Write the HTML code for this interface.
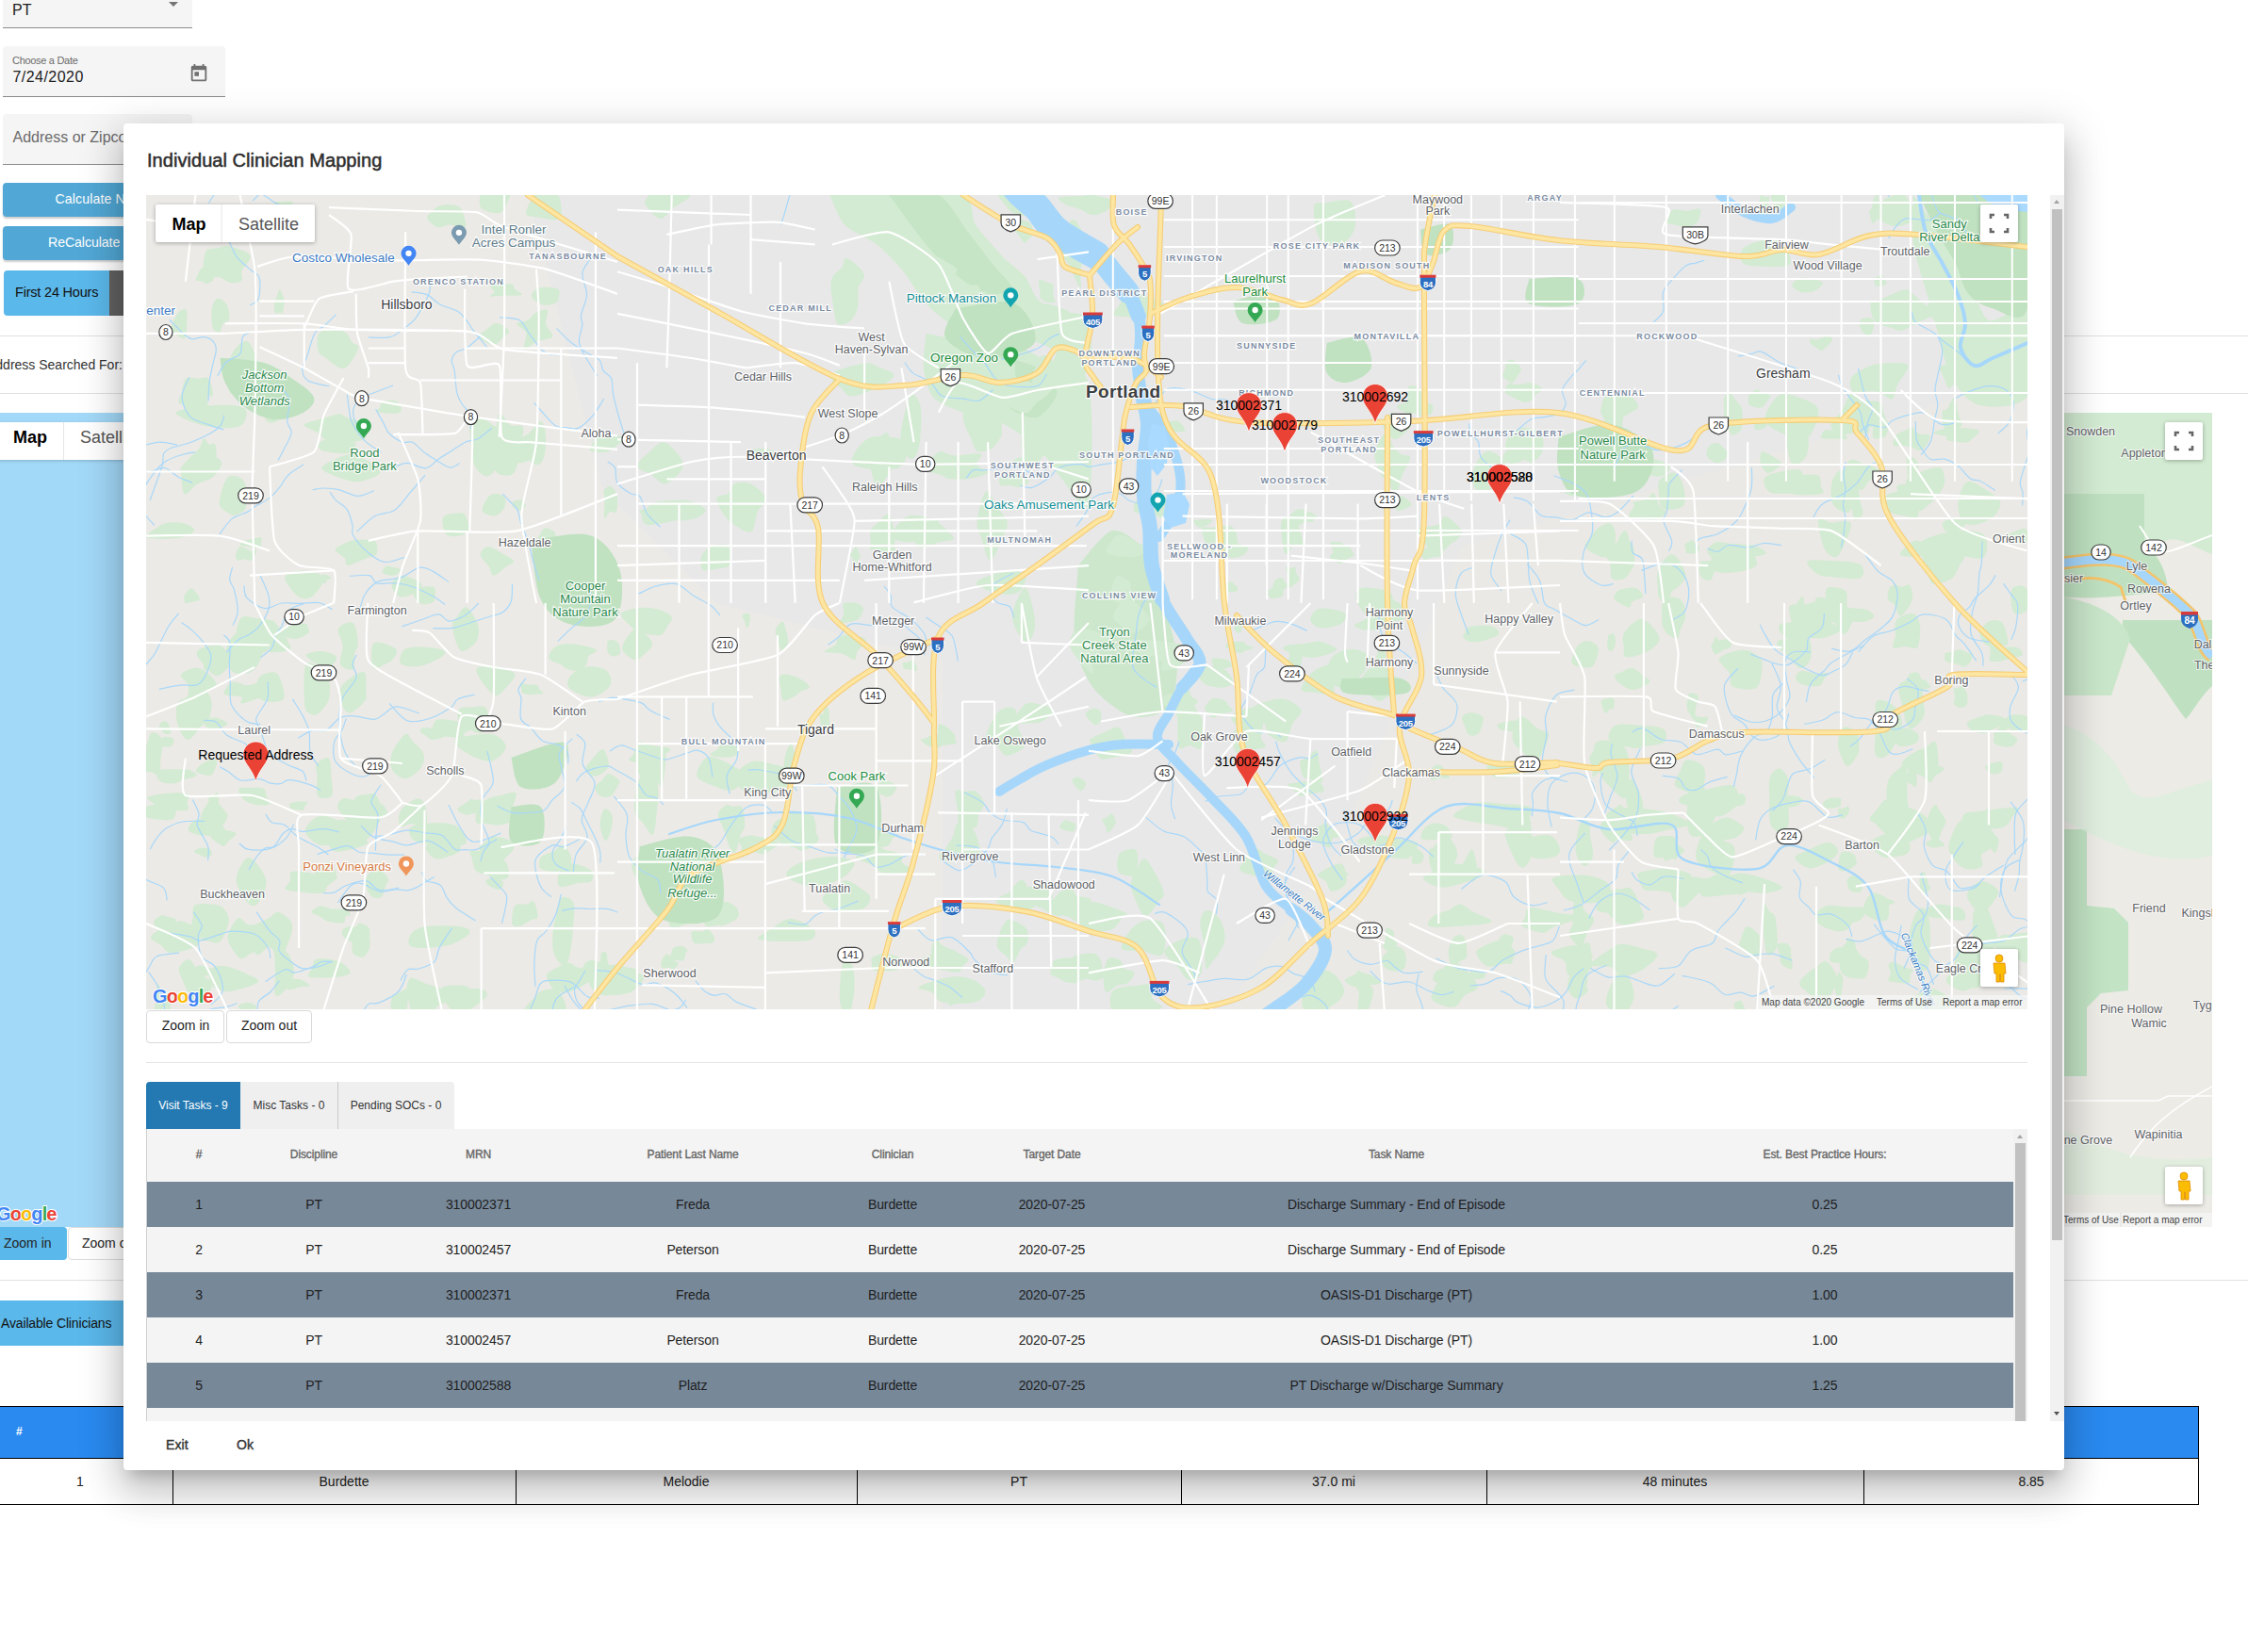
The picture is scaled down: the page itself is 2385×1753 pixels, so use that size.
<!DOCTYPE html><html><head><meta charset="utf-8"><style>
*{box-sizing:border-box}
html,body{margin:0;padding:0}
body{width:2385px;height:1753px;overflow:hidden;background:#fff;font-family:"Liberation Sans",sans-serif;position:relative;color:#212121}
.a{position:absolute}
.fld{position:absolute;background:#f5f5f5;border-radius:4px 4px 0 0;border-bottom:1px solid #8b8b8b}
.t{position:absolute;white-space:nowrap;line-height:1}
.c{position:absolute;white-space:nowrap;text-align:center;width:400px;line-height:1}
.hr{position:absolute;height:1px;background:#e0e0e0}
</style></head><body><div class="fld" style="left:3px;top:-25px;width:201px;height:55px"></div><div class="t" style="left:13px;top:2.5px;font-size:16px;color:#212121;font-weight:400;">PT</div><div class="a" style="left:179px;top:2px;width:0;height:0;border-left:5px solid transparent;border-right:5px solid transparent;border-top:5px solid #757575"></div><div class="fld" style="left:3px;top:49px;width:236px;height:54px"></div><div class="t" style="left:13px;top:59.0px;font-size:11px;color:#6b6b6b;font-weight:400;letter-spacing:-0.3px">Choose a Date</div><div class="t" style="left:13.5px;top:73.5px;font-size:16px;color:#212121;font-weight:400;letter-spacing:0.45px">7/24/2020</div><svg class="a" style="left:200px;top:67px" width="22" height="22" viewBox="0 0 24 24"><path fill="#6f6f6f" d="M19 3h-1V1h-2v2H8V1H6v2H5c-1.11 0-1.99.9-1.99 2L3 19a2 2 0 0 0 2 2h14c1.1 0 2-.9 2-2V5c0-1.1-.9-2-2-2zm0 16H5V8h14v11zM7 10h5v5H7z"/></svg><div class="fld" style="left:3px;top:121px;width:201px;height:54px"></div><div class="t" style="left:13.5px;top:137.5px;font-size:16px;color:#6b6b6b;font-weight:400;">Address or Zipcode</div><div class="a" style="left:3px;top:194px;width:260px;height:36px;background:#51a7d5;border-radius:4px;box-shadow:0 2px 2px rgba(0,0,0,.2)"></div><div class="t" style="left:58.5px;top:204.1px;font-size:14.2px;color:#fff;font-weight:400;letter-spacing:0.1px">Calculate Nearest</div><div class="a" style="left:3px;top:240px;width:260px;height:36px;background:#51a7d5;border-radius:4px;box-shadow:0 2px 2px rgba(0,0,0,.2)"></div><div class="t" style="left:51px;top:250.1px;font-size:14.2px;color:#fff;font-weight:400;letter-spacing:-0.1px">ReCalculate for</div><div class="a" style="left:4px;top:287px;width:112px;height:48px;background:#5bb8ea;border-radius:4px 0 0 4px"></div><div class="a" style="left:116px;top:287px;width:120px;height:48px;background:#616161"></div><div class="t" style="left:16px;top:302.9px;font-size:14.5px;color:#111;font-weight:400;letter-spacing:-0.2px">First 24 Hours</div><div class="hr" style="left:0;top:356px;width:2385px"></div><div class="t" style="left:-14px;top:380.3px;font-size:14px;color:#333;font-weight:400;">Address Searched For:</div><div class="hr" style="left:0;top:417px;width:2385px"></div><div class="a" style="left:0;top:438px;width:2347px;height:864px;background:#a3d9f8;overflow:hidden"><svg width="2347" height="864" style="position:absolute;left:0;top:0" font-family="Liberation Sans, sans-serif"><rect x="2185" y="0" width="162" height="864" fill="#ecebe6"/><path d="M2185,0 H2347 V150 C2320,140 2300,120 2285,150 C2270,175 2240,150 2185,160 Z" fill="#d3ebd2"/><path d="M2185,86 H2275 V140 C2290,150 2300,170 2300,191 C2270,190 2240,200 2185,195 Z" fill="#bfe1c1"/><path d="M2252,220 H2347 V290 C2335,300 2325,320 2319,325 C2300,300 2290,280 2252,235 Z" fill="#bfe1c1"/><path d="M2185,195 C2220,200 2252,215 2260,240 L2240,300 L2185,300 Z" fill="#c9e6ca"/><path d="M2185,442 H2214 V523 L2243,526 L2258,541 V613 L2229,616 L2214,631 V704 H2185 Z" fill="#c2e3c4"/><path d="M2185,330 C2220,340 2240,360 2260,400 C2280,420 2300,400 2347,390 V470 C2300,480 2260,470 2185,430 Z" fill="#dcefdb" fill-opacity=".7"/><path d="M2185,760 C2220,770 2250,800 2347,790 V830 H2185 Z" fill="#dcefdb" fill-opacity=".6"/><path d="M2185,160 C2220,155 2250,152 2265,165 C2285,180 2305,195 2325,215 C2335,230 2335,250 2347,258" fill="none" stroke="#f4c46c" stroke-width="14"/><path d="M2185,160 C2220,155 2250,152 2265,165 C2285,180 2305,195 2325,215 C2335,230 2335,250 2347,258" fill="none" stroke="#a6d7fb" stroke-width="9"/><path d="M2185,178 C2210,175 2230,172 2250,185 L2255,200" fill="none" stroke="#f4c46c" stroke-width="3"/><path d="M2270,120 C2280,135 2285,145 2290,148 C2300,150 2320,140 2347,130" fill="none" stroke="#fff" stroke-width="2"/><path d="M2190,730 H2290 L2300,725 H2347" fill="none" stroke="#fff" stroke-width="1.5"/><path d="M2260,790 C2280,760 2300,740 2347,715" fill="none" stroke="#fff" stroke-width="1.5"/><text x="2218" y="23.5" font-size="12.5" fill="#5f6368" text-anchor="middle" stroke="#fff" stroke-width="2" paint-order="stroke" stroke-opacity=".7">Snowden</text><text x="2275" y="46.5" font-size="12.5" fill="#5f6368" text-anchor="middle" stroke="#fff" stroke-width="2" paint-order="stroke" stroke-opacity=".7">Appleton</text><text x="2267" y="166.5" font-size="12.5" fill="#5f6368" text-anchor="middle" stroke="#fff" stroke-width="2" paint-order="stroke" stroke-opacity=".7">Lyle</text><text x="2280" y="190.5" font-size="12.5" fill="#5f6368" text-anchor="middle" stroke="#fff" stroke-width="2" paint-order="stroke" stroke-opacity=".7">Rowena</text><text x="2266" y="208.5" font-size="12.5" fill="#5f6368" text-anchor="middle" stroke="#fff" stroke-width="2" paint-order="stroke" stroke-opacity=".7">Ortley</text><text x="2345" y="249.5" font-size="12.5" fill="#5f6368" text-anchor="middle" stroke="#fff" stroke-width="2" paint-order="stroke" stroke-opacity=".7">Dalles</text><text x="2345" y="271.5" font-size="12.5" fill="#5f6368" text-anchor="middle" stroke="#fff" stroke-width="2" paint-order="stroke" stroke-opacity=".7">The D</text><text x="2280" y="529.5" font-size="12.5" fill="#5f6368" text-anchor="middle" stroke="#fff" stroke-width="2" paint-order="stroke" stroke-opacity=".7">Friend</text><text x="2335" y="534.5" font-size="12.5" fill="#5f6368" text-anchor="middle" stroke="#fff" stroke-width="2" paint-order="stroke" stroke-opacity=".7">Kingsle</text><text x="2261" y="636.5" font-size="12.5" fill="#5f6368" text-anchor="middle" stroke="#fff" stroke-width="2" paint-order="stroke" stroke-opacity=".7">Pine Hollow</text><text x="2280" y="651.5" font-size="12.5" fill="#5f6368" text-anchor="middle" stroke="#fff" stroke-width="2" paint-order="stroke" stroke-opacity=".7">Wamic</text><text x="2340" y="632.5" font-size="12.5" fill="#5f6368" text-anchor="middle" stroke="#fff" stroke-width="2" paint-order="stroke" stroke-opacity=".7">Tygh</text><text x="2290" y="769.5" font-size="12.5" fill="#5f6368" text-anchor="middle" stroke="#fff" stroke-width="2" paint-order="stroke" stroke-opacity=".7">Wapinitia</text><text x="2214" y="775.5" font-size="12.5" fill="#5f6368" text-anchor="middle" stroke="#fff" stroke-width="2" paint-order="stroke" stroke-opacity=".7">ine Grove</text><text x="2200" y="179.5" font-size="12.5" fill="#5f6368" text-anchor="middle" stroke="#fff" stroke-width="2" paint-order="stroke" stroke-opacity=".7">sier</text><rect x="2218.8" y="140" width="20.4" height="16" rx="8" fill="#fff" stroke="#3c3c3c" stroke-width="1.2"/><text x="2229" y="151.8" font-size="10.5" fill="#333" text-anchor="middle">14</text><rect x="2271.7" y="135" width="26.6" height="16" rx="8" fill="#fff" stroke="#3c3c3c" stroke-width="1.2"/><text x="2285" y="146.8" font-size="10.5" fill="#333" text-anchor="middle">142</text><path d="M2314,211 h18 v8 q0,7 -9,10 q-9,-3 -9,-10 z" fill="#2c6fc0"/><rect x="2314" y="211" width="18" height="3.5" fill="#d93b3b"/><text x="2323" y="224" font-size="10" font-weight="700" fill="#fff" text-anchor="middle">84</text><rect x="2297" y="10" width="40" height="40" rx="2" fill="#fff" style="filter:drop-shadow(0 1px 2px rgba(0,0,0,.3))"/><path d="M2308,25 v-4 h4 M2322,21 h4 v4 M2326,35 v4 h-4 M2312,39 h-4 v-4" fill="none" stroke="#666" stroke-width="2.6"/><rect x="2297" y="800" width="40" height="40" rx="2" fill="#fff" style="filter:drop-shadow(0 1px 2px rgba(0,0,0,.3))"/><circle cx="2317" cy="810" r="4" fill="#fbbc04" stroke="#e08a00" stroke-width=".8"/><path d="M2311,815 h12 l1,11 h-2 v9 h-3.5 v-8 h-1 v8 h-3.5 v-9 h-2 z" fill="#fbbc04" stroke="#e08a00" stroke-width=".8"/><rect x="2185" y="849" width="162" height="15" fill="#f5f5f5" fill-opacity="0.75"/><text x="2189" y="860" font-size="10" fill="#444">Terms of Use</text><text x="2252" y="860" font-size="10" fill="#444">Report a map error</text><line x1="2250" y1="849" x2="2250" y2="864" stroke="#ddd"/><text x="-4" y="857" font-size="20" font-weight="700" stroke="#fff" stroke-width="2" paint-order="stroke" letter-spacing="-0.9"><tspan fill="#4285f4">G</tspan><tspan fill="#ea4335">o</tspan><tspan fill="#fbbc05">o</tspan><tspan fill="#4285f4">g</tspan><tspan fill="#34a853">l</tspan><tspan fill="#ea4335">e</tspan></text></svg></div><div class="a" style="left:-40px;top:448px;width:200px;height:40px;background:#fff;box-shadow:0 1px 4px -1px rgba(0,0,0,.3)"></div><div class="a" style="left:67px;top:448px;width:1px;height:40px;background:#e6e6e6"></div><div class="t" style="left:14px;top:454.7px;font-size:18px;color:#000;font-weight:700;">Map</div><div class="t" style="left:85px;top:454.7px;font-size:18px;color:#565656;font-weight:400;">Satellite</div><div class="a" style="left:0;top:1302px;width:71px;height:35px;background:#5bb8ea;border-radius:0 4px 4px 0"></div><div class="t" style="left:4px;top:1312.3px;font-size:14px;color:#222;font-weight:400;">Zoom in</div><div class="a" style="left:72px;top:1302px;width:120px;height:35px;background:#fff;border:1px solid #ddd;border-radius:4px"></div><div class="t" style="left:87px;top:1312.3px;font-size:14px;color:#222;font-weight:400;">Zoom out</div><div class="hr" style="left:0;top:1358px;width:2385px"></div><div class="a" style="left:0;top:1380px;width:300px;height:48px;background:#5bb8ea"></div><div class="t" style="left:1px;top:1397.3px;font-size:14px;color:#111;font-weight:400;letter-spacing:-0.15px">Available Clinicians</div><div class="a" style="left:-1px;top:1492px;width:2334px;height:105px;border:1px solid #000"></div><div class="a" style="left:0;top:1493px;width:2332px;height:55px;background:#2a8af0;border-bottom:1px solid #000"></div><div class="t" style="left:17px;top:1513.1px;font-size:12px;color:#fff;font-weight:700;">#</div><div class="a" style="left:183px;top:1548px;width:1px;height:48px;background:#000"></div><div class="a" style="left:547px;top:1548px;width:1px;height:48px;background:#000"></div><div class="a" style="left:909px;top:1548px;width:1px;height:48px;background:#000"></div><div class="a" style="left:1253px;top:1548px;width:1px;height:48px;background:#000"></div><div class="a" style="left:1577px;top:1548px;width:1px;height:48px;background:#000"></div><div class="a" style="left:1977px;top:1548px;width:1px;height:48px;background:#000"></div><div class="c" style="left:-115.0px;top:1565.4px;font-size:14px;color:#222;font-weight:400;">1</div><div class="c" style="left:165.0px;top:1565.4px;font-size:14px;color:#222;font-weight:400;">Burdette</div><div class="c" style="left:528.0px;top:1565.4px;font-size:14px;color:#222;font-weight:400;">Melodie</div><div class="c" style="left:881.0px;top:1565.4px;font-size:14px;color:#222;font-weight:400;">PT</div><div class="c" style="left:1215.0px;top:1565.4px;font-size:14px;color:#222;font-weight:400;">37.0 mi</div><div class="c" style="left:1577.0px;top:1565.4px;font-size:14px;color:#222;font-weight:400;">48 minutes</div><div class="c" style="left:1955.0px;top:1565.4px;font-size:14px;color:#222;font-weight:400;">8.85</div><div class="a" style="left:131px;top:131px;width:2059px;height:1429px;background:#fff;border-radius:4px;box-shadow:0 11px 15px -7px rgba(0,0,0,.2),0 24px 38px 3px rgba(0,0,0,.14),0 9px 46px 8px rgba(0,0,0,.12)"></div><div class="t" style="left:156px;top:159.9px;font-size:20px;color:#2e2e2e;font-weight:400;letter-spacing:0.05px;-webkit-text-stroke:0.5px #2e2e2e">Individual Clinician Mapping</div><div class="a" style="left:155px;top:207px;width:1996px;height:864px;overflow:hidden;background:#e8e8e8"><svg width="1996" height="864" style="position:absolute;left:0;top:0" font-family="Liberation Sans, sans-serif"><g transform="translate(-155,-207)"><rect x="155" y="207" width="1996" height="864" fill="#e8e8e8"/><path d="M155,207 L560,207 L640,520 L760,640 L1000,700 L1000,1072 L155,1072 Z" fill="#ebeae6"/><path d="M1551,580 L2151,400 L2151,1072 L1300,1072 L1420,900 Z" fill="#eae9e5"/><path d="M880.4,207.0 C898.5,207.0 996.0,202.8 1016.6,207.0 C1037.3,211.2 1028.7,229.7 1035.0,238.4 C1041.3,247.2 1056.8,265.2 1063.8,272.5 C1070.8,279.9 1082.5,287.5 1087.4,293.5 C1092.3,299.4 1096.0,312.2 1100.5,317.1 C1105.0,322.0 1114.2,327.4 1121.5,330.2 C1128.7,333.0 1150.5,330.0 1155.0,338.0 C1159.5,346.1 1158.8,385.5 1155.0,390.4 C1151.2,395.3 1135.7,378.9 1126.7,374.7 C1117.7,370.5 1097.9,361.8 1087.4,359.0 C1076.9,356.2 1058.6,355.8 1048.1,353.8 C1037.6,351.7 1017.5,347.5 1008.8,343.3 C1000.0,339.1 989.6,330.0 982.6,322.3 C975.6,314.6 963.4,294.0 956.4,285.6 C949.4,277.2 938.2,265.7 930.2,259.4 C922.1,253.1 902.7,245.4 896.1,238.4 C889.5,231.5 882.5,211.2 880.4,207.0" fill="#d3ebd2"/><path d="M982.6,353.8 C989.6,355.1 1022.7,362.8 1035.0,364.2 C1047.2,365.6 1063.8,361.4 1074.3,364.2 C1084.8,367.0 1102.8,379.6 1113.6,385.2 C1124.4,390.8 1149.5,386.2 1155.0,406.2 C1160.5,426.1 1158.8,520.9 1155.0,534.6 C1151.2,548.2 1134.0,516.4 1126.7,508.4 C1119.4,500.3 1109.2,482.3 1100.5,474.3 C1091.8,466.3 1071.7,453.0 1061.2,448.1 C1050.7,443.2 1031.3,441.1 1021.9,437.6 C1012.4,434.1 996.0,428.2 990.4,421.9 C984.8,415.6 981.0,399.5 979.9,390.4 C978.9,381.4 982.2,358.6 982.6,353.8" fill="#d3ebd2"/><path d="M1144.0,600.0 C1148.8,595.1 1170.5,565.0 1180.0,563.0 C1189.5,561.0 1207.7,574.7 1215.0,585.0 C1222.3,595.3 1230.5,624.7 1235.0,640.0 C1239.5,655.3 1248.3,685.2 1249.0,700.0 C1249.7,714.8 1246.5,743.0 1240.0,751.0 C1233.5,759.0 1210.7,762.8 1200.0,760.0 C1189.3,757.2 1168.0,740.7 1160.0,730.0 C1152.0,719.3 1142.1,697.3 1140.0,680.0 C1137.9,662.7 1143.5,610.7 1144.0,600.0" fill="#cde7cd"/><path d="M2030.0,207.0 C2034.0,212.7 2052.0,237.6 2060.0,250.0 C2068.0,262.4 2083.3,288.0 2090.0,300.0 C2096.7,312.0 2101.9,336.0 2110.0,340.0 C2118.1,344.0 2145.5,319.3 2151.0,330.0 C2156.5,340.7 2157.8,406.7 2151.0,420.0 C2144.2,433.3 2110.8,432.7 2100.0,430.0 C2089.2,427.3 2076.7,413.3 2070.0,400.0 C2063.3,386.7 2055.3,348.7 2050.0,330.0 C2044.7,311.3 2032.7,276.4 2030.0,260.0 C2027.3,243.6 2030.0,214.1 2030.0,207.0" fill="#d3ebd2"/><path d="M943.3,207.0 C950.2,207.0 984.5,201.8 995.7,207.0 C1006.9,212.2 1019.4,236.5 1027.1,246.3 C1034.8,256.1 1047.0,272.3 1053.3,280.4 C1059.6,288.4 1075.0,302.4 1074.3,306.6 C1073.6,310.8 1055.8,313.6 1048.1,311.8 C1040.4,310.1 1025.4,300.5 1016.6,293.5 C1007.9,286.5 992.4,270.9 982.6,259.4 C972.8,247.9 948.5,214.0 943.3,207.0" fill="#c6e5c6"/><path d="M1061.2,377.3 C1066.4,379.1 1092.5,385.2 1100.5,390.4 C1108.5,395.7 1121.5,409.7 1121.5,416.6 C1121.5,423.6 1107.5,441.1 1100.5,442.8 C1093.5,444.6 1074.3,438.5 1069.0,429.7 C1063.8,421.0 1062.2,384.3 1061.2,377.3" fill="#c6e5c6"/><g fill="#d3ebd2"><path d="M197.6,328.5C199.2,330.6 198.3,340.1 198.1,345.1C197.9,350.1 197.9,356.3 196.6,358.3C195.3,360.4 192.7,359.2 190.3,357.5C187.8,355.9 182.4,352.7 182.1,348.6C181.8,344.4 185.8,335.8 188.4,332.5C191.0,329.1 196.0,326.4 197.6,328.5Z"/><path d="M308.9,218.4C308.3,219.6 308.3,220.9 306.2,221.2C304.1,221.6 299.1,221.1 296.4,220.6C293.7,220.1 290.5,219.4 290.0,218.3C289.4,217.3 291.2,215.2 293.0,214.5C294.7,213.9 297.5,214.6 300.3,214.4C303.2,214.3 308.6,213.3 310.0,213.9C311.5,214.6 309.6,217.2 308.9,218.4Z"/><path d="M226.6,349.6C225.1,347.3 224.9,342.3 224.7,338.4C224.4,334.6 224.2,330.0 224.9,326.6C225.7,323.1 227.4,319.2 229.1,317.8C230.8,316.3 233.1,316.7 235.1,317.9C237.1,319.1 239.8,321.2 241.2,324.7C242.6,328.3 244.0,336.1 243.3,339.1C242.6,342.2 238.7,340.8 237.0,343.1C235.3,345.3 234.8,351.3 233.1,352.4C231.4,353.5 228.0,352.0 226.6,349.6Z"/><path d="M218.3,267.2C220.7,262.4 227.2,264.2 231.3,263.2C235.3,262.2 236.9,260.0 242.6,261.3C248.3,262.6 263.0,266.7 265.4,271.0C267.7,275.4 258.2,283.0 256.7,287.5C255.2,291.9 258.4,295.5 256.5,297.6C254.6,299.7 249.2,300.7 245.2,300.2C241.3,299.6 237.4,295.7 232.7,294.3C228.1,292.9 219.6,296.2 217.2,291.7C214.8,287.2 216.0,271.9 218.3,267.2Z"/><path d="M226.5,296.6C225.7,298.7 221.1,300.9 219.2,301.3C217.3,301.6 217.0,299.3 215.1,298.7C213.2,298.0 208.5,298.8 207.8,297.3C207.1,295.7 210.3,290.9 210.9,289.2C211.6,287.6 210.8,288.3 211.6,287.4C212.3,286.5 213.9,283.9 215.6,283.7C217.3,283.6 220.2,285.8 221.6,286.6C223.1,287.3 223.5,286.6 224.3,288.3C225.1,290.0 227.4,294.4 226.5,296.6Z"/><path d="M276.1,413.3C274.4,410.9 281.0,408.7 285.0,407.3C289.0,405.9 296.0,404.2 300.1,404.8C304.2,405.4 308.8,408.4 309.8,410.8C310.7,413.3 308.0,417.8 305.7,419.6C303.3,421.5 300.4,422.9 295.5,421.8C290.6,420.8 277.9,415.7 276.1,413.3Z"/><path d="M292.7,317.2C293.7,314.4 295.4,307.7 296.7,307.3C297.9,306.9 299.4,312.6 300.3,314.7C301.1,316.8 301.8,317.0 301.7,319.9C301.6,322.8 300.4,330.4 299.7,332.3C299.0,334.2 298.6,331.4 297.3,331.4C296.1,331.4 293.2,333.3 292.1,332.1C291.0,330.9 290.6,326.5 290.7,324.0C290.8,321.5 291.7,320.0 292.7,317.2Z"/><path d="M219.6,420.9C215.0,422.5 202.7,428.3 198.5,427.8C194.3,427.4 195.3,420.8 194.5,418.2C193.7,415.5 193.1,414.8 193.7,412.0C194.2,409.1 195.1,402.9 197.8,401.2C200.6,399.5 206.4,401.8 210.3,401.8C214.1,401.9 218.3,398.6 220.9,401.4C223.5,404.2 226.2,415.4 226.0,418.6C225.8,421.9 224.2,419.4 219.6,420.9Z"/><path d="M365.3,390.7C359.6,392.4 350.4,383.1 345.7,379.9C341.0,376.7 338.2,376.1 337.3,371.5C336.3,366.8 335.5,355.5 340.0,352.2C344.5,348.8 358.6,349.6 364.2,351.4C369.8,353.2 370.9,360.1 373.6,363.2C376.3,366.2 381.6,365.0 380.2,369.6C378.8,374.2 371.1,389.0 365.3,390.7Z"/><path d="M265.5,419.7C265.5,416.2 262.1,411.1 265.3,409.5C268.4,408.0 281.0,408.7 284.6,410.3C288.1,411.8 287.2,416.0 286.8,418.8C286.3,421.6 285.5,425.0 281.9,427.0C278.4,429.0 268.1,431.9 265.4,430.6C262.6,429.4 265.5,423.2 265.5,419.7Z"/><path d="M262.9,429.2C260.8,430.3 255.1,425.0 251.8,422.5C248.5,420.0 243.4,417.7 242.9,414.2C242.4,410.7 247.0,404.1 249.1,401.5C251.1,399.0 252.9,400.4 255.1,398.8C257.4,397.2 260.8,389.2 262.4,392.0C264.0,394.9 264.4,409.6 264.5,415.8C264.6,422.0 265.0,428.1 262.9,429.2Z"/><path d="M284.2,400.9C284.0,406.3 278.0,416.7 273.5,418.2C269.0,419.8 262.5,413.4 257.1,410.4C251.7,407.5 242.6,406.6 240.9,400.6C239.2,394.5 243.3,380.4 246.9,374.0C250.5,367.6 258.0,360.3 262.6,362.2C267.2,364.1 270.9,379.0 274.5,385.5C278.0,391.9 284.3,395.4 284.2,400.9Z"/><path d="M275.0,393.3C276.4,392.2 280.5,391.6 283.2,391.0C285.9,390.5 289.4,389.0 291.2,390.0C293.0,391.0 294.7,394.8 294.0,397.1C293.4,399.3 289.4,402.7 287.2,403.2C284.9,403.8 282.5,401.2 280.5,400.2C278.5,399.3 276.0,398.6 275.1,397.4C274.2,396.3 273.6,394.4 275.0,393.3Z"/><path d="M579.2,343.9C580.1,348.6 587.6,354.3 586.1,357.3C584.6,360.4 575.3,360.0 570.3,362.2C565.3,364.3 558.0,371.6 556.0,370.1C554.0,368.6 559.6,357.6 558.3,353.1C557.0,348.7 547.8,345.7 548.2,343.4C548.5,341.2 557.1,341.5 560.5,339.5C563.9,337.6 565.1,333.4 568.5,331.7C571.9,330.0 579.0,327.2 580.8,329.2C582.6,331.3 578.4,339.3 579.2,343.9Z"/><path d="M592.7,232.6C588.4,235.0 574.8,231.3 569.0,230.3C563.3,229.3 558.9,229.7 558.1,226.4C557.4,223.2 562.2,214.6 564.6,210.8C567.0,207.1 568.3,204.6 572.5,203.8C576.6,202.9 585.9,203.5 589.7,205.5C593.4,207.5 594.5,211.4 595.0,215.9C595.5,220.4 597.0,230.2 592.7,232.6Z"/><path d="M464.9,223.4C465.3,222.2 465.4,219.4 466.8,219.2C468.2,219.0 471.5,221.6 473.4,222.4C475.3,223.2 477.4,223.1 478.2,224.1C479.0,225.1 478.8,226.9 478.2,228.2C477.6,229.4 475.4,230.8 474.3,231.6C473.2,232.5 472.8,232.9 471.6,233.2C470.4,233.4 468.2,234.1 467.1,233.0C466.0,231.9 465.2,228.3 464.8,226.7C464.5,225.1 464.6,224.7 464.9,223.4Z"/><path d="M591.4,306.3C594.9,308.1 593.3,314.1 592.8,316.7C592.3,319.3 591.3,320.7 588.5,321.9C585.6,323.0 579.9,324.6 575.8,323.5C571.8,322.3 564.6,317.7 564.0,314.7C563.4,311.8 567.4,306.9 572.0,305.5C576.5,304.1 588.0,304.4 591.4,306.3Z"/><path d="M527.5,190.0C532.6,189.7 541.8,191.4 543.8,195.0C545.9,198.6 541.8,206.6 539.5,211.8C537.2,217.0 535.2,224.8 530.2,226.1C525.2,227.3 512.5,224.3 509.7,219.5C506.9,214.6 510.4,201.9 513.3,197.0C516.3,192.1 522.4,190.4 527.5,190.0Z"/><path d="M514.8,351.0C518.0,348.6 522.2,342.9 526.4,342.9C530.5,342.8 538.4,348.0 539.7,350.5C541.0,353.0 536.7,355.3 534.0,357.9C531.2,360.5 527.5,366.1 523.1,366.0C518.7,365.8 509.0,359.6 507.6,357.1C506.2,354.6 511.7,353.3 514.8,351.0Z"/><path d="M536.1,301.5C539.6,301.5 542.1,301.0 543.8,301.8C545.4,302.6 544.3,304.7 545.9,306.6C547.5,308.4 555.3,311.8 553.4,312.9C551.4,314.1 539.6,313.4 534.0,313.7C528.5,313.9 521.5,315.1 519.9,314.5C518.3,313.9 524.1,311.7 524.3,310.2C524.5,308.6 521.2,306.6 520.9,305.1C520.6,303.7 520.1,302.1 522.6,301.5C525.1,300.9 532.6,301.5 536.1,301.5Z"/><path d="M476.9,238.5C472.1,238.5 468.6,242.4 464.8,241.4C461.0,240.4 455.4,235.1 453.9,232.7C452.3,230.2 453.0,229.2 455.5,226.7C457.9,224.2 463.2,219.0 468.4,217.7C473.7,216.5 482.9,217.0 486.9,219.3C491.0,221.6 491.7,228.1 492.7,231.8C493.8,235.4 495.9,240.1 493.2,241.3C490.6,242.4 481.6,238.4 476.9,238.5Z"/><path d="M190.3,570.7C181.9,571.9 159.3,572.4 155.3,570.6C151.3,568.8 162.7,562.6 166.4,560.0C170.1,557.3 172.6,555.3 177.6,554.7C182.6,554.0 191.9,554.4 196.6,555.9C201.4,557.3 207.1,560.7 206.1,563.1C205.0,565.6 198.8,569.4 190.3,570.7Z"/><path d="M365.7,592.3C363.6,589.7 356.5,586.3 355.9,583.9C355.4,581.6 359.3,580.0 362.4,578.3C365.4,576.5 369.3,574.0 374.3,573.2C379.3,572.3 388.2,572.6 392.4,573.1C396.6,573.7 398.2,574.1 399.4,576.6C400.5,579.1 401.4,585.4 399.3,588.1C397.3,590.9 392.1,591.2 386.9,593.2C381.8,595.1 372.2,600.0 368.6,599.9C365.1,599.7 367.9,595.0 365.7,592.3Z"/><path d="M272.2,584.0C272.6,585.3 269.5,591.2 268.2,593.0C267.0,594.8 266.3,594.6 264.6,594.7C262.9,594.7 260.2,593.3 258.1,593.3C256.0,593.3 253.5,595.5 252.2,594.7C250.9,593.9 249.7,590.8 250.2,588.4C250.6,586.0 252.7,581.2 254.7,580.2C256.7,579.3 260.6,582.1 262.4,582.8C264.1,583.5 263.8,584.5 265.4,584.7C267.0,584.9 271.7,582.6 272.2,584.0Z"/><path d="M306.7,429.7C306.7,430.9 303.7,432.4 302.8,434.1C302.0,435.7 303.2,439.2 301.8,439.5C300.3,439.9 295.9,437.5 294.2,436.2C292.4,434.9 292.4,433.2 291.0,431.5C289.6,429.8 285.2,427.2 285.7,426.2C286.3,425.2 291.6,425.5 294.4,425.7C297.2,425.8 300.7,426.4 302.7,427.0C304.8,427.7 306.7,428.5 306.7,429.7Z"/><path d="M285.0,415.2C288.8,414.5 294.6,415.1 297.8,415.8C301.1,416.5 303.8,416.0 304.4,419.2C305.0,422.4 302.0,431.8 301.4,435.0C300.8,438.3 302.5,436.5 300.8,438.7C299.1,440.8 294.5,446.8 291.4,447.9C288.3,449.1 284.5,448.8 282.3,445.7C280.1,442.6 279.4,433.5 278.2,429.2C277.0,424.9 274.1,422.2 275.3,419.9C276.4,417.6 281.2,415.8 285.0,415.2Z"/><path d="M361.9,481.1C356.3,481.0 344.9,479.7 341.1,477.8C337.3,475.9 337.6,471.8 339.1,469.8C340.6,467.9 345.4,466.2 350.2,466.0C354.9,465.9 363.3,468.5 367.7,469.2C372.2,469.8 375.7,468.3 376.8,469.9C378.0,471.5 377.1,476.8 374.6,478.7C372.1,480.5 367.4,481.3 361.9,481.1Z"/><path d="M268.8,571.8C271.5,571.2 275.7,569.4 277.1,570.2C278.4,571.0 277.0,575.2 277.0,576.9C277.0,578.6 278.3,579.6 277.1,580.4C275.9,581.2 272.0,581.8 269.6,581.8C267.2,581.7 265.4,580.6 262.9,580.0C260.4,579.3 255.0,579.0 254.7,577.9C254.3,576.8 258.5,574.6 260.9,573.5C263.2,572.5 266.1,572.4 268.8,571.8Z"/><path d="M211.9,479.5C216.9,480.6 232.1,484.8 234.5,489.2C237.0,493.5 230.8,501.6 226.5,505.7C222.2,509.8 214.0,510.8 208.9,513.9C203.7,517.0 198.5,526.1 195.7,524.3C192.9,522.5 192.7,507.4 192.1,502.8C191.4,498.3 189.7,500.3 191.8,496.9C193.9,493.5 201.2,485.5 204.5,482.6C207.9,479.7 206.9,478.4 211.9,479.5Z"/><path d="M369.4,509.7C362.5,507.7 345.6,501.9 342.2,498.7C338.8,495.5 344.1,493.2 349.2,490.4C354.2,487.6 365.2,481.9 372.5,481.9C379.8,481.9 388.5,488.1 393.0,490.4C397.6,492.6 398.5,493.4 400.0,495.5C401.5,497.6 404.9,500.7 402.1,503.2C399.4,505.7 389.1,509.6 383.6,510.7C378.1,511.7 376.3,511.7 369.4,509.7Z"/><path d="M369.7,469.7C362.6,470.1 350.9,468.3 345.7,466.7C340.6,465.1 342.5,462.6 338.6,460.0C334.7,457.4 322.4,453.5 322.6,451.1C322.7,448.6 333.2,447.1 339.4,445.1C345.7,443.2 355.5,439.8 360.0,439.3C364.5,438.9 362.4,441.0 366.5,442.5C370.5,444.1 380.5,445.2 384.1,448.8C387.7,452.4 390.7,460.6 388.3,464.1C385.9,467.6 376.8,469.2 369.7,469.7Z"/><path d="M195.0,443.9C189.2,441.1 183.3,438.5 188.8,436.2C194.2,433.9 215.8,430.5 227.6,430.0C239.4,429.6 255.0,429.7 259.5,433.3C264.1,437.0 260.8,448.7 254.8,452.0C248.8,455.2 233.5,454.3 223.5,453.0C213.5,451.7 200.8,446.7 195.0,443.9Z"/><path d="M220.7,495.0C218.8,495.4 215.7,489.4 213.4,487.4C211.0,485.5 206.8,485.5 206.7,483.3C206.5,481.2 210.6,477.3 212.3,474.3C213.9,471.4 214.8,466.0 216.4,465.6C218.0,465.2 220.0,470.9 222.0,471.9C223.9,472.8 226.7,469.0 227.9,471.1C229.2,473.2 230.1,482.1 229.6,484.5C229.0,486.9 226.1,483.7 224.6,485.4C223.2,487.2 222.6,494.7 220.7,495.0Z"/><path d="M209.7,631.1C211.1,633.2 212.6,635.2 211.4,636.5C210.1,637.8 204.8,638.5 202.3,639.1C199.9,639.6 197.8,640.7 196.7,639.9C195.5,639.1 195.2,636.0 195.3,634.1C195.5,632.3 196.5,630.5 197.8,628.8C199.1,627.2 201.3,623.9 203.3,624.3C205.3,624.6 208.4,629.1 209.7,631.1Z"/><path d="M196.0,431.3C194.0,428.8 189.2,429.1 189.4,425.8C189.7,422.6 193.6,415.0 197.4,411.9C201.3,408.7 208.9,406.9 212.4,407.1C215.9,407.4 216.9,409.5 218.3,413.3C219.6,417.2 220.2,425.0 220.5,430.1C220.8,435.2 223.3,442.0 220.1,443.9C216.9,445.7 205.3,443.2 201.3,441.1C197.3,439.0 198.0,433.9 196.0,431.3Z"/><path d="M332.5,615.0C331.1,614.6 328.7,614.3 329.4,613.8C330.1,613.2 334.2,612.6 336.5,611.9C338.8,611.2 341.2,609.6 343.2,609.5C345.2,609.3 347.2,610.2 348.5,611.0C349.9,611.7 351.4,613.3 351.3,613.9C351.1,614.6 348.5,614.1 347.5,614.9C346.4,615.8 346.6,618.6 344.9,618.9C343.3,619.2 339.7,617.3 337.6,616.7C335.5,616.1 333.9,615.5 332.5,615.0Z"/><path d="M244.0,545.2C241.2,543.2 233.7,540.8 232.9,534.9C232.1,529.1 236.6,514.9 239.2,509.9C241.9,504.9 245.3,504.5 248.8,505.0C252.2,505.5 257.9,507.4 259.9,513.0C261.9,518.7 262.4,533.2 260.7,538.8C258.9,544.4 252.3,545.5 249.6,546.6C246.8,547.7 246.8,547.1 244.0,545.2Z"/><path d="M309.5,607.2C313.9,605.7 323.3,605.1 328.8,605.8C334.2,606.5 339.9,609.5 342.2,611.5C344.6,613.6 344.7,614.4 342.7,618.1C340.8,621.8 334.8,631.1 330.4,633.6C326.1,636.1 321.3,636.2 316.6,633.1C311.9,630.0 303.6,619.2 302.5,614.9C301.3,610.6 305.1,608.7 309.5,607.2Z"/><path d="M561.6,488.5C557.1,491.2 542.1,492.1 535.2,493.8C528.4,495.6 523.4,501.3 520.3,499.2C517.1,497.1 515.4,486.8 516.3,481.4C517.3,475.9 520.5,470.2 525.9,466.7C531.4,463.2 542.9,458.3 548.9,460.2C555.0,462.0 560.2,473.0 562.3,477.7C564.4,482.4 566.1,485.8 561.6,488.5Z"/><path d="M534.7,526.8C537.1,529.1 536.7,534.9 535.3,538.2C533.9,541.6 529.8,546.1 526.3,547.1C522.8,548.1 516.6,545.8 514.2,544.4C511.8,543.0 510.9,541.7 512.0,538.5C513.1,535.2 517.1,526.9 520.9,524.9C524.6,523.0 532.3,524.6 534.7,526.8Z"/><path d="M405.9,426.2C408.7,425.2 417.3,424.3 420.6,425.7C424.0,427.2 426.1,432.6 425.9,434.8C425.8,437.0 424.0,438.5 419.7,438.9C415.4,439.3 402.9,438.2 400.2,437.1C397.4,436.0 402.4,433.8 403.3,432.0C404.3,430.2 403.0,427.3 405.9,426.2Z"/><path d="M416.1,601.8C418.6,602.4 424.4,602.8 424.9,604.2C425.5,605.6 421.6,609.4 419.2,610.3C416.9,611.3 413.2,610.4 410.9,609.9C408.7,609.4 405.7,608.5 405.5,607.0C405.3,605.5 407.8,601.8 409.6,600.9C411.4,600.0 413.5,601.3 416.1,601.8Z"/><path d="M640.7,520.7C641.6,518.4 644.8,516.0 646.6,515.8C648.4,515.6 650.2,517.5 651.6,519.4C653.0,521.4 654.7,523.6 655.0,527.6C655.4,531.6 655.0,540.8 653.7,543.3C652.3,545.9 649.0,541.9 646.9,543.0C644.9,544.1 642.1,552.0 641.2,549.8C640.3,547.6 641.6,534.4 641.5,529.6C641.4,524.7 639.9,523.0 640.7,520.7Z"/><path d="M545.1,595.4C545.7,597.6 540.9,598.5 537.3,601.1C533.8,603.6 527.0,610.7 523.9,610.7C520.8,610.8 521.2,605.2 518.9,601.5C516.5,597.8 509.7,592.2 509.6,588.7C509.5,585.2 514.1,580.5 518.1,580.3C522.1,580.1 529.1,585.2 533.6,587.7C538.1,590.2 544.5,593.1 545.1,595.4Z"/><path d="M418.3,627.7C416.5,625.3 414.6,621.6 415.9,618.8C417.2,616.0 421.2,611.1 426.2,611.1C431.3,611.0 443.4,615.8 446.2,618.5C449.1,621.2 446.4,624.7 443.1,627.2C439.9,629.7 430.9,633.4 426.8,633.5C422.7,633.6 420.1,630.2 418.3,627.7Z"/><path d="M544.8,532.1C546.3,531.5 551.2,530.7 553.0,530.6C554.9,530.6 555.0,530.9 555.7,531.9C556.5,532.8 557.3,535.4 557.5,536.3C557.7,537.3 558.1,536.9 557.1,537.8C556.1,538.7 553.0,541.7 551.5,541.9C550.1,542.2 549.6,539.9 548.3,539.2C546.9,538.5 544.3,538.6 543.5,537.8C542.8,537.0 543.8,535.4 544.0,534.5C544.2,533.5 543.3,532.8 544.8,532.1Z"/><path d="M459.2,638.9C456.9,640.2 451.4,641.8 448.2,641.0C445.1,640.3 441.7,637.2 440.3,634.5C438.8,631.8 436.4,626.7 439.6,624.7C442.8,622.7 456.0,621.3 459.6,622.7C463.3,624.2 461.7,630.8 461.6,633.4C461.5,636.1 461.4,637.6 459.2,638.9Z"/><path d="M500.3,475.6C499.5,467.8 497.2,454.1 498.8,448.7C500.4,443.3 505.9,442.8 510.0,443.2C514.0,443.5 519.6,448.2 523.0,451.0C526.5,453.7 529.8,452.5 530.5,459.6C531.3,466.7 529.8,485.8 527.5,493.4C525.2,501.0 520.5,505.0 516.6,505.3C512.7,505.6 506.8,500.2 504.1,495.3C501.4,490.3 501.2,483.3 500.3,475.6Z"/><path d="M493.4,546.4C495.6,549.5 498.9,559.3 497.4,563.0C495.9,566.8 488.4,568.5 484.3,569.0C480.2,569.6 475.3,569.6 472.9,566.3C470.5,563.1 468.3,553.0 470.1,549.4C471.9,545.8 480.0,545.1 483.8,544.6C487.7,544.1 491.1,543.4 493.4,546.4Z"/><path d="M621.7,619.6C620.8,621.1 615.6,624.0 613.4,624.7C611.3,625.5 610.3,625.3 608.9,624.1C607.5,622.9 604.6,619.3 604.9,617.5C605.2,615.7 608.5,613.6 610.8,613.3C613.1,613.0 617.0,614.8 618.8,615.8C620.6,616.9 622.6,618.1 621.7,619.6Z"/><path d="M626.4,478.2C624.0,476.2 629.2,470.3 630.3,467.4C631.4,464.6 630.8,462.2 633.3,460.9C635.8,459.6 640.6,458.9 645.3,459.6C650.0,460.4 660.1,463.3 661.5,465.5C663.0,467.7 656.8,470.5 654.0,472.8C651.3,475.1 649.5,478.6 644.9,479.5C640.3,480.4 628.9,480.2 626.4,478.2Z"/><path d="M525.5,470.7C525.7,464.0 525.4,463.0 526.2,457.7C527.0,452.4 527.7,440.1 530.3,439.1C532.9,438.0 537.9,449.0 542.0,451.3C546.1,453.7 553.3,448.9 554.9,453.2C556.5,457.5 553.2,469.3 551.8,477.1C550.4,484.9 549.1,495.3 546.5,499.8C544.0,504.4 540.1,504.9 536.5,504.6C533.0,504.4 526.9,504.0 525.1,498.3C523.2,492.7 525.3,477.5 525.5,470.7Z"/><path d="M577.2,560.7C579.0,559.6 581.2,560.6 583.2,561.4C585.2,562.2 588.2,563.7 589.1,565.5C590.0,567.4 589.0,570.4 588.4,572.4C587.8,574.3 586.5,575.9 585.5,577.1C584.6,578.4 584.4,579.2 583.0,579.7C581.5,580.3 579.3,581.1 576.7,580.4C574.2,579.7 568.4,577.9 567.7,575.8C566.9,573.7 570.8,570.5 572.4,568.0C574.0,565.5 575.4,561.8 577.2,560.7Z"/><path d="M562.3,458.7C565.9,455.1 571.7,445.8 574.5,447.1C577.3,448.3 579.0,459.3 579.2,466.3C579.4,473.4 578.0,485.1 575.5,489.2C573.1,493.4 568.1,494.7 564.4,491.3C560.6,487.9 553.4,474.0 553.1,468.6C552.7,463.2 558.7,462.3 562.3,458.7Z"/><path d="M684.6,216.8C682.5,212.8 685.6,211.6 687.8,207.9C690.1,204.1 690.6,194.5 698.0,194.2C705.3,193.9 729.1,201.7 731.9,206.0C734.7,210.4 720.0,215.9 714.7,220.2C709.5,224.5 705.4,232.6 700.3,232.0C695.3,231.4 686.7,220.8 684.6,216.8Z"/><path d="M881.8,297.8C883.3,290.7 890.7,287.3 893.4,283.3C896.2,279.4 894.4,272.9 898.3,274.1C902.2,275.3 914.6,285.3 916.7,290.5C918.8,295.7 911.8,299.7 910.7,305.5C909.6,311.4 911.4,319.8 910.1,325.6C908.8,331.3 906.3,336.7 902.8,339.8C899.3,342.9 892.2,346.4 889.1,344.1C886.1,341.9 885.7,334.1 884.5,326.4C883.2,318.7 880.3,305.0 881.8,297.8Z"/><path d="M1079.9,231.5C1081.6,230.1 1083.7,233.0 1085.8,233.8C1087.9,234.6 1090.8,235.1 1092.4,236.4C1093.9,237.7 1094.4,239.6 1095.1,241.6C1095.7,243.6 1097.0,246.5 1096.4,248.5C1095.7,250.6 1092.8,252.3 1091.2,253.8C1089.6,255.3 1088.4,258.1 1086.8,257.5C1085.1,256.9 1083.1,252.8 1081.3,250.2C1079.5,247.7 1076.1,245.3 1075.9,242.2C1075.6,239.1 1078.3,232.9 1079.9,231.5Z"/><path d="M1063.9,380.8C1069.6,383.2 1075.5,392.5 1075.9,397.5C1076.2,402.4 1072.4,408.5 1065.8,410.6C1059.2,412.6 1040.5,412.3 1036.3,409.9C1032.1,407.5 1039.5,400.6 1040.4,396.1C1041.2,391.5 1037.6,385.3 1041.6,382.7C1045.5,380.2 1058.2,378.3 1063.9,380.8Z"/><path d="M1102.2,425.2C1098.5,425.1 1094.8,418.9 1094.7,411.5C1094.6,404.2 1098.5,386.6 1101.6,381.1C1104.7,375.6 1110.2,376.8 1113.4,378.8C1116.6,380.8 1120.1,387.4 1120.7,392.9C1121.3,398.5 1119.9,406.7 1116.8,412.1C1113.7,417.5 1105.9,425.3 1102.2,425.2Z"/><path d="M1070.3,412.0C1073.5,408.8 1073.3,402.3 1078.7,401.8C1084.2,401.3 1097.0,407.3 1102.9,409.2C1108.8,411.1 1114.8,410.2 1114.2,413.4C1113.5,416.5 1103.5,423.7 1099.2,427.9C1094.8,432.1 1093.3,438.4 1087.9,438.6C1082.5,438.8 1071.3,432.0 1066.6,429.1C1061.8,426.2 1058.9,424.0 1059.6,421.2C1060.2,418.3 1067.1,415.2 1070.3,412.0Z"/><path d="M946.4,252.4C944.5,250.9 946.0,249.4 946.2,247.3C946.3,245.3 946.8,241.8 947.4,240.1C948.1,238.5 947.9,237.3 949.9,237.6C951.8,237.9 957.0,240.8 959.1,242.1C961.3,243.5 962.8,244.6 962.6,245.8C962.5,247.0 959.2,247.6 958.3,249.4C957.5,251.2 959.6,255.9 957.6,256.4C955.6,256.9 948.3,253.9 946.4,252.4Z"/><path d="M1040.2,315.6C1041.4,321.5 1044.8,332.3 1044.8,338.5C1044.8,344.7 1044.4,349.1 1040.3,352.8C1036.3,356.4 1024.8,363.1 1020.8,360.5C1016.8,357.9 1018.2,342.6 1016.5,337.2C1014.7,331.7 1009.7,332.6 1010.3,327.7C1010.9,322.9 1015.6,312.1 1020.2,307.9C1024.7,303.8 1034.2,301.6 1037.6,302.9C1040.9,304.2 1039.0,309.7 1040.2,315.6Z"/><path d="M1061.3,429.6C1054.7,429.5 1046.6,417.4 1044.7,412.4C1042.8,407.4 1044.8,404.3 1049.7,399.4C1054.6,394.5 1069.2,383.1 1073.9,383.1C1078.6,383.1 1076.0,394.5 1077.7,399.5C1079.4,404.5 1086.8,407.9 1084.1,412.9C1081.4,418.0 1067.9,429.7 1061.3,429.6Z"/><path d="M1126.4,410.2C1120.9,409.3 1117.9,398.7 1116.5,394.0C1115.1,389.4 1116.0,387.0 1117.9,382.3C1119.9,377.5 1122.7,365.8 1128.3,365.5C1133.9,365.1 1148.1,374.7 1151.6,380.3C1155.1,385.9 1153.7,394.1 1149.5,399.1C1145.3,404.1 1131.9,411.0 1126.4,410.2Z"/><path d="M1009.9,300.8C1008.5,302.7 1005.2,306.0 1003.2,305.0C1001.2,304.1 999.4,298.4 998.0,295.1C996.6,291.9 995.1,289.1 994.5,285.4C994.0,281.7 993.3,274.4 994.6,273.1C996.0,271.7 1000.9,276.3 1002.8,277.3C1004.7,278.2 1003.9,277.6 1006.0,279.0C1008.1,280.4 1014.4,283.3 1015.4,285.7C1016.3,288.2 1012.5,291.3 1011.6,293.8C1010.7,296.3 1011.3,298.9 1009.9,300.8Z"/><path d="M1119.5,320.5C1118.3,321.7 1112.4,321.4 1109.8,320.6C1107.1,319.8 1104.7,317.6 1103.7,315.7C1102.7,313.8 1103.8,312.5 1103.6,309.4C1103.3,306.4 1100.9,299.2 1102.2,297.5C1103.4,295.8 1108.5,298.5 1111.0,299.4C1113.5,300.2 1116.2,300.0 1117.3,302.4C1118.3,304.7 1117.0,310.3 1117.3,313.3C1117.7,316.3 1120.8,319.3 1119.5,320.5Z"/><path d="M881.6,396.9C885.9,392.6 909.1,386.8 917.3,385.5C925.6,384.3 926.1,387.2 931.2,389.2C936.3,391.2 947.3,394.2 948.1,397.4C949.0,400.7 943.4,404.7 936.3,408.6C929.2,412.4 913.0,419.9 905.6,420.4C898.2,420.9 896.0,415.3 892.1,411.4C888.1,407.5 877.4,401.2 881.6,396.9Z"/><path d="M1046.7,317.5C1047.7,320.1 1053.0,323.5 1051.6,325.0C1050.1,326.6 1042.1,326.9 1038.0,326.8C1033.9,326.6 1031.5,325.3 1026.8,324.1C1022.2,322.8 1011.4,320.9 1010.1,319.5C1008.8,318.2 1017.6,317.6 1019.0,316.0C1020.3,314.3 1015.6,310.7 1018.2,309.7C1020.9,308.6 1030.3,309.6 1034.9,309.6C1039.5,309.7 1044.0,308.5 1046.0,309.8C1048.0,311.1 1045.8,315.0 1046.7,317.5Z"/><path d="M1136.8,334.2C1136.0,337.6 1122.6,344.1 1117.1,345.8C1111.6,347.5 1110.2,345.5 1103.8,344.3C1097.4,343.1 1081.4,341.2 1078.6,338.6C1075.9,336.1 1082.5,331.6 1087.3,329.0C1092.1,326.4 1101.7,323.5 1107.4,322.8C1113.1,322.2 1116.7,323.3 1121.6,325.2C1126.5,327.1 1137.6,330.7 1136.8,334.2Z"/><path d="M1123.9,209.5C1127.3,207.9 1144.4,208.1 1150.2,207.7C1156.0,207.3 1153.5,206.1 1158.5,207.0C1163.6,207.8 1177.9,210.2 1180.6,212.8C1183.3,215.5 1178.5,220.1 1175.0,222.7C1171.5,225.2 1164.3,228.3 1159.4,228.2C1154.5,228.0 1150.6,223.8 1145.7,221.9C1140.8,220.1 1133.8,219.0 1130.2,216.9C1126.5,214.9 1120.6,211.0 1123.9,209.5Z"/><path d="M1109.7,234.0C1110.3,235.7 1112.2,240.1 1111.7,241.3C1111.3,242.5 1108.5,241.8 1106.9,241.5C1105.4,241.1 1103.7,240.2 1102.6,239.3C1101.5,238.4 1100.1,237.8 1100.3,236.0C1100.6,234.2 1102.7,229.3 1104.0,228.5C1105.3,227.8 1107.2,230.4 1108.2,231.3C1109.1,232.2 1109.1,232.4 1109.7,234.0Z"/><path d="M1067.0,217.9C1064.1,214.0 1055.1,205.9 1059.1,203.5C1063.0,201.1 1082.0,202.6 1090.5,203.6C1099.0,204.7 1108.4,205.8 1110.0,209.9C1111.6,214.0 1105.5,225.6 1099.9,228.3C1094.3,231.1 1081.9,228.1 1076.4,226.4C1070.9,224.7 1069.9,221.7 1067.0,217.9Z"/><path d="M1058.8,340.7C1053.7,338.5 1054.3,336.7 1056.7,333.5C1059.0,330.3 1064.2,322.2 1072.8,321.5C1081.3,320.7 1102.3,325.5 1107.9,329.1C1113.4,332.7 1109.5,340.2 1106.1,343.1C1102.7,345.9 1095.4,346.6 1087.5,346.2C1079.7,345.8 1063.9,342.8 1058.8,340.7Z"/><path d="M1131.6,240.4C1133.8,239.1 1136.7,232.3 1139.3,232.9C1141.9,233.4 1145.3,239.5 1147.2,243.8C1149.2,248.1 1151.1,251.3 1151.0,258.8C1150.9,266.3 1147.2,280.9 1146.4,288.6C1145.6,296.4 1148.4,307.1 1146.1,305.4C1143.8,303.7 1136.3,284.6 1132.6,278.4C1129.0,272.2 1125.3,274.5 1124.1,268.2C1123.0,261.9 1124.7,245.4 1125.9,240.8C1127.2,236.1 1129.4,241.7 1131.6,240.4Z"/><path d="M715.0,552.5C710.4,553.0 701.9,556.8 697.3,555.2C692.8,553.7 688.7,546.7 687.8,543.2C686.9,539.6 687.6,536.0 691.8,533.9C696.0,531.9 706.4,531.3 713.1,530.9C719.8,530.5 726.2,530.0 732.1,531.7C738.0,533.3 747.3,537.8 748.5,540.8C749.7,543.8 743.2,547.8 739.3,549.6C735.4,551.5 729.1,551.7 725.0,552.2C721.0,552.7 719.6,552.0 715.0,552.5Z"/><path d="M808.4,475.9C813.2,476.0 819.8,477.5 820.9,479.2C822.0,480.9 817.3,484.6 815.0,485.9C812.6,487.2 810.0,487.2 806.8,487.2C803.5,487.2 798.0,487.6 795.5,486.1C793.1,484.7 790.1,480.3 792.3,478.6C794.4,476.9 803.7,475.8 808.4,475.9Z"/><path d="M745.8,604.4C742.8,602.2 742.9,594.0 744.6,589.7C746.4,585.5 751.7,580.8 756.4,579.0C761.1,577.2 769.8,575.5 772.7,578.8C775.7,582.1 775.8,594.9 774.2,598.9C772.5,603.0 767.5,602.3 762.7,603.3C758.0,604.2 748.8,606.7 745.8,604.4Z"/><path d="M710.3,551.4C707.3,553.3 694.9,556.9 690.1,557.1C685.4,557.4 683.3,554.8 681.8,552.9C680.3,551.0 681.5,547.7 680.9,545.9C680.4,544.0 675.6,543.2 678.5,541.9C681.4,540.6 693.4,537.5 698.4,538.2C703.4,538.8 706.4,543.5 708.3,545.7C710.3,547.9 713.4,549.5 710.3,551.4Z"/><path d="M768.9,547.4C765.3,542.4 759.7,532.6 760.4,528.7C761.0,524.7 769.6,526.4 772.8,523.8C776.0,521.3 775.7,515.1 779.7,513.3C783.6,511.6 790.9,510.8 796.5,513.5C802.1,516.2 812.0,525.0 813.3,529.8C814.5,534.6 806.5,536.7 803.9,542.4C801.3,548.1 801.1,561.1 797.5,563.9C793.9,566.6 786.9,561.6 782.1,558.9C777.4,556.1 772.5,552.5 768.9,547.4Z"/><path d="M705.6,469.7C711.6,471.8 724.6,485.5 724.8,492.8C725.0,500.0 712.3,511.5 706.7,513.3C701.0,515.1 695.9,506.8 690.8,503.6C685.6,500.5 676.2,498.3 675.8,494.4C675.5,490.5 683.7,484.3 688.6,480.2C693.6,476.1 699.6,467.6 705.6,469.7Z"/><path d="M910.9,593.4C909.8,595.2 907.8,600.3 906.7,600.1C905.7,599.8 905.3,593.6 904.5,591.9C903.6,590.2 901.6,590.9 901.6,589.8C901.6,588.7 903.2,587.0 904.4,585.3C905.6,583.5 907.6,579.3 908.6,579.3C909.6,579.2 909.9,583.3 910.6,585.0C911.3,586.7 912.8,588.0 912.9,589.4C912.9,590.8 911.9,591.6 910.9,593.4Z"/><path d="M1061.7,456.0C1063.2,457.7 1063.5,462.6 1061.7,464.2C1059.8,465.8 1054.1,465.3 1050.6,465.5C1047.1,465.6 1042.1,466.1 1040.6,465.1C1039.1,464.0 1039.5,460.8 1041.5,459.1C1043.5,457.3 1049.3,454.9 1052.7,454.4C1056.0,453.9 1060.2,454.4 1061.7,456.0Z"/><path d="M956.7,476.3C955.0,472.0 955.0,468.2 955.6,461.7C956.2,455.1 958.3,444.3 960.2,437.1C962.2,429.8 964.7,419.1 967.4,418.0C970.1,417.0 975.0,423.4 976.5,430.7C978.1,438.0 977.2,453.7 976.6,462.0C976.0,470.3 974.9,476.3 973.1,480.5C971.3,484.7 968.7,487.7 965.9,487.0C963.2,486.3 958.5,480.5 956.7,476.3Z"/><path d="M1109.2,478.9C1108.7,480.8 1108.1,484.6 1107.1,484.6C1106.0,484.5 1104.0,480.1 1102.7,478.5C1101.5,476.8 1099.7,476.6 1099.6,474.7C1099.5,472.8 1100.5,468.5 1101.9,466.9C1103.3,465.4 1106.4,464.3 1107.8,465.4C1109.3,466.5 1110.3,471.1 1110.5,473.4C1110.8,475.6 1109.8,477.1 1109.2,478.9Z"/><path d="M928.1,565.5C930.0,562.3 931.7,563.4 934.5,562.7C937.2,562.0 942.3,559.4 944.5,561.4C946.7,563.4 946.7,570.6 947.6,574.7C948.4,578.9 951.2,584.9 949.6,586.4C948.1,588.0 941.3,584.7 938.2,584.1C935.1,583.5 933.5,583.3 930.9,582.9C928.3,582.5 923.2,584.8 922.8,581.9C922.3,579.0 926.1,568.7 928.1,565.5Z"/><path d="M1093.5,453.6C1096.7,451.6 1100.2,451.7 1102.7,453.1C1105.1,454.5 1107.5,457.4 1108.3,462.0C1109.0,466.6 1108.8,475.3 1107.2,480.6C1105.7,486.0 1102.2,491.2 1098.9,493.9C1095.7,496.6 1090.5,501.7 1087.9,496.8C1085.3,491.9 1082.6,471.9 1083.5,464.7C1084.4,457.5 1090.3,455.5 1093.5,453.6Z"/><path d="M910.8,495.5C903.1,493.2 902.7,488.5 905.1,483.2C907.5,477.9 915.8,466.3 925.2,463.8C934.6,461.3 955.4,464.8 961.5,468.0C967.7,471.1 964.0,478.0 962.2,482.8C960.4,487.7 959.5,495.0 950.9,497.1C942.3,499.2 918.4,497.8 910.8,495.5Z"/><path d="M1061.5,515.2C1060.1,513.9 1059.4,508.8 1061.5,506.7C1063.7,504.6 1071.2,503.3 1074.5,502.9C1077.8,502.5 1078.4,503.0 1081.3,504.3C1084.2,505.6 1091.7,508.5 1091.8,510.6C1091.9,512.7 1085.6,516.1 1082.0,516.8C1078.4,517.5 1073.6,515.3 1070.2,515.0C1066.8,514.8 1063.0,516.6 1061.5,515.2Z"/><path d="M1088.1,612.7C1088.7,616.6 1085.2,626.0 1080.0,628.7C1074.7,631.5 1064.0,631.0 1056.7,629.3C1049.3,627.5 1035.7,622.0 1035.8,618.5C1036.0,614.9 1050.8,610.4 1057.6,608.2C1064.4,606.1 1071.6,604.7 1076.7,605.5C1081.8,606.2 1087.6,608.9 1088.1,612.7Z"/><path d="M984.2,498.3C983.3,494.2 990.6,482.4 995.3,480.0C1000.1,477.5 1005.4,483.1 1012.9,483.4C1020.5,483.7 1036.8,480.1 1040.6,481.7C1044.5,483.3 1034.8,489.8 1036.1,493.1C1037.4,496.4 1049.8,498.8 1048.5,501.3C1047.3,503.8 1035.7,507.0 1028.6,508.1C1021.6,509.3 1010.9,508.7 1006.3,508.1C1001.7,507.5 1004.7,506.0 1001.0,504.4C997.3,502.8 985.1,502.4 984.2,498.3Z"/><path d="M931.0,554.9C934.1,552.0 939.6,544.4 942.4,545.2C945.3,546.0 946.9,554.8 948.0,559.7C949.2,564.5 949.3,570.4 949.3,574.4C949.4,578.3 949.9,580.2 948.3,583.2C946.6,586.1 941.8,591.9 939.2,591.9C936.6,591.8 935.1,585.5 932.7,583.0C930.3,580.4 926.2,579.7 924.7,576.4C923.2,573.0 922.5,566.6 923.6,563.0C924.6,559.4 927.8,557.9 931.0,554.9Z"/><path d="M922.7,482.5C922.5,477.3 921.9,475.9 924.0,472.6C926.0,469.3 932.0,464.6 935.0,462.5C938.0,460.5 940.1,457.2 942.0,460.0C944.0,462.8 946.3,472.9 946.8,479.4C947.2,486.0 947.3,493.2 944.8,499.3C942.3,505.4 934.9,515.0 931.7,515.8C928.4,516.6 926.9,509.5 925.4,503.9C923.9,498.4 923.0,487.7 922.7,482.5Z"/><path d="M948.6,564.3C949.4,562.1 948.7,560.6 951.5,557.8C954.4,554.9 959.7,548.4 965.4,547.0C971.2,545.7 980.9,548.7 985.9,549.7C990.9,550.7 994.0,550.8 995.4,553.0C996.9,555.2 996.0,559.8 994.6,562.8C993.2,565.8 992.5,568.9 987.2,570.9C981.9,573.0 969.4,575.2 962.6,575.2C955.9,575.1 949.2,572.4 946.8,570.5C944.5,568.7 947.8,566.4 948.6,564.3Z"/><path d="M1079.4,493.7C1077.3,492.7 1071.9,492.6 1072.1,491.3C1072.2,490.0 1078.4,486.7 1080.3,485.8C1082.2,484.8 1080.9,485.7 1083.4,485.7C1085.9,485.6 1093.6,484.3 1095.2,485.3C1096.9,486.3 1094.1,490.4 1093.4,491.6C1092.7,492.9 1092.6,491.8 1091.1,492.8C1089.7,493.7 1086.8,497.2 1084.8,497.4C1082.9,497.5 1081.6,494.7 1079.4,493.7Z"/><path d="M1046.2,521.7C1049.9,519.6 1055.3,534.3 1059.1,539.7C1062.8,545.0 1068.1,548.4 1068.7,553.9C1069.4,559.3 1065.9,565.5 1062.9,572.3C1059.9,579.1 1054.3,595.1 1050.7,594.9C1047.0,594.7 1043.4,578.1 1041.1,571.0C1038.7,564.0 1035.7,560.8 1036.6,552.5C1037.4,544.3 1042.4,523.9 1046.2,521.7Z"/><path d="M1036.8,495.0C1035.6,497.1 1026.0,498.0 1021.4,500.0C1016.8,501.9 1013.4,506.2 1009.5,506.8C1005.5,507.4 1001.0,505.0 997.5,503.7C993.9,502.3 989.5,500.6 988.0,498.7C986.5,496.9 985.8,494.2 988.4,492.7C991.0,491.2 999.2,490.8 1003.6,489.7C1008.0,488.6 1010.5,486.5 1014.7,486.1C1018.9,485.7 1025.1,485.9 1028.8,487.4C1032.5,488.9 1038.0,492.9 1036.8,495.0Z"/><path d="M1004.2,562.1C1007.2,565.2 1012.9,569.9 1011.8,572.1C1010.7,574.2 1002.6,573.6 997.7,575.0C992.7,576.4 986.1,579.8 982.0,580.6C978.0,581.3 975.9,581.9 973.5,579.4C971.0,576.9 967.2,569.7 967.1,565.4C967.0,561.2 969.5,556.7 972.7,554.1C975.9,551.4 982.8,549.9 986.3,549.8C989.7,549.7 990.5,551.3 993.5,553.3C996.5,555.4 1001.1,558.9 1004.2,562.1Z"/><path d="M1032.2,421.0C1035.6,417.6 1038.1,420.0 1042.3,421.5C1046.5,423.0 1054.1,424.0 1057.5,429.8C1060.9,435.7 1063.4,449.1 1062.7,456.6C1062.1,464.1 1058.0,471.3 1053.7,475.0C1049.5,478.7 1041.0,480.2 1037.1,478.8C1033.3,477.4 1033.3,472.7 1030.7,466.6C1028.1,460.5 1021.4,449.6 1021.7,442.0C1021.9,434.4 1028.7,424.4 1032.2,421.0Z"/><path d="M1222.6,317.2C1228.0,319.5 1236.3,320.7 1234.8,323.9C1233.4,327.2 1219.4,334.6 1213.9,336.7C1208.4,338.8 1207.5,337.0 1201.9,336.6C1196.3,336.3 1183.2,336.2 1180.4,334.6C1177.7,333.0 1183.4,329.6 1185.2,326.9C1187.1,324.2 1188.5,321.1 1191.4,318.2C1194.4,315.4 1197.5,310.0 1202.7,309.8C1207.9,309.6 1217.3,314.8 1222.6,317.2Z"/><path d="M1602.5,420.3C1599.2,418.6 1597.4,418.7 1597.1,416.5C1596.7,414.2 1598.5,408.1 1600.5,406.7C1602.5,405.3 1604.9,408.3 1609.2,408.3C1613.5,408.3 1621.9,405.7 1626.5,406.5C1631.0,407.4 1636.0,411.3 1636.6,413.2C1637.2,415.1 1632.0,416.2 1630.1,418.1C1628.1,420.0 1627.1,423.2 1624.9,424.6C1622.6,426.0 1620.3,427.3 1616.6,426.6C1612.9,425.9 1605.7,422.0 1602.5,420.3Z"/><path d="M1414.0,259.5C1409.2,258.6 1402.0,257.8 1398.7,251.0C1395.4,244.2 1392.9,224.7 1394.1,218.8C1395.3,212.8 1399.3,216.2 1405.8,215.4C1412.3,214.6 1427.7,209.8 1433.0,213.9C1438.4,218.0 1438.8,233.0 1437.9,240.1C1437.0,247.1 1431.5,253.1 1427.6,256.4C1423.6,259.6 1418.9,260.4 1414.0,259.5Z"/><path d="M1600.4,382.1C1602.5,380.4 1606.5,382.1 1608.7,383.8C1610.9,385.5 1613.5,389.3 1613.6,392.1C1613.6,394.8 1610.6,398.1 1609.1,400.4C1607.6,402.7 1606.7,405.9 1604.4,405.9C1602.0,405.9 1596.4,402.3 1595.0,400.2C1593.6,398.2 1595.1,396.9 1596.0,393.8C1596.9,390.8 1598.3,383.7 1600.4,382.1Z"/><path d="M1250.9,447.4C1253.3,449.1 1258.4,455.4 1257.2,457.1C1256.0,458.9 1247.5,458.3 1243.5,458.0C1239.6,457.8 1236.1,457.4 1233.7,455.9C1231.3,454.4 1227.6,450.5 1229.1,449.0C1230.6,447.5 1239.2,447.2 1242.8,446.9C1246.5,446.6 1248.5,445.6 1250.9,447.4Z"/><path d="M1370.1,546.4C1370.9,545.0 1377.0,542.7 1380.4,542.3C1383.7,541.8 1387.3,542.7 1390.4,543.8C1393.4,544.9 1397.7,547.8 1398.4,549.0C1399.2,550.1 1396.2,550.0 1395.0,550.8C1393.9,551.6 1394.1,553.3 1391.5,553.7C1388.9,554.1 1382.2,553.6 1379.5,553.1C1376.9,552.7 1376.9,551.9 1375.4,550.8C1373.8,549.7 1369.3,547.8 1370.1,546.4Z"/><path d="M1372.7,578.9C1369.4,580.3 1365.6,591.1 1363.3,587.5C1361.0,583.8 1358.7,563.6 1359.0,557.0C1359.2,550.5 1362.5,549.4 1365.0,548.0C1367.6,546.7 1372.0,547.4 1374.1,549.0C1376.1,550.5 1376.0,552.3 1377.4,557.3C1378.9,562.3 1383.5,575.3 1382.7,578.9C1381.9,582.5 1375.9,577.4 1372.7,578.9Z"/><path d="M1278.7,557.7C1277.0,558.3 1274.2,560.1 1272.4,559.8C1270.6,559.4 1269.0,557.0 1267.9,555.7C1266.8,554.3 1265.4,552.5 1266.0,551.8C1266.5,551.2 1268.9,551.9 1271.2,551.8C1273.4,551.7 1277.2,551.1 1279.7,551.1C1282.2,551.2 1285.7,551.3 1286.3,552.1C1286.8,553.0 1284.2,555.3 1282.9,556.3C1281.7,557.2 1280.5,557.1 1278.7,557.7Z"/><path d="M1203.7,543.6C1202.3,542.3 1202.8,537.9 1203.3,535.7C1203.8,533.5 1205.5,531.1 1206.8,530.4C1208.1,529.6 1210.0,529.6 1211.1,531.1C1212.2,532.6 1213.3,537.3 1213.4,539.4C1213.5,541.4 1213.1,542.8 1211.5,543.5C1209.9,544.2 1205.0,544.9 1203.7,543.6Z"/><path d="M1283.7,585.8C1280.6,582.9 1280.3,580.4 1278.9,576.2C1277.5,571.9 1274.0,563.0 1275.3,560.2C1276.7,557.5 1281.5,559.8 1287.0,559.7C1292.4,559.5 1303.7,556.4 1308.1,559.4C1312.5,562.4 1312.9,573.8 1313.1,577.7C1313.4,581.7 1312.2,580.6 1309.6,583.1C1307.1,585.7 1302.0,592.7 1297.7,593.2C1293.4,593.6 1286.8,588.6 1283.7,585.8Z"/><path d="M1318.7,577.8C1322.6,579.0 1324.2,580.4 1324.1,582.4C1323.9,584.4 1321.1,588.2 1317.6,589.7C1314.2,591.3 1307.4,592.6 1303.2,591.6C1299.1,590.5 1295.1,585.5 1292.8,583.4C1290.5,581.3 1288.2,580.4 1289.5,579.0C1290.7,577.6 1295.4,575.1 1300.3,574.9C1305.2,574.7 1314.7,576.5 1318.7,577.8Z"/><path d="M1365.9,622.7C1365.0,624.2 1360.0,625.9 1358.2,626.2C1356.4,626.6 1356.5,625.2 1355.3,624.7C1354.0,624.1 1351.3,623.9 1350.6,623.0C1349.9,622.1 1350.4,620.7 1351.1,619.3C1351.7,617.9 1353.0,615.6 1354.4,614.5C1355.8,613.5 1358.0,612.7 1359.5,613.1C1360.9,613.6 1362.3,615.7 1363.3,617.3C1364.4,618.9 1366.8,621.2 1365.9,622.7Z"/><path d="M1374.9,607.7C1375.6,609.8 1379.0,612.4 1378.7,614.5C1378.4,616.6 1375.1,618.5 1373.0,620.2C1370.9,621.8 1367.3,625.3 1366.2,624.3C1365.2,623.3 1367.2,617.8 1366.9,614.1C1366.5,610.3 1363.7,603.7 1364.3,601.8C1364.8,600.0 1368.4,603.1 1370.0,603.0C1371.7,603.0 1373.6,600.9 1374.4,601.6C1375.2,602.4 1374.2,605.5 1374.9,607.7Z"/><path d="M1193.8,614.2C1196.3,615.6 1198.9,616.0 1199.6,620.4C1200.4,624.7 1200.4,636.9 1198.3,640.3C1196.2,643.7 1190.2,642.5 1187.0,640.7C1183.8,639.0 1179.5,634.3 1179.1,629.5C1178.7,624.7 1182.1,614.4 1184.6,611.9C1187.0,609.3 1191.3,612.8 1193.8,614.2Z"/><path d="M1379.2,540.3C1382.5,540.5 1389.5,543.2 1391.0,545.0C1392.5,546.8 1390.2,549.1 1388.0,551.1C1385.9,553.1 1380.9,556.9 1377.9,557.2C1375.0,557.6 1371.9,554.8 1370.2,553.5C1368.5,552.1 1367.5,550.8 1367.7,549.2C1368.0,547.6 1369.7,545.5 1371.6,544.0C1373.5,542.5 1376.0,540.2 1379.2,540.3Z"/><path d="M1176.2,579.1C1178.3,575.6 1183.4,567.5 1188.8,567.2C1194.1,566.8 1202.9,574.3 1208.3,576.8C1213.6,579.3 1221.8,579.7 1221.0,582.1C1220.2,584.4 1210.9,589.9 1203.4,590.9C1195.9,591.9 1180.7,589.9 1176.2,588.0C1171.6,586.0 1174.1,582.5 1176.2,579.1Z"/><path d="M1361.5,629.4C1361.3,631.2 1361.0,632.4 1358.9,633.3C1356.8,634.3 1351.1,635.5 1348.9,635.2C1346.7,634.8 1346.4,632.5 1345.6,631.5C1344.8,630.4 1343.5,629.9 1344.0,628.7C1344.5,627.5 1347.2,625.1 1348.6,624.3C1350.0,623.4 1350.6,623.8 1352.5,623.6C1354.4,623.4 1358.5,621.9 1360.0,622.9C1361.5,623.8 1361.7,627.7 1361.5,629.4Z"/><path d="M1305.8,617.3C1307.7,617.2 1308.7,619.4 1309.8,620.3C1310.8,621.1 1311.5,621.4 1312.1,622.2C1312.8,623.0 1313.9,624.3 1313.6,625.3C1313.2,626.3 1311.7,627.7 1310.0,628.1C1308.3,628.5 1305.2,628.4 1303.3,627.9C1301.5,627.4 1299.6,626.0 1298.8,624.9C1298.0,623.7 1297.4,622.2 1298.6,621.0C1299.7,619.7 1304.0,617.4 1305.8,617.3Z"/><path d="M1240.2,551.3C1236.5,551.3 1233.3,550.1 1230.3,548.9C1227.4,547.7 1223.1,546.3 1222.6,544.1C1222.2,542.0 1225.7,538.5 1227.6,536.1C1229.5,533.8 1231.5,531.3 1234.0,530.1C1236.5,528.9 1238.8,528.6 1242.7,528.8C1246.5,528.9 1254.1,528.8 1257.1,531.0C1260.1,533.2 1261.3,538.8 1260.5,541.8C1259.8,544.8 1255.9,547.3 1252.5,548.9C1249.1,550.4 1243.9,551.3 1240.2,551.3Z"/><path d="M1569.6,510.9C1566.3,510.0 1565.0,509.3 1564.8,506.7C1564.5,504.2 1565.8,497.6 1568.0,495.6C1570.3,493.7 1573.4,494.9 1578.1,495.0C1582.9,495.2 1592.8,495.5 1596.5,496.5C1600.2,497.5 1600.5,498.9 1600.4,501.0C1600.3,503.2 1598.5,507.5 1595.8,509.3C1593.2,511.2 1589.0,511.8 1584.7,512.1C1580.3,512.4 1572.9,511.8 1569.6,510.9Z"/><path d="M1508.9,427.4C1509.2,432.1 1509.9,439.4 1508.3,441.2C1506.7,442.9 1502.2,439.4 1499.4,438.1C1496.5,436.8 1492.0,435.8 1491.1,433.2C1490.2,430.7 1493.3,426.6 1494.0,422.7C1494.6,418.8 1492.8,411.6 1494.9,410.0C1497.1,408.3 1504.6,410.0 1506.9,412.9C1509.3,415.8 1508.7,422.7 1508.9,427.4Z"/><path d="M1578.4,478.6C1584.3,477.6 1594.1,486.8 1598.4,492.1C1602.7,497.3 1606.4,504.9 1604.1,509.9C1601.8,515.0 1591.2,521.3 1584.7,522.6C1578.2,523.9 1568.7,522.1 1565.1,518.0C1561.6,513.9 1561.1,504.7 1563.3,498.2C1565.6,491.6 1572.6,479.7 1578.4,478.6Z"/><path d="M1411.0,591.8C1409.7,589.6 1414.4,587.6 1414.5,584.9C1414.5,582.3 1410.1,577.5 1411.4,575.9C1412.7,574.3 1419.2,574.7 1422.2,575.4C1425.1,576.1 1427.5,579.3 1429.1,580.2C1430.7,581.2 1430.8,579.4 1432.0,580.9C1433.2,582.3 1436.9,586.9 1436.4,588.9C1435.9,591.0 1431.5,591.5 1429.1,593.1C1426.7,594.6 1425.1,598.3 1422.1,598.1C1419.1,597.9 1412.2,594.0 1411.0,591.8Z"/><path d="M1478.3,473.8C1481.2,477.6 1484.6,480.7 1487.5,482.6C1490.5,484.5 1496.4,481.3 1496.3,485.3C1496.1,489.4 1489.1,499.7 1486.5,506.9C1484.0,514.2 1483.0,527.8 1480.9,528.7C1478.8,529.5 1476.6,516.6 1473.9,512.2C1471.2,507.9 1467.2,508.0 1464.6,502.7C1462.1,497.4 1457.6,487.8 1458.5,480.6C1459.5,473.3 1467.2,460.5 1470.5,459.3C1473.8,458.2 1475.5,469.9 1478.3,473.8Z"/><path d="M1491.2,539.7C1488.6,540.8 1484.5,542.8 1482.5,541.9C1480.6,541.1 1479.0,537.3 1479.6,534.8C1480.2,532.2 1484.1,527.5 1486.3,526.6C1488.5,525.8 1490.8,528.3 1492.7,529.7C1494.6,531.2 1498.1,533.7 1497.8,535.4C1497.6,537.0 1493.7,538.6 1491.2,539.7Z"/><path d="M1467.0,448.2C1467.8,444.7 1472.6,439.7 1476.1,438.6C1479.5,437.5 1484.3,439.4 1487.8,441.6C1491.2,443.7 1495.7,448.7 1496.6,451.3C1497.4,454.0 1495.2,454.9 1492.6,457.3C1490.0,459.8 1484.5,465.6 1480.9,465.9C1477.3,466.3 1473.3,462.4 1470.9,459.4C1468.6,456.5 1466.1,451.7 1467.0,448.2Z"/><path d="M1609.1,474.7C1612.4,475.4 1618.1,479.5 1619.2,481.8C1620.3,484.2 1617.9,487.1 1615.5,488.8C1613.0,490.4 1607.5,491.8 1604.4,491.9C1601.4,492.0 1598.6,490.6 1596.9,489.5C1595.2,488.3 1594.0,487.0 1594.4,484.9C1594.8,482.9 1596.9,478.9 1599.4,477.2C1601.8,475.5 1605.8,473.9 1609.1,474.7Z"/><path d="M1533.7,548.1C1537.8,549.2 1548.5,558.5 1550.5,562.6C1552.5,566.7 1547.9,570.1 1545.9,572.6C1543.9,575.1 1542.2,574.7 1538.6,577.5C1535.0,580.4 1529.2,590.1 1524.4,589.6C1519.6,589.0 1513.4,578.8 1509.8,574.3C1506.1,569.7 1500.0,565.3 1502.6,562.3C1505.3,559.4 1520.4,558.8 1525.6,556.5C1530.8,554.1 1529.5,547.1 1533.7,548.1Z"/><path d="M1513.2,581.7C1515.4,581.2 1518.5,581.5 1521.3,582.3C1524.0,583.1 1527.9,585.1 1529.6,586.4C1531.2,587.7 1532.8,589.3 1531.1,590.1C1529.5,590.9 1522.9,590.8 1519.6,591.4C1516.3,592.0 1513.4,594.2 1511.4,593.6C1509.4,592.9 1508.3,589.1 1507.7,587.7C1507.2,586.2 1507.3,586.1 1508.2,585.1C1509.1,584.1 1511.0,582.1 1513.2,581.7Z"/><path d="M1517.8,440.0C1515.4,441.3 1509.7,438.1 1505.4,437.9C1501.1,437.6 1495.8,439.4 1491.9,438.4C1488.0,437.3 1482.1,433.4 1481.9,431.6C1481.7,429.7 1486.1,428.7 1490.5,427.3C1494.9,426.0 1504.5,423.2 1508.5,423.3C1512.4,423.3 1512.2,426.5 1514.1,427.6C1516.0,428.8 1519.2,428.1 1519.8,430.1C1520.4,432.2 1520.2,438.7 1517.8,440.0Z"/><path d="M1636.5,478.6C1635.1,483.8 1629.5,488.9 1626.2,490.3C1623.0,491.8 1621.3,489.1 1616.8,487.4C1612.4,485.7 1602.7,483.4 1599.6,480.2C1596.5,476.9 1596.9,471.4 1598.2,467.8C1599.5,464.2 1604.3,460.9 1607.3,458.6C1610.3,456.3 1611.4,453.7 1616.0,453.8C1620.6,453.9 1631.4,455.1 1634.8,459.2C1638.2,463.4 1637.9,473.4 1636.5,478.6Z"/><path d="M1792.5,242.1C1789.5,242.0 1782.3,240.0 1778.0,238.8C1773.6,237.7 1767.1,237.9 1766.5,235.3C1765.8,232.7 1771.1,225.1 1774.0,223.1C1777.0,221.1 1781.5,223.0 1784.3,223.1C1787.0,223.2 1787.2,224.0 1790.4,223.8C1793.7,223.6 1801.7,220.1 1803.6,222.0C1805.5,223.8 1803.1,231.9 1801.8,234.8C1800.4,237.7 1797.1,238.2 1795.6,239.4C1794.0,240.7 1795.4,242.2 1792.5,242.1Z"/><path d="M1856.0,429.8C1854.5,428.5 1854.8,426.1 1854.8,424.1C1854.9,422.1 1854.6,419.6 1856.4,417.8C1858.1,416.0 1863.3,413.5 1865.2,413.3C1867.1,413.1 1865.7,415.4 1867.9,416.4C1870.1,417.5 1877.0,418.4 1878.4,419.7C1879.8,420.9 1877.4,421.9 1876.1,423.9C1874.7,425.9 1872.1,430.3 1870.1,431.7C1868.0,433.1 1866.1,432.7 1863.8,432.4C1861.4,432.1 1857.5,431.2 1856.0,429.8Z"/><path d="M1887.6,194.3C1889.4,195.7 1889.2,196.2 1890.5,199.5C1891.8,202.9 1894.8,210.3 1895.5,214.6C1896.2,219.0 1896.3,222.4 1894.7,225.7C1893.0,229.0 1887.4,235.1 1885.5,234.5C1883.6,234.0 1884.3,226.2 1883.3,222.2C1882.3,218.2 1880.3,214.2 1879.5,210.8C1878.7,207.4 1878.3,204.9 1878.2,201.6C1878.2,198.3 1877.7,192.3 1879.3,191.1C1880.8,189.9 1885.7,192.9 1887.6,194.3Z"/><path d="M1873.1,209.2C1874.5,209.4 1876.0,206.6 1876.7,208.6C1877.3,210.7 1877.4,218.6 1877.2,221.7C1877.1,224.8 1877.2,226.0 1875.8,227.4C1874.4,228.8 1870.5,230.7 1868.9,230.0C1867.2,229.3 1866.4,226.0 1866.0,223.3C1865.7,220.6 1866.4,216.4 1866.7,213.8C1867.1,211.1 1867.2,207.9 1868.2,207.2C1869.3,206.4 1871.7,209.0 1873.1,209.2Z"/><path d="M1899.0,280.6C1895.5,284.4 1879.3,282.9 1871.0,282.7C1862.8,282.5 1853.0,282.7 1849.5,279.5C1845.9,276.2 1845.3,267.4 1849.9,263.1C1854.4,258.9 1869.7,254.4 1876.8,253.8C1883.9,253.3 1888.7,255.5 1892.4,260.0C1896.1,264.4 1902.6,276.8 1899.0,280.6Z"/><path d="M2143.2,284.7C2144.5,288.8 2143.8,297.1 2142.0,300.2C2140.3,303.3 2136.4,303.3 2132.9,303.4C2129.4,303.4 2123.1,302.6 2121.0,300.6C2118.9,298.6 2119.8,294.0 2120.0,291.4C2120.2,288.8 2121.0,286.4 2122.2,285.1C2123.4,283.7 2125.2,285.0 2127.3,283.3C2129.3,281.7 2132.0,274.9 2134.7,275.1C2137.3,275.4 2142.0,280.5 2143.2,284.7Z"/><path d="M2098.6,251.5C2103.5,251.5 2109.3,254.2 2113.6,255.4C2117.8,256.6 2121.6,257.5 2124.1,258.8C2126.5,260.2 2129.6,262.2 2128.4,263.6C2127.2,265.0 2120.9,266.5 2116.7,267.3C2112.5,268.1 2108.7,268.8 2103.3,268.4C2097.9,267.9 2087.4,266.7 2084.2,264.6C2081.1,262.5 2082.1,257.9 2084.5,255.7C2086.9,253.5 2093.8,251.6 2098.6,251.5Z"/><path d="M2078.2,315.8C2076.7,317.2 2074.3,319.3 2071.0,319.3C2067.6,319.4 2059.5,317.5 2058.1,316.3C2056.8,315.1 2061.3,313.1 2062.7,312.1C2064.2,311.0 2063.8,310.3 2066.8,310.1C2069.7,309.8 2078.5,309.7 2080.4,310.7C2082.4,311.7 2079.8,314.4 2078.2,315.8Z"/><path d="M2060.8,332.0C2060.7,334.9 2056.2,338.6 2054.3,339.5C2052.4,340.4 2050.7,338.6 2049.3,337.3C2047.9,335.9 2046.3,334.2 2045.7,331.5C2045.2,328.7 2044.3,322.3 2045.9,320.8C2047.5,319.3 2053.0,320.5 2055.5,322.4C2058.0,324.3 2061.0,329.2 2060.8,332.0Z"/><path d="M2007.2,423.4C2003.7,424.6 1998.9,417.2 1992.1,415.8C1985.3,414.3 1971.0,417.2 1966.3,414.6C1961.7,412.1 1961.9,404.8 1964.2,400.6C1966.5,396.5 1975.0,392.2 1980.2,389.7C1985.4,387.3 1987.9,386.3 1995.2,385.9C2002.5,385.5 2021.0,383.5 2024.0,387.3C2027.0,391.1 2015.9,402.5 2013.1,408.5C2010.3,414.5 2010.7,422.2 2007.2,423.4Z"/><path d="M2150.4,246.1C2151.9,248.6 2155.3,251.1 2154.3,252.9C2153.3,254.7 2147.8,255.6 2144.5,256.8C2141.3,258.0 2136.7,260.5 2134.5,260.1C2132.3,259.7 2132.8,256.3 2131.5,254.2C2130.1,252.1 2125.9,249.3 2126.5,247.3C2127.1,245.3 2131.9,243.9 2135.0,242.3C2138.1,240.8 2142.7,237.2 2145.3,237.8C2147.9,238.4 2148.9,243.5 2150.4,246.1Z"/><path d="M1990.8,231.9C1986.4,229.4 1982.6,226.9 1982.8,224.6C1983.0,222.3 1988.8,220.5 1992.1,218.1C1995.3,215.6 1997.7,211.7 2002.3,209.7C2006.9,207.8 2015.1,205.3 2019.4,206.6C2023.7,207.8 2024.6,214.4 2028.0,217.2C2031.4,219.9 2040.0,219.9 2039.7,223.1C2039.5,226.3 2031.5,233.5 2026.4,236.3C2021.3,239.1 2015.1,240.6 2009.2,239.9C2003.3,239.2 1995.2,234.5 1990.8,231.9Z"/><path d="M1985.2,337.5C1987.5,338.1 1988.1,340.7 1988.3,343.1C1988.5,345.4 1987.6,349.3 1986.5,351.5C1985.4,353.8 1983.8,356.9 1981.8,356.5C1979.7,356.1 1975.4,352.0 1974.2,349.1C1972.9,346.2 1972.5,341.0 1974.3,339.1C1976.1,337.1 1982.8,336.8 1985.2,337.5Z"/><path d="M1993.3,226.1C1992.9,227.9 1992.5,229.1 1991.5,230.9C1990.6,232.7 1988.8,237.1 1987.5,236.9C1986.3,236.8 1984.5,232.6 1984.2,230.2C1983.9,227.8 1985.2,225.5 1985.7,222.5C1986.2,219.5 1986.8,214.3 1987.3,212.2C1987.8,210.2 1987.7,211.5 1988.5,210.1C1989.3,208.7 1991.1,202.1 1992.1,203.8C1993.0,205.5 1994.1,216.7 1994.3,220.4C1994.5,224.2 1993.8,224.4 1993.3,226.1Z"/><path d="M2057.8,389.8C2058.9,388.2 2064.8,386.2 2066.8,385.8C2068.8,385.3 2068.2,386.4 2069.7,386.9C2071.3,387.5 2075.0,385.9 2076.1,388.8C2077.2,391.8 2077.1,401.4 2076.5,404.7C2076.0,407.9 2074.5,406.9 2072.9,408.0C2071.4,409.2 2069.0,412.8 2067.2,411.7C2065.5,410.6 2063.8,404.3 2062.6,401.6C2061.4,398.9 2060.7,397.4 2059.9,395.5C2059.1,393.5 2056.6,391.4 2057.8,389.8Z"/><path d="M1931.9,303.6C1930.3,305.4 1926.3,308.8 1922.6,309.7C1918.9,310.7 1913.1,310.6 1909.6,309.4C1906.0,308.1 1900.9,304.7 1901.3,302.3C1901.7,299.8 1906.8,295.3 1912.0,294.7C1917.1,294.1 1929.0,297.2 1932.3,298.6C1935.6,300.1 1933.5,301.7 1931.9,303.6Z"/><path d="M2094.8,217.8C2094.3,216.1 2095.3,212.3 2095.7,210.0C2096.1,207.6 2096.6,205.2 2097.4,203.6C2098.2,202.1 2099.2,199.5 2100.5,200.6C2101.7,201.7 2104.4,207.5 2104.8,210.3C2105.2,213.2 2103.6,216.0 2102.8,217.6C2102.1,219.2 2100.9,219.3 2100.2,219.8C2099.5,220.2 2099.5,220.4 2098.6,220.1C2097.7,219.8 2095.3,219.5 2094.8,217.8Z"/><path d="M2082.4,367.1C2079.1,367.1 2073.4,367.7 2070.7,366.9C2067.9,366.2 2068.0,364.3 2065.7,362.5C2063.3,360.7 2056.5,358.4 2056.3,356.1C2056.1,353.8 2061.7,350.4 2064.4,348.9C2067.0,347.3 2068.6,346.0 2072.3,346.8C2075.9,347.6 2083.9,351.5 2086.2,353.7C2088.6,355.8 2085.7,357.4 2086.4,359.6C2087.1,361.9 2091.0,365.8 2090.3,367.1C2089.7,368.4 2085.7,367.2 2082.4,367.1Z"/><path d="M1987.2,295.5C1987.6,294.8 1989.1,294.6 1990.8,294.0C1992.6,293.4 1996.4,291.7 1997.6,292.0C1998.8,292.3 1997.3,294.4 1998.0,295.8C1998.8,297.1 2001.9,298.9 2001.9,300.1C2001.9,301.3 2000.1,302.5 1998.2,303.0C1996.4,303.6 1992.2,304.4 1990.6,303.7C1988.9,303.0 1989.1,300.1 1988.6,298.8C1988.0,297.4 1986.9,296.3 1987.2,295.5Z"/><path d="M1990.5,392.5C1993.1,393.9 1999.5,396.9 1999.3,399.4C1999.1,402.0 1992.2,405.5 1989.5,407.9C1986.9,410.2 1986.7,413.8 1983.5,413.6C1980.3,413.4 1971.8,409.4 1970.5,406.7C1969.3,403.9 1973.8,399.6 1976.0,397.0C1978.2,394.4 1981.3,391.7 1983.7,390.9C1986.1,390.2 1987.9,391.0 1990.5,392.5Z"/><path d="M1940.3,365.9C1939.3,367.4 1939.1,367.1 1937.7,368.2C1936.4,369.2 1934.4,372.1 1932.2,372.0C1930.1,371.9 1926.5,368.7 1924.7,367.6C1922.9,366.4 1922.0,366.4 1921.3,365.1C1920.6,363.7 1919.5,360.3 1920.5,359.5C1921.6,358.7 1924.8,360.8 1927.6,360.4C1930.3,359.9 1934.2,357.1 1936.9,356.9C1939.7,356.7 1943.6,357.7 1944.2,359.2C1944.8,360.7 1941.4,364.4 1940.3,365.9Z"/><path d="M2020.9,307.3C2027.0,306.5 2026.4,309.3 2031.2,313.5C2036.0,317.7 2049.3,327.8 2049.7,332.6C2050.2,337.4 2039.4,339.4 2034.0,342.4C2028.6,345.4 2021.5,349.6 2017.4,350.6C2013.2,351.7 2013.8,350.3 2009.2,348.7C2004.5,347.1 1993.5,345.6 1989.4,341.0C1985.3,336.4 1983.8,325.1 1984.6,321.2C1985.5,317.4 1988.4,320.3 1994.5,318.0C2000.5,315.7 2014.8,308.0 2020.9,307.3Z"/><path d="M1848.0,577.5C1854.7,580.0 1864.9,593.2 1864.3,598.1C1863.8,603.0 1852.2,605.5 1844.7,606.8C1837.2,608.2 1824.3,608.5 1819.5,606.2C1814.6,604.0 1814.6,597.2 1815.4,593.4C1816.2,589.5 1818.7,585.8 1824.1,583.2C1829.5,580.5 1841.3,575.1 1848.0,577.5Z"/><path d="M1684.9,509.6C1687.4,509.8 1686.3,512.1 1687.0,513.5C1687.7,514.9 1687.4,516.3 1689.2,517.9C1691.0,519.6 1699.3,522.0 1697.7,523.3C1696.1,524.6 1684.5,525.1 1679.6,525.6C1674.6,526.2 1671.5,527.6 1668.1,526.8C1664.7,526.1 1659.3,522.7 1659.1,521.1C1659.0,519.5 1665.2,518.6 1667.4,517.2C1669.6,515.7 1669.4,513.7 1672.4,512.5C1675.3,511.2 1682.5,509.5 1684.9,509.6Z"/><path d="M1755.7,552.4C1751.3,553.7 1745.2,552.6 1740.7,551.8C1736.1,551.0 1729.4,549.9 1728.3,547.4C1727.2,545.0 1733.2,539.5 1734.0,537.0C1734.8,534.6 1731.0,534.2 1733.1,532.9C1735.2,531.7 1743.1,531.3 1746.7,529.7C1750.3,528.1 1752.2,521.9 1754.6,523.2C1757.0,524.5 1758.8,534.1 1760.9,537.5C1763.0,540.9 1768.1,541.2 1767.2,543.7C1766.4,546.2 1760.2,551.0 1755.7,552.4Z"/><path d="M1828.8,599.0C1822.9,597.9 1813.0,589.9 1811.6,586.0C1810.3,582.1 1816.0,576.8 1820.8,575.4C1825.7,574.1 1834.1,577.5 1840.5,578.0C1847.0,578.5 1854.3,576.9 1859.8,578.5C1865.2,580.1 1875.5,585.1 1873.4,587.5C1871.2,589.9 1854.5,591.1 1847.1,593.0C1839.7,595.0 1834.7,600.2 1828.8,599.0Z"/><path d="M1800.4,577.4C1801.6,578.7 1802.9,579.4 1802.9,580.9C1803.0,582.5 1803.0,585.6 1800.8,586.6C1798.6,587.6 1791.9,587.7 1789.8,587.0C1787.8,586.2 1788.9,583.5 1788.5,582.1C1788.1,580.6 1786.7,579.4 1787.3,578.2C1788.0,576.9 1791.1,575.3 1792.4,574.4C1793.7,573.5 1794.0,572.4 1795.3,572.9C1796.6,573.4 1799.1,576.0 1800.4,577.4Z"/><path d="M1819.4,597.5C1820.6,600.2 1818.2,608.5 1817.1,611.6C1816.0,614.7 1815.0,616.3 1812.8,616.1C1810.5,616.0 1805.2,613.7 1803.6,610.6C1802.0,607.5 1802.1,600.0 1803.2,597.5C1804.2,595.0 1807.2,595.4 1810.0,595.4C1812.7,595.4 1818.2,594.8 1819.4,597.5Z"/><path d="M1862.9,456.1C1861.5,455.6 1860.6,453.2 1860.7,451.9C1860.8,450.7 1862.7,449.9 1863.7,448.8C1864.6,447.7 1864.6,445.6 1866.1,445.3C1867.6,445.1 1871.1,446.5 1872.5,447.5C1874.0,448.5 1874.6,450.4 1874.8,451.3C1875.0,452.3 1874.7,452.4 1873.8,453.1C1872.8,453.8 1870.9,454.9 1869.1,455.4C1867.3,455.9 1864.3,456.7 1862.9,456.1Z"/><path d="M1784.6,618.5C1781.8,621.9 1775.8,627.3 1771.5,627.8C1767.2,628.2 1760.8,625.6 1759.0,621.2C1757.2,616.8 1757.9,607.0 1760.6,601.5C1763.2,596.1 1770.4,587.4 1775.0,588.4C1779.6,589.3 1786.5,602.3 1788.1,607.4C1789.7,612.4 1787.4,615.1 1784.6,618.5Z"/><path d="M1695.3,481.0C1694.6,479.8 1690.1,479.5 1690.6,478.5C1691.1,477.5 1694.8,475.4 1698.1,474.9C1701.3,474.4 1707.5,475.3 1710.1,475.5C1712.6,475.7 1713.3,475.4 1713.5,476.3C1713.7,477.3 1711.4,479.8 1711.4,481.1C1711.4,482.4 1714.7,483.8 1713.5,484.2C1712.2,484.6 1707.0,483.4 1703.9,483.6C1700.9,483.9 1696.5,486.1 1695.0,485.6C1693.6,485.2 1696.1,482.2 1695.3,481.0Z"/><path d="M1829.0,423.4C1829.9,419.6 1832.7,416.7 1834.9,417.1C1837.2,417.6 1840.3,423.2 1842.5,426.0C1844.7,428.9 1847.2,429.7 1848.1,434.4C1849.0,439.1 1849.1,449.9 1847.9,454.2C1846.8,458.5 1843.2,459.3 1841.4,460.4C1839.6,461.5 1839.4,463.0 1837.1,461.0C1834.9,459.0 1829.4,451.9 1828.0,448.5C1826.7,445.0 1829.0,444.2 1829.2,440.1C1829.3,435.9 1828.0,427.2 1829.0,423.4Z"/><path d="M1883.9,486.2C1887.3,488.5 1890.7,490.2 1889.8,492.7C1888.8,495.3 1881.0,500.2 1878.2,501.4C1875.3,502.6 1874.4,501.5 1872.7,499.9C1871.0,498.2 1868.4,494.9 1867.9,491.4C1867.4,488.0 1866.8,480.1 1869.5,479.3C1872.2,478.4 1880.5,484.0 1883.9,486.2Z"/><path d="M1913.9,509.3C1913.8,513.0 1913.6,518.9 1908.0,521.2C1902.3,523.5 1886.1,524.6 1880.0,523.2C1873.9,521.7 1872.2,515.4 1871.4,512.3C1870.6,509.2 1871.7,506.8 1875.2,504.7C1878.7,502.7 1886.7,501.0 1892.3,500.0C1897.9,499.0 1905.3,497.1 1908.8,498.6C1912.4,500.2 1914.1,505.5 1913.9,509.3Z"/><path d="M1738.0,494.0C1739.0,491.5 1746.4,487.4 1751.7,487.2C1757.0,487.0 1766.8,490.5 1769.8,492.7C1772.8,495.0 1771.3,498.3 1769.7,500.5C1768.1,502.7 1764.2,505.4 1760.2,505.7C1756.2,506.0 1749.5,504.3 1745.8,502.4C1742.0,500.4 1737.0,496.6 1738.0,494.0Z"/><path d="M1911.6,434.0C1914.0,438.0 1917.1,447.7 1918.0,455.8C1918.9,463.9 1919.7,476.3 1917.0,482.5C1914.3,488.6 1905.7,495.7 1901.9,492.8C1898.2,489.8 1896.0,472.9 1894.4,464.7C1892.8,456.5 1892.9,449.8 1892.2,443.5C1891.4,437.2 1888.0,429.1 1889.9,427.2C1891.8,425.2 1899.9,430.5 1903.5,431.6C1907.1,432.8 1909.2,429.9 1911.6,434.0Z"/><path d="M1712.9,635.7C1710.9,632.8 1714.5,629.2 1716.1,627.4C1717.8,625.6 1719.5,625.4 1722.7,624.9C1726.0,624.3 1732.3,622.6 1735.7,624.0C1739.1,625.3 1743.8,630.7 1743.2,633.1C1742.5,635.5 1734.3,636.5 1731.8,638.4C1729.2,640.3 1731.1,644.8 1727.9,644.4C1724.8,643.9 1714.8,638.5 1712.9,635.7Z"/><path d="M1694.9,561.1C1698.0,558.4 1702.5,555.8 1705.3,555.4C1708.1,555.1 1710.2,556.1 1711.7,558.9C1713.1,561.7 1714.9,567.6 1714.2,572.1C1713.4,576.6 1709.5,582.6 1707.1,585.7C1704.7,588.9 1703.9,591.7 1699.7,590.9C1695.5,590.1 1684.1,584.3 1682.0,581.0C1679.8,577.7 1684.6,574.5 1686.7,571.2C1688.9,567.9 1691.7,563.7 1694.9,561.1Z"/><path d="M1873.3,440.0C1875.0,434.5 1881.9,422.3 1887.9,419.3C1893.8,416.3 1902.0,419.5 1908.8,422.1C1915.7,424.7 1927.3,428.0 1929.1,434.7C1931.0,441.4 1924.1,457.4 1919.7,462.4C1915.4,467.3 1909.9,466.0 1902.9,464.4C1895.9,462.7 1882.6,456.5 1877.6,452.5C1872.7,448.4 1871.5,445.5 1873.3,440.0Z"/><path d="M1759.6,511.8C1760.5,509.0 1762.4,507.2 1765.3,505.5C1768.1,503.8 1773.4,500.3 1776.8,501.7C1780.1,503.1 1783.7,508.3 1785.4,513.8C1787.1,519.4 1788.7,530.5 1787.0,535.0C1785.2,539.4 1778.8,539.9 1774.8,540.4C1770.7,541.0 1765.1,541.5 1762.7,538.4C1760.2,535.4 1760.5,526.5 1759.9,522.0C1759.4,517.6 1758.7,514.5 1759.6,511.8Z"/><path d="M1710.4,468.1C1713.0,466.3 1721.3,469.2 1729.5,469.9C1737.7,470.6 1756.9,470.3 1759.7,472.4C1762.5,474.5 1750.8,480.1 1746.3,482.7C1741.9,485.3 1738.4,488.3 1733.0,488.0C1727.6,487.7 1717.6,484.1 1713.8,480.8C1710.0,477.5 1707.8,469.9 1710.4,468.1Z"/><path d="M1730.3,582.8C1730.3,586.5 1727.3,584.9 1725.4,585.7C1723.6,586.6 1720.9,588.6 1719.1,587.9C1717.4,587.2 1715.1,584.1 1714.8,581.5C1714.4,579.0 1716.2,575.0 1717.0,572.5C1717.8,570.1 1718.2,568.1 1719.7,566.7C1721.1,565.2 1723.8,561.3 1725.6,564.0C1727.4,566.7 1730.4,579.2 1730.3,582.8Z"/><path d="M1710.3,613.5C1707.8,610.6 1709.7,600.4 1708.1,595.9C1706.4,591.5 1699.3,590.1 1700.4,586.7C1701.5,583.4 1709.8,577.6 1714.8,575.8C1719.9,574.1 1727.6,573.2 1730.8,576.1C1734.0,579.0 1733.9,589.2 1734.2,593.4C1734.6,597.5 1734.7,597.9 1732.9,601.3C1731.0,604.7 1727.0,611.7 1723.2,613.8C1719.5,615.8 1712.9,616.5 1710.3,613.5Z"/><path d="M1698.2,436.2C1698.4,432.1 1700.6,422.9 1703.2,420.5C1705.9,418.1 1710.5,420.9 1714.0,421.8C1717.5,422.8 1722.9,422.4 1724.2,426.4C1725.5,430.4 1722.6,440.6 1721.9,446.1C1721.3,451.5 1721.0,454.8 1720.1,459.0C1719.1,463.2 1719.1,470.3 1716.2,471.3C1713.4,472.3 1705.5,469.6 1703.1,465.2C1700.7,460.8 1702.6,449.8 1701.7,445.0C1700.9,440.1 1697.9,440.3 1698.2,436.2Z"/><path d="M1833.8,483.1C1833.0,485.9 1826.8,490.8 1823.3,491.3C1819.8,491.9 1815.1,488.3 1812.9,486.4C1810.8,484.5 1810.0,482.2 1810.4,479.8C1810.7,477.3 1813.0,473.3 1814.8,471.7C1816.6,470.1 1819.1,469.6 1821.3,470.1C1823.5,470.6 1825.9,472.4 1827.9,474.5C1830.0,476.7 1834.6,480.3 1833.8,483.1Z"/><path d="M1728.2,438.8C1724.3,441.2 1718.6,445.2 1714.9,444.8C1711.2,444.4 1708.7,438.2 1706.2,436.2C1703.7,434.2 1700.2,435.4 1700.0,432.9C1699.8,430.4 1702.4,423.8 1705.3,421.3C1708.1,418.7 1713.3,418.2 1717.0,417.7C1720.7,417.1 1723.8,415.7 1727.4,417.9C1730.9,420.1 1738.1,427.3 1738.3,430.8C1738.4,434.3 1732.1,436.5 1728.2,438.8Z"/><path d="M1759.6,610.6C1760.7,608.1 1763.1,612.0 1765.9,612.0C1768.6,612.1 1774.6,609.5 1776.1,610.8C1777.7,612.1 1775.7,615.7 1775.0,619.6C1774.2,623.4 1772.8,630.1 1771.8,634.1C1770.9,638.0 1771.2,643.4 1769.3,643.4C1767.4,643.4 1762.1,636.6 1760.3,633.9C1758.6,631.3 1759.1,631.2 1759.0,627.3C1758.8,623.4 1758.4,613.2 1759.6,610.6Z"/><path d="M1905.4,430.4C1907.4,431.9 1908.7,433.6 1907.9,435.0C1907.0,436.4 1902.5,438.2 1900.4,439.0C1898.2,439.7 1897.6,439.9 1895.1,439.6C1892.6,439.2 1887.5,438.0 1885.6,436.9C1883.6,435.8 1882.6,434.2 1883.4,432.9C1884.2,431.6 1888.1,430.0 1890.3,428.8C1892.4,427.7 1893.5,425.8 1896.1,426.0C1898.6,426.3 1903.5,428.9 1905.4,430.4Z"/><path d="M2034.1,590.4C2028.4,590.9 2018.4,590.8 2016.2,589.3C2014.0,587.9 2018.3,584.3 2021.0,581.6C2023.7,578.9 2028.9,573.7 2032.5,573.2C2036.0,572.7 2039.1,576.5 2042.1,578.7C2045.1,580.9 2051.8,584.5 2050.5,586.4C2049.1,588.4 2039.8,589.9 2034.1,590.4Z"/><path d="M2033.8,522.1C2035.3,521.0 2037.8,524.8 2040.7,525.1C2043.6,525.4 2049.4,523.1 2051.2,524.1C2052.9,525.1 2052.1,529.3 2051.2,531.2C2050.3,533.2 2048.0,534.1 2045.5,536.0C2043.1,537.8 2039.1,542.9 2036.8,542.2C2034.4,541.5 2031.8,535.1 2031.3,531.8C2030.8,528.4 2032.2,523.2 2033.8,522.1Z"/><path d="M1944.0,510.2C1945.6,504.2 1950.7,499.2 1954.1,498.3C1957.4,497.5 1960.9,501.4 1963.9,505.0C1966.9,508.7 1972.0,515.1 1972.2,520.1C1972.4,525.2 1967.3,531.1 1965.2,535.1C1963.2,539.1 1963.4,544.2 1959.9,544.1C1956.4,544.0 1946.9,540.0 1944.3,534.4C1941.6,528.7 1942.3,516.2 1944.0,510.2Z"/><path d="M1968.1,552.1C1966.2,551.2 1965.8,543.5 1964.6,540.4C1963.3,537.2 1960.9,536.3 1960.6,533.3C1960.3,530.3 1960.8,524.1 1962.6,522.2C1964.4,520.3 1969.4,520.5 1971.2,522.1C1973.0,523.7 1972.7,527.9 1973.5,531.9C1974.4,535.8 1977.1,542.4 1976.2,545.8C1975.3,549.2 1970.1,553.0 1968.1,552.1Z"/><path d="M2021.9,512.7C2020.9,509.4 2025.7,506.1 2028.2,504.1C2030.8,502.2 2032.2,502.2 2037.2,500.9C2042.2,499.6 2053.8,495.1 2058.1,496.3C2062.5,497.6 2062.6,504.8 2063.2,508.3C2063.7,511.8 2063.1,514.2 2061.5,517.2C2059.9,520.1 2058.2,525.0 2053.7,526.1C2049.2,527.2 2039.9,526.1 2034.6,523.8C2029.4,521.6 2023.0,516.0 2021.9,512.7Z"/><path d="M2003.0,635.7C2002.1,633.0 2003.2,627.5 2004.3,625.0C2005.5,622.5 2007.7,620.8 2009.9,620.5C2012.1,620.1 2014.7,622.7 2017.4,622.7C2020.1,622.8 2023.9,618.7 2025.9,620.7C2027.8,622.8 2029.8,630.3 2029.1,635.0C2028.5,639.6 2024.1,645.6 2021.8,648.6C2019.5,651.6 2017.2,654.5 2015.1,653.2C2013.1,652.0 2011.6,644.0 2009.5,641.1C2007.5,638.2 2003.9,638.4 2003.0,635.7Z"/><path d="M2047.4,525.0C2047.6,528.9 2039.3,533.9 2037.0,537.9C2034.7,541.8 2037.0,547.4 2033.7,548.9C2030.5,550.4 2022.2,547.6 2017.6,546.8C2013.0,546.0 2009.6,546.1 2006.0,544.0C2002.3,542.0 1996.1,538.0 1995.7,534.7C1995.4,531.4 1999.2,526.6 2003.8,524.1C2008.4,521.6 2017.9,521.4 2023.2,519.7C2028.5,518.1 2031.7,513.1 2035.7,514.0C2039.8,514.9 2047.2,521.0 2047.4,525.0Z"/><path d="M2040.2,593.7C2038.7,588.0 2034.5,581.0 2037.1,577.8C2039.8,574.6 2051.3,574.6 2056.3,574.6C2061.3,574.6 2062.4,575.5 2067.0,577.8C2071.6,580.0 2082.0,584.4 2083.9,588.3C2085.7,592.3 2080.4,597.1 2078.2,601.4C2075.9,605.8 2074.6,611.3 2070.1,614.3C2065.7,617.4 2055.4,619.9 2051.4,619.6C2047.5,619.3 2048.3,616.6 2046.5,612.3C2044.6,608.0 2041.8,599.5 2040.2,593.7Z"/><path d="M1954.8,582.1C1952.0,588.1 1950.1,591.2 1946.9,591.2C1943.7,591.2 1938.5,588.7 1935.6,582.0C1932.6,575.3 1928.1,555.8 1929.3,551.3C1930.4,546.7 1936.5,554.0 1942.2,554.6C1947.9,555.2 1961.5,550.3 1963.6,554.9C1965.7,559.5 1957.6,576.0 1954.8,582.1Z"/><path d="M1940.8,594.9C1950.1,595.3 1967.5,595.5 1973.0,598.6C1978.6,601.7 1978.3,611.0 1973.9,613.3C1969.5,615.6 1954.1,613.0 1946.6,612.4C1939.1,611.7 1933.6,612.2 1928.8,609.5C1923.9,606.7 1915.4,598.1 1917.4,595.7C1919.4,593.2 1931.5,594.4 1940.8,594.9Z"/><path d="M1936.5,456.2C1939.2,455.5 1945.7,457.0 1948.5,457.6C1951.4,458.2 1951.8,458.4 1953.7,459.7C1955.7,461.1 1961.0,464.6 1960.3,465.6C1959.5,466.6 1951.7,465.6 1949.1,465.7C1946.4,465.7 1946.9,465.9 1944.2,465.8C1941.6,465.8 1934.9,466.0 1933.0,465.3C1931.1,464.6 1932.1,463.2 1932.7,461.7C1933.3,460.2 1933.9,456.9 1936.5,456.2Z"/><path d="M1891.4,520.5C1887.8,517.7 1881.1,510.8 1886.9,508.0C1892.8,505.2 1919.1,502.5 1926.5,503.8C1934.0,505.0 1930.6,512.3 1931.7,515.6C1932.8,519.0 1937.0,522.3 1933.1,523.8C1929.2,525.4 1915.3,525.6 1908.3,525.0C1901.4,524.5 1895.0,523.4 1891.4,520.5Z"/><path d="M2110.7,522.3C2116.7,526.1 2122.4,529.6 2122.5,534.4C2122.5,539.3 2116.9,547.7 2110.9,551.3C2104.9,555.0 2092.1,558.7 2086.5,556.3C2080.9,553.9 2077.3,544.3 2077.4,536.8C2077.5,529.3 2081.3,513.9 2086.9,511.5C2092.4,509.1 2104.8,518.5 2110.7,522.3Z"/><path d="M2085.7,554.4C2085.6,556.6 2082.9,560.2 2079.7,561.9C2076.5,563.7 2069.6,565.8 2066.5,564.8C2063.3,563.8 2060.5,558.5 2060.7,556.2C2061.0,553.8 2064.7,552.2 2067.9,550.9C2071.2,549.7 2077.4,548.3 2080.3,548.8C2083.3,549.4 2085.8,552.2 2085.7,554.4Z"/><path d="M2090.8,542.8C2091.9,541.7 2093.4,541.2 2094.6,541.0C2095.8,540.7 2096.4,540.5 2097.9,541.4C2099.4,542.3 2103.2,544.8 2103.7,546.4C2104.2,548.0 2102.2,549.4 2101.0,551.0C2099.8,552.6 2098.0,555.5 2096.5,556.1C2095.1,556.7 2093.7,556.1 2092.3,554.7C2091.0,553.3 2088.6,549.7 2088.4,547.7C2088.1,545.7 2089.8,544.0 2090.8,542.8Z"/><path d="M1978.0,492.3C1982.3,493.6 1985.6,494.0 1989.2,495.9C1992.8,497.7 2000.6,501.3 1999.7,503.6C1998.8,505.9 1987.8,507.1 1983.9,509.7C1979.9,512.3 1979.1,518.1 1976.2,519.2C1973.2,520.3 1970.5,518.4 1966.0,516.2C1961.6,514.1 1950.7,509.6 1949.3,506.4C1947.8,503.3 1955.0,500.4 1957.4,497.3C1959.8,494.2 1960.1,488.6 1963.5,487.7C1967.0,486.9 1973.7,490.9 1978.0,492.3Z"/><path d="M2038.9,522.3C2037.2,523.7 2035.5,526.1 2031.5,526.1C2027.6,526.1 2018.2,524.2 2015.2,522.3C2012.2,520.4 2011.2,516.2 2013.7,514.8C2016.2,513.4 2025.4,513.5 2030.1,513.9C2034.8,514.3 2040.4,515.9 2041.8,517.3C2043.3,518.7 2040.6,520.8 2038.9,522.3Z"/><path d="M2035.6,492.1C2036.5,494.1 2035.1,494.3 2035.1,497.1C2035.0,499.9 2036.9,506.8 2035.3,508.8C2033.8,510.9 2027.6,511.1 2025.7,509.5C2023.7,507.9 2024.0,503.4 2023.5,499.2C2023.1,495.1 2022.1,487.0 2023.1,484.6C2024.1,482.3 2027.5,483.9 2029.6,485.2C2031.7,486.4 2034.7,490.1 2035.6,492.1Z"/><path d="M1982.2,453.6C1978.3,453.2 1977.6,445.4 1975.3,442.9C1972.9,440.4 1968.5,440.4 1968.1,438.7C1967.7,437.0 1971.7,434.7 1972.8,432.6C1973.8,430.4 1972.3,427.0 1974.5,425.8C1976.7,424.6 1982.6,425.3 1986.0,425.5C1989.4,425.7 1992.8,425.0 1994.9,427.2C1997.1,429.5 1998.0,435.7 1998.7,438.7C1999.4,441.8 2001.8,443.0 1999.0,445.4C1996.3,447.9 1986.2,454.1 1982.2,453.6Z"/><path d="M2133.6,636.4C2133.4,632.1 2133.2,626.4 2135.3,624.0C2137.4,621.5 2142.9,620.4 2146.2,621.7C2149.6,623.0 2153.3,628.8 2155.1,632.0C2156.9,635.2 2158.7,638.0 2157.1,641.2C2155.4,644.3 2148.6,649.5 2145.1,650.9C2141.6,652.3 2138.2,652.0 2136.3,649.5C2134.3,647.1 2133.7,640.7 2133.6,636.4Z"/><path d="M2136.0,575.4C2133.2,573.8 2128.8,569.7 2129.3,567.8C2129.8,565.8 2136.1,564.6 2139.0,563.4C2142.0,562.2 2144.8,560.6 2146.9,560.7C2149.1,560.9 2150.6,562.5 2151.9,564.3C2153.2,566.2 2155.7,569.8 2154.8,571.8C2153.8,573.9 2149.3,576.3 2146.2,576.8C2143.1,577.4 2138.8,576.9 2136.0,575.4Z"/><path d="M2077.6,589.0C2066.0,587.2 2039.6,583.9 2034.8,580.7C2030.1,577.4 2041.2,572.5 2049.1,569.5C2057.0,566.5 2072.6,562.8 2082.1,562.7C2091.6,562.5 2102.3,564.0 2106.0,568.8C2109.7,573.5 2109.1,588.0 2104.4,591.4C2099.7,594.7 2089.2,590.8 2077.6,589.0Z"/><path d="M1956.2,442.9C1958.3,441.6 1959.6,438.5 1961.6,438.5C1963.6,438.6 1967.4,440.6 1968.2,443.2C1968.9,445.8 1967.0,451.3 1966.2,454.2C1965.4,457.1 1965.2,460.2 1963.7,460.4C1962.2,460.7 1959.4,456.6 1957.2,455.7C1955.0,454.9 1951.9,456.9 1950.6,455.3C1949.3,453.8 1948.3,448.4 1949.2,446.3C1950.2,444.3 1954.2,444.2 1956.2,442.9Z"/><path d="M1997.3,464.0C1995.2,464.4 1989.6,466.7 1987.9,465.0C1986.2,463.4 1986.9,458.5 1987.3,454.1C1987.7,449.7 1988.6,442.0 1990.1,438.7C1991.6,435.5 1994.7,434.1 1996.3,434.7C1997.9,435.3 1998.5,439.6 1999.7,442.5C2000.9,445.3 2003.5,448.3 2003.7,451.7C2003.9,455.1 2001.8,460.6 2000.7,462.7C1999.6,464.7 1999.4,463.6 1997.3,464.0Z"/><path d="M1953.9,436.4C1957.4,430.7 1960.6,420.0 1963.3,416.8C1965.9,413.6 1967.6,413.9 1969.8,417.1C1971.9,420.2 1974.6,430.3 1976.3,435.7C1978.0,441.0 1978.7,445.2 1979.8,449.1C1980.9,453.1 1985.6,457.7 1982.7,459.4C1979.8,461.2 1967.4,459.2 1962.5,459.7C1957.6,460.3 1956.6,464.3 1953.3,462.8C1949.9,461.4 1942.1,455.4 1942.2,451.0C1942.4,446.6 1950.4,442.1 1953.9,436.4Z"/><path d="M2066.1,467.3C2062.7,466.3 2067.7,464.8 2065.1,463.4C2062.6,462.0 2050.3,460.5 2050.9,459.0C2051.6,457.5 2064.5,455.1 2069.1,454.3C2073.8,453.5 2075.6,454.2 2079.0,454.2C2082.4,454.3 2086.2,454.2 2089.7,454.8C2093.1,455.3 2099.6,455.6 2099.9,457.5C2100.2,459.4 2094.0,464.3 2091.6,466.3C2089.2,468.3 2089.7,469.3 2085.5,469.5C2081.2,469.7 2069.5,468.3 2066.1,467.3Z"/><path d="M2078.8,442.4C2079.5,444.8 2082.8,449.4 2081.2,451.8C2079.6,454.3 2072.1,455.7 2069.4,456.9C2066.7,458.2 2066.5,460.6 2065.2,459.4C2063.8,458.1 2061.9,453.4 2061.2,449.5C2060.5,445.6 2060.3,438.4 2061.0,435.9C2061.7,433.3 2063.6,436.6 2065.7,434.1C2067.7,431.7 2071.6,420.6 2073.5,421.2C2075.5,421.8 2076.3,434.1 2077.2,437.6C2078.1,441.2 2078.1,440.0 2078.8,442.4Z"/><path d="M2011.2,462.3C2013.7,459.4 2021.4,457.1 2024.1,455.3C2026.7,453.6 2025.3,450.9 2027.2,451.7C2029.0,452.5 2031.9,458.2 2035.4,460.1C2038.8,461.9 2047.0,459.9 2047.6,462.8C2048.3,465.7 2042.7,475.6 2039.2,477.5C2035.8,479.5 2030.3,475.1 2027.0,474.4C2023.6,473.6 2022.1,473.6 2019.0,473.3C2016.0,473.0 2010.2,474.6 2008.8,472.8C2007.5,471.0 2008.7,465.2 2011.2,462.3Z"/><path d="M348.1,744.2C345.9,749.4 338.3,758.0 334.2,758.8C330.2,759.7 325.3,753.0 323.8,749.2C322.2,745.5 324.2,740.4 325.0,736.3C325.8,732.3 325.0,726.3 328.7,724.9C332.4,723.6 344.1,724.8 347.3,728.0C350.6,731.2 350.3,739.1 348.1,744.2Z"/><path d="M277.5,686.7C276.6,688.1 274.8,690.6 272.1,690.8C269.3,690.9 263.5,688.9 261.1,687.7C258.8,686.6 257.0,685.0 258.0,683.8C259.0,682.7 263.8,681.1 267.0,681.0C270.2,680.8 275.4,681.8 277.1,682.8C278.9,683.7 278.3,685.4 277.5,686.7Z"/><path d="M192.0,715.9C193.5,713.0 203.5,708.7 208.4,708.6C213.3,708.6 218.1,712.9 221.6,715.6C225.1,718.4 228.4,722.7 229.4,725.1C230.4,727.5 230.4,728.9 227.9,730.2C225.4,731.5 218.9,731.4 214.5,732.9C210.0,734.4 203.7,740.4 201.2,739.3C198.7,738.1 201.0,729.9 199.5,726.0C198.0,722.1 190.6,718.8 192.0,715.9Z"/><path d="M187.9,766.2C186.2,759.7 186.5,750.6 188.4,746.1C190.2,741.6 195.9,743.7 198.8,739.0C201.7,734.4 201.7,718.1 205.8,718.2C209.9,718.4 220.4,733.1 223.2,740.0C226.0,747.0 224.1,754.9 222.6,759.9C221.1,764.9 218.1,765.9 214.1,770.0C210.1,774.2 203.1,785.6 198.7,784.9C194.4,784.3 189.6,772.7 187.9,766.2Z"/><path d="M306.3,663.7C310.5,662.7 320.2,661.4 323.7,661.9C327.1,662.3 326.5,664.7 327.0,666.4C327.6,668.0 329.0,669.9 326.9,671.8C324.7,673.7 318.5,677.6 314.1,678.0C309.6,678.4 302.8,675.9 300.1,674.3C297.5,672.6 297.3,669.6 298.4,667.9C299.4,666.1 302.1,664.8 306.3,663.7Z"/><path d="M166.8,825.5C165.9,824.2 166.8,824.2 167.4,822.8C168.1,821.4 166.0,818.1 170.7,817.0C175.4,816.0 190.1,816.4 195.4,816.5C200.7,816.6 200.3,816.6 202.5,817.7C204.7,818.8 209.9,821.4 208.7,823.0C207.5,824.6 198.9,826.0 195.1,827.3C191.3,828.7 189.4,830.6 185.8,831.2C182.1,831.7 176.3,831.4 173.2,830.5C170.0,829.5 167.8,826.8 166.8,825.5Z"/><path d="M358.7,669.1C359.1,665.2 363.1,662.8 365.9,661.7C368.8,660.6 373.5,658.9 375.8,662.4C378.1,665.9 379.9,677.8 379.9,683.0C380.0,688.2 377.0,689.2 376.1,693.7C375.2,698.2 377.2,708.4 374.7,710.2C372.2,712.1 362.9,709.2 361.1,705.0C359.2,700.8 364.1,691.3 363.7,685.3C363.3,679.3 358.3,673.0 358.7,669.1Z"/><path d="M216.3,703.7C217.6,702.7 221.9,700.8 224.3,700.7C226.6,700.6 228.7,702.3 230.5,703.2C232.3,704.1 234.0,705.0 235.2,706.0C236.5,707.1 238.3,708.5 238.1,709.3C237.8,710.1 235.8,710.8 233.7,711.0C231.6,711.1 228.3,710.3 225.5,710.3C222.8,710.4 218.8,711.9 217.2,711.3C215.7,710.7 216.3,708.1 216.1,706.8C216.0,705.5 214.9,704.7 216.3,703.7Z"/><path d="M150.0,817.3C148.8,813.6 152.9,802.6 154.0,797.5C155.2,792.4 155.5,790.3 156.8,786.9C158.1,783.5 159.2,777.4 161.7,777.1C164.3,776.8 170.8,780.3 172.2,785.2C173.6,790.1 170.8,800.1 170.3,806.5C169.9,812.8 171.0,821.2 169.5,823.3C168.0,825.5 164.4,820.6 161.2,819.6C157.9,818.6 151.2,821.0 150.0,817.3Z"/><path d="M220.0,772.2C217.7,771.5 217.8,769.9 217.2,768.6C216.5,767.3 214.3,765.6 216.0,764.4C217.8,763.2 224.6,761.8 227.6,761.6C230.6,761.4 231.5,762.1 233.8,763.1C236.0,764.2 241.4,766.4 240.9,768.0C240.5,769.7 234.5,772.4 231.0,773.0C227.5,773.7 222.3,773.0 220.0,772.2Z"/><path d="M338.5,755.0C334.4,759.6 328.6,758.5 325.9,755.6C323.3,752.7 322.9,745.9 322.7,737.6C322.4,729.2 321.9,710.5 324.4,705.5C327.0,700.6 333.8,704.2 338.0,707.9C342.3,711.7 350.0,720.2 350.1,728.1C350.1,735.9 342.5,750.5 338.5,755.0Z"/><path d="M165.4,853.6C163.0,851.6 153.7,847.9 156.6,845.8C159.4,843.8 175.2,841.8 182.5,841.4C189.8,840.9 197.6,841.5 200.3,843.1C203.0,844.7 198.9,848.4 198.5,851.2C198.1,854.0 202.4,859.0 197.9,860.1C193.4,861.2 176.8,858.9 171.4,857.8C165.9,856.7 167.9,855.6 165.4,853.6Z"/><path d="M226.7,819.5C225.2,822.3 224.3,823.0 221.2,823.0C218.2,823.0 210.5,820.8 208.6,819.3C206.8,817.8 208.3,816.1 210.0,814.2C211.7,812.3 215.5,809.2 218.8,807.9C222.1,806.7 228.6,804.8 229.9,806.7C231.2,808.6 228.1,816.8 226.7,819.5Z"/><path d="M337.3,844.8C334.8,841.4 336.8,829.0 336.6,823.3C336.3,817.7 333.8,814.1 335.9,811.0C337.9,807.9 346.3,802.3 348.9,804.7C351.5,807.1 351.0,818.7 351.5,825.2C352.0,831.8 354.4,840.9 352.1,844.2C349.7,847.4 339.9,848.3 337.3,844.8Z"/><path d="M256.1,746.3C252.9,746.2 259.2,741.2 256.1,739.6C253.0,738.0 239.1,739.3 237.6,736.6C236.1,734.0 242.8,725.2 246.9,723.6C251.0,722.0 256.8,727.2 262.3,727.2C267.9,727.2 277.9,722.6 280.4,723.4C282.9,724.2 276.5,729.7 277.4,731.8C278.2,734.0 285.7,735.1 285.4,736.5C285.2,737.9 280.6,738.7 275.8,740.4C270.9,742.0 259.4,746.4 256.1,746.3Z"/><path d="M386.9,743.9C383.9,747.5 374.5,757.1 370.0,756.5C365.4,756.0 361.0,744.8 359.5,740.5C358.0,736.2 359.6,733.8 361.0,730.7C362.5,727.6 364.0,724.8 368.2,721.9C372.5,719.0 383.2,711.1 386.6,713.4C389.9,715.6 388.2,730.0 388.3,735.1C388.4,740.2 390.0,740.4 386.9,743.9Z"/><path d="M323.3,855.4C322.6,856.8 323.4,858.9 322.0,859.5C320.6,860.2 317.0,859.4 314.8,859.2C312.5,858.9 309.8,858.9 308.6,857.9C307.3,856.9 306.7,854.1 307.0,853.0C307.4,851.9 308.7,851.8 310.6,851.4C312.6,851.0 316.3,850.4 319.0,850.4C321.6,850.4 325.6,850.4 326.3,851.2C327.1,852.1 324.0,854.1 323.3,855.4Z"/><path d="M324.8,694.8C326.2,692.8 336.3,690.8 341.6,691.0C346.9,691.3 354.6,694.0 356.6,696.3C358.7,698.5 355.5,702.5 353.8,704.5C352.0,706.5 349.3,708.8 345.9,708.5C342.4,708.2 336.6,704.9 333.1,702.6C329.5,700.3 323.4,696.7 324.8,694.8Z"/><path d="M179.7,770.8C180.4,772.2 181.2,773.3 181.2,774.7C181.2,776.1 181.1,778.6 179.8,779.1C178.5,779.6 174.6,778.5 173.2,777.7C171.8,776.9 171.9,775.2 171.2,774.3C170.5,773.5 168.7,774.1 168.8,772.7C168.8,771.3 170.2,767.0 171.6,765.9C173.0,764.8 175.9,765.4 177.2,766.2C178.6,767.0 179.0,769.4 179.7,770.8Z"/><path d="M226.7,854.9C225.6,854.7 225.1,854.4 224.2,853.4C223.4,852.4 222.3,850.5 221.7,848.8C221.1,847.1 220.3,844.0 220.9,843.2C221.5,842.4 223.7,844.6 225.3,844.2C226.8,843.9 229.2,840.6 230.3,841.0C231.4,841.4 231.8,844.9 232.1,846.4C232.4,848.0 232.3,849.1 232.0,850.5C231.8,851.9 231.7,854.0 230.8,854.8C229.9,855.5 227.8,855.2 226.7,854.9Z"/><path d="M243.7,705.6C241.6,709.3 234.8,717.0 230.3,717.1C225.8,717.1 220.4,710.2 216.9,705.8C213.4,701.5 206.7,694.6 209.1,691.0C211.5,687.4 225.5,683.6 231.2,684.2C236.8,684.8 240.8,691.2 242.9,694.8C245.0,698.4 245.8,701.9 243.7,705.6Z"/><path d="M286.1,853.2C284.3,854.6 276.7,854.7 272.1,853.9C267.5,853.1 261.7,851.2 258.6,848.4C255.5,845.6 252.0,839.2 253.5,837.1C255.0,835.0 263.2,836.1 267.6,836.0C271.9,836.0 277.1,835.2 279.7,836.8C282.2,838.3 281.9,842.5 282.9,845.3C284.0,848.0 287.9,851.7 286.1,853.2Z"/><path d="M299.9,728.4C301.1,733.1 302.9,739.6 300.3,742.3C297.7,745.0 288.7,745.0 284.4,744.6C280.1,744.2 276.8,742.6 274.7,739.9C272.7,737.2 271.7,732.4 272.0,728.6C272.3,724.8 273.3,719.7 276.8,717.2C280.2,714.8 288.9,712.1 292.8,713.9C296.6,715.8 298.6,723.7 299.9,728.4Z"/><path d="M174.7,781.9C177.3,781.5 182.1,782.4 183.6,783.5C185.1,784.6 184.7,787.1 183.9,788.6C183.2,790.1 182.2,792.3 179.0,792.7C175.7,793.0 166.3,791.6 164.5,790.5C162.7,789.4 166.5,787.7 168.2,786.3C169.9,784.9 172.1,782.4 174.7,781.9Z"/><path d="M302.3,678.9C304.1,680.1 309.0,685.4 308.9,687.5C308.8,689.5 303.4,690.4 301.8,691.1C300.1,691.8 301.6,691.5 299.1,691.6C296.5,691.8 288.4,692.7 286.5,692.0C284.6,691.3 287.3,689.3 287.6,687.3C288.0,685.4 287.1,681.5 288.7,680.4C290.4,679.2 295.3,680.6 297.5,680.4C299.8,680.2 300.4,677.7 302.3,678.9Z"/><path d="M240.5,694.3C239.8,688.7 240.6,684.2 243.4,680.1C246.2,675.9 251.1,669.5 257.3,669.4C263.5,669.3 278.6,672.9 280.7,679.7C282.7,686.5 275.3,704.8 269.8,710.4C264.3,716.0 252.6,716.1 247.7,713.4C242.8,710.7 241.2,699.8 240.5,694.3Z"/><path d="M290.7,684.4C286.1,686.4 283.8,692.4 277.9,692.7C271.9,693.1 259.6,690.0 255.1,686.5C250.6,683.0 250.6,677.1 250.8,671.9C251.1,666.6 253.1,657.6 256.6,655.0C260.1,652.4 266.3,655.5 271.8,656.1C277.3,656.7 285.9,657.6 289.5,658.6C293.0,659.6 290.5,658.6 293.2,662.3C295.8,665.9 305.9,676.8 305.5,680.5C305.1,684.2 295.3,682.3 290.7,684.4Z"/><path d="M546.1,715.2C547.8,718.7 540.8,725.0 537.5,728.8C534.2,732.6 530.3,738.6 526.1,738.0C522.0,737.3 515.9,729.8 512.5,724.9C509.1,720.1 503.3,712.1 505.8,709.2C508.3,706.3 520.6,706.6 527.3,707.6C534.0,708.6 544.4,711.6 546.1,715.2Z"/><path d="M603.9,719.1C606.3,715.3 613.3,709.2 619.8,707.9C626.3,706.5 638.3,707.8 642.8,711.1C647.4,714.4 650.0,722.9 647.4,727.6C644.8,732.4 634.4,738.9 627.4,739.5C620.3,740.1 608.9,734.5 605.0,731.1C601.1,727.7 601.4,723.0 603.9,719.1Z"/><path d="M425.0,704.0C422.5,701.1 425.2,692.0 429.6,689.1C434.0,686.2 444.3,686.5 451.3,686.8C458.3,687.1 469.1,688.8 471.7,690.8C474.2,692.7 471.1,695.7 466.5,698.4C462.0,701.1 451.3,705.9 444.4,706.9C437.5,707.8 427.4,707.0 425.0,704.0Z"/><path d="M651.3,696.5C649.5,696.7 648.1,695.6 646.9,694.7C645.8,693.8 644.9,692.2 644.4,690.9C644.0,689.7 644.2,688.9 644.3,687.1C644.4,685.2 643.9,681.0 645.1,679.7C646.4,678.4 650.0,679.0 651.7,679.4C653.4,679.7 654.3,680.7 655.2,681.7C656.2,682.8 656.9,683.7 657.3,685.7C657.8,687.6 658.9,691.8 657.9,693.6C656.9,695.5 653.1,696.3 651.3,696.5Z"/><path d="M515.3,858.7C514.2,860.8 507.6,861.4 505.3,862.2C503.1,862.9 503.6,862.7 501.7,863.1C499.9,863.5 496.8,865.2 494.0,864.5C491.3,863.8 485.2,860.9 485.2,858.8C485.2,856.8 491.4,854.0 493.9,852.2C496.3,850.4 498.1,848.6 499.7,848.0C501.3,847.5 501.7,848.5 503.7,848.8C505.7,849.0 509.9,847.8 511.8,849.5C513.8,851.1 516.3,856.6 515.3,858.7Z"/><path d="M484.2,655.5C486.6,652.5 490.8,643.3 494.5,644.2C498.2,645.1 504.2,656.1 506.3,660.9C508.5,665.8 508.0,669.7 507.5,673.4C507.0,677.1 506.2,680.1 503.4,683.1C500.6,686.0 493.7,691.6 490.4,691.1C487.1,690.6 485.2,684.8 483.4,680.0C481.7,675.3 479.8,666.7 479.9,662.6C480.0,658.5 481.8,658.6 484.2,655.5Z"/><path d="M500.3,775.2C495.9,773.1 488.5,768.5 486.4,764.7C484.3,760.8 485.1,754.5 487.6,752.1C490.0,749.7 496.5,750.6 501.1,750.4C505.7,750.1 512.4,748.4 515.2,750.7C517.9,753.0 518.2,759.8 517.7,764.2C517.3,768.6 515.3,775.3 512.4,777.1C509.4,778.9 504.6,777.3 500.3,775.2Z"/><path d="M447.5,772.8C449.0,772.0 453.3,772.5 455.6,772.5C457.9,772.5 459.2,772.7 461.2,772.9C463.3,773.0 466.6,772.5 467.8,773.5C469.1,774.4 468.3,776.9 468.7,778.3C469.1,779.7 472.2,780.9 470.3,782.0C468.5,783.1 460.9,785.3 457.8,785.1C454.7,784.8 453.7,781.8 451.8,780.5C449.8,779.3 446.9,778.7 446.2,777.4C445.5,776.1 445.9,773.6 447.5,772.8Z"/><path d="M395.9,683.5C397.8,681.2 401.6,681.2 405.7,682.2C409.8,683.2 418.6,686.5 420.6,689.3C422.5,692.0 419.2,696.3 417.2,698.9C415.3,701.5 412.1,703.0 408.6,704.8C405.1,706.5 398.5,710.7 396.1,709.2C393.7,707.8 394.1,700.3 394.1,696.0C394.1,691.7 394.0,685.8 395.9,683.5Z"/><path d="M449.6,800.4C450.9,805.1 449.2,811.2 446.0,815.4C442.8,819.7 435.4,825.8 430.4,826.1C425.5,826.3 418.6,821.5 416.2,817.0C413.7,812.5 413.6,805.4 415.9,799.1C418.2,792.8 426.3,781.2 430.0,779.1C433.7,777.1 434.9,783.3 438.1,786.8C441.4,790.4 448.3,795.6 449.6,800.4Z"/><path d="M621.9,697.3C618.8,700.2 616.9,705.3 614.0,706.8C611.1,708.3 608.4,706.9 604.3,706.3C600.2,705.7 593.1,704.5 589.4,703.0C585.7,701.4 582.0,699.7 582.1,696.9C582.1,694.1 585.6,688.5 589.6,686.2C593.6,684.0 598.7,682.7 605.8,683.3C613.0,683.8 629.8,687.1 632.5,689.4C635.1,691.7 624.9,694.4 621.9,697.3Z"/><path d="M621.1,816.3C621.3,813.2 626.2,808.0 629.1,804.5C632.0,801.0 636.1,795.9 638.5,795.2C640.8,794.4 641.8,797.1 643.0,800.1C644.2,803.0 646.7,809.4 645.6,813.0C644.6,816.7 639.4,820.3 636.5,822.0C633.7,823.7 630.9,824.3 628.4,823.3C625.8,822.4 621.0,819.5 621.1,816.3Z"/><path d="M567.5,736.7C564.9,736.9 562.9,737.4 560.6,737.1C558.3,736.7 554.9,735.8 553.7,734.7C552.5,733.6 553.7,732.1 553.4,730.5C553.1,728.8 550.9,725.5 551.9,724.8C552.9,724.1 556.4,726.0 559.4,726.4C562.5,726.7 567.9,726.0 570.1,726.9C572.2,727.9 571.3,730.4 572.4,731.8C573.4,733.3 577.3,735.0 576.5,735.8C575.7,736.6 570.2,736.5 567.5,736.7Z"/><path d="M647.8,844.7C644.8,846.5 640.0,846.3 637.3,844.7C634.5,843.2 631.0,838.4 631.4,835.4C631.7,832.5 636.8,829.6 639.3,827.2C641.8,824.9 643.3,821.1 646.2,821.3C649.2,821.4 655.4,826.0 657.0,828.1C658.6,830.1 657.2,830.8 655.7,833.5C654.2,836.3 650.9,842.8 647.8,844.7Z"/><path d="M458.1,778.1C457.3,776.6 457.8,774.5 458.9,772.1C460.1,769.7 460.0,764.7 464.8,763.6C469.6,762.6 480.8,764.7 487.7,765.9C494.7,767.1 505.7,769.0 506.5,771.0C507.4,773.0 495.0,775.5 492.8,777.9C490.6,780.3 495.7,784.7 493.4,785.4C491.0,786.1 483.6,782.6 478.6,781.9C473.6,781.3 466.7,782.0 463.2,781.4C459.8,780.7 458.8,779.7 458.1,778.1Z"/><path d="M595.5,705.4C593.2,702.5 593.1,697.4 595.6,694.6C598.2,691.8 606.3,689.4 610.8,688.4C615.4,687.4 621.2,685.7 623.0,688.6C624.8,691.5 624.0,701.8 621.7,705.6C619.4,709.5 613.8,711.8 609.4,711.8C605.1,711.7 597.8,708.2 595.5,705.4Z"/><path d="M482.3,786.9C482.9,783.3 496.6,781.0 503.7,779.8C510.8,778.6 519.6,777.7 525.1,779.9C530.6,782.1 537.1,788.2 536.7,792.8C536.2,797.3 528.3,805.9 522.2,807.4C516.0,808.9 506.5,805.1 499.8,801.7C493.2,798.3 481.6,790.6 482.3,786.9Z"/><path d="M192.7,977.3C198.9,978.3 208.9,985.2 211.9,989.3C214.8,993.5 213.0,999.0 210.4,1002.2C207.8,1005.4 201.5,1007.1 196.4,1008.5C191.2,1009.9 184.0,1011.7 179.5,1010.7C175.1,1009.6 173.0,1005.0 169.8,1002.3C166.5,999.5 159.2,997.5 160.0,994.4C160.7,991.3 168.9,986.4 174.4,983.5C179.8,980.7 186.4,976.3 192.7,977.3Z"/><path d="M318.4,1047.3C314.9,1048.0 311.6,1050.2 308.0,1050.1C304.4,1049.9 299.2,1048.1 296.7,1046.2C294.3,1044.4 291.5,1040.1 293.2,1038.9C294.9,1037.6 302.9,1038.7 306.8,1038.7C310.6,1038.7 313.8,1038.7 316.2,1038.9C318.6,1039.2 319.1,1039.0 321.2,1040.3C323.3,1041.5 329.3,1045.1 328.8,1046.3C328.3,1047.5 321.8,1046.7 318.4,1047.3Z"/><path d="M221.8,1037.0C221.8,1034.3 224.7,1032.7 226.2,1031.6C227.7,1030.4 229.8,1028.8 230.9,1030.2C232.1,1031.6 233.3,1037.2 233.4,1039.9C233.4,1042.7 232.3,1045.2 231.1,1046.5C229.9,1047.8 227.8,1049.2 226.3,1047.7C224.7,1046.1 221.8,1039.7 221.8,1037.0Z"/><path d="M366.6,964.9C370.0,965.8 371.8,968.9 371.8,970.2C371.8,971.5 367.8,971.1 366.5,972.6C365.2,974.1 367.4,978.4 364.2,979.2C361.0,980.1 351.3,978.6 347.4,977.5C343.4,976.5 343.4,974.7 340.5,973.0C337.7,971.3 330.5,969.4 330.4,967.4C330.3,965.5 336.6,961.9 340.0,961.4C343.5,960.9 346.8,963.8 351.2,964.4C355.6,965.0 363.1,963.9 366.6,964.9Z"/><path d="M309.2,925.3C312.4,923.7 320.7,924.6 326.8,925.7C332.9,926.9 342.4,930.1 345.8,932.0C349.3,933.8 347.9,934.3 347.4,936.9C346.9,939.4 347.0,945.6 342.7,947.2C338.4,948.9 328.4,947.5 321.8,946.9C315.2,946.3 305.3,945.6 302.9,943.6C300.6,941.6 306.5,938.1 307.6,935.0C308.6,931.9 306.0,926.8 309.2,925.3Z"/><path d="M364.8,985.3C366.7,984.0 371.4,982.4 374.0,982.7C376.6,983.0 380.1,985.2 380.5,987.1C381.0,989.1 377.7,992.4 376.7,994.5C375.6,996.5 376.0,999.3 374.2,999.5C372.4,999.7 367.9,997.0 366.0,995.5C364.1,994.0 363.0,992.1 362.8,990.4C362.6,988.7 362.9,986.6 364.8,985.3Z"/><path d="M214.1,899.5C216.8,899.3 220.8,899.8 222.6,901.0C224.4,902.2 225.3,905.2 224.7,906.7C224.2,908.1 221.6,909.7 219.3,909.7C217.0,909.7 213.1,907.6 211.1,906.7C209.0,905.9 207.8,905.5 207.0,904.8C206.3,904.0 205.3,903.2 206.5,902.3C207.7,901.4 211.4,899.8 214.1,899.5Z"/><path d="M404.6,852.7C408.2,854.6 412.5,862.1 411.0,865.1C409.6,868.2 400.0,868.2 396.0,870.8C391.9,873.4 390.7,879.2 386.7,880.8C382.7,882.4 375.1,882.0 372.0,880.3C368.8,878.6 370.2,874.6 367.8,870.6C365.5,866.6 358.3,860.1 358.1,856.2C357.8,852.2 360.9,847.5 366.1,847.1C371.4,846.7 382.9,852.9 389.3,853.9C395.7,854.8 400.9,850.8 404.6,852.7Z"/><path d="M174.4,985.4C171.5,985.6 167.7,986.6 165.8,985.4C164.0,984.2 163.3,980.1 163.3,978.4C163.3,976.6 164.4,976.1 166.0,974.8C167.5,973.6 170.2,970.8 172.6,971.0C175.0,971.2 178.7,974.8 180.5,976.0C182.4,977.2 183.1,976.9 183.6,978.2C184.0,979.6 184.8,982.7 183.3,983.9C181.8,985.0 177.3,985.1 174.4,985.4Z"/><path d="M392.3,995.3C392.5,998.9 393.3,1002.7 392.1,1006.1C390.9,1009.5 388.1,1014.7 385.1,1015.6C382.1,1016.4 376.0,1014.3 374.3,1011.1C372.5,1007.9 373.7,1001.3 374.6,996.2C375.5,991.1 377.1,982.3 379.8,980.3C382.5,978.3 388.8,981.8 390.9,984.3C393.0,986.8 392.1,991.6 392.3,995.3Z"/><path d="M238.9,860.7C240.1,862.7 242.5,863.2 241.2,866.9C239.9,870.6 233.7,881.1 231.1,883.0C228.6,884.8 228.5,879.7 225.8,878.2C223.2,876.7 217.5,876.2 215.3,874.1C213.2,872.0 212.3,869.1 213.0,865.7C213.7,862.3 217.3,857.2 219.4,853.7C221.6,850.2 223.5,844.5 226.0,844.7C228.4,844.9 231.8,852.2 234.0,854.9C236.1,857.6 237.7,858.7 238.9,860.7Z"/><path d="M334.0,882.3C337.2,878.7 357.3,869.4 364.4,869.7C371.5,870.0 372.2,880.1 376.5,884.4C380.8,888.6 393.2,891.8 390.0,895.0C386.7,898.2 364.5,904.2 357.1,903.6C349.6,903.0 349.2,895.0 345.3,891.4C341.5,887.8 330.8,885.9 334.0,882.3Z"/><path d="M240.4,986.3C238.5,991.0 235.7,1000.0 230.4,1000.7C225.0,1001.5 213.1,993.6 208.6,991.0C204.0,988.5 203.5,988.5 202.9,985.7C202.2,982.9 203.8,978.6 204.5,974.4C205.3,970.2 202.7,962.6 207.3,960.3C211.9,958.1 226.2,958.8 232.1,960.8C237.9,962.8 240.9,968.2 242.3,972.5C243.7,976.7 242.4,981.6 240.4,986.3Z"/><path d="M221.2,866.8C225.5,866.8 227.6,868.9 230.7,871.8C233.8,874.8 242.5,882.0 240.0,884.5C237.5,887.0 222.3,887.1 215.6,886.6C209.0,886.1 201.9,883.9 200.1,881.4C198.3,879.0 201.4,874.5 204.9,872.1C208.4,869.7 216.9,866.9 221.2,866.8Z"/><path d="M305.5,1011.7C308.8,1015.9 312.6,1025.7 312.0,1032.4C311.3,1039.0 304.8,1047.7 301.5,1051.5C298.2,1055.4 293.5,1058.9 292.0,1055.4C290.4,1052.0 292.1,1038.9 292.1,1030.9C292.1,1022.8 289.9,1010.4 292.1,1007.2C294.4,1004.0 302.2,1007.6 305.5,1011.7Z"/><path d="M211.5,1024.5C214.6,1024.3 220.8,1026.6 223.8,1027.5C226.8,1028.4 228.6,1028.9 229.4,1029.9C230.2,1031.0 231.4,1032.7 228.6,1033.7C225.8,1034.7 215.7,1035.8 212.6,1035.7C209.6,1035.5 211.3,1033.8 210.1,1032.7C208.8,1031.6 205.0,1030.4 205.3,1029.0C205.5,1027.7 208.4,1024.8 211.5,1024.5Z"/><path d="M264.6,1064.1C267.1,1064.6 271.1,1066.2 271.8,1067.8C272.4,1069.4 269.8,1072.1 268.7,1073.8C267.5,1075.6 266.3,1077.9 264.9,1078.3C263.5,1078.7 262.2,1077.7 260.3,1076.1C258.3,1074.6 253.7,1070.8 253.1,1069.0C252.5,1067.1 254.7,1065.9 256.6,1065.1C258.5,1064.3 262.1,1063.7 264.6,1064.1Z"/><path d="M388.0,931.3C390.2,928.6 395.9,921.0 399.8,921.1C403.8,921.3 410.2,929.2 411.8,932.2C413.5,935.2 410.8,935.9 409.6,939.1C408.4,942.3 407.4,949.4 404.8,951.4C402.2,953.5 397.1,953.6 394.2,951.2C391.2,948.8 388.0,940.4 387.0,937.1C385.9,933.8 385.9,933.9 388.0,931.3Z"/><path d="M264.9,1012.4C259.8,1015.1 258.2,1019.4 254.3,1016.6C250.5,1013.8 241.9,1002.5 241.6,995.5C241.3,988.5 249.0,976.9 252.5,974.5C256.0,972.1 258.5,980.0 262.8,981.3C267.2,982.5 274.8,978.9 278.4,982.0C282.1,985.2 287.1,995.2 284.9,1000.2C282.6,1005.3 270.0,1009.7 264.9,1012.4Z"/><path d="M200.2,1054.5C198.5,1050.7 197.0,1048.3 195.3,1043.8C193.5,1039.4 189.1,1032.1 189.9,1027.8C190.7,1023.5 197.1,1018.1 200.2,1018.1C203.2,1018.1 206.2,1025.3 208.2,1027.7C210.2,1030.2 209.8,1030.4 212.3,1032.8C214.9,1035.3 221.9,1039.2 223.5,1042.4C225.2,1045.6 225.2,1047.9 222.2,1051.9C219.1,1056.0 209.0,1066.2 205.4,1066.6C201.7,1067.0 201.8,1058.3 200.2,1054.5Z"/><path d="M260.7,1033.0C266.4,1035.8 276.7,1039.0 273.5,1042.2C270.3,1045.4 249.2,1052.0 241.5,1052.3C233.8,1052.5 230.0,1047.8 227.3,1043.7C224.6,1039.6 223.4,1030.6 225.4,1027.5C227.3,1024.4 233.2,1024.3 239.0,1025.2C244.9,1026.1 254.9,1030.2 260.7,1033.0Z"/><path d="M173.7,1054.1C176.0,1056.6 179.2,1055.2 180.2,1058.9C181.3,1062.5 180.9,1073.3 180.1,1076.1C179.2,1078.9 176.4,1073.2 175.3,1075.8C174.2,1078.4 174.8,1091.2 173.2,1091.8C171.7,1092.4 167.8,1082.4 166.1,1079.4C164.4,1076.3 163.1,1076.5 163.1,1073.4C163.1,1070.3 165.5,1065.6 166.1,1060.7C166.7,1055.9 165.6,1045.4 166.9,1044.3C168.1,1043.2 171.5,1051.7 173.7,1054.1Z"/><path d="M371.6,1030.8C372.6,1033.4 369.2,1034.4 365.2,1035.5C361.2,1036.6 353.9,1037.2 347.7,1037.4C341.5,1037.5 330.6,1038.1 327.8,1036.5C325.0,1034.9 329.5,1031.0 330.9,1027.8C332.3,1024.7 331.5,1019.0 336.2,1017.7C340.9,1016.4 353.3,1017.9 359.2,1020.1C365.1,1022.3 370.6,1028.2 371.6,1030.8Z"/><path d="M347.5,939.9C345.3,941.4 346.1,941.8 344.2,940.8C342.3,939.9 337.6,937.1 336.0,934.2C334.3,931.2 333.6,925.0 334.1,923.0C334.6,920.9 336.3,923.3 338.7,922.0C341.1,920.6 345.4,914.7 348.2,914.8C351.0,915.0 354.1,920.7 355.6,923.0C357.0,925.3 356.6,927.1 356.9,928.7C357.2,930.2 358.8,930.4 357.3,932.3C355.7,934.2 349.7,938.5 347.5,939.9Z"/><path d="M271.9,1012.7C268.2,1009.7 263.0,992.4 263.5,986.8C264.0,981.3 271.0,981.5 274.7,979.4C278.4,977.3 282.2,976.0 285.7,974.1C289.2,972.2 291.6,967.0 295.6,968.0C299.6,969.0 308.1,974.7 309.7,980.2C311.4,985.7 307.7,995.0 305.5,1001.0C303.3,1007.0 300.1,1015.7 296.8,1016.3C293.4,1017.0 289.8,1005.6 285.7,1005.0C281.5,1004.4 275.6,1015.8 271.9,1012.7Z"/><path d="M390.7,883.9C391.0,887.0 376.6,890.5 368.2,892.6C359.8,894.8 347.7,898.5 340.2,896.7C332.8,894.8 323.9,886.6 323.7,881.5C323.6,876.4 332.3,867.2 339.4,865.9C346.5,864.5 357.8,870.7 366.4,873.7C374.9,876.7 390.4,880.7 390.7,883.9Z"/><path d="M233.8,880.4C236.7,880.7 242.7,881.3 245.5,882.0C248.3,882.8 251.2,883.3 250.5,885.1C249.9,887.0 243.9,891.1 241.8,893.2C239.6,895.3 239.2,897.5 237.6,897.8C235.9,898.1 234.1,896.6 231.8,895.0C229.4,893.3 224.4,890.3 223.7,887.9C223.1,885.5 226.1,881.7 227.8,880.4C229.4,879.2 230.8,880.2 233.8,880.4Z"/><path d="M186.5,862.0C186.0,863.9 186.2,868.7 181.7,869.8C177.2,870.9 164.7,869.6 159.6,868.6C154.5,867.6 151.9,865.9 151.2,863.8C150.5,861.7 152.4,858.0 155.4,856.1C158.4,854.2 165.6,852.8 169.2,852.4C172.8,852.0 174.4,852.7 177.1,853.7C179.7,854.7 183.5,857.0 185.0,858.4C186.6,859.8 187.1,860.1 186.5,862.0Z"/><path d="M215.3,993.0C216.2,991.8 218.2,991.0 220.1,990.5C222.0,990.0 224.4,989.9 226.7,990.2C229.0,990.4 232.8,990.4 234.0,991.8C235.2,993.3 235.1,997.8 234.0,998.9C232.9,1000.0 230.3,998.8 227.1,998.7C223.9,998.5 216.9,999.0 214.9,998.1C213.0,997.1 214.4,994.3 215.3,993.0Z"/><path d="M182.3,983.2C180.6,984.5 178.1,984.5 176.4,984.0C174.7,983.5 172.8,982.1 172.1,980.2C171.3,978.2 170.5,973.5 171.8,972.3C173.0,971.2 177.1,972.8 179.6,973.3C182.0,973.9 186.0,974.0 186.4,975.7C186.9,977.3 184.0,981.8 182.3,983.2Z"/><path d="M388.0,843.0C391.7,842.6 396.3,840.5 399.1,843.9C401.9,847.3 405.3,857.1 404.9,863.6C404.4,870.0 400.1,877.6 396.6,882.5C393.0,887.4 388.4,893.4 383.5,893.1C378.6,892.8 368.9,886.0 367.3,880.7C365.6,875.4 372.1,867.2 373.8,861.5C375.4,855.9 374.8,849.7 377.2,846.6C379.5,843.5 384.4,843.5 388.0,843.0Z"/><path d="M260.8,911.3C264.2,908.2 267.9,911.4 271.6,915.5C275.2,919.7 282.4,928.8 282.5,936.1C282.7,943.4 276.1,955.9 272.7,959.3C269.3,962.8 265.7,961.2 262.0,956.9C258.4,952.7 250.9,941.5 250.7,933.9C250.4,926.2 257.3,914.3 260.8,911.3Z"/><path d="M613.1,937.1C607.7,938.2 598.0,942.2 594.5,941.1C591.0,940.0 591.6,934.0 592.0,930.4C592.4,926.9 594.5,922.1 596.9,919.7C599.3,917.3 601.4,915.3 606.4,915.9C611.3,916.4 623.2,920.1 626.7,923.2C630.2,926.4 629.7,932.7 627.4,935.0C625.1,937.3 618.6,936.1 613.1,937.1Z"/><path d="M493.7,895.5C489.4,898.6 469.2,896.9 460.1,896.3C451.0,895.6 443.0,894.6 438.9,891.5C434.9,888.4 431.8,880.5 435.9,877.4C440.0,874.4 455.3,873.2 463.5,873.2C471.7,873.2 480.3,873.6 485.4,877.3C490.4,881.0 497.9,892.3 493.7,895.5Z"/><path d="M516.8,928.6C512.7,927.0 507.1,926.4 504.5,923.4C501.9,920.4 501.8,914.1 500.9,910.7C500.1,907.3 496.1,904.2 499.4,903.2C502.8,902.1 516.5,904.1 521.2,904.4C525.8,904.8 524.6,903.3 527.3,905.3C530.1,907.4 535.7,912.5 537.7,916.7C539.7,920.8 540.8,927.5 539.3,930.3C537.9,933.1 532.9,933.7 529.2,933.4C525.4,933.2 520.9,930.3 516.8,928.6Z"/><path d="M556.0,881.1C554.6,882.6 553.2,884.3 551.6,884.0C549.9,883.8 547.3,881.4 546.3,879.6C545.3,877.8 545.6,875.0 545.5,873.3C545.4,871.6 545.1,871.7 545.7,869.2C546.3,866.8 547.9,859.1 549.1,858.3C550.4,857.5 551.9,862.8 553.3,864.5C554.7,866.2 556.5,866.6 557.7,868.3C558.9,870.1 560.6,872.8 560.3,874.9C560.1,877.0 557.5,879.6 556.0,881.1Z"/><path d="M590.8,924.7C586.2,924.9 576.5,924.3 573.7,921.8C570.8,919.3 571.6,912.8 574.0,909.7C576.3,906.6 583.9,905.3 587.8,903.2C591.8,901.0 594.6,895.7 597.7,897.0C600.8,898.3 605.8,907.0 606.4,910.9C607.0,914.9 603.8,918.4 601.2,920.7C598.6,923.0 595.4,924.6 590.8,924.7Z"/><path d="M490.8,1072.4C487.1,1072.2 480.9,1073.5 477.3,1070.0C473.6,1066.5 468.6,1054.9 469.0,1051.4C469.5,1047.8 475.7,1048.9 480.1,1048.5C484.4,1048.1 489.7,1048.6 495.0,1048.9C500.4,1049.2 508.7,1048.6 512.2,1050.0C515.7,1051.5 518.0,1054.1 515.9,1057.5C513.8,1060.9 503.6,1068.2 499.4,1070.6C495.2,1073.1 494.5,1072.5 490.8,1072.4Z"/><path d="M566.2,956.3C568.1,958.5 570.9,969.7 570.5,973.0C570.0,976.3 566.3,974.6 563.5,976.1C560.7,977.6 556.8,981.0 553.6,981.9C550.4,982.9 545.9,983.8 544.2,981.8C542.5,979.8 543.2,973.8 543.7,970.2C544.2,966.6 544.7,962.1 547.3,960.3C549.9,958.5 556.2,960.2 559.3,959.5C562.5,958.8 564.4,954.1 566.2,956.3Z"/><path d="M676.4,1029.1C679.4,1032.4 672.3,1042.0 667.5,1044.7C662.7,1047.4 653.3,1045.4 647.6,1045.3C641.8,1045.1 638.0,1046.5 633.1,1043.8C628.3,1041.2 619.7,1033.5 618.6,1029.4C617.5,1025.3 621.4,1019.8 626.5,1019.0C631.5,1018.3 640.9,1023.2 649.2,1024.9C657.5,1026.6 673.3,1025.8 676.4,1029.1Z"/><path d="M432.8,1058.7C432.4,1062.4 432.8,1068.7 431.2,1071.2C429.6,1073.6 425.7,1073.7 423.0,1073.6C420.3,1073.5 416.2,1073.0 415.0,1070.6C413.8,1068.2 415.1,1061.8 415.8,1059.3C416.4,1056.8 417.4,1056.5 418.7,1055.5C420.0,1054.5 421.1,1054.4 423.6,1053.3C426.1,1052.3 432.0,1048.3 433.6,1049.2C435.1,1050.1 433.2,1055.1 432.8,1058.7Z"/><path d="M590.9,1051.0C595.2,1053.8 599.8,1062.5 600.6,1068.5C601.4,1074.6 598.9,1084.3 595.7,1087.1C592.5,1090.0 588.0,1087.8 581.4,1085.8C574.7,1083.7 558.1,1079.6 555.8,1075.0C553.4,1070.5 564.1,1062.4 567.3,1058.5C570.5,1054.6 571.0,1052.8 574.9,1051.5C578.9,1050.3 586.6,1048.2 590.9,1051.0Z"/><path d="M462.0,1079.4C458.0,1080.6 443.6,1078.2 439.0,1075.8C434.4,1073.4 435.7,1068.8 434.5,1065.1C433.2,1061.3 431.3,1057.9 431.4,1053.4C431.6,1048.9 432.0,1039.6 435.4,1038.0C438.8,1036.4 447.1,1042.2 452.1,1043.9C457.0,1045.5 460.4,1045.5 465.0,1048.0C469.6,1050.5 479.7,1055.4 479.4,1058.9C479.2,1062.3 466.2,1065.1 463.3,1068.5C460.4,1071.9 466.1,1078.2 462.0,1079.4Z"/><path d="M617.2,1046.6C612.5,1049.2 604.5,1053.2 599.4,1053.7C594.4,1054.1 590.2,1052.0 587.0,1049.2C583.9,1046.5 581.0,1040.1 580.3,1037.2C579.7,1034.2 579.4,1033.9 583.2,1031.3C586.9,1028.8 597.9,1022.9 602.8,1022.1C607.7,1021.3 607.3,1025.2 612.8,1026.4C618.2,1027.7 633.1,1027.4 635.7,1029.4C638.2,1031.3 631.1,1035.4 628.0,1038.3C624.9,1041.2 622.0,1044.1 617.2,1046.6Z"/><path d="M487.1,903.8C484.2,906.4 473.5,909.9 468.8,910.9C464.1,911.9 461.7,911.5 458.9,909.7C456.0,908.0 452.1,902.7 451.5,900.3C450.9,897.9 452.3,896.7 455.2,895.4C458.2,894.2 464.2,892.9 469.3,892.8C474.5,892.7 483.1,893.0 486.1,894.8C489.1,896.6 489.9,901.1 487.1,903.8Z"/><path d="M542.2,892.4C545.5,894.5 545.9,897.1 545.2,899.8C544.5,902.6 540.9,906.3 537.9,908.9C534.9,911.4 530.4,915.2 527.4,915.0C524.3,914.8 523.0,910.1 519.7,907.6C516.4,905.2 507.9,903.1 507.8,900.3C507.6,897.4 515.8,892.8 518.7,890.7C521.6,888.5 521.2,887.1 525.1,887.4C529.0,887.7 538.9,890.4 542.2,892.4Z"/><path d="M435.6,991.9C437.9,988.3 442.6,984.7 451.5,983.3C460.4,981.9 481.5,982.2 489.2,983.4C496.9,984.6 500.1,987.4 497.7,990.7C495.3,994.0 484.8,1000.8 474.8,1003.2C464.8,1005.6 444.3,1006.9 437.8,1005.0C431.3,1003.1 433.3,995.6 435.6,991.9Z"/><path d="M644.3,1019.1C644.7,1021.3 646.1,1021.7 645.6,1023.9C645.2,1026.2 642.6,1030.7 641.6,1032.7C640.6,1034.8 640.7,1035.8 639.8,1036.0C638.9,1036.3 637.1,1035.9 636.3,1034.2C635.6,1032.6 635.3,1028.6 635.5,1026.0C635.6,1023.4 636.6,1021.1 637.1,1018.6C637.6,1016.0 637.2,1012.0 638.3,1010.8C639.4,1009.5 642.5,1009.9 643.5,1011.3C644.5,1012.7 644.0,1017.0 644.3,1019.1Z"/><path d="M637.2,879.8C636.3,875.8 636.6,871.7 637.4,868.1C638.2,864.6 639.8,858.8 641.8,858.3C643.8,857.8 648.2,861.4 649.3,865.0C650.5,868.5 649.7,875.0 648.6,879.5C647.4,884.1 644.5,892.3 642.6,892.3C640.7,892.3 638.1,883.8 637.2,879.8Z"/><path d="M586.5,990.7C586.8,984.1 588.4,978.7 589.8,972.4C591.3,966.1 592.2,955.4 595.2,953.0C598.3,950.5 606.0,952.9 608.2,957.6C610.4,962.4 608.8,972.5 608.3,981.5C607.7,990.4 606.2,1004.1 604.7,1011.5C603.1,1018.8 602.0,1025.4 599.1,1025.5C596.3,1025.6 589.8,1017.8 587.7,1012.0C585.6,1006.2 586.1,997.3 586.5,990.7Z"/><path d="M451.4,877.1C448.8,879.7 440.7,873.9 436.4,873.9C432.1,873.9 427.6,878.8 425.4,877.3C423.2,875.8 422.5,868.6 423.3,864.9C424.0,861.1 426.1,857.9 429.7,855.0C433.3,852.1 441.0,846.8 444.7,847.4C448.4,847.9 450.8,853.3 451.9,858.3C453.0,863.2 454.0,874.5 451.4,877.1Z"/><path d="M515.3,934.9C515.5,933.3 519.4,931.7 521.9,931.4C524.4,931.1 528.0,931.9 530.0,932.9C532.1,933.8 534.1,935.3 534.1,937.1C534.1,939.0 532.4,943.2 530.2,943.8C528.0,944.4 523.3,942.4 520.9,940.9C518.4,939.5 515.1,936.4 515.3,934.9Z"/><path d="M530.7,875.4C525.6,876.2 521.3,874.4 517.1,873.9C512.9,873.4 506.8,875.8 505.3,872.6C503.7,869.3 504.6,858.8 507.9,854.2C511.1,849.6 521.2,846.7 524.7,845.1C528.2,843.5 525.1,845.2 528.9,844.6C532.6,844.0 544.6,838.9 547.1,841.3C549.6,843.8 543.6,854.5 543.7,859.1C543.7,863.8 549.6,866.6 547.5,869.3C545.3,872.0 535.7,874.6 530.7,875.4Z"/><path d="M467.3,1050.2C468.2,1048.6 469.0,1047.2 472.1,1046.5C475.2,1045.7 482.0,1045.7 485.8,1045.7C489.6,1045.7 493.0,1045.7 494.9,1046.5C496.7,1047.2 497.8,1048.9 497.1,1050.3C496.3,1051.8 492.3,1054.0 490.6,1055.3C488.9,1056.7 489.3,1058.0 487.0,1058.3C484.7,1058.7 480.2,1057.8 476.8,1057.4C473.4,1057.0 468.3,1057.1 466.7,1055.9C465.1,1054.7 466.4,1051.8 467.3,1050.2Z"/><path d="M871.2,773.5C870.4,772.7 870.9,770.0 870.6,767.4C870.4,764.8 869.1,759.5 869.5,757.9C869.9,756.3 872.2,758.8 873.1,757.7C874.0,756.6 874.1,752.1 875.1,751.2C876.1,750.4 878.2,750.3 879.1,752.3C879.9,754.4 879.9,760.6 880.1,763.4C880.2,766.2 880.8,767.8 880.0,769.3C879.2,770.7 876.7,771.5 875.3,772.2C873.8,772.9 871.9,774.3 871.2,773.5Z"/><path d="M816.5,809.9C823.1,811.6 835.9,813.8 836.8,818.5C837.8,823.3 827.8,834.4 822.3,838.3C816.7,842.1 809.7,841.9 803.7,841.7C797.7,841.5 789.8,840.7 786.2,837.3C782.6,833.8 780.2,825.6 782.0,820.8C783.9,816.0 791.5,810.2 797.3,808.4C803.0,806.6 809.9,808.2 816.5,809.9Z"/><path d="M675.1,806.2C676.4,803.2 681.2,803.3 685.5,803.4C689.8,803.4 698.1,803.3 700.8,806.5C703.6,809.7 704.4,818.7 701.8,822.5C699.2,826.4 689.3,829.9 685.3,829.7C681.4,829.6 679.8,825.6 678.1,821.6C676.4,817.7 673.9,809.2 675.1,806.2Z"/><path d="M895.9,673.8C899.9,673.0 907.8,674.2 911.6,675.3C915.4,676.4 919.1,677.9 918.8,680.5C918.5,683.2 911.7,687.9 909.7,691.2C907.6,694.4 909.3,699.7 906.5,700.1C903.8,700.6 898.7,695.1 893.4,693.7C888.1,692.3 875.9,693.4 874.8,691.8C873.6,690.2 884.3,686.0 886.5,683.9C888.7,681.9 886.3,681.4 887.9,679.7C889.5,678.0 892.0,674.5 895.9,673.8Z"/><path d="M830.7,742.8C828.5,740.9 828.6,733.0 828.0,728.8C827.4,724.6 825.8,719.8 827.2,717.7C828.6,715.5 832.4,715.3 836.4,715.9C840.4,716.6 847.5,719.4 851.2,721.6C854.9,723.9 858.9,727.5 858.8,729.5C858.6,731.4 853.0,731.7 850.0,733.4C847.1,735.2 844.0,738.4 840.8,740.0C837.5,741.6 832.8,744.7 830.7,742.8Z"/><path d="M782.4,792.3C783.3,793.3 784.1,795.2 783.6,796.8C783.2,798.4 781.8,800.9 779.7,802.0C777.6,803.2 774.3,803.5 771.1,803.6C767.9,803.8 763.3,803.7 760.3,803.1C757.3,802.6 753.0,801.6 753.2,800.2C753.4,798.9 759.0,797.1 761.4,794.9C763.8,792.7 764.7,787.7 767.5,787.1C770.2,786.4 775.5,790.1 778.0,790.9C780.5,791.8 781.4,791.3 782.4,792.3Z"/><path d="M822.8,668.7C823.3,665.0 827.5,660.4 829.2,659.7C830.9,659.0 831.6,660.9 832.7,664.5C833.8,668.1 836.6,677.1 836.1,681.4C835.5,685.8 831.3,690.6 829.6,690.7C827.9,690.8 826.8,685.5 825.7,681.9C824.5,678.2 822.2,672.3 822.8,668.7Z"/><path d="M795.2,652.9C795.7,653.8 795.8,654.3 795.7,656.1C795.6,657.8 795.2,661.8 794.6,663.5C794.0,665.2 792.7,667.0 791.9,666.3C791.2,665.6 791.0,661.7 790.3,659.6C789.5,657.4 787.2,654.8 787.5,653.4C787.9,651.9 791.2,650.7 792.5,650.6C793.7,650.5 794.6,652.0 795.2,652.9Z"/><path d="M668.1,807.0C665.4,805.4 670.7,802.9 672.3,799.7C674.0,796.4 674.6,788.9 678.1,787.5C681.5,786.1 687.5,790.0 693.1,791.2C698.6,792.3 709.8,792.5 711.2,794.4C712.7,796.2 705.5,799.7 701.7,802.2C697.9,804.8 694.1,808.8 688.5,809.6C682.9,810.4 670.8,808.7 668.1,807.0Z"/><path d="M705.4,794.3C706.8,797.2 706.0,808.5 705.5,815.2C705.0,821.9 703.9,831.8 702.5,834.4C701.1,837.1 699.6,831.6 697.2,831.0C694.8,830.3 690.6,832.8 688.4,830.5C686.1,828.3 683.1,822.4 683.6,817.3C684.1,812.3 689.2,803.6 691.5,800.3C693.7,797.1 694.6,798.7 696.9,797.7C699.2,796.7 703.9,791.4 705.4,794.3Z"/><path d="M677.0,666.8C681.3,668.0 690.7,677.9 692.0,682.3C693.3,686.7 687.8,690.1 684.7,693.1C681.6,696.1 677.4,700.9 673.4,700.2C669.3,699.5 661.5,693.2 660.4,689.0C659.2,684.8 663.6,678.8 666.4,675.1C669.1,671.4 672.7,665.6 677.0,666.8Z"/><path d="M692.6,885.5C690.2,887.6 685.7,877.6 682.5,873.4C679.3,869.2 674.2,867.7 673.2,860.4C672.3,853.1 674.7,835.9 676.9,829.6C679.1,823.4 682.9,822.4 686.4,823.0C689.9,823.6 696.1,826.8 697.8,833.1C699.6,839.4 697.7,852.1 696.9,860.8C696.0,869.6 695.0,883.4 692.6,885.5Z"/><path d="M837.6,822.2C839.6,824.6 838.1,830.1 835.9,833.1C833.6,836.2 828.6,840.0 823.9,840.7C819.3,841.5 810.7,840.0 808.1,837.4C805.5,834.8 805.9,828.2 808.5,825.1C811.0,822.1 818.6,819.5 823.5,819.0C828.3,818.5 835.5,819.9 837.6,822.2Z"/><path d="M831.6,825.2C830.3,821.0 831.4,809.7 832.7,803.7C833.9,797.6 837.4,789.7 839.1,789.0C840.8,788.3 842.0,794.5 843.0,799.7C843.9,804.9 845.2,815.4 844.8,820.3C844.3,825.1 842.6,827.9 840.4,828.7C838.2,829.5 832.9,829.3 831.6,825.2Z"/><path d="M913.1,653.7C911.8,656.0 911.1,657.3 907.6,658.5C904.1,659.6 894.1,661.9 892.0,660.6C890.0,659.3 895.0,654.2 895.4,650.9C895.9,647.6 892.7,642.7 894.7,640.8C896.7,639.0 903.9,639.1 907.4,639.7C910.9,640.4 914.9,642.4 915.8,644.8C916.8,647.1 914.5,651.4 913.1,653.7Z"/><path d="M697.8,646.5C703.7,648.1 710.7,651.4 712.5,654.4C714.2,657.4 710.1,661.2 708.0,664.5C706.0,667.8 705.0,672.9 700.3,674.0C695.5,675.1 684.5,672.7 679.4,671.1C674.3,669.6 673.1,668.2 669.7,664.9C666.3,661.6 657.7,654.6 658.9,651.3C660.1,648.1 670.3,646.0 676.8,645.2C683.3,644.4 691.8,645.0 697.8,646.5Z"/><path d="M777.7,838.3C772.5,840.0 766.3,837.5 759.9,835.0C753.6,832.5 740.7,828.6 739.4,823.3C738.0,818.1 745.1,805.0 751.7,803.3C758.3,801.7 772.3,809.9 778.9,813.4C785.4,817.0 791.0,820.4 790.8,824.6C790.6,828.7 782.8,836.6 777.7,838.3Z"/><path d="M1104.9,765.7C1099.9,768.1 1092.7,767.5 1087.5,767.6C1082.3,767.6 1074.7,768.5 1073.8,766.1C1072.9,763.8 1079.2,756.7 1082.3,753.3C1085.5,749.9 1086.7,745.7 1092.6,745.7C1098.5,745.7 1115.6,749.7 1117.7,753.0C1119.7,756.4 1110.0,763.3 1104.9,765.7Z"/><path d="M971.9,712.0C970.6,712.6 966.3,710.6 964.4,710.3C962.6,710.0 961.7,710.5 960.6,710.1C959.6,709.8 958.6,709.4 958.2,708.3C957.8,707.1 957.5,704.1 958.2,703.2C958.9,702.4 960.5,703.3 962.3,702.9C964.0,702.5 967.2,700.2 968.9,700.9C970.6,701.5 972.0,705.0 972.5,706.8C973.0,708.7 973.3,711.4 971.9,712.0Z"/><path d="M1175.8,679.5C1176.2,684.6 1162.9,692.6 1160.1,698.5C1157.3,704.4 1162.3,715.6 1159.0,714.9C1155.6,714.3 1143.8,699.8 1139.9,694.7C1136.0,689.5 1135.7,687.4 1135.4,683.8C1135.1,680.1 1136.4,675.0 1137.9,672.6C1139.4,670.2 1141.3,670.1 1144.5,669.3C1147.7,668.6 1152.0,666.5 1157.2,668.2C1162.4,669.9 1175.3,674.5 1175.8,679.5Z"/><path d="M1018.7,877.8C1015.5,874.3 1016.5,863.4 1015.7,857.1C1014.9,850.7 1012.4,842.4 1013.8,839.5C1015.3,836.7 1020.8,839.8 1024.4,839.9C1028.0,839.9 1032.2,837.7 1035.5,839.9C1038.8,842.0 1043.7,848.5 1044.2,852.6C1044.7,856.6 1039.9,860.2 1038.4,864.4C1036.9,868.6 1038.4,875.7 1035.1,877.9C1031.9,880.1 1021.9,881.3 1018.7,877.8Z"/><path d="M995.9,793.2C993.6,793.6 990.7,793.9 987.6,792.6C984.5,791.3 977.7,787.1 977.1,785.5C976.4,783.9 981.6,783.7 983.7,782.7C985.8,781.7 987.2,779.8 989.7,779.3C992.1,778.8 994.7,779.3 998.1,779.7C1001.6,780.1 1007.7,780.0 1010.3,781.6C1013.0,783.1 1015.6,787.6 1014.1,789.1C1012.6,790.6 1004.5,789.8 1001.5,790.5C998.4,791.2 998.2,792.9 995.9,793.2Z"/><path d="M1045.8,783.3C1046.0,777.2 1053.9,760.7 1059.0,755.5C1064.1,750.3 1072.8,749.2 1076.3,752.1C1079.9,755.0 1078.6,766.4 1080.4,773.0C1082.2,779.5 1089.1,786.8 1087.1,791.6C1085.2,796.4 1073.3,801.8 1068.5,801.9C1063.6,802.0 1062.0,795.4 1058.2,792.3C1054.5,789.2 1045.7,789.4 1045.8,783.3Z"/><path d="M1140.9,834.4C1139.3,832.4 1137.3,829.1 1137.7,827.5C1138.0,825.9 1140.9,824.3 1143.0,824.5C1145.1,824.7 1148.7,827.3 1150.2,828.6C1151.6,830.0 1152.4,830.6 1151.9,832.4C1151.4,834.1 1149.0,838.8 1147.2,839.2C1145.3,839.5 1142.5,836.3 1140.9,834.4Z"/><path d="M1088.6,624.3C1091.0,626.1 1093.9,636.5 1095.5,643.5C1097.0,650.6 1098.9,660.3 1098.0,666.6C1097.0,672.8 1093.1,680.8 1089.8,681.1C1086.4,681.3 1080.5,672.7 1077.9,667.9C1075.3,663.0 1073.8,658.0 1074.3,652.1C1074.8,646.2 1078.6,637.2 1081.0,632.6C1083.4,627.9 1086.1,622.5 1088.6,624.3Z"/><path d="M1000.6,789.9C999.3,788.1 996.5,783.1 995.7,779.5C994.9,775.9 994.7,769.9 996.0,768.4C997.3,767.0 1000.9,769.2 1003.4,770.7C1005.8,772.1 1008.8,775.0 1010.5,777.0C1012.1,779.1 1014.4,780.8 1013.3,783.1C1012.2,785.3 1005.9,789.4 1003.7,790.5C1001.6,791.7 1002.0,791.8 1000.6,789.9Z"/><path d="M935.9,829.0C938.0,827.9 938.8,827.8 941.3,828.6C943.9,829.5 950.3,831.9 951.2,834.3C952.2,836.7 948.8,841.1 947.1,842.9C945.4,844.8 942.8,845.2 940.9,845.3C939.0,845.4 937.9,844.2 935.8,843.4C933.8,842.5 929.9,841.7 928.7,840.3C927.5,838.9 927.5,837.0 928.7,835.1C929.9,833.3 933.8,830.1 935.9,829.0Z"/><path d="M679.5,934.7C677.6,934.1 674.1,929.8 672.5,926.8C671.0,923.8 669.5,919.9 670.3,916.6C671.0,913.3 674.6,908.7 677.0,907.1C679.5,905.5 682.6,905.4 684.9,907.0C687.3,908.7 690.5,913.9 691.0,917.0C691.5,920.2 689.3,923.6 688.0,925.8C686.7,928.0 684.8,929.0 683.4,930.5C682.0,931.9 681.3,935.3 679.5,934.7Z"/><path d="M723.4,1003.9C725.9,1004.3 729.0,1007.2 729.7,1008.4C730.3,1009.7 727.6,1010.2 727.2,1011.4C726.7,1012.5 727.4,1014.0 726.8,1015.4C726.3,1016.7 726.2,1019.0 723.8,1019.4C721.3,1019.7 714.0,1018.5 712.0,1017.3C710.1,1016.2 711.6,1014.5 712.0,1012.6C712.4,1010.7 712.4,1007.5 714.3,1006.0C716.2,1004.6 720.8,1003.5 723.4,1003.9Z"/><path d="M776.9,856.1C779.7,856.6 785.2,853.6 787.3,857.0C789.5,860.5 790.3,872.1 790.0,876.9C789.7,881.6 787.1,881.3 785.6,885.7C784.1,890.1 782.5,900.6 780.8,903.3C779.0,905.9 777.2,905.2 775.1,901.6C773.0,898.0 770.6,887.9 768.4,881.6C766.2,875.3 761.5,868.3 761.9,863.8C762.3,859.2 768.2,855.7 770.7,854.4C773.2,853.1 774.2,855.7 776.9,856.1Z"/><path d="M755.2,969.5C753.8,973.3 744.6,972.9 737.7,975.4C730.9,978.0 719.0,985.2 714.0,984.6C709.0,984.0 709.4,975.5 707.6,971.7C705.8,967.9 701.5,964.7 703.3,961.9C705.1,959.0 711.4,956.1 718.5,954.5C725.6,952.9 739.8,950.0 745.9,952.5C752.0,955.0 756.6,965.6 755.2,969.5Z"/><path d="M899.3,1083.1C897.1,1084.1 893.2,1072.0 891.8,1066.2C890.5,1060.4 890.6,1055.6 891.0,1048.2C891.5,1040.8 892.3,1025.8 894.5,1021.8C896.7,1017.8 902.2,1020.9 904.2,1024.4C906.2,1027.8 906.4,1036.4 906.6,1042.4C906.7,1048.4 906.3,1053.5 905.1,1060.2C903.9,1067.0 901.5,1082.1 899.3,1083.1Z"/><path d="M701.2,1022.7C701.1,1021.0 701.9,1019.0 702.9,1017.3C704.0,1015.6 705.9,1012.7 707.5,1012.5C709.0,1012.3 710.9,1014.8 712.4,1016.0C713.8,1017.2 714.9,1018.7 716.1,1019.7C717.3,1020.7 719.9,1020.8 719.7,1022.2C719.5,1023.6 716.9,1027.3 715.1,1028.1C713.4,1028.8 711.2,1026.9 709.2,1026.8C707.2,1026.7 704.4,1028.0 703.1,1027.3C701.8,1026.6 701.2,1024.3 701.2,1022.7Z"/><path d="M849.6,864.8C855.4,865.1 857.1,870.8 858.8,873.0C860.6,875.1 858.4,874.8 860.0,877.8C861.7,880.9 869.7,886.9 868.5,891.0C867.4,895.2 857.1,901.3 853.0,902.7C848.9,904.2 848.0,901.1 843.9,899.7C839.7,898.4 832.1,896.8 827.9,894.4C823.7,892.0 819.3,889.4 818.6,885.5C818.0,881.6 819.0,874.3 824.2,870.8C829.3,867.4 843.8,864.4 849.6,864.8Z"/><path d="M747.5,952.0C749.5,950.7 756.1,958.2 759.9,959.0C763.7,959.8 766.8,955.9 770.4,956.8C774.1,957.6 779.9,961.1 781.9,964.0C783.9,966.9 784.6,971.2 782.5,974.1C780.3,977.1 772.4,980.2 768.8,981.6C765.3,982.9 764.7,981.9 761.3,982.1C757.8,982.2 750.5,984.8 748.3,982.3C746.1,979.7 748.3,971.7 748.2,966.6C748.0,961.6 745.6,953.2 747.5,952.0Z"/><path d="M749.8,985.2C751.5,985.6 754.3,988.6 755.7,990.7C757.1,992.7 758.4,995.9 758.1,997.5C757.9,999.2 756.1,1000.1 754.4,1000.7C752.6,1001.3 750.7,1001.0 747.7,1001.0C744.7,1001.0 738.7,1002.6 736.4,1000.6C734.1,998.5 732.5,990.9 734.0,988.9C735.5,986.9 742.7,989.0 745.4,988.4C748.0,987.7 748.0,984.8 749.8,985.2Z"/><path d="M872.6,952.9C873.4,949.2 881.3,944.4 885.6,941.4C889.9,938.3 892.8,933.4 898.4,934.4C904.0,935.3 915.0,943.4 919.1,946.8C923.1,950.1 923.5,951.6 923.0,954.5C922.5,957.3 921.1,961.9 916.2,963.9C911.2,966.0 899.2,966.9 893.3,966.9C887.4,966.8 884.1,965.9 880.7,963.6C877.2,961.2 871.8,956.6 872.6,952.9Z"/><path d="M838.9,861.6C841.3,859.5 844.6,860.6 848.6,861.4C852.5,862.1 859.7,862.8 862.6,866.1C865.5,869.5 865.6,877.4 865.9,881.6C866.1,885.8 866.5,888.0 864.1,891.5C861.7,895.0 855.1,901.3 851.6,902.4C848.0,903.4 845.4,900.3 842.8,897.8C840.1,895.3 837.1,891.6 835.7,887.6C834.2,883.7 833.5,878.3 834.0,873.9C834.6,869.6 836.5,863.7 838.9,861.6Z"/><path d="M806.7,888.4C810.1,888.8 813.0,888.0 816.2,889.2C819.4,890.4 826.5,892.8 825.7,895.6C824.8,898.3 815.2,904.4 811.1,905.9C807.0,907.3 805.5,904.2 801.1,904.4C796.7,904.6 787.0,907.9 784.7,907.1C782.3,906.4 787.2,902.5 787.1,899.8C786.9,897.0 782.4,892.9 783.8,890.7C785.2,888.5 791.8,886.9 795.6,886.5C799.4,886.2 803.3,887.9 806.7,888.4Z"/><path d="M834.6,929.5C832.4,925.4 839.3,919.7 847.0,916.3C854.7,912.9 871.1,909.2 881.0,909.0C890.9,908.9 904.8,911.1 906.5,915.2C908.2,919.2 898.9,928.9 891.2,933.1C883.5,937.4 870.0,941.3 860.6,940.7C851.1,940.1 836.9,933.5 834.6,929.5Z"/><path d="M861.5,996.5C857.4,998.7 847.8,999.0 838.3,999.0C828.9,999.1 808.5,998.9 804.9,996.8C801.4,994.7 811.5,990.1 817.1,986.5C822.7,982.9 830.9,975.3 838.5,975.1C846.1,975.0 858.9,982.3 862.8,985.8C866.6,989.4 865.5,994.3 861.5,996.5Z"/><path d="M683.8,1036.0C683.8,1039.6 676.1,1049.5 669.0,1052.8C661.8,1056.1 647.5,1056.5 640.7,1056.0C633.9,1055.4 631.0,1053.7 628.2,1049.3C625.4,1044.9 619.2,1033.6 623.9,1029.3C628.6,1025.1 649.0,1023.4 656.5,1023.7C663.9,1024.0 664.3,1029.1 668.9,1031.1C673.4,1033.2 683.7,1032.4 683.8,1036.0Z"/><path d="M1113.0,952.1C1110.2,955.9 1104.9,958.0 1100.1,960.5C1095.2,962.9 1091.0,967.5 1083.7,966.8C1076.4,966.1 1057.1,960.1 1056.5,956.2C1056.0,952.4 1070.4,946.9 1080.4,943.9C1090.5,940.8 1111.5,936.6 1116.9,938.0C1122.3,939.3 1115.8,948.4 1113.0,952.1Z"/><path d="M1141.2,1014.0C1145.7,1012.7 1152.5,1014.3 1155.7,1015.6C1158.8,1017.0 1156.7,1019.0 1160.0,1021.9C1163.4,1024.7 1175.3,1029.7 1176.0,1032.8C1176.6,1035.9 1167.9,1039.5 1164.0,1040.5C1160.1,1041.5 1156.8,1038.3 1152.4,1038.8C1148.0,1039.3 1141.0,1044.1 1137.7,1043.5C1134.4,1042.9 1134.0,1038.5 1132.5,1035.2C1130.9,1031.9 1127.0,1027.2 1128.5,1023.6C1129.9,1020.1 1136.6,1015.3 1141.2,1014.0Z"/><path d="M980.1,1026.9C976.1,1025.5 974.0,1022.7 975.2,1020.4C976.4,1018.1 982.2,1015.3 987.1,1013.0C992.1,1010.7 999.5,1006.7 1004.8,1006.6C1010.2,1006.6 1015.6,1010.6 1019.3,1012.6C1023.1,1014.5 1026.8,1016.6 1027.4,1018.4C1028.0,1020.3 1024.8,1021.5 1022.9,1023.7C1021.1,1025.9 1020.4,1030.7 1016.5,1031.6C1012.5,1032.4 1005.5,1029.7 999.5,1028.9C993.4,1028.1 984.2,1028.3 980.1,1026.9Z"/><path d="M908.0,909.6C908.8,906.4 924.6,899.6 929.8,898.3C934.9,897.0 934.2,900.3 938.7,901.7C943.1,903.1 953.4,904.2 956.4,906.5C959.5,908.7 955.1,912.1 957.0,915.1C958.9,918.1 971.0,922.6 967.9,924.5C964.7,926.4 945.3,927.9 938.2,926.8C931.1,925.7 930.2,920.7 925.2,917.8C920.1,915.0 907.3,912.9 908.0,909.6Z"/><path d="M992.9,997.1C994.8,996.5 996.7,1000.5 999.4,1002.6C1002.1,1004.6 1007.8,1006.8 1009.2,1009.5C1010.5,1012.2 1008.9,1015.4 1007.4,1018.8C1006.0,1022.1 1002.9,1028.8 1000.6,1029.7C998.2,1030.5 995.4,1025.7 993.6,1024.0C991.7,1022.2 990.5,1022.2 989.7,1019.2C988.8,1016.2 987.7,1009.7 988.3,1006.1C988.8,1002.4 991.1,997.6 992.9,997.1Z"/><path d="M939.5,1011.7C944.7,1012.0 954.0,1015.5 957.3,1017.6C960.5,1019.6 960.5,1021.9 959.0,1024.0C957.5,1026.0 953.6,1028.9 948.3,1029.8C942.9,1030.8 931.0,1031.0 927.1,1029.7C923.2,1028.4 925.1,1024.3 924.9,1022.0C924.6,1019.7 923.1,1017.6 925.6,1015.9C928.0,1014.2 934.2,1011.4 939.5,1011.7Z"/><path d="M988.1,1052.6C983.9,1049.9 971.7,1050.0 974.7,1047.4C977.8,1044.8 997.2,1038.4 1006.4,1037.0C1015.6,1035.5 1023.4,1036.3 1029.9,1038.7C1036.3,1041.0 1044.6,1046.9 1045.3,1051.1C1046.0,1055.2 1041.7,1061.4 1034.1,1063.5C1026.5,1065.5 1007.4,1065.2 999.7,1063.4C992.0,1061.5 992.3,1055.2 988.1,1052.6Z"/><path d="M924.4,877.6C928.4,876.8 935.6,880.1 940.3,881.5C945.0,882.8 951.5,884.4 952.6,885.7C953.8,887.0 949.0,887.5 947.2,889.4C945.5,891.3 945.1,895.7 942.2,897.2C939.3,898.8 934.4,899.6 929.7,898.6C925.1,897.6 916.7,893.5 914.5,891.5C912.2,889.4 914.6,888.5 916.3,886.2C917.9,883.9 920.4,878.3 924.4,877.6Z"/><path d="M1092.1,947.6C1093.1,951.4 1093.1,953.9 1091.1,956.3C1089.2,958.7 1084.1,961.3 1080.4,961.9C1076.8,962.4 1070.4,962.8 1069.2,959.8C1068.0,956.8 1070.5,948.2 1073.1,943.9C1075.8,939.6 1081.9,933.2 1085.0,933.9C1088.2,934.5 1091.0,943.9 1092.1,947.6Z"/><path d="M1018.6,908.9C1012.6,907.9 1004.2,907.9 1002.9,904.4C1001.6,900.8 1008.7,892.7 1010.9,887.6C1013.1,882.4 1012.9,875.0 1016.1,873.4C1019.4,871.7 1026.6,874.2 1030.3,877.6C1034.0,881.0 1036.7,888.3 1038.2,893.8C1039.6,899.2 1042.3,907.8 1039.1,910.3C1035.8,912.9 1024.7,909.9 1018.6,908.9Z"/><path d="M1124.5,878.4C1123.2,877.4 1123.8,877.4 1124.7,876.0C1125.7,874.7 1128.1,870.9 1130.1,870.3C1132.1,869.7 1134.8,871.5 1136.7,872.3C1138.6,873.1 1141.0,873.5 1141.4,875.1C1141.9,876.8 1141.1,881.0 1139.5,882.1C1138.0,883.2 1134.6,882.3 1132.1,881.7C1129.6,881.1 1125.7,879.3 1124.5,878.4Z"/><path d="M1152.3,966.0C1148.8,968.2 1141.5,966.3 1136.4,967.3C1131.4,968.3 1127.2,973.0 1121.8,972.1C1116.4,971.1 1104.8,964.5 1104.1,961.4C1103.4,958.4 1114.1,956.6 1117.6,954.0C1121.1,951.4 1121.8,947.8 1125.1,946.0C1128.4,944.2 1134.7,942.5 1137.6,943.2C1140.4,944.0 1139.0,948.7 1142.3,950.6C1145.5,952.4 1155.6,951.8 1157.3,954.3C1159.0,956.9 1155.8,963.9 1152.3,966.0Z"/><path d="M1122.1,1037.6C1118.7,1036.1 1115.5,1036.1 1114.7,1033.1C1114.0,1030.1 1114.3,1022.5 1117.6,1019.8C1121.0,1017.1 1130.9,1015.7 1134.7,1017.1C1138.5,1018.5 1140.4,1023.8 1140.5,1028.1C1140.6,1032.3 1138.2,1040.9 1135.1,1042.5C1132.0,1044.1 1125.5,1039.2 1122.1,1037.6Z"/><path d="M1009.3,1067.4C1007.8,1067.5 1005.6,1064.5 1005.2,1062.5C1004.9,1060.5 1006.2,1056.9 1007.3,1055.2C1008.3,1053.6 1009.7,1052.3 1011.5,1052.8C1013.3,1053.2 1017.7,1056.5 1018.1,1058.0C1018.5,1059.5 1015.4,1060.4 1014.0,1061.9C1012.5,1063.5 1010.7,1067.3 1009.3,1067.4Z"/><path d="M1109.5,937.4C1111.2,937.7 1112.3,937.8 1113.4,939.4C1114.6,941.0 1115.9,944.6 1116.4,946.7C1116.9,948.9 1117.3,949.5 1116.6,952.5C1115.8,955.5 1113.5,962.9 1112.1,964.7C1110.7,966.5 1110.0,963.9 1108.0,963.4C1106.1,962.9 1101.0,964.1 1100.1,961.8C1099.3,959.5 1102.3,953.4 1102.8,949.4C1103.3,945.4 1101.8,939.8 1102.9,937.8C1104.0,935.8 1107.7,937.1 1109.5,937.4Z"/><path d="M1060.7,989.4C1062.3,985.0 1065.1,979.8 1067.3,977.6C1069.5,975.4 1070.1,975.0 1073.7,976.2C1077.3,977.5 1086.1,981.2 1088.8,985.2C1091.6,989.1 1091.1,996.0 1090.1,999.8C1089.1,1003.5 1085.1,1004.1 1082.6,1007.6C1080.1,1011.2 1077.7,1020.1 1075.1,1021.1C1072.5,1022.1 1069.7,1016.4 1066.8,1013.7C1064.0,1010.9 1059.0,1008.4 1058.0,1004.4C1057.0,1000.3 1059.2,993.9 1060.7,989.4Z"/><path d="M1162.6,1012.5C1166.8,1014.5 1169.6,1022.2 1169.2,1025.2C1168.8,1028.2 1164.0,1029.1 1160.3,1030.5C1156.5,1031.9 1150.4,1035.2 1146.6,1033.6C1142.8,1032.0 1137.8,1024.3 1137.4,1020.9C1137.0,1017.5 1140.0,1014.7 1144.2,1013.3C1148.4,1011.9 1158.4,1010.5 1162.6,1012.5Z"/><path d="M1003.8,913.2C1002.0,912.9 1000.1,914.0 998.9,913.2C997.7,912.4 996.4,910.0 996.4,908.6C996.4,907.2 997.0,905.1 998.9,904.6C1000.9,904.1 1005.9,904.9 1008.2,905.5C1010.5,906.1 1012.4,907.3 1012.7,908.3C1013.0,909.3 1010.7,910.3 1010.2,911.4C1009.7,912.6 1010.7,915.1 1009.6,915.4C1008.5,915.7 1005.6,913.6 1003.8,913.2Z"/><path d="M1294.7,757.9C1291.3,759.1 1289.9,761.8 1287.6,761.6C1285.4,761.4 1282.7,758.6 1281.2,756.8C1279.6,755.0 1277.9,752.7 1278.1,750.7C1278.3,748.7 1280.8,746.5 1282.3,744.9C1283.9,743.2 1284.3,741.1 1287.2,740.9C1290.0,740.6 1296.8,742.0 1299.5,743.4C1302.3,744.7 1302.3,747.1 1303.6,749.0C1305.0,750.9 1309.2,753.1 1307.7,754.6C1306.2,756.1 1298.0,756.8 1294.7,757.9Z"/><path d="M1386.4,804.5C1389.3,802.4 1394.3,795.1 1396.6,796.2C1398.8,797.3 1398.7,805.5 1399.7,811.1C1400.8,816.6 1404.5,826.9 1402.8,829.5C1401.1,832.2 1392.9,828.0 1389.5,827.0C1386.1,826.0 1384.1,826.6 1382.4,823.5C1380.7,820.4 1378.7,811.6 1379.3,808.5C1380.0,805.3 1383.6,806.5 1386.4,804.5Z"/><path d="M1380.6,702.8C1380.1,707.4 1380.2,710.3 1379.7,713.1C1379.2,715.9 1379.0,718.7 1377.4,719.8C1375.8,720.8 1372.2,720.7 1370.1,719.3C1368.0,717.8 1365.3,714.5 1364.9,711.0C1364.5,707.5 1367.1,701.6 1367.7,698.2C1368.2,694.8 1366.9,692.6 1368.3,690.5C1369.6,688.5 1373.4,686.7 1375.9,685.8C1378.3,684.9 1382.2,682.3 1383.0,685.1C1383.8,688.0 1381.2,698.1 1380.6,702.8Z"/><path d="M1158.9,752.0C1161.3,751.5 1165.1,751.8 1166.7,753.7C1168.2,755.5 1168.9,760.5 1168.3,763.1C1167.6,765.7 1165.1,769.3 1162.9,769.3C1160.7,769.3 1156.8,765.2 1155.0,763.2C1153.2,761.1 1151.2,758.9 1151.8,757.1C1152.5,755.2 1156.4,752.6 1158.9,752.0Z"/><path d="M1415.0,686.3C1417.7,688.0 1419.5,689.1 1416.7,690.9C1414.0,692.7 1403.7,696.0 1398.7,697.1C1393.7,698.2 1390.7,697.9 1386.9,697.5C1383.1,697.1 1379.8,696.0 1375.8,694.8C1371.8,693.5 1364.9,691.6 1363.0,690.1C1361.1,688.5 1360.2,686.5 1364.3,685.2C1368.4,684.0 1381.5,683.2 1387.6,682.5C1393.6,681.7 1396.2,680.1 1400.8,680.7C1405.4,681.4 1412.4,684.7 1415.0,686.3Z"/><path d="M1204.7,639.7C1209.5,642.6 1218.1,651.2 1219.5,655.6C1220.8,660.0 1216.1,663.3 1212.9,666.0C1209.6,668.7 1204.2,672.5 1199.8,671.7C1195.4,671.0 1189.7,664.7 1186.6,661.6C1183.6,658.5 1180.7,657.1 1181.4,653.2C1182.2,649.3 1187.2,640.3 1191.1,638.1C1195.0,635.9 1200.0,636.8 1204.7,639.7Z"/><path d="M1230.7,692.3C1226.6,694.6 1219.4,697.2 1215.5,697.1C1211.5,697.0 1210.6,692.9 1207.1,691.8C1203.6,690.7 1196.9,692.0 1194.4,690.4C1192.0,688.9 1191.5,684.6 1192.3,682.6C1193.2,680.6 1196.0,679.2 1199.4,678.6C1202.9,678.1 1208.1,679.0 1213.0,679.3C1217.8,679.5 1223.9,679.4 1228.4,680.0C1233.0,680.7 1240.1,681.0 1240.5,683.0C1240.8,685.1 1234.9,689.9 1230.7,692.3Z"/><path d="M1271.0,744.5C1270.8,746.6 1264.4,750.7 1261.0,751.7C1257.6,752.6 1255.1,750.8 1250.4,750.3C1245.7,749.8 1235.0,750.7 1232.9,748.6C1230.7,746.4 1233.6,739.1 1237.5,737.2C1241.4,735.3 1252.2,737.0 1256.3,737.3C1260.4,737.5 1259.7,737.6 1262.2,738.8C1264.6,740.0 1271.2,742.4 1271.0,744.5Z"/><path d="M1294.8,729.7C1289.8,729.8 1282.4,728.6 1278.3,725.6C1274.1,722.6 1268.3,715.1 1269.8,712.0C1271.3,708.8 1281.9,706.5 1287.1,706.5C1292.3,706.5 1297.7,708.9 1301.2,712.0C1304.7,715.1 1309.3,722.1 1308.2,725.1C1307.1,728.0 1299.8,729.7 1294.8,729.7Z"/><path d="M1254.0,704.8C1251.1,707.0 1247.2,709.7 1243.6,710.6C1240.0,711.4 1233.4,712.8 1232.1,710.1C1230.9,707.4 1235.2,699.0 1236.1,694.4C1237.0,689.7 1234.7,683.8 1237.8,682.2C1241.0,680.7 1251.1,682.7 1254.9,685.2C1258.7,687.7 1261.0,693.9 1260.8,697.2C1260.7,700.4 1256.8,702.6 1254.0,704.8Z"/><path d="M1323.2,684.8C1325.2,685.9 1330.8,686.7 1330.5,687.6C1330.2,688.6 1323.9,689.6 1321.4,690.5C1319.0,691.4 1318.1,693.2 1315.6,693.0C1313.1,692.9 1308.8,690.5 1306.3,689.4C1303.8,688.3 1301.0,687.7 1300.5,686.4C1300.1,685.0 1300.6,682.2 1303.6,681.3C1306.6,680.5 1315.5,680.6 1318.7,681.2C1322.0,681.7 1321.3,683.8 1323.2,684.8Z"/><path d="M1306.8,706.7C1305.5,708.0 1299.9,709.6 1297.0,709.9C1294.0,710.2 1291.1,710.4 1289.3,708.5C1287.4,706.7 1284.4,700.3 1286.1,698.8C1287.7,697.3 1296.2,699.1 1299.2,699.6C1302.3,700.1 1303.1,700.7 1304.3,701.9C1305.6,703.0 1308.0,705.3 1306.8,706.7Z"/><path d="M1401.4,708.1C1405.8,706.3 1412.8,703.2 1415.1,705.5C1417.5,707.8 1415.8,716.5 1415.6,721.7C1415.4,726.9 1416.6,734.2 1413.7,736.5C1410.9,738.8 1403.9,736.1 1398.4,735.3C1392.9,734.6 1382.3,735.2 1380.8,732.1C1379.3,728.9 1385.8,720.2 1389.3,716.2C1392.7,712.2 1397.1,709.9 1401.4,708.1Z"/><path d="M1250.7,792.8C1248.5,788.1 1249.9,770.7 1249.2,762.8C1248.5,755.0 1245.2,752.3 1246.4,745.6C1247.7,739.0 1253.6,722.4 1257.0,722.8C1260.3,723.3 1263.7,741.2 1266.8,748.4C1270.0,755.5 1274.6,758.2 1275.9,765.7C1277.1,773.3 1276.6,789.3 1274.3,793.5C1272.0,797.7 1266.1,791.2 1262.2,791.1C1258.3,791.0 1252.9,797.5 1250.7,792.8Z"/><path d="M1323.1,751.3C1328.4,750.1 1334.8,750.5 1337.7,753.4C1340.5,756.4 1341.1,764.3 1340.1,769.2C1339.2,774.0 1335.6,779.9 1331.9,782.5C1328.1,785.2 1320.3,786.5 1317.6,785.2C1314.8,783.9 1317.1,778.9 1315.2,774.8C1313.4,770.7 1305.0,764.6 1306.3,760.6C1307.6,756.7 1317.9,752.5 1323.1,751.3Z"/><path d="M1314.6,653.1C1315.4,653.0 1315.7,652.3 1316.5,653.3C1317.3,654.2 1319.1,656.6 1319.3,658.8C1319.5,661.1 1318.0,664.4 1317.5,666.5C1317.0,668.7 1317.2,671.1 1316.2,671.7C1315.1,672.3 1312.3,671.2 1311.2,670.0C1310.1,668.8 1309.3,667.2 1309.4,664.4C1309.5,661.7 1310.8,655.4 1311.6,653.5C1312.5,651.6 1313.8,653.1 1314.6,653.1Z"/><path d="M1242.8,701.9C1237.3,701.7 1228.6,702.2 1226.2,699.3C1223.8,696.5 1224.2,687.3 1228.3,684.7C1232.4,682.1 1245.1,682.8 1250.9,683.6C1256.7,684.4 1261.7,686.5 1263.1,689.4C1264.5,692.2 1262.8,698.6 1259.4,700.7C1256.0,702.8 1248.4,702.2 1242.8,701.9Z"/><path d="M1344.9,778.9C1341.3,775.7 1344.6,772.8 1341.9,768.4C1339.1,763.9 1327.7,756.4 1328.5,752.2C1329.4,748.1 1340.7,745.1 1346.8,743.5C1352.9,741.8 1359.5,740.7 1365.1,742.4C1370.8,744.2 1379.6,749.7 1380.7,754.0C1381.7,758.2 1374.4,762.2 1371.5,767.7C1368.7,773.3 1367.9,785.3 1363.5,787.1C1359.0,789.0 1348.5,782.0 1344.9,778.9Z"/><path d="M1365.9,833.2C1365.9,831.2 1373.3,830.9 1377.3,830.2C1381.2,829.5 1385.8,828.9 1389.7,829.0C1393.5,829.1 1398.1,829.1 1400.6,830.8C1403.1,832.5 1405.5,837.4 1404.7,839.2C1403.8,841.0 1399.6,840.7 1395.4,841.6C1391.1,842.5 1382.2,844.7 1379.2,844.7C1376.2,844.7 1379.4,843.6 1377.2,841.7C1375.0,839.8 1365.9,835.1 1365.9,833.2Z"/><path d="M1157.3,788.4C1155.6,785.0 1154.1,786.1 1156.9,784.1C1159.8,782.0 1169.3,778.2 1174.3,776.1C1179.2,774.1 1183.4,770.4 1186.8,772.0C1190.2,773.5 1192.2,781.1 1194.5,785.5C1196.8,790.0 1203.5,795.4 1200.7,798.6C1197.9,801.7 1183.3,803.6 1177.6,804.6C1172.0,805.5 1170.2,807.0 1166.8,804.3C1163.4,801.6 1158.9,791.7 1157.3,788.4Z"/><path d="M1342.6,792.5C1341.7,794.5 1335.8,793.9 1332.4,795.2C1329.0,796.6 1325.6,799.8 1322.2,800.5C1318.8,801.2 1314.6,802.4 1312.1,799.2C1309.5,796.1 1306.4,786.7 1306.9,781.8C1307.4,776.9 1313.0,771.9 1315.0,769.8C1317.1,767.7 1315.3,769.0 1319.2,769.1C1323.1,769.3 1335.3,768.2 1338.4,770.6C1341.5,772.9 1337.1,779.6 1337.9,783.3C1338.6,787.0 1343.5,790.5 1342.6,792.5Z"/><path d="M1421.7,662.6C1417.2,664.9 1407.0,667.2 1401.8,666.4C1396.5,665.7 1391.0,661.5 1390.3,658.2C1389.7,654.8 1393.7,648.3 1397.8,646.4C1401.9,644.5 1409.8,645.7 1414.9,646.7C1420.0,647.7 1427.4,649.7 1428.5,652.4C1429.7,655.0 1426.1,660.3 1421.7,662.6Z"/><path d="M1470.3,699.7C1469.9,701.3 1468.8,700.8 1467.7,701.6C1466.5,702.3 1464.7,703.9 1463.3,703.9C1461.9,704.0 1459.5,703.7 1459.2,701.9C1458.9,700.1 1460.8,695.2 1461.5,693.1C1462.1,690.9 1461.8,689.1 1463.2,689.0C1464.6,688.8 1468.7,690.4 1469.8,692.2C1471.0,694.0 1470.6,698.2 1470.3,699.7Z"/><path d="M1629.6,808.7C1625.3,811.9 1621.2,803.6 1617.0,799.4C1612.8,795.3 1605.2,790.3 1604.5,783.8C1603.8,777.2 1608.4,761.9 1612.9,760.1C1617.4,758.4 1626.4,769.8 1631.4,773.2C1636.5,776.6 1643.4,774.6 1643.1,780.5C1642.8,786.5 1634.0,805.6 1629.6,808.7Z"/><path d="M1418.0,728.5C1413.3,726.0 1409.8,712.7 1409.7,706.9C1409.6,701.1 1412.9,696.6 1417.4,693.7C1421.9,690.7 1430.8,688.5 1436.7,689.0C1442.6,689.5 1450.8,693.2 1452.9,696.6C1455.0,700.0 1451.8,705.4 1449.3,709.6C1446.8,713.7 1443.1,718.4 1437.9,721.5C1432.7,724.7 1422.7,730.9 1418.0,728.5Z"/><path d="M1470.9,662.9C1469.9,664.6 1465.5,667.5 1462.6,668.4C1459.7,669.3 1456.3,668.4 1453.5,668.3C1450.6,668.3 1448.4,669.0 1445.6,668.2C1442.9,667.5 1437.3,665.2 1437.0,663.8C1436.7,662.3 1440.7,661.1 1443.9,659.5C1447.1,658.0 1452.4,654.6 1456.5,654.4C1460.5,654.1 1465.9,656.8 1468.3,658.2C1470.7,659.6 1471.8,661.2 1470.9,662.9Z"/><path d="M1527.6,825.6C1524.4,826.0 1520.1,828.9 1518.5,827.4C1517.0,825.8 1517.1,819.0 1518.3,816.4C1519.5,813.7 1523.6,811.4 1525.9,811.3C1528.2,811.3 1530.2,813.8 1532.2,816.1C1534.1,818.4 1538.4,823.6 1537.6,825.2C1536.9,826.8 1530.7,825.3 1527.6,825.6Z"/><path d="M1601.1,807.5C1607.0,808.2 1618.6,812.0 1620.2,814.3C1621.7,816.7 1613.3,819.9 1610.4,821.5C1607.5,823.2 1606.3,823.6 1602.7,824.2C1599.2,824.9 1592.3,825.8 1588.9,825.4C1585.4,825.0 1583.9,823.9 1582.0,822.0C1580.1,820.1 1576.8,816.1 1577.3,814.1C1577.8,812.1 1581.1,811.1 1585.1,810.0C1589.1,808.9 1595.3,806.8 1601.1,807.5Z"/><path d="M1595.9,766.4C1598.7,765.6 1602.5,764.4 1605.4,764.5C1608.2,764.5 1609.8,765.4 1612.8,766.5C1615.8,767.6 1623.1,769.7 1623.5,771.2C1623.8,772.8 1617.9,775.2 1615.0,776.0C1612.1,776.8 1609.8,776.1 1606.2,775.9C1602.6,775.7 1596.5,776.0 1593.5,774.9C1590.6,773.8 1588.1,770.8 1588.5,769.4C1588.9,768.0 1593.1,767.2 1595.9,766.4Z"/><path d="M1465.0,657.6C1464.6,654.7 1464.9,648.1 1465.7,644.4C1466.5,640.7 1467.4,636.7 1469.8,635.5C1472.2,634.4 1477.2,636.3 1479.9,637.4C1482.7,638.4 1484.7,638.8 1486.4,641.9C1488.1,645.0 1491.4,652.9 1490.2,655.9C1489.0,658.9 1483.2,658.9 1479.4,659.8C1475.6,660.8 1470.1,661.9 1467.7,661.5C1465.3,661.2 1465.3,660.4 1465.0,657.6Z"/><path d="M1581.7,664.3C1587.0,665.4 1590.9,669.9 1590.3,672.3C1589.6,674.7 1582.6,677.2 1577.9,678.7C1573.2,680.2 1566.2,681.6 1562.0,681.3C1557.7,681.0 1553.8,678.4 1552.5,676.8C1551.2,675.2 1553.1,673.6 1554.1,671.7C1555.1,669.8 1553.8,666.7 1558.4,665.5C1563.0,664.3 1576.4,663.1 1581.7,664.3Z"/><path d="M1454.1,708.9C1457.9,706.7 1463.8,705.7 1467.9,707.0C1472.0,708.4 1474.3,713.8 1478.5,716.9C1482.6,719.9 1491.7,722.3 1492.8,725.2C1493.9,728.0 1488.6,731.4 1485.0,733.9C1481.4,736.3 1475.0,738.0 1471.3,739.7C1467.6,741.3 1466.3,744.6 1462.8,743.8C1459.4,742.9 1453.6,738.5 1450.7,734.6C1447.7,730.6 1444.6,724.3 1445.1,720.0C1445.7,715.7 1450.3,711.0 1454.1,708.9Z"/><path d="M1573.6,761.0C1574.6,762.9 1573.5,765.9 1572.7,768.7C1571.9,771.5 1570.5,775.8 1568.9,777.8C1567.2,779.8 1565.0,780.6 1563.0,780.7C1561.1,780.8 1558.7,780.1 1557.2,778.4C1555.7,776.7 1555.3,773.5 1554.2,770.5C1553.2,767.6 1550.4,763.2 1551.1,760.9C1551.8,758.5 1555.9,757.0 1558.5,756.4C1561.2,755.8 1564.3,756.6 1566.8,757.3C1569.4,758.1 1572.7,759.1 1573.6,761.0Z"/><path d="M1449.8,653.8C1447.9,650.8 1445.2,648.8 1443.3,645.3C1441.4,641.8 1438.0,636.2 1438.2,632.7C1438.5,629.1 1440.0,625.1 1444.7,623.9C1449.4,622.7 1461.2,624.4 1466.5,625.6C1471.8,626.7 1474.3,626.9 1476.3,630.7C1478.2,634.6 1479.1,645.3 1478.1,648.8C1477.1,652.4 1474.1,649.7 1470.3,652.1C1466.4,654.5 1458.2,663.2 1454.8,663.4C1451.4,663.7 1451.7,656.8 1449.8,653.8Z"/><path d="M1273.4,1000.7C1275.1,1007.0 1276.4,1026.0 1274.3,1032.4C1272.1,1038.9 1264.7,1040.5 1260.6,1039.5C1256.6,1038.4 1254.1,1031.1 1249.9,1026.3C1245.6,1021.5 1235.6,1015.1 1235.2,1010.6C1234.8,1006.1 1243.0,1002.0 1247.7,999.3C1252.5,996.6 1259.4,994.2 1263.7,994.4C1267.9,994.6 1271.6,994.3 1273.4,1000.7Z"/><path d="M1169.3,869.8C1169.6,868.4 1172.7,868.4 1174.4,867.4C1176.1,866.3 1177.9,862.7 1179.5,863.4C1181.1,864.2 1183.6,869.4 1183.9,871.8C1184.1,874.1 1181.8,875.9 1181.0,877.4C1180.2,878.8 1180.2,879.3 1179.2,880.4C1178.2,881.4 1176.0,884.3 1174.9,883.5C1173.8,882.7 1173.5,878.1 1172.5,875.8C1171.6,873.5 1168.9,871.2 1169.3,869.8Z"/><path d="M1174.4,1053.0C1172.0,1052.7 1171.3,1047.5 1170.9,1043.2C1170.5,1038.9 1170.7,1031.6 1171.8,1027.1C1172.9,1022.6 1174.6,1017.6 1177.5,1016.3C1180.4,1015.1 1186.4,1017.6 1189.0,1019.5C1191.5,1021.4 1190.4,1025.5 1192.8,1027.6C1195.2,1029.7 1203.1,1029.4 1203.6,1032.0C1204.2,1034.6 1199.2,1041.0 1196.2,1043.2C1193.1,1045.5 1189.0,1043.9 1185.4,1045.5C1181.8,1047.2 1176.8,1053.4 1174.4,1053.0Z"/><path d="M1181.6,1050.5C1186.4,1046.5 1201.1,1046.5 1207.5,1045.7C1213.9,1044.8 1217.5,1043.0 1220.1,1045.4C1222.6,1047.7 1220.7,1055.8 1222.9,1059.7C1225.0,1063.6 1233.9,1066.3 1233.0,1068.7C1232.1,1071.2 1222.6,1072.8 1217.3,1074.3C1212.0,1075.8 1205.9,1076.6 1201.2,1077.7C1196.5,1078.8 1193.0,1082.2 1189.2,1080.9C1185.4,1079.5 1179.9,1074.6 1178.6,1069.6C1177.3,1064.5 1176.7,1054.5 1181.6,1050.5Z"/><path d="M1352.1,920.0C1350.3,923.8 1348.8,934.0 1345.6,935.6C1342.4,937.3 1337.8,932.0 1332.8,930.1C1327.9,928.1 1318.2,926.6 1315.8,924.1C1313.4,921.6 1316.7,918.1 1318.4,914.9C1320.0,911.7 1323.2,907.3 1325.8,904.9C1328.4,902.6 1331.2,900.5 1333.9,900.7C1336.6,900.8 1338.3,903.8 1342.0,905.8C1345.7,907.9 1354.3,910.6 1356.0,913.0C1357.7,915.3 1353.8,916.3 1352.1,920.0Z"/><path d="M1192.7,1057.1C1190.6,1057.0 1188.7,1056.0 1187.2,1055.3C1185.6,1054.6 1182.7,1053.9 1183.5,1053.0C1184.3,1052.1 1189.7,1050.8 1192.0,1050.1C1194.3,1049.3 1195.8,1048.1 1197.3,1048.4C1198.8,1048.6 1199.6,1050.3 1201.2,1051.4C1202.8,1052.5 1206.9,1054.4 1206.7,1055.2C1206.5,1056.0 1202.2,1056.0 1199.9,1056.4C1197.6,1056.7 1194.9,1057.3 1192.7,1057.1Z"/><path d="M1406.9,1089.3C1404.9,1095.2 1400.5,1095.0 1398.7,1092.9C1396.8,1090.8 1397.1,1083.3 1396.0,1076.6C1394.9,1069.8 1390.7,1058.2 1392.2,1052.5C1393.6,1046.7 1401.7,1041.3 1404.8,1042.2C1407.9,1043.0 1410.5,1049.6 1410.8,1057.4C1411.2,1065.3 1408.9,1083.4 1406.9,1089.3Z"/><path d="M1385.1,1072.4C1380.2,1070.6 1381.6,1062.4 1381.3,1057.8C1381.1,1053.3 1381.5,1049.8 1383.6,1045.0C1385.7,1040.2 1389.0,1031.0 1394.1,1029.0C1399.2,1027.0 1408.8,1029.0 1414.1,1032.9C1419.4,1036.7 1426.6,1046.1 1426.1,1052.0C1425.5,1057.9 1417.8,1065.0 1411.0,1068.4C1404.1,1071.8 1390.1,1074.1 1385.1,1072.4Z"/><path d="M1213.4,977.3C1219.5,976.0 1231.1,975.0 1234.4,980.9C1237.8,986.8 1237.3,1007.9 1233.5,1012.6C1229.7,1017.3 1218.9,1009.9 1211.7,1009.0C1204.5,1008.0 1192.5,1010.2 1190.2,1006.8C1187.9,1003.5 1194.0,993.8 1197.9,988.9C1201.8,983.9 1207.4,978.6 1213.4,977.3Z"/><path d="M1206.5,917.1C1206.6,918.2 1207.3,919.5 1205.5,920.2C1203.6,920.9 1198.1,921.3 1195.5,921.2C1192.9,921.0 1191.1,920.3 1190.0,919.2C1188.9,918.2 1189.6,916.6 1189.0,915.1C1188.4,913.6 1185.0,910.9 1186.4,910.3C1187.7,909.6 1194.4,910.8 1197.2,911.2C1200.0,911.5 1201.8,911.8 1203.0,912.2C1204.3,912.7 1204.3,913.0 1204.9,913.8C1205.5,914.6 1206.4,916.0 1206.5,917.1Z"/><path d="M1207.3,909.9C1207.6,914.4 1206.4,925.2 1205.1,928.5C1203.8,931.7 1202.7,930.1 1199.5,929.5C1196.4,928.9 1188.4,928.9 1186.5,924.9C1184.6,921.0 1185.0,909.7 1187.9,905.8C1190.7,901.8 1200.1,900.4 1203.3,901.1C1206.6,901.8 1207.0,905.3 1207.3,909.9Z"/><path d="M1292.7,1012.3C1290.3,1016.5 1287.5,1018.8 1285.4,1021.4C1283.2,1023.9 1280.9,1030.8 1279.6,1027.7C1278.3,1024.6 1278.4,1011.1 1277.4,1002.7C1276.3,994.4 1272.9,983.9 1273.4,977.7C1273.9,971.6 1277.1,966.2 1280.6,965.9C1284.1,965.5 1291.1,970.6 1294.3,975.7C1297.5,980.8 1299.9,990.2 1299.6,996.3C1299.3,1002.4 1295.0,1008.1 1292.7,1012.3Z"/><path d="M1115.9,966.7C1115.7,964.9 1130.1,965.3 1136.4,964.2C1142.7,963.1 1149.2,961.2 1153.7,960.1C1158.2,959.0 1156.4,956.1 1163.1,957.5C1169.9,958.9 1189.5,965.9 1194.1,968.6C1198.7,971.3 1193.0,970.4 1190.5,973.4C1188.1,976.4 1185.1,984.3 1179.2,986.5C1173.3,988.7 1161.8,988.8 1154.9,986.9C1147.9,984.9 1144.1,978.2 1137.7,974.9C1131.2,971.5 1116.1,968.5 1115.9,966.7Z"/><path d="M1229.3,956.8C1226.0,961.1 1219.3,972.8 1215.0,971.9C1210.6,971.0 1205.8,957.6 1203.3,951.7C1200.8,945.8 1199.4,941.7 1199.9,936.6C1200.5,931.6 1204.7,925.6 1206.8,921.4C1209.0,917.2 1210.5,911.9 1212.8,911.4C1215.1,910.8 1217.1,912.5 1220.7,918.3C1224.4,924.1 1233.1,939.7 1234.5,946.1C1235.9,952.5 1232.6,952.5 1229.3,956.8Z"/><path d="M1600.0,1008.9C1597.7,1009.2 1591.2,1007.4 1589.5,1005.5C1587.8,1003.7 1588.9,1000.2 1589.8,997.8C1590.8,995.5 1592.7,992.2 1595.3,991.7C1597.9,991.1 1604.0,992.7 1605.4,994.7C1606.7,996.7 1604.3,1001.3 1603.4,1003.7C1602.5,1006.1 1602.4,1008.6 1600.0,1008.9Z"/><path d="M1564.0,1027.9C1566.1,1027.4 1570.3,1029.1 1572.2,1030.0C1574.1,1030.8 1575.1,1031.8 1575.5,1033.1C1575.9,1034.4 1576.7,1036.6 1574.7,1037.6C1572.7,1038.6 1566.1,1039.9 1563.5,1039.1C1560.9,1038.4 1559.1,1034.8 1559.2,1032.9C1559.3,1031.1 1561.8,1028.4 1564.0,1027.9Z"/><path d="M1618.4,919.5C1615.7,921.9 1613.0,921.7 1609.4,915.7C1605.8,909.8 1596.4,890.4 1596.8,883.8C1597.3,877.2 1608.0,879.8 1612.1,876.2C1616.2,872.5 1619.4,857.9 1621.6,862.0C1623.9,866.2 1626.3,891.6 1625.7,901.1C1625.2,910.7 1621.2,917.0 1618.4,919.5Z"/><path d="M1528.3,941.5C1521.4,940.8 1511.2,935.5 1510.1,932.5C1508.9,929.5 1517.5,926.1 1521.4,923.5C1525.3,920.8 1526.5,917.2 1533.4,916.5C1540.4,915.8 1556.0,917.5 1563.1,919.3C1570.2,921.0 1578.0,924.1 1576.0,927.1C1574.1,930.1 1559.4,934.8 1551.4,937.2C1543.4,939.6 1535.2,942.3 1528.3,941.5Z"/><path d="M1591.1,852.7C1600.5,853.4 1617.3,853.4 1622.4,856.1C1627.5,858.9 1623.4,865.2 1621.7,869.1C1619.9,873.1 1617.9,878.9 1611.7,879.9C1605.6,880.9 1592.1,876.3 1584.8,875.2C1577.5,874.0 1575.0,874.5 1567.9,873.0C1560.8,871.4 1542.5,869.2 1542.2,865.8C1541.9,862.3 1557.8,854.2 1565.9,852.0C1574.1,849.8 1581.7,852.0 1591.1,852.7Z"/><path d="M1519.0,911.1C1517.2,906.8 1523.2,899.0 1525.8,895.1C1528.5,891.2 1532.0,887.1 1535.1,887.8C1538.2,888.5 1542.8,895.4 1544.5,899.2C1546.3,903.0 1546.7,907.0 1545.4,910.6C1544.2,914.2 1541.3,920.9 1536.9,920.9C1532.5,921.0 1520.9,915.4 1519.0,911.1Z"/><path d="M1566.4,916.9C1567.0,921.9 1566.6,928.5 1565.7,931.5C1564.9,934.5 1563.8,936.4 1561.3,934.9C1558.8,933.5 1551.5,927.1 1550.7,922.8C1550.0,918.4 1554.7,912.3 1556.6,908.7C1558.6,905.2 1560.6,900.2 1562.2,901.6C1563.8,903.0 1565.9,911.9 1566.4,916.9Z"/><path d="M1453.3,1034.2C1456.2,1035.1 1457.6,1035.8 1459.4,1037.4C1461.2,1038.9 1466.6,1042.1 1464.3,1043.5C1462.1,1044.9 1450.8,1045.1 1446.0,1045.6C1441.2,1046.1 1438.7,1047.5 1435.5,1046.6C1432.3,1045.7 1426.9,1042.1 1426.8,1040.3C1426.6,1038.4 1432.1,1037.0 1434.6,1035.6C1437.2,1034.2 1438.8,1032.2 1441.9,1031.9C1445.1,1031.7 1450.4,1033.3 1453.3,1034.2Z"/><path d="M1536.7,1010.3C1536.8,1005.7 1539.2,999.4 1541.2,996.4C1543.2,993.3 1546.2,991.9 1548.5,992.0C1550.7,992.1 1553.3,993.2 1554.7,997.0C1556.0,1000.9 1556.8,1011.6 1556.3,1015.2C1555.7,1018.7 1554.1,1017.1 1551.4,1018.6C1548.8,1020.1 1543.0,1025.5 1540.5,1024.1C1538.1,1022.7 1536.6,1014.9 1536.7,1010.3Z"/><path d="M1441.7,1053.0C1441.3,1048.5 1439.1,1051.2 1438.8,1047.5C1438.5,1043.8 1438.6,1032.8 1440.0,1030.6C1441.4,1028.4 1445.4,1032.2 1447.2,1034.2C1449.0,1036.2 1449.4,1039.9 1451.0,1042.7C1452.6,1045.5 1456.5,1047.2 1457.0,1051.1C1457.4,1055.0 1454.8,1062.3 1453.7,1066.1C1452.5,1069.8 1452.1,1072.3 1450.0,1073.7C1447.9,1075.1 1442.4,1077.9 1441.0,1074.4C1439.7,1071.0 1442.1,1057.5 1441.7,1053.0Z"/><path d="M1498.5,916.0C1497.0,914.5 1498.1,909.3 1498.5,906.4C1498.8,903.6 1499.2,899.3 1500.6,898.7C1502.0,898.2 1505.4,901.5 1507.0,903.1C1508.7,904.7 1510.4,906.2 1510.5,908.3C1510.6,910.4 1509.5,914.4 1507.5,915.7C1505.5,917.0 1500.0,917.6 1498.5,916.0Z"/><path d="M1428.0,937.2C1426.1,941.8 1416.7,946.3 1413.1,946.0C1409.5,945.7 1409.0,938.2 1406.5,935.2C1404.1,932.3 1397.0,931.0 1398.2,928.3C1399.4,925.5 1409.2,920.4 1413.7,918.7C1418.1,917.0 1422.6,915.0 1425.0,918.0C1427.4,921.1 1430.0,932.5 1428.0,937.2Z"/><path d="M1511.3,878.7C1513.6,876.0 1517.7,874.2 1521.2,873.6C1524.8,873.1 1529.3,873.5 1532.5,875.5C1535.7,877.4 1539.9,882.9 1540.6,885.4C1541.4,888.0 1540.1,889.9 1536.9,890.8C1533.6,891.8 1526.1,891.1 1521.2,890.9C1516.4,890.8 1509.4,892.0 1507.8,890.0C1506.1,888.0 1509.1,881.5 1511.3,878.7Z"/><path d="M1422.8,886.9C1423.3,889.0 1415.7,888.0 1413.7,890.1C1411.7,892.1 1413.7,898.9 1410.8,899.4C1407.9,899.9 1399.9,894.7 1396.2,893.0C1392.6,891.3 1388.6,891.8 1388.7,889.4C1388.9,886.9 1394.0,880.8 1397.1,878.1C1400.1,875.4 1404.8,873.5 1407.1,873.4C1409.5,873.3 1408.4,875.4 1411.0,877.6C1413.6,879.9 1422.4,884.9 1422.8,886.9Z"/><path d="M1608.5,897.1C1608.8,893.8 1618.7,890.4 1624.6,888.6C1630.5,886.8 1639.2,884.9 1644.1,886.4C1649.0,887.9 1652.8,894.0 1654.2,897.6C1655.5,901.1 1655.3,905.3 1652.3,907.6C1649.3,909.9 1641.1,911.2 1636.3,911.3C1631.4,911.5 1627.6,910.7 1623.0,908.3C1618.3,905.9 1608.3,900.4 1608.5,897.1Z"/><path d="M1584.9,1014.2C1585.0,1012.5 1584.9,1011.2 1586.6,1010.3C1588.3,1009.4 1592.5,1008.4 1595.0,1008.9C1597.6,1009.3 1600.1,1012.3 1601.8,1013.1C1603.5,1014.0 1604.8,1012.4 1605.1,1013.9C1605.5,1015.5 1605.3,1020.8 1603.8,1022.2C1602.4,1023.6 1598.5,1022.5 1596.4,1022.5C1594.3,1022.6 1592.9,1022.7 1591.2,1022.3C1589.5,1021.9 1587.2,1021.5 1586.1,1020.1C1585.1,1018.8 1584.8,1015.8 1584.9,1014.2Z"/><path d="M1448.9,898.9C1445.0,896.5 1438.1,893.8 1440.2,891.7C1442.3,889.5 1453.5,886.4 1461.5,886.2C1469.6,886.1 1481.5,889.2 1488.6,890.7C1495.6,892.3 1503.0,892.1 1503.9,895.4C1504.8,898.7 1499.4,908.3 1494.0,910.5C1488.6,912.7 1476.5,909.4 1471.5,908.7C1466.4,908.0 1467.5,907.9 1463.7,906.3C1459.9,904.7 1452.8,901.4 1448.9,898.9Z"/><path d="M1533.2,1025.1C1537.1,1021.7 1542.3,1019.1 1548.0,1022.7C1553.8,1026.2 1566.5,1040.6 1567.6,1046.2C1568.6,1051.8 1558.6,1052.4 1554.2,1056.2C1549.9,1060.0 1547.4,1068.1 1541.6,1068.8C1535.7,1069.5 1522.1,1064.8 1519.3,1060.5C1516.5,1056.2 1522.4,1049.2 1524.7,1043.3C1527.0,1037.4 1529.3,1028.5 1533.2,1025.1Z"/><path d="M1606.3,1007.7C1608.6,1010.9 1607.7,1014.8 1605.1,1017.5C1602.6,1020.3 1595.7,1022.8 1590.9,1024.0C1586.2,1025.2 1580.6,1027.0 1576.5,1024.8C1572.4,1022.7 1566.4,1014.6 1566.1,1011.1C1565.8,1007.6 1570.4,1005.9 1574.7,1003.8C1578.9,1001.7 1586.2,997.7 1591.5,998.4C1596.7,999.0 1604.0,1004.5 1606.3,1007.7Z"/><path d="M1519.8,900.3C1521.3,899.2 1524.8,893.3 1525.8,894.5C1526.8,895.8 1525.5,903.2 1525.7,907.6C1526.0,912.1 1527.7,918.4 1527.3,921.2C1526.9,924.1 1524.4,924.3 1523.2,924.6C1521.9,925.0 1520.7,925.3 1519.5,923.3C1518.4,921.3 1516.6,916.5 1516.2,912.8C1515.7,909.0 1516.0,903.0 1516.6,901.0C1517.2,898.9 1518.3,901.4 1519.8,900.3Z"/><path d="M1479.1,995.3C1479.7,997.5 1481.6,997.8 1481.8,1001.1C1482.0,1004.4 1481.5,1013.6 1480.3,1015.2C1479.1,1016.8 1476.1,1011.6 1474.6,1010.5C1473.2,1009.4 1472.8,1009.6 1471.6,1008.6C1470.4,1007.6 1467.6,1006.8 1467.3,1004.7C1467.0,1002.5 1469.5,999.0 1470.0,995.8C1470.6,992.6 1469.3,986.8 1470.6,985.5C1472.0,984.2 1476.8,986.2 1478.2,987.9C1479.6,989.5 1478.5,993.1 1479.1,995.3Z"/><path d="M1477.9,1030.4C1474.4,1030.1 1470.4,1028.6 1468.6,1026.1C1466.8,1023.5 1464.9,1018.5 1466.9,1015.0C1469.0,1011.5 1476.9,1005.5 1480.9,1004.9C1484.9,1004.3 1489.3,1007.4 1490.8,1011.2C1492.3,1015.0 1492.0,1024.4 1489.8,1027.6C1487.7,1030.8 1481.4,1030.7 1477.9,1030.4Z"/><path d="M1549.0,959.4C1553.4,959.7 1557.7,964.7 1563.3,967.8C1569.0,971.0 1584.1,975.7 1582.7,978.1C1581.3,980.5 1566.1,981.5 1555.1,982.3C1544.2,983.2 1522.6,985.1 1516.9,983.3C1511.2,981.5 1517.8,974.6 1521.1,971.7C1524.3,968.8 1531.9,967.9 1536.6,965.9C1541.2,963.8 1544.5,959.1 1549.0,959.4Z"/><path d="M1430.8,927.6C1431.2,928.3 1428.2,929.4 1426.8,930.0C1425.4,930.6 1424.4,930.6 1422.4,931.1C1420.4,931.6 1416.7,933.5 1414.7,932.9C1412.8,932.3 1410.4,929.0 1410.9,927.7C1411.5,926.5 1415.8,925.7 1418.1,925.3C1420.3,925.0 1422.3,925.2 1424.5,925.6C1426.6,926.0 1430.4,926.8 1430.8,927.6Z"/><path d="M1623.2,963.1C1629.5,962.4 1646.8,967.9 1656.3,969.4C1665.9,970.9 1681.5,969.9 1680.5,972.2C1679.4,974.5 1657.2,980.2 1650.0,983.1C1642.8,986.0 1643.0,989.8 1637.1,989.7C1631.3,989.6 1618.1,985.5 1615.0,982.8C1611.8,980.1 1616.7,976.9 1618.1,973.6C1619.5,970.4 1616.8,963.8 1623.2,963.1Z"/><path d="M1536.4,1045.7C1531.1,1044.2 1522.2,1043.0 1520.7,1040.2C1519.2,1037.3 1522.5,1030.2 1527.3,1028.5C1532.2,1026.8 1544.7,1028.3 1550.0,1029.9C1555.2,1031.5 1558.4,1035.0 1558.8,1038.2C1559.3,1041.4 1556.2,1047.6 1552.4,1048.9C1548.7,1050.1 1541.7,1047.1 1536.4,1045.7Z"/><path d="M1712.7,743.0C1712.8,744.9 1712.6,750.1 1711.9,751.7C1711.1,753.3 1709.5,751.7 1708.1,752.5C1706.7,753.4 1704.9,757.0 1703.6,756.8C1702.3,756.6 1701.3,753.4 1700.5,751.3C1699.6,749.3 1698.6,746.0 1698.7,744.5C1698.7,743.1 1699.4,743.3 1700.6,742.6C1701.8,742.0 1703.9,740.9 1705.7,740.5C1707.4,740.2 1709.8,740.1 1710.9,740.5C1712.1,740.9 1712.5,741.2 1712.7,743.0Z"/><path d="M1811.8,760.7C1812.6,761.6 1811.0,764.8 1810.5,766.0C1810.0,767.2 1809.9,767.0 1808.7,767.9C1807.5,768.8 1805.0,771.0 1803.4,771.4C1801.8,771.9 1800.1,771.4 1799.3,770.6C1798.5,769.9 1798.8,767.9 1798.6,766.8C1798.4,765.7 1798.3,765.2 1798.2,764.1C1798.1,762.9 1796.7,760.3 1797.9,759.8C1799.1,759.3 1802.9,760.9 1805.2,761.1C1807.6,761.2 1810.9,759.9 1811.8,760.7Z"/><path d="M1797.8,763.4C1797.0,764.8 1795.7,762.1 1794.3,760.2C1793.0,758.4 1790.6,754.9 1789.9,752.1C1789.2,749.4 1790.0,746.2 1790.4,743.5C1790.9,740.8 1790.5,736.6 1792.4,735.7C1794.3,734.9 1800.6,735.8 1801.7,738.4C1802.8,741.1 1799.7,747.4 1799.1,751.6C1798.5,755.8 1798.6,762.0 1797.8,763.4Z"/><path d="M1888.2,846.0C1892.4,844.6 1897.9,843.8 1902.0,844.3C1906.0,844.7 1911.9,846.7 1912.5,848.6C1913.0,850.4 1909.0,854.1 1905.3,855.4C1901.6,856.7 1894.9,857.1 1890.1,856.6C1885.4,856.2 1877.3,854.4 1877.0,852.6C1876.6,850.8 1884.0,847.4 1888.2,846.0Z"/><path d="M1815.5,685.9C1815.3,684.2 1816.6,684.0 1817.4,682.3C1818.1,680.6 1819.0,676.0 1820.1,675.7C1821.3,675.4 1823.0,679.4 1824.2,680.5C1825.5,681.5 1826.9,680.5 1827.6,681.9C1828.3,683.4 1829.6,687.1 1828.6,689.1C1827.5,691.1 1822.9,693.5 1821.2,694.1C1819.5,694.7 1819.4,694.1 1818.4,692.8C1817.5,691.4 1815.7,687.6 1815.5,685.9Z"/><path d="M1764.9,773.6C1768.9,776.6 1768.5,784.6 1765.5,787.6C1762.5,790.6 1752.5,790.7 1746.9,791.7C1741.3,792.7 1738.5,794.8 1731.9,793.7C1725.3,792.6 1710.4,789.1 1707.4,785.1C1704.5,781.1 1708.5,772.4 1714.2,769.8C1719.8,767.2 1733.1,769.1 1741.6,769.7C1750.0,770.4 1760.9,770.7 1764.9,773.6Z"/><path d="M1743.1,860.5C1742.5,864.6 1740.1,869.9 1737.7,870.1C1735.4,870.3 1731.2,866.8 1729.0,861.9C1726.8,857.1 1724.1,846.7 1724.5,840.7C1724.9,834.8 1728.6,825.5 1731.4,826.3C1734.2,827.1 1739.3,839.8 1741.3,845.5C1743.2,851.2 1743.7,856.4 1743.1,860.5Z"/><path d="M1686.6,708.2C1682.4,708.8 1670.4,707.7 1668.1,704.2C1665.8,700.6 1670.0,690.9 1672.6,686.9C1675.3,682.9 1680.1,680.2 1683.9,680.1C1687.7,680.0 1693.7,683.0 1695.3,686.4C1696.8,689.7 1694.7,696.6 1693.3,700.2C1691.8,703.8 1690.8,707.5 1686.6,708.2Z"/><path d="M1692.1,794.8C1694.2,792.9 1696.5,792.9 1699.2,793.7C1701.9,794.5 1707.7,796.2 1708.3,799.5C1709.0,802.8 1704.7,810.6 1703.0,813.6C1701.4,816.6 1700.6,815.7 1698.4,817.5C1696.2,819.2 1691.3,824.6 1689.9,824.2C1688.5,823.8 1690.7,818.3 1690.1,815.2C1689.6,812.0 1686.3,808.4 1686.6,805.0C1687.0,801.6 1690.0,796.7 1692.1,794.8Z"/><path d="M1869.3,710.6C1868.6,716.0 1868.2,727.0 1863.0,730.0C1857.8,732.9 1842.8,730.9 1838.2,728.4C1833.6,725.9 1837.6,719.7 1835.2,714.8C1832.9,709.8 1821.8,702.8 1824.1,698.6C1826.3,694.4 1841.6,689.9 1848.7,689.7C1855.9,689.6 1863.5,694.2 1866.9,697.7C1870.3,701.2 1869.9,705.2 1869.3,710.6Z"/><path d="M1709.5,673.2C1710.5,672.7 1711.2,670.5 1712.0,671.9C1712.7,673.3 1714.4,678.5 1714.1,681.6C1713.9,684.8 1711.9,689.5 1710.4,690.6C1709.0,691.7 1706.2,690.6 1705.5,688.0C1704.8,685.3 1705.6,677.3 1706.3,674.8C1706.9,672.3 1708.6,673.7 1709.5,673.2Z"/><path d="M1842.0,845.0C1842.8,843.9 1845.2,842.2 1846.8,842.1C1848.5,842.1 1850.9,843.4 1851.7,844.7C1852.4,846.1 1851.7,848.8 1851.5,850.2C1851.3,851.6 1851.4,852.2 1850.6,852.9C1849.8,853.7 1847.8,854.5 1846.7,854.9C1845.6,855.2 1845.2,855.1 1844.0,855.1C1842.7,855.2 1839.4,856.3 1839.1,855.2C1838.7,854.1 1841.4,850.3 1841.9,848.6C1842.4,846.9 1841.2,846.0 1842.0,845.0Z"/><path d="M1779.2,634.4C1782.6,635.2 1784.7,637.2 1786.1,640.8C1787.6,644.4 1788.4,651.3 1787.9,655.8C1787.3,660.4 1784.3,664.5 1782.8,668.2C1781.4,671.9 1781.9,677.7 1779.1,677.9C1776.3,678.2 1769.0,673.3 1766.3,669.5C1763.6,665.7 1763.2,660.6 1763.0,655.0C1762.9,649.5 1762.8,639.5 1765.5,636.0C1768.1,632.6 1775.7,633.6 1779.2,634.4Z"/><path d="M1897.6,873.9C1896.3,880.5 1892.1,883.2 1888.9,883.3C1885.7,883.3 1880.3,879.6 1878.4,874.2C1876.4,868.7 1877.4,858.7 1877.4,850.5C1877.3,842.3 1876.1,830.8 1877.9,824.9C1879.8,819.1 1885.0,815.1 1888.3,815.6C1891.6,816.1 1896.3,823.4 1897.7,828.0C1899.1,832.6 1896.7,835.6 1896.6,843.3C1896.6,850.9 1898.8,867.2 1897.6,873.9Z"/><path d="M1717.4,787.9C1723.3,790.6 1726.7,796.1 1728.0,805.7C1729.3,815.4 1728.4,840.9 1725.2,845.9C1722.0,850.9 1713.7,840.0 1709.0,835.7C1704.3,831.4 1700.0,827.6 1697.2,819.8C1694.4,812.1 1689.0,794.4 1692.4,789.0C1695.7,783.7 1711.4,785.1 1717.4,787.9Z"/><path d="M1718.6,725.2C1715.3,722.7 1712.7,719.2 1713.1,717.2C1713.5,715.1 1717.9,714.3 1720.9,713.0C1724.0,711.6 1727.7,708.3 1731.4,708.9C1735.0,709.4 1739.8,713.9 1742.9,716.4C1746.1,718.9 1751.9,721.2 1750.2,723.8C1748.5,726.4 1738.0,731.8 1732.7,732.0C1727.4,732.2 1721.8,727.7 1718.6,725.2Z"/><path d="M1807.2,813.5C1810.2,818.1 1808.9,829.3 1807.4,833.7C1806.0,838.0 1801.7,838.5 1798.4,839.5C1795.1,840.4 1791.2,840.6 1787.7,839.4C1784.1,838.2 1777.8,836.1 1777.0,832.4C1776.3,828.7 1780.9,821.7 1782.9,817.4C1785.0,813.0 1785.6,807.0 1789.6,806.4C1793.7,805.7 1804.2,809.0 1807.2,813.5Z"/><path d="M1833.5,688.2C1831.4,689.1 1827.4,689.5 1824.7,689.1C1822.1,688.7 1817.3,687.2 1817.4,685.6C1817.4,684.0 1822.2,680.8 1825.2,679.6C1828.2,678.4 1833.6,677.8 1835.6,678.6C1837.6,679.3 1837.5,682.4 1837.2,684.0C1836.8,685.6 1835.5,687.3 1833.5,688.2Z"/><path d="M1752.8,664.9C1756.3,668.6 1761.5,674.6 1760.4,679.2C1759.3,683.8 1751.9,689.4 1746.0,692.4C1740.1,695.3 1728.6,698.1 1724.7,697.0C1720.9,696.0 1723.1,690.3 1722.8,686.1C1722.5,681.9 1720.3,676.7 1723.1,671.9C1725.9,667.0 1734.6,658.2 1739.5,657.0C1744.5,655.9 1749.3,661.2 1752.8,664.9Z"/><path d="M1837.4,833.3C1843.0,834.7 1844.4,842.4 1845.2,846.1C1846.0,849.7 1845.9,851.6 1842.4,855.0C1839.0,858.4 1829.6,866.0 1824.4,866.6C1819.3,867.1 1818.4,860.7 1811.6,858.3C1804.7,855.9 1787.6,854.9 1783.4,852.4C1779.2,850.0 1781.6,846.2 1786.2,843.8C1790.9,841.3 1802.9,839.5 1811.4,837.7C1819.9,836.0 1831.8,831.9 1837.4,833.3Z"/><path d="M2122.8,808.1C2125.5,808.7 2124.6,813.2 2124.4,815.2C2124.2,817.2 2123.7,819.2 2121.7,820.2C2119.8,821.2 2115.5,822.0 2112.9,821.1C2110.4,820.3 2107.1,816.7 2106.3,815.1C2105.5,813.6 2105.4,812.9 2108.1,811.7C2110.9,810.5 2120.1,807.6 2122.8,808.1Z"/><path d="M2112.2,684.8C2114.3,683.7 2119.3,686.2 2124.0,686.6C2128.6,687.0 2136.7,686.0 2140.3,687.3C2143.8,688.7 2146.8,692.9 2145.4,694.9C2143.9,696.8 2135.4,697.9 2131.6,699.1C2127.7,700.2 2125.8,701.4 2122.4,701.7C2119.0,702.1 2113.0,702.4 2111.3,701.0C2109.5,699.6 2111.6,695.8 2111.7,693.1C2111.9,690.4 2110.2,685.9 2112.2,684.8Z"/><path d="M1898.6,643.5C1900.5,639.6 1910.4,642.1 1915.9,641.2C1921.4,640.4 1926.0,637.0 1931.8,638.4C1937.5,639.8 1949.9,646.2 1950.4,649.7C1950.8,653.1 1938.9,656.6 1934.6,658.9C1930.2,661.2 1929.1,662.4 1924.1,663.4C1919.1,664.3 1908.7,667.7 1904.4,664.4C1900.2,661.1 1896.7,647.3 1898.6,643.5Z"/><path d="M2020.8,686.0C2016.9,685.9 2010.1,689.3 2008.5,687.2C2006.9,685.2 2010.9,677.1 2011.2,673.6C2011.5,670.1 2009.9,669.3 2010.3,666.4C2010.8,663.5 2010.4,658.8 2013.6,656.3C2016.9,653.8 2025.8,650.2 2029.7,651.3C2033.6,652.4 2035.8,657.6 2036.8,662.8C2037.9,668.0 2036.7,678.3 2035.9,682.5C2035.1,686.7 2034.6,687.4 2032.1,688.0C2029.6,688.6 2024.7,686.1 2020.8,686.0Z"/><path d="M2155.0,761.0C2158.2,762.6 2153.8,765.7 2154.1,768.0C2154.3,770.3 2159.3,773.6 2156.6,774.9C2153.8,776.2 2142.4,776.7 2137.6,776.0C2132.7,775.3 2129.9,772.0 2127.6,770.5C2125.3,769.0 2122.5,768.9 2123.8,766.9C2125.1,764.9 2130.0,759.5 2135.2,758.5C2140.4,757.5 2151.9,759.4 2155.0,761.0Z"/><path d="M1945.7,857.4C1943.0,857.7 1938.1,858.2 1936.2,857.2C1934.3,856.2 1933.4,853.2 1934.3,851.5C1935.3,849.7 1939.0,847.6 1942.1,846.9C1945.1,846.2 1950.7,846.6 1952.6,847.3C1954.4,848.1 1953.2,850.1 1953.2,851.4C1953.1,852.7 1953.6,854.2 1952.3,855.2C1951.1,856.2 1948.4,857.0 1945.7,857.4Z"/><path d="M2048.9,830.0C2046.3,831.4 2044.3,826.4 2039.5,823.8C2034.7,821.1 2023.4,816.8 2020.0,814.1C2016.6,811.4 2017.3,810.1 2019.1,807.5C2021.0,804.8 2027.2,800.6 2031.1,798.2C2035.1,795.8 2039.1,794.8 2042.8,793.0C2046.5,791.1 2051.1,784.7 2053.4,787.2C2055.6,789.6 2056.3,802.8 2056.6,807.5C2056.8,812.3 2056.1,811.9 2054.9,815.6C2053.6,819.4 2051.5,828.7 2048.9,830.0Z"/><path d="M1914.1,643.1C1913.9,646.1 1912.5,649.6 1911.2,650.6C1910.0,651.7 1907.6,650.4 1906.6,649.2C1905.6,648.0 1905.1,645.2 1905.3,643.3C1905.5,641.5 1906.6,639.7 1907.8,638.0C1909.0,636.2 1911.3,631.9 1912.3,632.8C1913.4,633.6 1914.3,640.1 1914.1,643.1Z"/><path d="M2020.9,772.2C2025.4,772.5 2033.0,776.3 2034.9,779.0C2036.8,781.7 2035.4,786.3 2032.3,788.5C2029.1,790.6 2019.7,792.7 2015.8,791.9C2011.9,791.1 2010.2,786.3 2008.9,783.8C2007.5,781.4 2005.6,779.3 2007.6,777.3C2009.6,775.4 2016.3,771.9 2020.9,772.2Z"/><path d="M2086.7,748.1C2085.6,750.0 2083.2,751.2 2080.9,751.1C2078.7,751.0 2074.4,749.2 2073.3,747.4C2072.1,745.6 2074.2,742.9 2074.1,740.1C2074.1,737.3 2072.5,732.1 2073.0,730.5C2073.5,728.9 2075.7,731.1 2077.2,730.5C2078.7,729.9 2080.4,726.1 2081.9,726.8C2083.5,727.5 2085.6,732.7 2086.5,734.9C2087.4,737.1 2087.5,737.6 2087.5,739.8C2087.6,742.0 2087.8,746.2 2086.7,748.1Z"/><path d="M1925.7,639.0C1926.2,637.7 1925.5,635.4 1926.9,634.6C1928.4,633.8 1932.0,633.4 1934.3,634.2C1936.5,635.0 1939.7,637.8 1940.2,639.3C1940.8,640.9 1938.5,642.3 1937.8,643.5C1937.1,644.6 1936.7,645.3 1935.9,646.1C1935.2,646.8 1934.4,648.0 1933.1,648.2C1931.8,648.3 1929.4,648.0 1927.9,647.0C1926.4,646.0 1924.4,643.3 1924.0,642.0C1923.6,640.6 1925.2,640.2 1925.7,639.0Z"/><path d="M1905.4,716.9C1906.2,714.9 1908.8,712.1 1912.2,711.7C1915.6,711.3 1921.5,714.0 1926.0,714.4C1930.5,714.9 1937.6,713.4 1939.2,714.3C1940.8,715.3 1936.9,717.9 1935.5,720.1C1934.1,722.3 1933.7,726.2 1930.7,727.4C1927.8,728.7 1921.6,728.4 1917.8,727.8C1913.9,727.1 1909.5,725.6 1907.4,723.8C1905.4,722.0 1904.6,718.9 1905.4,716.9Z"/><path d="M2002.2,854.1C2000.0,853.4 1998.3,853.7 1998.4,852.7C1998.4,851.7 2001.3,849.1 2002.5,848.0C2003.6,846.9 2004.2,846.7 2005.3,846.0C2006.5,845.3 2007.7,843.7 2009.5,843.7C2011.3,843.6 2014.7,844.4 2016.2,845.6C2017.7,846.8 2018.8,849.4 2018.6,850.6C2018.3,851.9 2015.7,852.0 2014.5,853.1C2013.4,854.1 2013.8,856.8 2011.7,856.9C2009.7,857.1 2004.4,854.8 2002.2,854.1Z"/><path d="M2028.4,773.2C2025.2,774.3 2023.5,770.0 2022.0,766.7C2020.5,763.4 2020.9,759.6 2019.6,753.4C2018.3,747.1 2013.8,734.3 2014.3,729.0C2014.8,723.7 2020.5,723.9 2022.6,721.5C2024.7,719.1 2024.5,715.4 2026.9,714.5C2029.3,713.6 2034.6,711.3 2036.9,716.2C2039.1,721.2 2039.8,736.8 2040.5,744.1C2041.2,751.4 2043.1,755.0 2041.1,759.9C2039.0,764.7 2031.6,772.0 2028.4,773.2Z"/><path d="M2076.5,704.5C2073.4,703.5 2066.8,703.5 2064.6,701.7C2062.5,699.9 2063.0,695.2 2063.6,693.6C2064.2,692.0 2065.6,692.9 2068.2,692.2C2070.8,691.5 2076.1,689.4 2079.1,689.5C2082.2,689.5 2084.3,691.4 2086.5,692.3C2088.7,693.2 2091.9,693.1 2092.4,694.9C2092.9,696.7 2091.2,701.2 2089.7,703.3C2088.1,705.4 2085.3,707.4 2083.2,707.6C2081.0,707.8 2079.6,705.5 2076.5,704.5Z"/><path d="M2040.2,809.8C2041.6,808.3 2044.5,810.2 2048.2,811.1C2052.0,812.0 2061.8,813.4 2062.6,815.5C2063.4,817.5 2055.5,821.7 2053.0,823.4C2050.5,825.1 2049.9,826.3 2047.7,825.7C2045.5,825.1 2041.1,822.5 2039.9,819.8C2038.6,817.2 2038.8,811.2 2040.2,809.8Z"/><path d="M2130.3,682.8C2129.4,686.7 2122.7,684.0 2118.9,684.3C2115.1,684.6 2110.5,686.7 2107.4,684.6C2104.3,682.4 2099.9,675.9 2100.4,671.7C2100.9,667.5 2106.4,661.2 2110.4,659.3C2114.3,657.5 2120.8,656.9 2124.1,660.8C2127.5,664.7 2131.1,678.9 2130.3,682.8Z"/><path d="M2028.8,815.7C2030.2,816.6 2032.6,818.3 2033.2,821.5C2033.9,824.7 2033.7,833.3 2032.7,835.0C2031.6,836.6 2028.7,832.4 2026.9,831.4C2025.2,830.4 2022.6,831.4 2022.3,828.9C2022.0,826.3 2024.0,818.3 2025.1,816.1C2026.2,813.9 2027.5,814.8 2028.8,815.7Z"/><path d="M1953.9,773.3C1956.1,770.6 1960.2,771.3 1963.1,772.5C1966.0,773.7 1969.7,777.3 1971.3,780.4C1972.8,783.6 1972.7,787.9 1972.5,791.4C1972.4,795.0 1972.3,798.2 1970.3,801.8C1968.2,805.4 1963.2,813.5 1960.2,813.2C1957.2,812.9 1954.1,804.0 1952.4,799.9C1950.7,795.8 1949.7,793.1 1950.0,788.6C1950.2,784.2 1951.7,776.0 1953.9,773.3Z"/><path d="M1886.3,686.0C1884.5,682.8 1885.2,680.5 1888.0,679.2C1890.9,677.9 1898.7,679.1 1903.3,678.2C1907.8,677.3 1912.5,672.5 1915.5,673.7C1918.5,674.9 1920.7,680.9 1921.5,685.4C1922.2,690.0 1921.9,696.9 1920.0,700.9C1918.2,704.9 1913.7,709.7 1910.2,709.3C1906.7,708.9 1902.9,702.2 1898.9,698.3C1894.9,694.4 1888.1,689.2 1886.3,686.0Z"/><path d="M2012.0,869.2C2008.5,867.6 2004.0,859.2 2002.6,852.4C2001.1,845.6 2001.3,834.6 2003.3,828.5C2005.2,822.5 2011.0,818.7 2014.2,816.1C2017.4,813.5 2020.7,808.5 2022.3,813.1C2023.8,817.7 2023.2,835.3 2023.5,843.5C2023.8,851.7 2025.9,858.0 2024.0,862.2C2022.1,866.5 2015.6,870.8 2012.0,869.2Z"/><path d="M2048.2,728.9C2047.6,730.1 2044.4,731.0 2041.7,731.6C2039.0,732.1 2035.0,733.1 2032.0,732.3C2028.9,731.5 2024.0,728.4 2023.5,726.9C2023.0,725.4 2027.3,724.1 2028.9,723.2C2030.5,722.2 2030.9,721.5 2033.2,721.2C2035.4,720.9 2040.5,720.9 2042.5,721.5C2044.4,722.1 2044.1,723.4 2045.1,724.7C2046.0,725.9 2048.7,727.8 2048.2,728.9Z"/><path d="M2130.8,776.4C2133.0,779.0 2139.8,782.1 2140.1,784.7C2140.4,787.4 2136.7,791.5 2132.7,792.3C2128.8,793.0 2119.3,791.2 2116.5,789.4C2113.6,787.6 2115.5,783.7 2115.5,781.6C2115.5,779.5 2114.4,778.8 2116.4,776.8C2118.3,774.7 2124.8,769.4 2127.2,769.3C2129.6,769.3 2128.7,773.8 2130.8,776.4Z"/><path d="M2010.0,749.7C2014.4,754.1 2018.9,762.3 2017.8,770.8C2016.6,779.3 2007.7,795.6 2003.0,800.6C1998.4,805.6 1991.9,805.6 1989.8,800.8C1987.6,796.0 1989.9,781.0 1990.2,771.6C1990.4,762.1 1987.9,747.6 1991.2,743.9C1994.5,740.3 2005.6,745.2 2010.0,749.7Z"/><path d="M1966.6,655.1C1966.1,659.7 1960.3,672.0 1957.0,673.0C1953.6,673.9 1950.1,662.8 1946.5,660.9C1942.9,659.0 1937.0,664.3 1935.6,661.4C1934.1,658.5 1937.1,649.9 1937.6,643.7C1938.1,637.5 1935.0,627.0 1938.4,624.2C1941.8,621.5 1954.3,623.5 1957.9,627.0C1961.4,630.4 1958.5,640.2 1959.9,644.9C1961.4,649.6 1967.1,650.4 1966.6,655.1Z"/><path d="M1955.0,659.3C1951.2,659.0 1946.4,659.7 1946.1,658.1C1945.9,656.5 1952.2,651.7 1953.5,649.5C1954.8,647.3 1951.6,645.4 1954.0,644.7C1956.3,644.1 1963.3,645.2 1967.8,645.6C1972.3,646.1 1977.4,645.9 1980.9,647.2C1984.3,648.6 1988.6,651.9 1988.3,654.0C1988.0,656.0 1982.3,658.6 1979.1,659.6C1975.9,660.5 1972.9,659.8 1968.9,659.7C1964.9,659.7 1958.8,659.5 1955.0,659.3Z"/><path d="M2126.4,761.8C2128.9,763.7 2127.3,767.9 2125.7,769.7C2124.1,771.6 2120.5,771.4 2116.9,772.8C2113.3,774.2 2108.2,777.9 2104.1,778.3C2100.0,778.7 2095.1,776.8 2092.2,775.0C2089.3,773.1 2086.2,769.5 2086.9,767.3C2087.7,765.2 2092.6,763.4 2096.6,761.9C2100.5,760.4 2105.7,758.5 2110.6,758.5C2115.6,758.5 2123.8,760.0 2126.4,761.8Z"/><path d="M1888.7,670.5C1887.1,667.8 1886.6,664.2 1888.7,662.4C1890.7,660.5 1896.2,662.1 1901.0,659.6C1905.9,657.1 1912.2,647.6 1917.8,647.2C1923.3,646.8 1928.3,653.8 1934.3,657.2C1940.3,660.6 1953.2,664.4 1953.6,667.6C1954.0,670.8 1942.0,675.0 1936.7,676.6C1931.5,678.2 1928.4,676.6 1922.1,677.0C1915.7,677.3 1904.3,679.7 1898.7,678.6C1893.2,677.5 1890.4,673.2 1888.7,670.5Z"/><path d="M1809.7,880.3C1814.1,877.1 1820.8,887.3 1825.8,890.6C1830.9,893.9 1838.7,893.5 1840.2,899.9C1841.6,906.3 1838.3,924.6 1834.4,928.8C1830.6,933.0 1822.7,928.1 1816.8,925.0C1811.0,921.8 1800.7,917.4 1799.5,909.9C1798.3,902.5 1805.3,883.5 1809.7,880.3Z"/><path d="M1662.8,1032.7C1661.5,1029.7 1661.2,1023.8 1662.3,1020.2C1663.4,1016.7 1666.6,1012.8 1669.2,1011.4C1671.8,1010.1 1675.7,1011.1 1677.9,1012.0C1680.2,1012.9 1680.8,1015.2 1682.8,1017.0C1684.9,1018.8 1690.0,1020.2 1690.4,1022.7C1690.7,1025.2 1686.3,1028.0 1685.0,1031.9C1683.7,1035.8 1685.0,1045.1 1682.6,1046.1C1680.1,1047.1 1673.6,1040.2 1670.4,1037.9C1667.1,1035.7 1664.1,1035.6 1662.8,1032.7Z"/><path d="M1738.3,857.9C1748.4,858.3 1759.9,859.5 1769.0,862.3C1778.2,865.1 1792.9,871.5 1793.2,874.5C1793.5,877.5 1778.9,878.6 1770.7,880.3C1762.5,882.1 1755.0,885.3 1744.2,885.1C1733.4,884.9 1711.8,883.2 1705.9,878.9C1700.0,874.7 1703.3,863.0 1708.7,859.5C1714.2,856.0 1728.3,857.4 1738.3,857.9Z"/><path d="M1867.9,931.2C1875.9,933.6 1890.3,938.9 1891.0,941.6C1891.6,944.4 1879.3,947.3 1872.0,947.7C1864.7,948.2 1855.2,945.9 1847.1,944.4C1839.0,942.9 1824.3,941.6 1823.5,938.7C1822.8,935.9 1835.5,928.4 1842.9,927.2C1850.3,925.9 1859.9,928.7 1867.9,931.2Z"/><path d="M1681.9,918.9C1679.3,919.4 1676.0,915.0 1674.3,911.4C1672.6,907.9 1671.2,904.0 1671.6,897.6C1672.1,891.3 1674.5,877.4 1676.8,873.2C1679.2,869.0 1684.0,870.1 1685.8,872.6C1687.5,875.1 1686.7,882.2 1687.4,888.2C1688.1,894.1 1690.9,903.2 1690.0,908.3C1689.1,913.4 1684.5,918.4 1681.9,918.9Z"/><path d="M1663.6,1040.8C1664.4,1037.2 1667.6,1031.4 1670.1,1031.5C1672.5,1031.6 1676.0,1038.2 1678.5,1041.4C1680.9,1044.7 1685.4,1048.0 1684.6,1051.0C1683.8,1054.0 1677.0,1059.0 1673.8,1059.4C1670.6,1059.8 1666.9,1056.5 1665.2,1053.4C1663.5,1050.3 1662.8,1044.5 1663.6,1040.8Z"/><path d="M1664.3,1003.9C1670.0,1002.9 1678.3,1001.7 1681.2,1002.9C1684.2,1004.1 1680.3,1009.3 1681.9,1011.2C1683.5,1013.1 1691.3,1013.0 1690.7,1014.5C1690.1,1016.0 1681.9,1019.1 1678.2,1020.3C1674.5,1021.6 1671.5,1022.2 1668.5,1021.9C1665.4,1021.6 1663.1,1020.0 1659.8,1018.6C1656.4,1017.3 1650.3,1015.4 1648.3,1013.9C1646.2,1012.3 1644.8,1010.7 1647.5,1009.1C1650.2,1007.4 1658.7,1005.0 1664.3,1003.9Z"/><path d="M1763.8,908.3C1762.2,906.6 1756.5,905.1 1757.1,903.2C1757.7,901.2 1764.1,898.0 1767.5,896.8C1770.9,895.6 1774.8,895.6 1777.6,896.0C1780.4,896.5 1782.8,898.3 1784.3,899.4C1785.9,900.6 1787.5,901.6 1786.8,903.1C1786.1,904.5 1783.3,906.5 1780.0,908.3C1776.7,910.0 1769.6,913.6 1766.9,913.6C1764.2,913.6 1765.5,910.1 1763.8,908.3Z"/><path d="M1867.1,1001.0C1867.7,1004.6 1870.6,1010.4 1869.1,1012.5C1867.6,1014.7 1861.9,1014.8 1858.1,1014.0C1854.3,1013.2 1848.8,1009.3 1846.5,1007.8C1844.3,1006.2 1844.7,1006.4 1844.8,1004.6C1844.8,1002.7 1845.3,1000.3 1846.7,996.8C1848.2,993.2 1850.3,984.2 1853.4,983.3C1856.5,982.3 1863.2,988.2 1865.5,991.2C1867.8,994.1 1866.5,997.5 1867.1,1001.0Z"/><path d="M1801.5,830.6C1805.5,831.6 1812.2,840.9 1815.5,846.1C1818.9,851.2 1823.2,855.2 1821.9,861.7C1820.6,868.1 1812.8,881.3 1807.8,884.9C1802.7,888.4 1794.4,890.4 1791.7,883.0C1789.0,875.6 1789.9,849.2 1791.6,840.5C1793.2,831.7 1797.5,829.7 1801.5,830.6Z"/><path d="M1850.3,880.1C1849.6,882.4 1846.0,886.4 1842.7,888.2C1839.4,890.0 1833.7,890.5 1830.3,891.0C1827.0,891.6 1825.2,892.2 1822.7,891.4C1820.2,890.5 1817.0,888.4 1815.4,886.1C1813.7,883.7 1810.1,880.4 1812.7,877.3C1815.4,874.2 1825.6,868.0 1831.3,867.5C1837.0,867.1 1843.6,872.4 1846.7,874.5C1849.9,876.5 1850.9,877.8 1850.3,880.1Z"/><path d="M1714.1,1075.2C1710.7,1073.1 1703.9,1069.7 1703.7,1063.5C1703.5,1057.2 1709.5,1043.4 1712.9,1037.8C1716.2,1032.1 1720.3,1026.7 1723.8,1029.7C1727.2,1032.7 1733.7,1047.8 1733.7,1055.6C1733.8,1063.3 1727.2,1072.9 1723.9,1076.1C1720.6,1079.4 1717.5,1077.3 1714.1,1075.2Z"/><path d="M1676.2,1034.5C1674.7,1035.3 1670.9,1036.1 1669.5,1035.4C1668.2,1034.6 1668.7,1031.9 1668.0,1030.2C1667.2,1028.5 1664.8,1026.8 1665.1,1025.0C1665.5,1023.1 1667.9,1019.5 1669.8,1019.2C1671.7,1018.9 1674.9,1021.1 1676.4,1023.0C1677.8,1024.9 1678.7,1028.6 1678.7,1030.5C1678.7,1032.5 1677.7,1033.7 1676.2,1034.5Z"/><path d="M1697.0,932.3C1702.5,934.6 1708.6,938.2 1708.6,942.3C1708.5,946.4 1703.7,954.6 1696.7,956.9C1689.7,959.2 1673.6,958.4 1666.4,956.2C1659.3,954.0 1656.9,947.9 1653.8,943.8C1650.7,939.7 1644.1,934.1 1647.8,931.6C1651.5,929.0 1667.5,928.5 1675.7,928.6C1683.9,928.8 1691.6,930.0 1697.0,932.3Z"/><path d="M1688.4,1020.7C1687.5,1023.4 1685.8,1024.5 1682.8,1024.8C1679.9,1025.2 1674.5,1023.3 1670.7,1022.6C1666.9,1022.0 1662.1,1023.4 1660.0,1020.9C1657.9,1018.4 1656.5,1010.1 1658.1,1007.6C1659.6,1005.0 1666.4,1005.9 1669.4,1005.4C1672.3,1004.8 1673.1,1005.1 1675.7,1004.3C1678.4,1003.4 1683.4,999.6 1685.4,1000.4C1687.5,1001.2 1687.5,1005.6 1688.0,1009.0C1688.5,1012.4 1689.3,1018.1 1688.4,1020.7Z"/><path d="M1846.1,1077.6C1844.2,1077.3 1842.4,1073.9 1841.3,1071.8C1840.3,1069.6 1839.1,1066.4 1840.0,1064.7C1840.9,1063.1 1845.0,1061.1 1846.7,1061.8C1848.5,1062.5 1849.5,1067.1 1850.6,1069.0C1851.7,1070.9 1853.8,1071.8 1853.1,1073.2C1852.4,1074.6 1848.1,1077.8 1846.1,1077.6Z"/><path d="M1869.4,957.1C1870.4,953.1 1874.5,963.9 1876.8,966.7C1879.1,969.4 1881.9,967.6 1883.4,973.8C1884.8,980.0 1886.8,997.2 1885.4,1003.7C1884.1,1010.3 1877.6,1015.2 1875.2,1013.0C1872.8,1010.9 1872.0,1000.1 1871.0,990.8C1870.1,981.5 1868.4,961.1 1869.4,957.1Z"/><path d="M1766.6,887.1C1770.2,887.0 1776.1,886.4 1778.3,890.3C1780.4,894.2 1780.9,907.2 1779.5,910.4C1778.0,913.6 1773.6,909.7 1769.6,909.4C1765.6,909.2 1757.6,912.2 1755.4,909.1C1753.2,906.0 1754.7,894.5 1756.6,890.8C1758.4,887.2 1763.0,887.2 1766.6,887.1Z"/><path d="M1739.7,925.9C1744.8,923.8 1761.3,921.1 1770.3,921.5C1779.2,921.9 1789.9,925.4 1793.5,928.1C1797.1,930.8 1791.1,935.1 1792.0,937.5C1792.9,939.9 1801.8,941.0 1798.9,942.5C1796.0,944.1 1781.1,946.5 1774.6,946.9C1768.1,947.3 1764.7,945.5 1759.7,945.1C1754.7,944.6 1748.0,946.1 1744.6,944.2C1741.2,942.3 1740.1,936.9 1739.3,933.8C1738.5,930.8 1734.5,927.9 1739.7,925.9Z"/><path d="M1848.6,948.8C1844.8,950.3 1845.3,948.6 1838.7,949.1C1832.1,949.5 1814.9,951.9 1809.0,951.6C1803.2,951.2 1806.0,950.5 1803.4,947.2C1800.7,943.8 1791.9,933.9 1793.2,931.3C1794.6,928.8 1806.3,932.7 1811.5,932.1C1816.7,931.4 1818.9,927.9 1824.4,927.6C1829.9,927.4 1838.4,928.6 1844.5,930.7C1850.6,932.8 1860.6,937.4 1861.3,940.4C1861.9,943.4 1852.3,947.4 1848.6,948.8Z"/><path d="M1781.1,933.8C1785.7,932.6 1796.4,932.5 1800.9,933.9C1805.4,935.3 1808.6,939.1 1808.1,942.1C1807.5,945.0 1801.6,948.3 1797.8,951.7C1794.0,955.2 1789.2,962.3 1785.3,962.7C1781.4,963.1 1776.5,957.7 1774.5,954.1C1772.5,950.5 1772.1,944.4 1773.2,941.1C1774.3,937.7 1776.5,935.0 1781.1,933.8Z"/><path d="M1722.5,1035.5C1716.6,1035.2 1713.9,1028.0 1708.1,1026.0C1702.2,1024.0 1687.8,1026.6 1687.5,1023.7C1687.2,1020.8 1701.0,1012.1 1706.4,1008.5C1711.8,1004.8 1714.0,1002.2 1720.0,1001.8C1726.1,1001.5 1736.1,1004.6 1742.5,1006.5C1748.9,1008.3 1758.2,1009.4 1758.4,1013.1C1758.6,1016.7 1749.6,1024.4 1743.6,1028.2C1737.7,1031.9 1728.4,1035.9 1722.5,1035.5Z"/><path d="M1742.5,975.5C1739.3,978.4 1727.2,982.0 1721.5,981.3C1715.7,980.7 1710.6,975.0 1708.1,971.8C1705.5,968.7 1705.3,966.4 1706.2,962.5C1707.1,958.7 1709.6,951.9 1713.5,948.5C1717.4,945.2 1725.0,940.0 1729.6,942.5C1734.2,945.1 1739.0,958.1 1741.1,963.6C1743.3,969.1 1745.8,972.5 1742.5,975.5Z"/><path d="M1679.6,1001.7C1678.1,1004.0 1677.2,1004.8 1674.8,1003.2C1672.3,1001.7 1665.8,996.4 1664.8,992.3C1663.9,988.1 1668.1,984.2 1668.9,978.4C1669.8,972.7 1668.4,961.1 1669.9,957.8C1671.4,954.5 1675.9,956.9 1677.9,958.5C1679.9,960.1 1679.5,964.4 1681.7,967.3C1683.9,970.1 1690.7,971.8 1691.1,975.5C1691.5,979.3 1685.9,985.3 1683.9,989.7C1682.0,994.1 1681.1,999.4 1679.6,1001.7Z"/><path d="M1893.6,1000.7C1895.9,1001.0 1898.4,1003.2 1899.5,1005.1C1900.6,1006.9 1899.8,1007.9 1900.1,1011.7C1900.4,1015.4 1902.6,1025.6 1901.3,1027.8C1900.0,1030.0 1894.4,1026.1 1892.3,1024.8C1890.3,1023.4 1889.4,1021.4 1888.8,1019.7C1888.2,1018.1 1889.1,1017.6 1888.6,1014.8C1888.1,1012.0 1884.9,1005.2 1885.7,1002.8C1886.5,1000.5 1891.3,1000.3 1893.6,1000.7Z"/><path d="M1727.4,969.7C1724.8,971.6 1719.0,969.7 1713.6,969.2C1708.2,968.6 1697.7,968.8 1694.9,966.3C1692.0,963.9 1694.0,958.3 1696.6,954.7C1699.2,951.0 1706.1,945.9 1710.4,944.3C1714.8,942.7 1719.6,943.0 1722.8,945.2C1725.9,947.5 1728.5,953.9 1729.2,958.0C1730.0,962.0 1730.0,967.8 1727.4,969.7Z"/><path d="M1703.6,868.1C1707.1,863.8 1715.3,854.5 1718.8,854.0C1722.4,853.5 1723.5,861.3 1724.8,865.0C1726.2,868.8 1726.0,872.1 1727.1,876.5C1728.2,880.9 1733.4,888.9 1731.6,891.2C1729.9,893.6 1720.0,890.2 1716.5,890.7C1713.0,891.1 1713.8,895.7 1710.7,893.9C1707.5,892.1 1699.1,884.2 1697.9,879.9C1696.7,875.6 1700.1,872.4 1703.6,868.1Z"/><path d="M1964.9,978.0C1964.4,981.5 1961.2,986.3 1957.2,987.6C1953.3,989.0 1946.0,987.8 1940.9,985.9C1935.8,984.0 1926.1,979.7 1926.6,976.2C1927.0,972.7 1938.1,966.5 1943.8,964.9C1949.4,963.3 1956.8,964.3 1960.3,966.5C1963.9,968.7 1965.4,974.5 1964.9,978.0Z"/><path d="M1982.5,1021.1C1983.3,1025.0 1982.0,1034.2 1978.8,1036.9C1975.6,1039.7 1967.0,1038.0 1963.1,1037.4C1959.2,1036.8 1957.1,1035.4 1955.2,1033.4C1953.4,1031.3 1951.9,1029.7 1951.8,1025.1C1951.8,1020.5 1952.9,1009.8 1954.8,1005.7C1956.7,1001.5 1960.3,999.1 1963.5,1000.4C1966.7,1001.7 1970.7,1010.1 1973.8,1013.5C1977.0,1017.0 1981.6,1017.2 1982.5,1021.1Z"/><path d="M2033.7,967.5C2036.3,963.8 2039.8,962.1 2042.1,964.8C2044.4,967.4 2047.0,973.2 2047.6,983.5C2048.2,993.8 2048.6,1019.5 2045.7,1026.5C2042.8,1033.5 2033.2,1029.8 2030.2,1025.7C2027.2,1021.5 2028.2,1008.0 2027.6,1001.6C2027.0,995.2 2025.5,992.8 2026.6,987.1C2027.6,981.4 2031.1,971.2 2033.7,967.5Z"/><path d="M1960.0,923.4C1956.9,924.7 1952.2,924.7 1950.8,922.8C1949.3,920.9 1950.5,915.4 1951.2,912.3C1951.8,909.1 1952.4,905.2 1954.7,904.1C1957.1,903.0 1962.9,903.7 1965.3,905.6C1967.8,907.5 1970.6,912.5 1969.7,915.4C1968.8,918.4 1963.2,922.2 1960.0,923.4Z"/><path d="M2087.0,872.8C2083.8,871.4 2082.2,870.7 2082.0,869.0C2081.8,867.3 2082.4,864.1 2085.8,862.7C2089.1,861.3 2093.0,861.6 2102.0,860.7C2111.1,859.7 2134.8,855.9 2140.1,857.1C2145.5,858.4 2135.9,865.2 2134.0,868.3C2132.1,871.4 2131.2,874.0 2128.8,875.8C2126.3,877.7 2124.1,878.8 2119.5,879.2C2114.9,879.5 2106.5,879.0 2101.1,877.9C2095.7,876.9 2090.1,874.3 2087.0,872.8Z"/><path d="M1965.8,929.2C1968.2,928.9 1972.6,929.6 1974.3,931.2C1976.0,932.8 1976.1,936.4 1976.1,938.9C1976.1,941.3 1975.8,944.4 1974.3,945.8C1972.9,947.2 1969.5,947.3 1967.6,947.0C1965.6,946.8 1963.8,945.6 1962.6,944.4C1961.4,943.2 1960.9,941.9 1960.4,940.1C1960.0,938.2 1959.1,934.9 1960.0,933.1C1960.9,931.3 1963.4,929.5 1965.8,929.2Z"/><path d="M1954.1,1070.1C1951.6,1071.1 1945.9,1072.2 1943.7,1072.1C1941.4,1072.1 1942.5,1070.2 1940.7,1069.6C1938.8,1069.0 1934.2,1069.9 1932.5,1068.6C1930.8,1067.4 1929.1,1063.3 1930.3,1062.3C1931.5,1061.2 1936.9,1062.8 1939.7,1062.6C1942.5,1062.4 1944.0,1060.6 1947.2,1061.2C1950.3,1061.8 1957.4,1064.5 1958.6,1066.0C1959.7,1067.4 1956.6,1069.0 1954.1,1070.1Z"/><path d="M2056.0,899.0C2053.5,899.4 2050.8,899.9 2048.7,899.3C2046.5,898.8 2043.6,896.6 2043.0,895.6C2042.4,894.5 2043.5,894.0 2045.3,893.0C2047.1,892.0 2051.6,889.8 2053.9,889.6C2056.1,889.4 2057.2,890.8 2058.7,892.0C2060.3,893.3 2063.6,895.8 2063.2,897.0C2062.7,898.1 2058.4,898.6 2056.0,899.0Z"/><path d="M2056.3,959.7C2060.4,959.2 2064.9,960.7 2069.2,961.6C2073.5,962.4 2079.7,962.5 2082.1,965.0C2084.6,967.4 2087.1,974.7 2083.8,976.3C2080.5,977.9 2067.9,974.9 2062.3,974.5C2056.8,974.0 2053.6,974.5 2050.4,973.7C2047.2,973.0 2044.0,971.3 2043.0,969.7C2042.0,968.1 2042.2,965.9 2044.4,964.2C2046.6,962.6 2052.2,960.1 2056.3,959.7Z"/><path d="M1919.4,921.3C1913.5,920.6 1904.9,913.3 1904.6,910.2C1904.2,907.1 1911.4,905.2 1917.3,902.6C1923.1,899.9 1934.1,894.0 1939.5,894.1C1945.0,894.1 1950.0,899.6 1950.1,903.0C1950.1,906.4 1944.9,911.2 1939.8,914.3C1934.7,917.3 1925.3,922.0 1919.4,921.3Z"/><path d="M1918.3,1053.6C1914.0,1049.2 1907.9,1046.7 1909.4,1042.0C1910.9,1037.4 1922.7,1029.2 1927.5,1025.6C1932.3,1022.0 1934.8,1018.7 1938.4,1020.7C1942.0,1022.7 1948.0,1032.1 1948.9,1037.6C1949.7,1043.2 1945.6,1048.8 1943.3,1054.0C1941.1,1059.2 1939.6,1068.8 1935.4,1068.7C1931.3,1068.7 1922.7,1058.1 1918.3,1053.6Z"/><path d="M1965.4,1011.5C1966.0,1013.5 1964.9,1017.4 1963.1,1019.1C1961.3,1020.8 1957.9,1021.6 1954.4,1021.8C1951.0,1022.0 1944.4,1022.1 1942.4,1020.3C1940.3,1018.5 1941.0,1013.5 1942.1,1011.1C1943.2,1008.7 1946.6,1006.8 1949.1,1005.9C1951.6,1005.0 1955.1,1005.5 1956.8,1005.6C1958.5,1005.8 1957.9,1005.9 1959.3,1006.9C1960.7,1007.8 1964.7,1009.4 1965.4,1011.5Z"/><path d="M2064.4,870.9C2064.9,874.6 2061.8,877.1 2060.2,881.2C2058.5,885.2 2056.7,894.9 2054.3,895.1C2051.9,895.2 2047.1,887.3 2045.7,882.3C2044.4,877.4 2044.8,870.1 2046.0,865.4C2047.2,860.7 2051.2,855.2 2053.1,854.1C2054.9,853.0 2055.0,856.1 2056.8,858.9C2058.7,861.7 2063.8,867.1 2064.4,870.9Z"/><path d="M1982.4,894.8C1984.3,891.9 1994.2,886.8 1999.8,885.0C2005.4,883.2 2011.6,882.1 2016.1,884.0C2020.5,885.9 2025.2,892.7 2026.4,896.4C2027.6,900.0 2025.9,903.9 2023.1,906.0C2020.3,908.2 2013.7,908.7 2009.6,909.3C2005.4,909.8 2002.0,910.5 1998.4,909.4C1994.8,908.2 1990.6,904.8 1988.0,902.3C1985.3,899.9 1980.4,897.7 1982.4,894.8Z"/><path d="M2010.3,957.5C2009.9,958.8 2002.5,960.8 1999.7,961.7C1996.9,962.5 1995.0,963.2 1993.6,962.6C1992.1,962.0 1991.2,959.5 1991.0,958.0C1990.9,956.5 1990.7,954.3 1992.5,953.6C1994.3,952.8 1998.7,952.9 2001.7,953.5C2004.6,954.2 2010.6,956.1 2010.3,957.5Z"/><path d="M2099.5,1022.1C2104.2,1023.6 2110.3,1029.1 2112.0,1031.4C2113.6,1033.8 2110.6,1034.3 2109.5,1036.2C2108.5,1038.1 2107.7,1041.4 2105.5,1043.0C2103.3,1044.6 2100.2,1044.6 2096.3,1045.9C2092.3,1047.3 2087.0,1051.9 2081.8,1051.2C2076.5,1050.4 2066.3,1045.3 2065.0,1041.4C2063.7,1037.6 2070.8,1031.3 2073.9,1028.1C2077.1,1024.9 2079.9,1023.4 2084.2,1022.4C2088.5,1021.4 2094.9,1020.6 2099.5,1022.1Z"/><path d="M1953.0,988.1C1948.3,988.3 1938.1,984.3 1933.5,981.6C1928.9,978.8 1924.6,974.9 1925.4,971.5C1926.1,968.1 1932.2,962.6 1938.1,961.2C1943.9,959.7 1953.3,962.1 1960.3,962.6C1967.3,963.1 1977.9,961.9 1980.1,964.1C1982.4,966.3 1976.8,973.1 1973.8,975.8C1970.7,978.6 1965.3,978.4 1961.8,980.4C1958.3,982.5 1957.7,987.9 1953.0,988.1Z"/><path d="M2098.9,967.7C2095.3,965.2 2086.9,955.2 2086.9,949.9C2086.8,944.6 2094.9,938.0 2098.9,935.9C2102.8,933.8 2106.9,935.6 2110.4,937.5C2113.9,939.3 2120.5,942.4 2120.1,947.0C2119.7,951.5 2111.7,961.5 2108.2,965.0C2104.7,968.5 2102.5,970.2 2098.9,967.7Z"/><path d="M2037.6,1063.6C2040.0,1062.9 2046.1,1062.1 2047.8,1062.6C2049.6,1063.1 2048.5,1065.5 2048.0,1066.7C2047.6,1067.8 2047.5,1068.6 2045.2,1069.3C2043.0,1070.1 2036.5,1071.5 2034.5,1071.1C2032.6,1070.7 2033.2,1068.4 2033.7,1067.1C2034.3,1065.9 2035.3,1064.4 2037.6,1063.6Z"/><path d="M1985.4,948.0C1989.5,945.8 1998.4,950.6 2001.5,952.9C2004.6,955.2 2004.0,958.0 2004.1,961.9C2004.2,965.7 2004.6,973.7 2002.0,976.0C1999.4,978.3 1992.7,977.2 1988.5,975.6C1984.3,973.9 1977.4,970.9 1976.9,966.3C1976.3,961.7 1981.3,950.2 1985.4,948.0Z"/><path d="M2103.5,867.9C2104.5,864.7 2106.3,859.1 2107.9,857.8C2109.5,856.6 2111.5,860.1 2113.3,860.6C2115.0,861.1 2117.9,858.8 2118.2,861.0C2118.4,863.1 2115.7,871.1 2114.8,873.7C2113.9,876.3 2113.9,875.1 2112.9,876.6C2111.8,878.1 2110.5,882.8 2108.6,882.8C2106.7,882.9 2102.5,879.5 2101.6,877.1C2100.8,874.6 2102.4,871.1 2103.5,867.9Z"/><path d="M2124.0,1005.9C2121.5,1005.4 2117.8,1001.9 2117.1,1000.3C2116.4,998.7 2118.3,997.6 2119.6,996.2C2120.9,994.9 2122.3,992.5 2125.0,992.0C2127.7,991.6 2134.7,991.5 2135.8,993.4C2137.0,995.3 2134.1,1001.3 2132.1,1003.4C2130.1,1005.4 2126.5,1006.4 2124.0,1005.9Z"/><path d="M2041.7,948.2C2040.6,948.0 2038.8,947.0 2038.0,946.0C2037.3,944.9 2037.4,944.6 2037.1,941.9C2036.9,939.2 2036.1,932.7 2036.5,929.9C2037.0,927.1 2038.5,925.3 2039.7,925.1C2040.8,924.8 2042.4,926.4 2043.5,928.7C2044.6,931.0 2045.3,936.6 2046.1,938.8C2046.8,941.1 2048.4,940.7 2048.1,942.1C2047.8,943.4 2045.3,945.9 2044.2,946.9C2043.1,947.9 2042.7,948.3 2041.7,948.2Z"/><path d="M2094.4,966.5C2096.4,962.8 2102.8,958.8 2105.0,957.9C2107.2,956.9 2106.0,956.8 2107.7,960.8C2109.4,964.8 2113.5,975.8 2115.4,981.8C2117.4,987.8 2120.2,991.6 2119.4,996.7C2118.6,1001.7 2114.2,1009.5 2110.7,1011.9C2107.2,1014.3 2101.4,1013.4 2098.5,1011.0C2095.5,1008.6 2093.8,1002.7 2092.8,997.5C2091.9,992.3 2092.7,985.1 2093.0,979.9C2093.2,974.7 2092.4,970.2 2094.4,966.5Z"/><path d="M2109.3,896.3C2108.5,893.1 2108.4,886.2 2108.8,883.3C2109.3,880.5 2110.7,878.8 2111.9,879.2C2113.1,879.6 2114.8,883.7 2116.2,885.6C2117.7,887.6 2120.4,887.9 2120.6,891.0C2120.8,894.1 2118.6,902.4 2117.5,904.2C2116.3,906.1 2115.0,903.5 2113.7,902.2C2112.3,900.9 2110.1,899.4 2109.3,896.3Z"/><path d="M2008.8,1020.9C2011.9,1021.2 2018.4,1025.4 2022.0,1026.9C2025.6,1028.3 2029.6,1028.2 2030.4,1029.3C2031.2,1030.4 2027.5,1031.2 2026.6,1033.5C2025.8,1035.7 2027.7,1041.2 2025.5,1042.8C2023.2,1044.3 2016.9,1043.0 2013.2,1042.7C2009.6,1042.4 2004.9,1042.5 2003.7,1040.8C2002.5,1039.0 2006.0,1034.9 2006.0,1032.3C2006.0,1029.6 2003.1,1026.7 2003.5,1024.8C2004.0,1022.9 2005.8,1020.5 2008.8,1020.9Z"/><path d="M1962.0,859.5C1962.0,860.9 1961.5,862.8 1960.7,864.1C1959.9,865.5 1958.2,866.6 1957.5,867.4C1956.7,868.1 1957.6,868.7 1956.3,868.6C1955.1,868.4 1950.8,867.6 1949.9,866.6C1948.9,865.6 1950.6,864.0 1950.7,862.7C1950.7,861.3 1949.0,859.5 1949.9,858.6C1950.8,857.7 1954.3,857.9 1956.1,857.5C1957.9,857.0 1959.7,855.4 1960.7,855.8C1961.7,856.1 1962.0,858.1 1962.0,859.5Z"/><path d="M1956.7,1032.5C1955.6,1029.9 1955.4,1024.1 1955.7,1019.2C1956.0,1014.3 1957.9,1007.2 1958.7,1003.3C1959.4,999.3 1958.7,996.0 1960.2,995.4C1961.7,994.8 1966.1,996.4 1967.6,999.6C1969.2,1002.9 1969.1,1010.8 1969.4,1014.8C1969.7,1018.9 1970.1,1021.1 1969.4,1024.2C1968.6,1027.3 1966.0,1031.7 1964.8,1033.5C1963.6,1035.2 1963.7,1035.0 1962.3,1034.8C1961.0,1034.7 1957.8,1035.1 1956.7,1032.5Z"/><path d="M2111.9,898.0C2111.2,903.3 2104.0,903.4 2102.3,907.0C2100.7,910.7 2105.4,917.7 2102.2,920.0C2098.9,922.4 2088.3,923.8 2082.6,921.0C2076.9,918.2 2070.0,908.7 2068.0,903.1C2066.0,897.5 2068.6,892.5 2070.6,887.1C2072.7,881.8 2075.6,873.8 2080.1,871.1C2084.7,868.3 2093.5,869.9 2097.9,870.6C2102.3,871.3 2104.2,870.7 2106.5,875.3C2108.8,879.8 2112.6,892.7 2111.9,898.0Z"/><path d="M1948.9,1057.2C1947.9,1055.2 1946.5,1048.3 1946.3,1045.5C1946.2,1042.7 1947.4,1042.2 1948.0,1040.3C1948.6,1038.4 1949.2,1035.5 1949.7,1034.1C1950.2,1032.7 1950.2,1031.6 1951.1,1031.9C1952.0,1032.2 1954.2,1033.7 1954.8,1035.7C1955.5,1037.8 1955.1,1041.6 1954.9,1044.1C1954.8,1046.6 1954.4,1048.4 1954.0,1050.7C1953.6,1052.9 1953.5,1056.6 1952.6,1057.7C1951.8,1058.8 1949.9,1059.2 1948.9,1057.2Z"/><path d="M2070.6,1040.8C2068.3,1037.2 2072.8,1030.7 2073.6,1025.9C2074.4,1021.1 2073.6,1016.2 2075.3,1012.0C2077.1,1007.8 2080.4,1001.2 2084.2,1000.6C2087.9,999.9 2093.8,1005.1 2097.7,1007.9C2101.5,1010.7 2106.1,1012.9 2107.4,1017.6C2108.7,1022.2 2106.7,1030.8 2105.4,1035.8C2104.2,1040.8 2102.9,1045.6 2099.9,1047.5C2096.9,1049.4 2092.2,1048.3 2087.4,1047.2C2082.5,1046.1 2072.9,1044.3 2070.6,1040.8Z"/><path d="M2120.3,996.9C2124.3,994.0 2136.3,991.2 2142.7,990.1C2149.1,989.1 2153.2,989.2 2158.9,990.6C2164.5,991.9 2173.2,995.5 2176.4,998.4C2179.7,1001.3 2180.9,1005.3 2178.5,1007.7C2176.2,1010.1 2167.0,1010.3 2162.4,1012.6C2157.8,1014.9 2155.0,1021.1 2150.8,1021.6C2146.6,1022.2 2142.6,1018.5 2137.2,1016.1C2131.9,1013.7 2121.5,1010.5 2118.7,1007.3C2115.9,1004.1 2116.3,999.7 2120.3,996.9Z"/><path d="M1984.0,869.1C1983.6,866.4 1988.2,862.7 1991.1,859.3C1993.9,855.9 1998.0,848.6 2001.0,848.6C2004.0,848.7 2007.1,856.8 2009.1,859.6C2011.1,862.3 2012.2,863.0 2013.2,865.0C2014.3,867.0 2017.5,869.5 2015.6,871.4C2013.7,873.3 2005.5,875.6 2001.8,876.3C1998.1,877.0 1996.5,876.7 1993.5,875.5C1990.5,874.3 1984.4,871.8 1984.0,869.1Z"/><path d="M2049.3,880.3C2048.0,884.0 2041.4,886.3 2035.7,888.9C2030.0,891.4 2021.6,897.0 2014.9,895.6C2008.3,894.1 2000.0,884.5 1995.9,880.4C1991.9,876.2 1988.2,873.8 1990.8,870.7C1993.3,867.6 2005.5,864.0 2011.2,861.7C2017.0,859.5 2020.1,856.4 2025.4,857.2C2030.7,858.0 2039.1,862.8 2043.1,866.6C2047.0,870.5 2050.5,876.5 2049.3,880.3Z"/><path d="M2051.7,1049.6C2056.9,1051.0 2068.3,1058.1 2070.8,1061.5C2073.2,1064.9 2069.9,1067.7 2066.5,1069.9C2063.1,1072.2 2055.2,1073.1 2050.5,1075.2C2045.8,1077.2 2042.8,1082.4 2038.3,1082.2C2033.8,1082.0 2026.0,1077.7 2023.7,1074.1C2021.3,1070.4 2021.5,1063.8 2024.2,1060.3C2026.8,1056.8 2035.1,1055.0 2039.7,1053.2C2044.3,1051.4 2046.6,1048.3 2051.7,1049.6Z"/></g><path d="M233.5,379.8 C241.4,380.6 267.6,381.1 280.7,385.0 C293.7,388.9 303.3,397.2 312.1,403.3 C320.8,409.4 331.3,416.0 333.0,421.7 C334.8,427.3 329.5,433.4 322.5,437.4 C315.6,441.3 301.6,446.1 291.1,445.2 C280.7,444.3 268.4,438.7 259.7,432.1 C251.0,425.6 243.1,414.7 238.8,406.0 C234.4,397.2 234.4,384.1 233.5,379.8" fill="#c0e2c1"/><path d="M563.4,573.5 C573.8,572.6 610.5,563.0 626.2,568.3 C641.9,573.5 653.3,590.1 657.6,604.9 C662.0,619.7 661.1,647.7 652.4,657.3 C643.7,666.9 618.4,666.0 605.3,662.5 C592.2,659.0 580.8,651.2 573.8,636.3 C566.9,621.5 565.1,584.0 563.4,573.5" fill="#c0e2c1"/><path d="M678.6,898.1 C687.3,896.4 717.0,885.9 730.9,887.6 C744.9,889.4 757.1,894.6 762.3,908.6 C767.6,922.5 771.9,960.1 762.3,971.4 C752.7,982.7 718.7,981.9 704.7,976.6 C690.8,971.4 682.9,953.1 678.6,940.0 C674.2,926.9 678.6,905.1 678.6,898.1" fill="#c0e2c1"/><path d="M1013.6,327.4 C1024.1,326.5 1062.5,316.1 1076.5,322.2 C1090.4,328.3 1102.6,354.5 1097.4,364.1 C1092.2,373.7 1060.8,380.6 1045.1,379.8 C1029.3,378.9 1008.4,367.6 1003.2,358.8 C997.9,350.1 1011.9,332.7 1013.6,327.4" fill="#c0e2c1"/><path d="M888.0,835.3 C895.0,835.3 922.9,824.8 929.9,835.3 C936.8,845.7 936.8,887.6 929.9,898.1 C922.9,908.6 895.0,908.6 888.0,898.1 C881.0,887.6 888.0,845.7 888.0,835.3" fill="#c0e2c1"/><path d="M542.4,803.9 C552.0,801.2 592.2,783.8 600.0,788.2 C607.9,792.5 597.4,822.2 589.6,830.0 C581.7,837.9 560.8,839.6 552.9,835.3 C545.1,830.9 544.2,809.1 542.4,803.9" fill="#c0e2c1"/><path d="M542.4,856.2 C547.7,856.2 568.6,850.1 573.8,856.2 C579.1,862.3 579.1,886.8 573.8,892.9 C568.6,899.0 547.7,899.0 542.4,892.9 C537.2,886.8 542.4,862.3 542.4,856.2" fill="#c0e2c1"/><path d="M2035.8,207.0 C2055.0,207.0 2131.8,186.9 2151.0,207.0 C2170.2,227.1 2157.1,307.3 2151.0,327.4 C2144.9,347.5 2124.8,330.0 2114.4,327.4 C2103.9,324.8 2094.7,319.6 2088.2,311.7 C2081.6,303.9 2080.3,290.8 2075.1,280.3 C2069.8,269.8 2063.3,261.1 2056.8,248.9 C2050.2,236.7 2039.3,214.0 2035.8,207.0" fill="#c0e2c1"/><path d="M1653.6,463.5 C1663.2,461.4 1694.6,447.8 1711.2,450.5 C1727.8,453.1 1748.7,467.5 1753.1,479.3 C1757.5,491.0 1750.5,513.3 1737.4,521.1 C1724.3,529.0 1688.5,529.9 1674.6,526.4 C1660.6,522.9 1657.1,510.7 1653.6,500.2 C1650.1,489.7 1653.6,469.7 1653.6,463.5" fill="#c0e2c1"/><path d="M1407.5,364.1 C1413.7,363.2 1436.3,354.5 1444.2,358.8 C1452.0,363.2 1457.3,382.4 1454.7,390.2 C1452.0,398.1 1436.3,405.1 1428.5,406.0 C1420.6,406.8 1411.0,402.5 1407.5,395.5 C1404.1,388.5 1407.5,369.3 1407.5,364.1" fill="#c0e2c1"/><path d="M1622.2,296.0 C1630.9,296.0 1665.8,291.6 1674.6,296.0 C1683.3,300.4 1683.3,317.8 1674.6,322.2 C1665.8,326.5 1630.9,326.5 1622.2,322.2 C1613.5,317.8 1622.2,300.4 1622.2,296.0" fill="#c0e2c1"/><path d="M1308.1,319.6 C1315.0,318.3 1342.1,308.7 1350.0,311.7 C1357.8,314.8 1360.4,332.7 1355.2,337.9 C1350.0,343.1 1326.4,346.2 1318.5,343.1 C1310.7,340.1 1309.8,323.5 1308.1,319.6" fill="#c0e2c1"/><path d="M1507.0,243.6 C1512.3,242.8 1533.2,234.9 1538.4,238.4 C1543.7,241.9 1542.8,259.4 1538.4,264.6 C1534.1,269.8 1517.5,273.3 1512.3,269.8 C1507.0,266.3 1507.9,248.0 1507.0,243.6" fill="#c0e2c1"/><path d="M1423.3,720.1 C1433.7,720.1 1474.7,717.5 1486.1,720.1 C1497.4,722.7 1500.9,733.2 1491.3,735.8 C1481.7,738.4 1439.8,738.4 1428.5,735.8 C1417.1,733.2 1424.1,722.7 1423.3,720.1" fill="#c0e2c1"/><g fill="none" stroke="#a9d8fa" stroke-width="1.2"><path d="M268.0,213.0 C270.3,210.8 277.4,203.9 281.8,199.7 C286.3,195.4 290.0,190.7 294.7,187.5 C299.4,184.4 304.8,182.9 310.1,180.8 C315.3,178.7 323.5,175.9 326.2,174.9"/><path d="M390.4,358.0 C394.3,358.0 407.5,359.2 413.8,357.7 C420.0,356.2 423.6,352.1 428.0,348.9 C432.4,345.8 436.4,343.3 440.2,338.7 C443.9,334.1 447.9,326.4 450.5,321.5 C453.1,316.6 454.7,313.4 455.7,309.4 C456.7,305.4 456.3,299.5 456.4,297.6"/><path d="M349.2,409.9 C345.5,408.9 331.5,407.0 326.8,404.0 C322.0,401.0 320.8,396.6 320.7,392.1 C320.6,387.7 323.9,383.5 326.1,377.1 C328.3,370.7 331.0,358.7 334.0,353.5 C336.9,348.3 340.1,349.3 343.8,346.0 C347.6,342.7 354.4,335.7 356.5,333.6"/><path d="M239.8,249.3 C241.1,252.0 245.3,261.7 247.5,265.9 C249.7,270.1 249.5,271.1 252.8,274.7 C256.1,278.3 263.5,284.2 267.3,287.5 C271.0,290.9 274.1,290.1 275.3,295.0 C276.5,299.9 275.9,312.0 274.2,316.8 C272.5,321.6 266.6,322.8 265.1,324.0"/><path d="M221.4,215.6 C223.6,212.6 229.3,201.7 234.8,197.7 C240.2,193.7 248.4,191.5 254.0,191.8 C259.6,192.1 263.3,196.6 268.1,199.5 C272.9,202.4 278.4,206.2 283.0,209.1 C287.6,212.0 289.9,215.1 295.6,217.0 C301.4,218.9 313.7,220.0 317.3,220.6"/><path d="M200.8,400.4 C199.5,403.8 192.9,414.0 193.1,421.0 C193.2,427.9 196.8,437.1 201.7,442.1 C206.7,447.2 216.9,448.8 222.8,451.1 C228.7,453.4 234.8,455.1 237.1,455.8"/><path d="M293.3,407.2 C295.5,409.8 304.8,416.1 306.7,422.8 C308.6,429.5 304.4,441.2 304.8,447.3 C305.2,453.3 309.8,454.3 309.2,459.2 C308.5,464.2 303.5,472.0 301.1,476.9 C298.7,481.8 296.0,486.6 295.0,488.5"/><path d="M266.4,352.2 C264.9,353.1 259.4,353.9 257.4,357.7 C255.5,361.5 257.7,370.6 254.8,375.1 C251.8,379.6 243.7,380.6 239.7,384.5 C235.8,388.4 232.4,396.3 230.9,398.7"/><path d="M630.4,269.6 C628.3,272.8 619.3,281.9 618.0,289.0 C616.6,296.1 622.8,304.9 622.5,312.4 C622.3,320.0 617.3,329.0 616.5,334.4 C615.7,339.9 618.1,340.1 617.8,345.1 C617.5,350.1 613.3,357.5 614.6,364.4 C616.0,371.3 622.5,380.6 625.7,386.3 C628.9,392.0 632.5,396.6 633.8,398.6"/><path d="M598.3,376.6 C595.1,376.2 584.8,377.9 578.9,374.5 C573.1,371.1 567.8,362.2 563.1,356.4 C558.4,350.5 556.3,342.8 550.8,339.6 C545.3,336.3 533.5,337.3 530.0,336.9"/><path d="M517.7,369.6 C515.2,366.5 506.3,356.1 502.7,351.3 C499.0,346.5 498.4,344.4 495.6,340.9 C492.8,337.5 490.7,333.6 485.9,330.5 C481.0,327.5 471.7,325.7 466.3,322.7 C460.9,319.8 458.5,315.1 453.5,312.9 C448.6,310.8 439.4,310.3 436.5,309.8"/><path d="M322.0,493.0 C319.3,494.9 310.2,500.0 306.0,504.0 C301.7,508.1 300.0,513.1 296.5,517.3 C293.0,521.5 289.4,525.7 285.1,529.1 C280.8,532.4 274.4,534.9 270.6,537.3 C266.8,539.7 266.3,541.2 262.2,543.4 C258.2,545.6 251.2,546.4 246.3,550.4 C241.4,554.3 235.1,564.2 232.8,567.0"/><path d="M350.0,522.0 C351.1,523.5 353.4,527.8 356.4,530.9 C359.5,534.1 365.4,536.4 368.3,540.8 C371.2,545.3 373.0,552.9 374.0,557.4 C375.1,562.0 371.9,563.3 374.6,568.0 C377.3,572.8 384.6,581.3 390.2,586.0 C395.8,590.8 401.8,595.5 408.2,596.4 C414.7,597.3 425.5,592.2 428.9,591.4"/><path d="M378.7,564.0 C381.9,561.3 390.9,551.5 397.6,547.7 C404.3,543.9 412.6,545.4 418.8,541.2 C425.1,537.0 429.9,528.9 435.2,522.7 C440.6,516.5 448.4,507.3 451.1,504.2"/><path d="M384.0,458.7 C382.7,456.5 377.6,449.8 376.1,445.6 C374.7,441.3 373.9,437.2 375.2,433.2 C376.4,429.3 380.2,424.5 383.5,421.9 C386.8,419.2 389.3,419.6 394.9,417.5 C400.5,415.3 413.4,410.4 417.1,409.0"/><path d="M207.1,479.8 C205.0,480.2 199.5,480.7 194.3,482.3 C189.2,483.8 180.9,486.4 176.1,489.3 C171.2,492.1 169.1,494.8 165.3,499.6 C161.5,504.4 155.8,511.3 153.3,517.8 C150.7,524.4 148.1,532.5 149.8,539.1 C151.6,545.7 161.4,554.2 163.7,557.3"/><path d="M396.5,520.9 C393.7,521.8 385.6,526.6 379.4,526.4 C373.2,526.2 365.4,521.0 359.4,519.6 C353.5,518.2 348.5,518.0 343.9,518.0 C339.3,518.0 333.8,519.4 331.8,519.7"/><path d="M237.7,440.6 C237.2,442.3 236.7,447.6 234.4,450.8 C232.1,453.9 229.2,456.3 223.7,459.5 C218.2,462.7 208.1,467.2 201.2,469.8 C194.2,472.5 186.6,473.4 182.0,475.3 C177.4,477.2 175.4,478.1 173.8,481.1 C172.2,484.1 173.5,488.6 172.4,493.2 C171.2,497.9 169.3,502.6 167.1,508.8 C164.9,515.1 160.4,527.2 159.1,530.9"/><path d="M188.0,472.1 C185.0,471.6 175.7,469.1 169.7,469.1 C163.8,469.2 157.8,471.6 152.2,472.6 C146.6,473.5 140.6,473.4 136.2,474.7 C131.7,476.0 127.3,479.4 125.6,480.4"/><path d="M246.6,601.9 C246.1,604.2 243.4,611.3 243.7,615.3 C244.0,619.3 246.9,620.2 248.3,625.7 C249.8,631.3 252.5,642.2 252.3,648.5 C252.0,654.8 247.9,661.1 247.0,663.6"/><path d="M221.1,425.5 C221.2,422.3 221.2,412.8 221.9,406.6 C222.7,400.3 224.3,393.8 225.5,387.9 C226.7,381.9 229.3,375.3 229.3,370.9 C229.3,366.5 227.8,363.9 225.5,361.6 C223.3,359.4 219.6,357.9 216.0,357.6 C212.3,357.3 207.4,360.4 203.8,359.7 C200.1,359.0 198.0,356.8 194.0,353.4 C190.1,350.0 182.2,341.8 179.9,339.5"/><path d="M204.3,512.2 C201.8,511.2 194.2,508.8 189.2,506.2 C184.3,503.6 180.2,497.5 174.5,496.5 C168.9,495.5 161.4,501.9 155.5,500.4 C149.7,498.8 144.5,491.2 139.4,487.1 C134.3,483.1 129.9,479.2 125.0,476.2 C120.1,473.3 113.2,472.3 109.9,469.4 C106.7,466.6 106.5,462.9 105.5,459.1 C104.5,455.3 104.2,448.7 103.9,446.6"/><path d="M404.2,479.5 C401.2,477.4 391.8,472.4 386.7,467.3 C381.7,462.2 376.4,454.1 373.7,448.7 C371.0,443.4 371.4,440.1 370.5,435.1 C369.6,430.1 368.7,421.5 368.3,418.7"/><path d="M572.1,616.1 C571.1,612.8 567.9,603.3 566.0,596.6 C564.1,590.0 563.0,583.2 560.7,576.2 C558.5,569.1 554.5,560.3 552.5,554.4 C550.6,548.6 550.9,544.7 548.9,540.9 C547.0,537.2 543.4,534.8 540.8,532.0 C538.2,529.2 534.6,525.4 533.3,524.1"/><path d="M521.8,454.2 C519.3,456.1 511.3,463.4 506.7,465.8 C502.2,468.2 499.6,466.4 494.7,468.7 C489.8,471.0 482.3,476.4 477.4,479.5 C472.4,482.6 469.4,484.4 465.1,487.2 C460.9,490.1 457.3,496.1 451.8,496.8 C446.4,497.5 438.1,491.5 432.5,491.4 C426.8,491.2 420.2,495.1 417.7,495.9"/><path d="M566.6,427.4 C567.9,428.9 570.5,432.0 574.2,436.0 C577.9,440.0 584.3,448.5 588.9,451.5 C593.5,454.5 597.7,453.4 601.9,453.8 C606.0,454.2 609.3,456.2 613.8,454.1 C618.3,452.0 624.4,446.4 628.9,441.2 C633.4,436.0 638.8,426.1 640.7,423.0"/><path d="M543.5,620.1 C543.3,623.1 543.9,633.4 542.2,638.3 C540.5,643.3 537.3,646.9 533.3,649.7 C529.3,652.4 522.8,653.1 518.1,654.7 C513.3,656.2 510.8,657.1 504.7,659.0 C498.5,660.9 488.7,665.0 481.1,666.3 C473.6,667.6 462.9,666.7 459.3,666.7"/><path d="M487.7,491.5 C486.0,492.2 481.4,496.5 477.4,496.0 C473.3,495.5 467.8,491.3 463.2,488.6 C458.6,485.9 454.0,483.0 449.7,479.8 C445.5,476.5 441.5,471.1 437.7,469.3 C433.9,467.5 431.1,470.8 427.0,469.2 C422.8,467.6 416.0,462.9 412.7,459.7 C409.5,456.5 409.8,454.4 407.5,450.1 C405.1,445.9 400.2,436.9 398.7,434.2"/><path d="M499.0,454.8 C499.4,452.9 502.8,448.2 501.2,443.7 C499.7,439.3 492.5,432.5 489.7,428.0 C487.0,423.4 486.0,422.2 484.7,416.4 C483.5,410.7 483.1,399.2 482.2,393.5 C481.3,387.8 478.9,385.7 479.3,382.4 C479.7,379.0 481.7,375.7 484.4,373.5 C487.1,371.3 491.2,372.1 495.6,369.1 C500.1,366.0 508.5,357.7 511.1,355.4"/><path d="M828.7,238.3 C829.7,235.0 832.8,225.7 834.6,218.5 C836.5,211.3 839.9,203.0 839.8,195.1 C839.8,187.2 835.0,176.9 834.4,171.2 C833.8,165.6 838.0,165.4 836.1,161.2 C834.2,157.0 825.7,150.5 823.3,146.2 C820.9,141.8 822.0,136.9 821.8,135.1"/><path d="M1062.1,381.2 C1065.0,380.5 1072.7,379.2 1079.4,377.2 C1086.1,375.2 1096.6,372.0 1102.3,369.0 C1107.9,366.1 1109.6,361.8 1113.2,359.4 C1116.8,356.9 1122.0,355.0 1123.7,354.1"/><path d="M1053.6,413.5 C1051.1,415.4 1043.9,423.5 1038.7,425.1 C1033.5,426.7 1028.8,424.0 1022.2,423.2 C1015.6,422.3 1005.0,422.9 999.1,420.0 C993.3,417.1 992.4,409.6 987.3,405.6 C982.2,401.5 973.2,399.4 968.7,395.9 C964.1,392.4 961.3,386.4 959.9,384.6"/><path d="M1018.5,357.1 C1020.8,359.7 1027.7,367.9 1032.1,372.7 C1036.5,377.4 1041.3,381.0 1045.0,385.5 C1048.7,390.0 1051.0,396.0 1054.4,399.7 C1057.8,403.5 1060.5,406.2 1065.3,408.0 C1070.0,409.7 1076.7,410.3 1082.8,410.5 C1088.8,410.7 1096.9,411.6 1101.5,409.3 C1106.1,407.0 1109.0,399.0 1110.5,396.9"/><path d="M700.6,559.1 C698.3,556.8 690.3,550.9 686.7,545.5 C683.0,540.1 681.7,530.3 678.8,526.7 C675.9,523.1 673.2,526.2 669.2,523.8 C665.2,521.4 657.7,516.9 654.9,512.4 C652.1,507.8 654.3,500.3 652.6,496.6 C650.9,492.9 646.0,491.1 644.7,490.0"/><path d="M662.4,460.8 C661.4,457.7 658.5,449.2 656.5,442.0 C654.5,434.9 651.8,424.5 650.5,417.8 C649.1,411.1 650.4,405.9 648.7,401.8 C646.9,397.6 641.9,396.4 639.9,393.1 C637.8,389.8 638.6,385.0 636.1,382.1 C633.7,379.2 630.2,378.8 625.3,375.8 C620.3,372.8 612.2,368.4 606.4,363.8 C600.6,359.3 593.2,351.0 590.5,348.4"/><path d="M1142.0,558.3 C1144.2,555.3 1151.8,544.9 1154.8,539.9 C1157.8,534.9 1156.1,531.3 1159.8,528.4 C1163.6,525.4 1172.4,523.0 1177.3,522.4 C1182.2,521.7 1185.7,522.9 1189.2,524.3 C1192.6,525.7 1193.8,529.4 1197.7,531.0 C1201.7,532.6 1208.1,535.4 1213.0,533.9 C1218.0,532.4 1224.4,526.1 1227.7,521.9 C1231.0,517.6 1232.0,510.6 1232.9,508.4"/><path d="M1081.9,515.0 C1084.0,515.4 1089.5,518.7 1094.7,517.3 C1099.8,516.0 1108.0,510.6 1112.9,507.1 C1117.8,503.5 1118.5,498.6 1124.0,496.2 C1129.4,493.8 1140.5,492.8 1145.7,492.7 C1151.0,492.5 1151.7,495.3 1155.6,495.3 C1159.4,495.4 1163.8,493.8 1168.9,492.9 C1174.1,492.1 1181.0,491.8 1186.6,490.2 C1192.2,488.6 1199.9,484.5 1202.5,483.3"/><path d="M1109.1,499.3 C1107.3,500.0 1103.1,504.1 1098.2,503.5 C1093.3,502.8 1084.9,496.8 1079.7,495.6 C1074.5,494.3 1072.7,495.5 1066.8,496.0 C1060.9,496.6 1050.1,498.5 1044.4,499.0 C1038.8,499.5 1036.0,497.4 1032.7,498.9 C1029.5,500.3 1026.3,506.2 1025.0,507.6"/><path d="M1210.3,453.7 C1212.0,452.3 1217.9,449.1 1220.3,445.3 C1222.7,441.4 1222.6,434.5 1224.5,430.3 C1226.3,426.2 1228.5,423.2 1231.3,420.1 C1234.0,417.1 1235.6,412.9 1241.0,412.0 C1246.4,411.1 1256.3,412.7 1263.7,414.6 C1271.2,416.5 1279.4,421.8 1285.6,423.5 C1291.9,425.1 1296.4,422.5 1301.0,424.5 C1305.7,426.5 1311.3,433.5 1313.4,435.3"/><path d="M1602.0,551.6 C1600.5,554.4 1595.7,562.1 1593.0,568.1 C1590.4,574.0 1588.0,580.4 1586.2,587.3 C1584.3,594.2 1580.7,602.8 1581.9,609.5 C1583.1,616.1 1591.3,624.1 1593.2,627.0"/><path d="M1588.6,500.6 C1585.7,498.2 1574.9,491.0 1571.5,485.7 C1568.2,480.4 1570.4,472.9 1568.5,468.8 C1566.6,464.7 1561.8,464.2 1560.2,460.9 C1558.6,457.7 1558.9,451.2 1558.7,449.3"/><path d="M1753.7,342.4 C1755.5,340.4 1762.7,335.7 1764.5,330.5 C1766.3,325.2 1763.0,316.0 1764.4,310.7 C1765.8,305.3 1768.9,303.0 1772.9,298.2 C1776.9,293.4 1784.3,285.2 1788.6,282.0 C1792.8,278.8 1795.0,280.2 1798.3,279.3 C1801.5,278.3 1806.4,276.8 1808.1,276.3"/><path d="M1682.6,382.5 C1681.3,384.0 1677.4,388.9 1674.8,391.8 C1672.2,394.7 1669.8,396.1 1666.9,399.8 C1664.0,403.5 1658.4,409.1 1657.5,413.9 C1656.5,418.7 1661.8,424.3 1661.2,428.5 C1660.6,432.6 1657.5,436.5 1653.6,438.8 C1649.7,441.1 1642.8,441.6 1637.9,442.6 C1633.1,443.6 1629.3,442.4 1624.5,444.8 C1619.7,447.2 1611.9,454.9 1609.4,457.0"/><path d="M2091.3,255.4 C2089.3,252.0 2082.7,239.3 2079.2,235.1 C2075.8,230.9 2074.3,232.3 2070.4,230.4 C2066.5,228.4 2059.7,228.6 2055.9,223.6 C2052.1,218.6 2049.1,204.4 2047.7,200.6"/><path d="M2098.8,216.6 C2097.8,214.5 2095.2,207.0 2092.6,204.1 C2090.1,201.2 2086.2,201.7 2083.5,199.3 C2080.9,196.9 2077.1,194.8 2076.8,189.9 C2076.4,185.0 2081.9,176.6 2081.4,169.8 C2081.0,163.0 2077.7,154.1 2074.1,148.9 C2070.5,143.7 2065.8,140.0 2059.8,138.5 C2053.8,137.1 2044.9,142.3 2038.1,140.3 C2031.2,138.3 2022.0,128.8 2018.8,126.5"/><path d="M1905.6,390.9 C1902.6,389.8 1893.7,387.1 1887.5,384.2 C1881.3,381.2 1873.4,374.6 1868.5,373.2 C1863.5,371.7 1862.1,374.9 1857.9,375.7 C1853.8,376.4 1846.1,377.5 1843.7,377.8"/><path d="M2004.2,208.6 C2002.6,206.2 1996.0,198.7 1994.4,194.1 C1992.8,189.4 1993.2,186.4 1994.6,180.9 C1995.9,175.5 1998.5,167.9 2002.5,161.5 C2006.5,155.0 2015.7,145.6 2018.4,142.5"/><path d="M2058.2,225.7 C2056.3,227.0 2053.1,232.5 2047.1,233.5 C2041.1,234.6 2028.4,230.7 2022.4,231.8 C2016.4,233.0 2014.5,237.1 2011.3,240.6 C2008.2,244.1 2005.0,250.8 2003.7,252.9"/><path d="M2028.5,331.5 C2029.2,333.2 2028.8,338.5 2032.4,341.9 C2036.0,345.3 2044.9,348.4 2050.1,352.0 C2055.3,355.6 2059.2,360.0 2063.7,363.5 C2068.2,367.0 2072.4,368.9 2076.8,372.8 C2081.3,376.8 2088.1,384.9 2090.3,387.3"/><path d="M1889.9,578.6 C1886.8,578.2 1876.9,576.1 1871.0,576.5 C1865.1,576.9 1860.8,580.7 1854.6,581.0 C1848.4,581.4 1839.1,577.8 1833.8,578.5 C1828.5,579.2 1826.5,584.7 1822.8,585.3 C1819.1,585.9 1813.5,582.6 1811.6,582.1"/><path d="M1858.4,496.2 C1858.3,499.9 1859.6,510.9 1858.1,518.4 C1856.6,525.9 1852.2,535.5 1849.4,541.5 C1846.6,547.4 1846.0,549.7 1841.5,553.8 C1837.0,558.0 1828.9,563.5 1822.6,566.5 C1816.2,569.4 1807.4,569.3 1803.4,571.6 C1799.3,573.9 1799.3,578.8 1798.5,580.3"/><path d="M1712.9,497.3 C1714.5,493.7 1718.7,480.2 1722.7,475.9 C1726.6,471.5 1730.9,470.8 1736.8,471.0 C1742.7,471.3 1752.0,476.8 1758.1,477.6 C1764.2,478.3 1768.5,476.8 1773.4,475.7 C1778.4,474.5 1783.8,472.3 1787.8,470.4 C1791.8,468.5 1796.0,465.2 1797.6,464.1"/><path d="M1711.8,619.5 C1709.5,619.7 1703.4,622.9 1698.2,620.8 C1693.0,618.8 1683.7,613.2 1680.7,607.4 C1677.6,601.7 1678.6,593.4 1680.0,586.5 C1681.4,579.7 1687.6,573.0 1689.1,566.3 C1690.6,559.6 1689.6,553.4 1688.7,546.5 C1687.8,539.5 1686.7,530.0 1683.4,524.5 C1680.2,518.9 1675.1,516.4 1669.3,513.2 C1663.5,509.9 1652.1,506.2 1648.6,504.8"/><path d="M1741.3,605.3 C1745.2,604.0 1757.8,598.0 1764.5,597.8 C1771.1,597.6 1777.0,599.8 1781.4,604.2 C1785.9,608.5 1790.3,616.3 1791.4,623.7 C1792.5,631.0 1790.8,642.4 1787.9,648.1 C1785.0,653.8 1776.3,656.4 1774.0,658.0"/><path d="M1770.4,584.8 C1771.0,583.0 1774.6,579.6 1773.7,574.3 C1772.7,568.9 1765.7,558.0 1764.8,552.7 C1763.9,547.5 1767.4,547.7 1768.3,542.9 C1769.2,538.1 1769.7,528.8 1770.2,523.8 C1770.8,518.8 1768.9,517.3 1771.3,513.1 C1773.7,508.9 1782.4,501.1 1784.6,498.7"/><path d="M1732.8,526.0 C1730.1,528.8 1721.7,539.3 1716.7,543.1 C1711.8,546.9 1708.5,548.7 1703.2,548.8 C1698.0,548.9 1691.1,543.3 1685.3,543.8 C1679.5,544.2 1674.0,550.8 1668.3,551.7 C1662.5,552.5 1656.3,549.7 1650.7,548.9 C1645.1,548.1 1639.6,549.6 1634.6,546.8 C1629.6,544.0 1625.6,535.4 1620.9,532.3 C1616.1,529.1 1608.5,528.6 1606.1,527.9"/><path d="M1745.8,630.1 C1745.6,627.0 1745.3,617.7 1744.7,611.6 C1744.1,605.4 1744.3,597.4 1742.3,593.2 C1740.2,589.0 1734.1,589.8 1732.3,586.6 C1730.4,583.4 1731.3,576.0 1731.1,573.9"/><path d="M1972.1,459.8 C1973.9,458.3 1978.5,451.9 1983.0,450.9 C1987.5,449.8 1995.2,454.5 1999.3,453.7 C2003.5,453.0 2002.8,448.7 2007.9,446.2 C2012.9,443.8 2024.0,440.5 2029.7,439.2 C2035.4,437.8 2037.1,436.5 2042.0,438.3 C2046.9,440.2 2053.7,448.4 2059.1,450.1 C2064.6,451.8 2072.2,448.9 2074.8,448.7"/><path d="M2072.9,423.8 C2075.0,422.7 2080.1,419.3 2085.8,417.0 C2091.5,414.7 2100.7,410.7 2107.3,409.9 C2114.0,409.1 2120.8,409.6 2125.6,412.2 C2130.3,414.8 2134.7,419.6 2135.8,425.3 C2136.9,431.1 2135.0,441.1 2132.4,446.8 C2129.8,452.6 2122.0,457.6 2119.9,459.8"/><path d="M1982.8,467.1 C1981.7,464.4 1977.9,455.6 1976.4,450.6 C1974.9,445.7 1975.8,442.2 1973.6,437.6 C1971.5,433.0 1966.8,427.9 1963.6,423.2 C1960.3,418.6 1956.5,414.1 1954.3,409.8 C1952.1,405.6 1951.1,399.7 1950.4,397.7"/><path d="M2038.0,482.6 C2039.7,480.2 2046.0,474.5 2048.4,468.2 C2050.9,461.9 2051.5,451.2 2052.7,444.7 C2053.9,438.3 2055.8,434.6 2055.8,429.4 C2055.9,424.2 2052.7,419.9 2053.0,413.6 C2053.2,407.4 2056.0,398.9 2057.3,391.8 C2058.7,384.7 2061.2,377.2 2060.8,371.1 C2060.4,365.0 2056.0,358.0 2055.1,355.4"/><path d="M1994.5,489.2 C1992.5,490.2 1986.8,491.1 1982.8,495.0 C1978.7,498.9 1974.7,507.6 1970.0,512.6 C1965.2,517.6 1959.8,521.6 1954.1,525.1 C1948.3,528.5 1939.8,530.7 1935.5,533.4 C1931.1,536.1 1930.2,538.5 1928.1,541.4 C1926.0,544.3 1924.0,549.1 1923.2,550.7"/><path d="M2145.5,536.4 C2145.6,534.1 2146.5,527.0 2146.1,522.9 C2145.7,518.8 2142.8,516.9 2143.3,511.7 C2143.8,506.4 2147.5,497.3 2149.2,491.4 C2150.9,485.6 2153.0,481.8 2153.2,476.4 C2153.5,471.1 2150.2,466.0 2150.6,459.3 C2151.1,452.7 2155.1,440.3 2156.0,436.5"/><path d="M2117.2,610.4 C2116.1,612.1 2114.2,616.7 2110.6,620.8 C2106.9,624.9 2098.9,631.0 2095.4,634.9 C2091.9,638.7 2092.3,641.1 2089.6,644.1 C2086.9,647.1 2081.0,649.4 2079.2,652.9 C2077.3,656.5 2076.9,661.4 2078.7,665.5 C2080.5,669.6 2084.6,674.7 2090.0,677.3 C2095.5,679.9 2107.9,680.5 2111.4,681.2"/><path d="M2032.3,447.1 C2032.5,450.2 2032.3,461.3 2033.2,466.0 C2034.2,470.6 2035.6,471.5 2038.1,475.1 C2040.5,478.6 2043.8,485.2 2048.0,487.2 C2052.3,489.2 2058.8,486.1 2063.6,487.2 C2068.4,488.4 2072.5,490.6 2076.9,494.1 C2081.4,497.5 2086.6,505.2 2090.5,507.9 C2094.4,510.6 2096.1,508.3 2100.5,510.3 C2104.9,512.4 2114.1,518.7 2116.8,520.4"/><path d="M1978.4,466.2 C1979.0,463.2 1980.5,453.2 1981.8,447.8 C1983.2,442.3 1986.9,438.2 1986.5,433.7 C1986.0,429.2 1981.1,426.0 1979.1,420.7 C1977.0,415.5 1975.5,407.3 1974.2,402.3 C1972.9,397.4 1971.9,392.8 1971.4,390.8"/><path d="M1958.2,490.2 C1957.8,492.5 1955.9,498.6 1955.9,503.5 C1955.8,508.3 1958.0,514.0 1957.9,519.3 C1957.9,524.7 1955.6,530.5 1955.5,535.5 C1955.5,540.4 1957.5,543.7 1957.6,548.9 C1957.7,554.1 1956.7,561.3 1956.0,566.7 C1955.3,572.0 1953.9,578.6 1953.4,581.0"/><path d="M316.4,783.1 C318.9,781.8 326.4,776.5 331.3,775.1 C336.3,773.7 341.2,776.9 346.1,774.7 C351.0,772.5 355.9,764.4 360.5,761.9 C365.2,759.4 367.9,759.3 374.0,759.6 C380.1,759.8 391.5,763.7 397.1,763.3 C402.7,762.9 403.7,759.6 407.6,757.4 C411.5,755.2 414.5,750.0 420.6,749.9 C426.8,749.8 440.6,755.8 444.6,756.9"/><path d="M266.4,811.3 C266.1,809.5 265.3,804.2 264.5,800.6 C263.7,797.1 265.5,793.5 261.5,790.0 C257.5,786.6 245.9,783.9 240.5,779.9 C235.2,775.9 233.5,768.9 229.5,766.3 C225.4,763.7 218.3,764.7 216.1,764.3"/><path d="M189.6,650.8 C187.8,653.1 182.2,659.3 178.9,664.5 C175.7,669.8 172.6,677.0 170.0,682.1 C167.4,687.2 166.9,689.8 163.1,695.3 C159.4,700.7 150.5,709.0 147.6,714.8 C144.7,720.5 144.6,725.8 145.5,729.7 C146.5,733.5 152.0,736.7 153.2,738.1"/><path d="M168.9,731.3 C172.6,730.6 184.2,727.9 191.0,727.1 C197.8,726.3 205.0,728.7 209.7,726.5 C214.4,724.3 217.0,719.2 219.4,714.0 C221.7,708.8 224.6,700.9 223.8,695.2 C222.9,689.5 217.9,684.4 214.3,679.8 C210.7,675.2 205.7,670.6 202.1,667.4 C198.5,664.2 194.3,661.8 192.7,660.7"/><path d="M337.9,812.9 C336.4,810.4 330.8,804.5 329.2,798.2 C327.5,792.0 329.4,782.3 327.9,775.6 C326.4,768.9 323.2,763.7 320.3,758.0 C317.4,752.4 312.0,744.6 310.4,741.9"/><path d="M322.1,640.6 C319.5,641.8 310.5,643.5 306.6,647.7 C302.7,651.8 300.9,660.9 298.5,665.3 C296.1,669.7 293.9,670.5 292.3,674.1 C290.6,677.8 291.3,683.3 288.7,687.2 C286.1,691.1 278.6,695.9 276.6,697.7"/><path d="M376.8,812.6 C375.0,810.1 368.6,804.3 365.9,797.9 C363.1,791.5 361.2,780.9 360.3,774.0 C359.3,767.2 359.5,762.6 360.1,756.8 C360.8,751.1 361.3,745.6 364.3,739.3 C367.3,733.1 376.4,725.1 378.0,719.4 C379.6,713.7 374.0,709.2 374.0,705.1 C374.1,701.1 377.6,696.8 378.3,695.1"/><path d="M352.6,646.7 C350.2,645.5 344.3,640.7 338.5,639.7 C332.7,638.7 324.5,640.3 317.9,640.4 C311.3,640.4 305.0,639.2 298.8,640.0 C292.7,640.9 287.0,646.4 280.9,645.5 C274.7,644.6 265.7,638.7 262.1,634.7 C258.4,630.6 259.4,623.6 258.9,621.3"/><path d="M284.0,723.3 C284.0,726.4 285.7,735.1 283.7,741.7 C281.6,748.2 273.0,756.9 271.9,762.6 C270.7,768.3 274.5,769.9 276.8,775.8 C279.0,781.8 280.9,792.4 285.4,798.3 C290.0,804.1 298.2,807.6 304.1,811.0 C310.0,814.3 317.3,815.4 320.8,818.3 C324.3,821.2 324.3,826.7 324.9,828.4"/><path d="M237.4,673.7 C238.5,675.1 242.9,676.9 243.8,682.1 C244.8,687.3 243.2,697.5 243.3,704.9 C243.3,712.2 243.8,718.8 244.3,726.1 C244.7,733.4 242.9,742.0 245.8,748.6 C248.7,755.2 256.7,762.3 261.8,765.6 C266.8,768.9 273.7,768.0 276.1,768.4"/><path d="M380.6,651.7 C381.6,648.3 383.5,636.9 386.9,631.2 C390.3,625.5 394.4,620.5 400.7,617.4 C407.1,614.4 417.7,615.4 425.1,612.9 C432.5,610.4 439.3,603.4 444.9,602.3 C450.6,601.1 454.0,603.6 459.1,606.1 C464.3,608.7 473.1,615.6 475.9,617.5"/><path d="M367.2,762.4 C366.5,764.4 364.9,770.2 362.8,774.4 C360.7,778.6 355.7,782.1 354.6,787.7 C353.5,793.3 352.7,802.3 356.0,808.0 C359.4,813.7 369.1,819.2 374.6,821.8 C380.1,824.3 385.0,824.7 389.1,823.2 C393.3,821.7 397.9,814.5 399.6,812.7"/><path d="M340.2,838.7 C338.5,837.8 335.5,834.9 330.1,833.1 C324.6,831.2 313.0,827.9 307.5,827.7 C302.0,827.4 300.8,831.2 297.2,831.7 C293.5,832.2 289.5,831.6 285.8,830.8 C282.2,829.9 280.5,827.0 275.4,826.6 C270.3,826.1 261.0,829.3 255.5,828.0 C250.0,826.7 245.9,821.2 242.2,818.8 C238.4,816.5 234.6,814.6 233.1,813.7"/><path d="M240.2,692.3 C242.2,690.1 248.6,682.2 252.5,679.2 C256.3,676.1 259.5,676.3 263.2,673.9 C266.8,671.6 270.9,669.6 274.5,665.1 C278.1,660.5 283.2,652.2 284.9,646.7 C286.6,641.2 286.3,637.8 284.9,631.8 C283.4,625.8 277.6,614.1 276.1,610.6"/><path d="M426.3,664.9 C429.9,663.6 441.8,659.5 448.3,657.3 C454.8,655.2 460.5,651.6 465.2,651.9 C469.8,652.2 472.1,658.6 476.3,659.1 C480.6,659.5 486.6,656.6 490.6,654.7 C494.5,652.7 497.3,650.0 500.1,647.6 C503.0,645.2 506.3,641.4 507.6,640.2"/><path d="M635.2,744.6 C637.5,743.9 644.6,740.8 649.1,740.4 C653.6,739.9 656.9,741.0 662.1,741.9 C667.4,742.8 675.9,743.9 680.6,745.9 C685.3,748.0 685.1,751.2 690.1,754.1 C695.0,757.0 707.0,761.9 710.4,763.4"/><path d="M606.1,851.2 C607.7,852.4 612.8,854.9 615.6,858.2 C618.3,861.6 619.7,865.7 622.6,871.5 C625.6,877.3 630.8,887.7 633.2,893.2 C635.6,898.8 636.3,901.1 636.9,904.9 C637.5,908.6 636.7,913.8 636.7,915.6"/><path d="M472.2,641.6 C470.6,640.4 466.5,637.1 462.5,634.6 C458.5,632.2 453.3,629.4 448.1,627.0 C442.8,624.7 436.3,621.9 430.8,620.5 C425.3,619.1 420.3,619.0 415.1,618.7 C409.9,618.5 403.4,620.4 399.5,619.0 C395.6,617.7 396.6,611.9 391.9,610.6 C387.1,609.4 374.5,611.3 371.0,611.4"/><path d="M503.8,737.0 C500.8,737.7 490.0,739.5 485.9,741.7 C481.8,743.8 483.6,746.7 479.1,750.0 C474.6,753.2 466.2,758.6 459.0,761.2 C451.7,763.8 441.5,766.1 435.7,765.7 C429.9,765.3 427.9,762.0 424.2,758.8 C420.4,755.5 414.9,748.3 413.1,746.3"/><path d="M611.4,829.0 C612.9,827.3 615.5,821.8 620.7,819.2 C625.9,816.5 637.3,813.3 642.8,813.0 C648.3,812.6 648.3,814.4 653.7,817.2 C659.1,820.0 669.7,825.6 675.0,829.9 C680.2,834.3 681.7,840.7 685.1,843.4 C688.6,846.2 692.4,844.8 695.6,846.5 C698.7,848.2 702.6,852.5 704.0,853.7"/><path d="M607.2,783.8 C604.9,786.3 595.4,793.7 593.5,798.9 C591.6,804.1 595.0,808.8 595.8,814.9 C596.7,820.9 600.4,829.7 598.8,835.4 C597.1,841.1 589.3,845.0 585.8,849.1 C582.3,853.1 581.0,857.5 577.8,859.6 C574.6,861.8 572.3,861.6 566.7,862.0 C561.1,862.5 550.5,863.4 544.0,862.3 C537.5,861.2 530.4,856.6 527.7,855.4"/><path d="M646.7,797.0 C648.8,795.9 655.0,791.2 659.1,790.9 C663.1,790.6 665.4,793.1 671.0,795.0 C676.6,796.9 686.5,800.5 692.4,802.3 C698.4,804.1 700.8,806.3 706.9,805.8 C712.9,805.3 723.2,800.7 728.8,799.1 C734.5,797.5 736.9,795.4 740.7,796.3 C744.6,797.3 749.5,799.9 752.0,804.6 C754.5,809.3 755.3,821.2 755.9,824.5"/><path d="M516.7,796.8 C517.4,799.9 520.3,809.5 521.3,815.3 C522.3,821.2 524.5,826.2 522.8,831.9 C521.1,837.6 513.1,842.7 511.2,849.3 C509.3,855.9 509.9,864.3 511.2,871.5 C512.5,878.8 518.7,887.6 519.0,893.0 C519.3,898.3 514.4,900.2 512.9,903.7 C511.4,907.2 510.5,912.3 510.0,914.0"/><path d="M611.6,779.2 C613.1,780.8 619.5,783.4 620.6,788.7 C621.8,794.0 616.6,803.9 618.3,811.0 C620.1,818.0 630.1,824.1 631.0,831.0 C631.9,837.8 626.1,845.6 623.8,852.1 C621.5,858.5 617.3,863.7 617.2,869.8 C617.1,875.9 624.0,882.5 623.0,888.6 C622.0,894.8 613.7,900.4 611.2,906.7 C608.8,913.0 608.7,923.3 608.2,926.6"/><path d="M591.9,680.3 C594.6,677.7 603.5,669.0 608.1,664.9 C612.8,660.8 616.8,659.4 619.8,655.7 C622.8,652.0 624.9,647.4 626.1,642.7 C627.2,638.1 626.7,630.1 626.9,627.6"/><path d="M602.7,810.3 C602.6,808.4 603.8,801.9 602.1,798.6 C600.4,795.3 597.0,792.7 592.6,790.6 C588.1,788.5 580.2,789.0 575.3,785.9 C570.3,782.7 566.6,775.6 562.8,771.8 C559.0,768.0 554.2,767.9 552.6,762.8 C550.9,757.8 553.3,746.8 552.9,741.5 C552.5,736.3 549.2,734.8 550.1,731.2 C550.9,727.6 556.6,721.7 557.9,719.8"/><path d="M311.5,874.6 C310.4,876.8 308.2,883.8 304.8,887.8 C301.5,891.8 295.1,896.6 291.2,898.6 C287.3,900.6 284.4,898.1 281.2,899.9 C278.0,901.7 274.9,905.4 272.1,909.3 C269.2,913.1 265.2,920.7 263.9,923.0"/><path d="M251.3,1064.6 C249.7,1065.2 246.7,1066.9 241.4,1068.2 C236.0,1069.5 225.6,1069.5 219.2,1072.2 C212.8,1075.0 207.7,1082.1 203.1,1084.6 C198.4,1087.2 195.7,1089.1 191.3,1087.8 C186.9,1086.4 179.5,1080.9 176.5,1076.7 C173.5,1072.5 175.0,1067.5 173.5,1062.4 C171.9,1057.3 170.0,1051.3 167.3,1046.2 C164.7,1041.0 159.3,1034.0 157.7,1031.5"/><path d="M205.5,967.6 C206.9,970.1 213.3,978.2 214.1,982.6 C214.9,986.9 210.2,988.2 210.2,993.6 C210.1,999.0 211.2,1010.0 214.0,1015.2 C216.9,1020.4 223.5,1020.0 227.2,1024.7 C230.8,1029.4 234.6,1038.4 235.8,1043.5 C237.1,1048.6 236.7,1051.5 234.7,1055.2 C232.7,1059.0 225.6,1064.2 223.8,1066.0"/><path d="M358.5,957.9 C360.8,954.9 368.1,943.1 372.4,939.8 C376.6,936.4 379.0,936.6 384.1,937.7 C389.1,938.7 396.8,944.9 402.8,946.0 C408.8,947.0 415.0,944.1 420.1,943.9 C425.2,943.6 429.7,945.2 433.5,944.7 C437.3,944.3 438.4,943.6 442.9,941.2 C447.5,938.8 457.8,932.2 460.8,930.4"/><path d="M336.6,906.6 C340.5,905.4 354.2,900.8 359.8,899.4 C365.5,897.9 366.9,897.1 370.5,897.9 C374.1,898.8 377.4,903.1 381.2,904.3 C385.0,905.5 388.1,904.7 393.2,905.1 C398.4,905.5 406.0,906.5 411.9,906.8 C417.9,907.1 426.1,907.1 429.0,907.1"/><path d="M190.2,1011.1 C186.3,1011.7 171.9,1012.1 166.5,1014.7 C161.2,1017.3 160.6,1022.9 158.0,1026.8 C155.5,1030.7 152.4,1034.3 151.0,1038.3 C149.7,1042.2 152.2,1045.3 149.7,1050.5 C147.3,1055.7 138.5,1064.1 136.5,1069.5 C134.5,1074.9 137.5,1080.9 137.7,1083.1"/><path d="M398.4,902.8 C398.5,900.0 398.7,892.4 399.1,886.0 C399.5,879.5 401.6,869.9 400.7,864.2 C399.9,858.5 394.5,855.4 394.0,851.7 C393.6,848.1 396.2,845.4 397.8,842.3 C399.5,839.1 403.1,834.3 404.1,832.7"/><path d="M342.6,947.5 C344.6,947.4 350.1,948.4 354.2,947.1 C358.3,945.8 361.5,941.8 367.1,939.8 C372.8,937.7 382.2,933.9 388.1,934.7 C394.1,935.5 397.0,943.5 402.8,944.7 C408.7,946.0 419.7,942.6 423.1,942.2"/><path d="M360.0,883.0 C357.3,882.5 350.1,879.9 343.6,879.7 C337.2,879.6 326.9,882.3 321.3,882.3 C315.7,882.2 313.3,879.2 309.8,879.6 C306.3,879.9 303.8,881.1 300.2,884.5 C296.6,887.9 294.2,897.1 288.1,899.9 C282.0,902.7 269.4,902.2 263.6,901.4 C257.9,900.5 255.5,895.8 253.8,894.7"/><path d="M353.0,1020.6 C351.0,1020.6 344.9,1019.6 341.2,1020.6 C337.5,1021.5 335.6,1024.4 330.7,1026.3 C325.9,1028.3 317.0,1031.7 312.3,1032.2 C307.6,1032.6 307.8,1027.2 302.7,1028.8 C297.6,1030.4 285.2,1039.4 281.7,1041.5"/><path d="M220.5,913.1 C220.5,910.6 222.4,904.2 220.6,898.0 C218.7,891.8 211.0,881.7 209.4,876.0 C207.8,870.2 211.9,867.9 211.0,863.3 C210.1,858.8 205.4,850.9 204.3,848.5"/><path d="M281.8,863.9 C282.9,865.4 285.2,870.8 288.6,872.8 C292.0,874.7 297.6,873.0 302.1,875.5 C306.6,878.0 309.8,883.8 315.6,887.7 C321.5,891.6 331.9,895.8 337.3,899.0 C342.8,902.2 346.5,905.6 348.4,906.9"/><path d="M296.4,1040.8 C294.7,1042.8 290.2,1049.2 286.5,1053.0 C282.8,1056.8 276.4,1058.1 274.1,1063.6 C271.8,1069.2 273.3,1080.8 272.8,1086.2 C272.2,1091.6 269.4,1091.0 270.7,1096.2 C271.9,1101.3 276.3,1111.7 280.1,1117.2 C284.0,1122.7 288.5,1124.5 293.7,1129.0 C298.8,1133.5 308.1,1141.6 311.0,1144.1"/><path d="M383.0,876.0 C385.2,878.0 390.6,885.2 396.3,888.1 C402.0,891.0 411.2,891.7 417.2,893.2 C423.1,894.6 425.9,897.0 432.1,896.8 C438.2,896.7 447.0,891.0 454.2,892.2 C461.3,893.4 471.6,902.2 475.1,904.2"/><path d="M217.0,871.4 C213.1,871.5 200.6,870.7 193.8,872.0 C186.9,873.3 180.6,876.3 175.9,879.2 C171.3,882.2 168.8,886.1 166.0,889.8 C163.2,893.4 160.2,899.4 159.1,901.3"/><path d="M177.3,955.4 C176.7,953.2 177.0,945.7 173.4,942.1 C169.8,938.5 162.0,937.2 155.7,933.7 C149.4,930.1 142.1,925.3 135.7,920.7 C129.3,916.0 120.2,908.3 117.1,905.9"/><path d="M272.2,967.8 C274.5,971.1 281.9,982.6 286.0,987.7 C290.1,992.7 294.9,994.4 296.6,998.0 C298.4,1001.6 294.1,1005.4 296.3,1009.3 C298.5,1013.2 305.5,1018.4 309.8,1021.5 C314.1,1024.6 317.4,1027.1 322.0,1027.8 C326.7,1028.5 332.7,1027.0 337.8,1025.7 C342.8,1024.5 350.0,1021.1 352.5,1020.2"/><path d="M180.5,990.0 C184.2,990.7 197.3,992.8 202.6,994.2 C208.0,995.5 207.2,998.6 212.6,998.0 C218.0,997.5 229.3,992.5 235.0,990.9 C240.8,989.2 241.2,988.0 247.2,988.1 C253.1,988.2 264.6,988.6 270.8,991.5 C277.0,994.5 281.8,1001.5 284.5,1005.7 C287.2,1009.9 286.5,1014.9 286.9,1016.7"/><path d="M596.1,966.4 C598.4,966.0 605.1,964.2 610.1,963.9 C615.0,963.6 620.1,964.4 625.7,964.5 C631.3,964.6 638.6,963.8 643.6,964.4 C648.6,965.0 653.6,967.4 655.6,968.0"/><path d="M614.6,890.8 C611.8,892.1 602.6,897.4 597.9,898.5 C593.1,899.5 590.7,895.2 586.0,897.1 C581.3,898.9 572.7,905.2 569.7,909.4 C566.7,913.6 567.4,916.8 568.1,922.2 C568.9,927.6 571.4,936.8 574.2,941.8 C577.0,946.7 583.1,950.1 584.9,951.8"/><path d="M531.3,884.1 C527.5,885.5 514.3,891.9 508.5,892.8 C502.7,893.8 500.4,893.5 496.3,889.7 C492.2,885.9 487.1,876.0 483.7,870.0 C480.3,864.0 477.2,856.6 475.9,853.9"/><path d="M447.5,925.3 C448.3,926.9 449.1,932.2 452.3,934.5 C455.6,936.8 463.5,936.1 467.1,939.2 C470.8,942.2 471.5,948.8 474.3,952.9 C477.0,956.9 478.7,959.5 483.8,963.5 C488.9,967.5 501.1,974.7 504.6,977.0"/><path d="M636.0,1059.2 C633.8,1058.9 627.8,1060.0 622.7,1057.2 C617.7,1054.4 612.4,1045.2 605.9,1042.4 C599.4,1039.6 589.2,1040.1 583.7,1040.4 C578.3,1040.7 575.9,1040.7 573.1,1044.0 C570.3,1047.4 569.6,1054.7 567.0,1060.7 C564.4,1066.7 561.1,1076.4 557.5,1080.1 C553.9,1083.7 550.4,1084.0 545.4,1082.8 C540.5,1081.5 530.6,1074.3 527.6,1072.7"/><path d="M527.0,890.9 C523.6,892.6 512.0,899.4 506.2,901.1 C500.4,902.9 496.2,901.6 492.2,901.6 C488.2,901.6 485.9,903.5 482.1,901.0 C478.2,898.5 474.2,889.3 469.1,886.5 C464.0,883.6 457.8,884.8 451.5,883.9 C445.3,883.0 438.8,880.7 431.7,881.2 C424.5,881.7 414.4,885.9 408.7,886.9 C403.0,887.9 399.5,887.1 397.6,887.1"/><path d="M609.7,1047.1 C606.4,1049.2 594.3,1054.0 590.3,1059.8 C586.2,1065.6 585.4,1074.6 585.4,1081.8 C585.5,1089.1 590.0,1096.9 590.6,1103.3 C591.2,1109.6 589.2,1117.3 588.9,1120.2"/><path d="M630.5,1029.5 C634.0,1029.9 645.5,1030.1 651.4,1031.5 C657.3,1032.9 661.0,1035.6 666.1,1037.8 C671.3,1040.0 677.3,1043.8 682.3,1044.7 C687.4,1045.6 690.6,1041.6 696.2,1043.1 C701.8,1044.7 710.5,1049.8 716.0,1054.2 C721.5,1058.6 727.0,1067.1 729.2,1069.7"/><path d="M532.5,979.8 C533.1,977.5 534.9,970.6 535.7,965.7 C536.6,960.9 538.7,954.9 537.4,950.6 C536.2,946.2 531.4,942.8 528.5,939.4 C525.6,936.1 521.5,932.0 520.1,930.6"/><path d="M479.5,984.8 C477.4,988.2 469.6,999.0 466.5,1004.9 C463.4,1010.9 464.5,1016.9 460.8,1020.7 C457.1,1024.6 448.9,1026.6 444.2,1028.0 C439.5,1029.4 435.8,1026.9 432.6,1029.1 C429.3,1031.2 426.1,1038.7 424.8,1040.7"/><path d="M431.4,1034.0 C429.9,1037.1 427.3,1047.5 422.4,1052.5 C417.4,1057.6 407.0,1062.0 401.9,1064.1 C396.7,1066.2 394.6,1063.4 391.3,1065.3 C388.0,1067.2 386.0,1073.4 382.3,1075.5 C378.6,1077.7 371.4,1077.9 369.2,1078.4"/><path d="M621.0,1029.9 C619.9,1031.8 616.1,1038.2 614.2,1041.6 C612.3,1045.1 609.3,1046.5 609.4,1050.7 C609.6,1054.8 610.8,1061.7 615.0,1066.5 C619.2,1071.2 627.8,1077.4 634.6,1079.2 C641.4,1080.9 652.2,1077.5 655.7,1077.2"/><path d="M603.7,924.1 C601.3,922.9 592.5,920.4 589.6,916.9 C586.7,913.5 585.5,907.7 586.3,903.4 C587.1,899.1 592.0,895.4 594.3,891.2 C596.7,886.9 599.6,880.0 600.6,877.8"/><path d="M568.0,1046.6 C567.8,1042.6 566.6,1030.8 566.9,1022.7 C567.2,1014.7 567.6,1004.3 569.7,998.5 C571.8,992.7 576.1,992.8 579.4,988.0 C582.8,983.2 587.1,976.4 589.8,969.9 C592.4,963.4 594.3,952.5 595.3,949.0"/><path d="M843.4,834.6 C845.6,834.3 850.9,833.3 856.8,833.1 C862.7,832.9 872.9,831.3 878.5,833.4 C884.2,835.4 886.8,841.2 890.7,845.4 C894.6,849.7 898.8,852.9 901.8,858.6 C904.9,864.4 909.3,872.9 908.9,879.9 C908.6,887.0 901.8,895.9 899.6,900.9 C897.4,906.0 896.3,908.7 895.6,910.2"/><path d="M878.6,684.4 C880.6,682.8 886.4,678.9 890.5,675.2 C894.6,671.4 896.9,664.0 903.1,662.1 C909.4,660.2 919.9,664.3 928.0,663.8 C936.1,663.3 945.5,658.2 951.9,659.2 C958.3,660.2 962.4,666.5 966.4,669.8 C970.4,673.0 973.4,674.3 975.9,678.5 C978.3,682.8 980.2,692.3 981.1,695.0"/><path d="M845.5,839.1 C844.2,837.6 840.3,832.8 837.7,830.0 C835.2,827.2 835.4,824.4 830.1,822.2 C824.7,820.1 811.9,817.8 805.9,817.0 C799.9,816.1 795.9,817.0 793.9,817.0"/><path d="M763.8,653.0 C762.3,651.3 759.4,646.4 754.7,642.9 C750.0,639.4 741.9,635.9 735.7,632.0 C729.5,628.1 724.1,621.3 717.6,619.6 C711.0,617.9 703.0,620.1 696.3,621.9 C689.6,623.6 680.7,628.7 677.5,630.1"/><path d="M756.7,745.7 C756.7,747.8 755.7,754.2 756.9,758.4 C758.1,762.7 760.1,766.3 764.1,771.4 C768.0,776.6 778.0,783.7 780.9,789.4 C783.8,795.1 783.2,800.1 781.6,805.7 C780.0,811.3 772.5,816.9 771.2,823.0 C770.0,829.2 773.7,839.1 774.2,842.4"/><path d="M998.1,689.7 C995.9,688.8 988.2,687.3 985.2,684.1 C982.1,681.0 982.8,675.4 979.8,671.0 C976.7,666.5 972.4,661.9 966.9,657.4 C961.4,652.9 950.3,648.3 946.7,644.1 C943.1,639.9 946.7,635.9 945.3,632.3 C943.8,628.6 939.2,623.7 938.0,622.0"/><path d="M1016.2,701.3 C1015.9,699.6 1015.6,695.6 1014.6,691.2 C1013.6,686.7 1012.5,678.7 1010.0,674.5 C1007.4,670.4 1003.9,669.6 999.3,666.3 C994.7,663.0 985.0,656.8 982.2,654.9"/><path d="M1075.6,655.3 C1074.8,653.4 1074.1,646.5 1071.2,643.8 C1068.2,641.1 1060.9,641.7 1057.8,639.1 C1054.6,636.5 1052.3,631.6 1052.1,628.2 C1051.8,624.8 1052.6,621.8 1056.4,618.5 C1060.2,615.2 1071.8,610.0 1074.9,608.3"/><path d="M737.7,1040.7 C739.4,1042.6 744.8,1049.7 748.2,1052.3 C751.6,1054.9 754.2,1055.9 757.9,1056.3 C761.5,1056.7 765.9,1053.5 769.9,1054.7 C773.8,1055.9 775.8,1060.4 781.6,1063.4 C787.4,1066.3 798.7,1069.0 804.6,1072.3 C810.5,1075.6 812.4,1081.3 817.1,1083.1 C821.7,1084.9 830.0,1083.1 832.5,1083.1"/><path d="M727.7,1060.9 C726.6,1062.3 724.1,1067.6 721.2,1069.3 C718.3,1071.1 715.1,1072.1 710.3,1071.5 C705.4,1070.8 699.1,1066.2 692.3,1065.4 C685.6,1064.7 677.6,1065.8 669.9,1066.9 C662.1,1067.9 653.6,1070.4 645.5,1071.6 C637.5,1072.7 627.5,1075.0 621.5,1073.7 C615.5,1072.4 613.2,1068.4 609.4,1063.7 C605.6,1059.1 600.5,1048.8 598.7,1045.8"/><path d="M818.8,861.0 C817.2,859.9 814.1,855.0 809.5,854.3 C805.0,853.6 797.0,853.7 791.6,857.0 C786.1,860.3 781.4,867.8 776.7,874.1 C772.0,880.5 767.9,890.2 763.4,895.3 C759.0,900.3 752.1,902.9 749.8,904.4"/><path d="M700.7,948.1 C700.2,945.7 701.2,937.6 697.8,933.5 C694.4,929.5 685.5,927.7 680.5,923.6 C675.4,919.5 670.4,914.8 667.6,908.7 C664.8,902.6 664.3,894.2 663.9,886.8 C663.5,879.5 667.3,871.5 665.2,864.5 C663.1,857.5 653.5,848.1 651.2,844.8"/><path d="M821.6,876.4 C824.6,879.0 834.1,888.6 839.9,892.1 C845.6,895.6 849.8,895.2 856.3,897.4 C862.9,899.5 871.5,903.8 879.2,904.9 C886.9,906.0 898.7,904.2 902.6,904.1"/><path d="M835.8,978.9 C838.8,979.3 849.2,982.0 853.9,980.9 C858.6,979.8 860.5,974.5 864.0,972.2 C867.4,970.0 870.4,968.5 874.6,967.2 C878.9,966.0 883.6,966.4 889.6,964.5 C895.5,962.6 906.8,957.5 910.3,956.1"/><path d="M979.5,907.5 C976.8,907.4 969.1,905.6 963.0,907.3 C956.9,909.0 948.7,915.5 943.0,917.6 C937.3,919.6 933.4,921.3 929.0,919.8 C924.5,918.3 922.0,910.7 916.3,908.3 C910.7,905.9 900.4,906.6 895.2,905.4 C890.1,904.1 887.1,901.5 885.4,900.8"/><path d="M1020.9,1058.5 C1018.6,1056.6 1011.9,1050.2 1007.0,1047.1 C1002.0,1044.0 995.7,1041.9 991.0,1040.0 C986.4,1038.0 984.0,1038.5 979.1,1035.4 C974.2,1032.2 964.5,1023.6 961.6,1021.2"/><path d="M1068.4,858.2 C1067.5,861.0 1065.8,869.8 1063.1,875.0 C1060.4,880.2 1054.7,885.4 1052.3,889.4 C1050.0,893.5 1050.8,895.9 1048.9,899.1 C1047.0,902.3 1044.5,905.2 1040.9,908.7 C1037.2,912.1 1031.2,917.6 1027.1,920.0 C1022.9,922.4 1020.7,924.6 1015.8,923.3 C1011.0,921.9 1000.9,913.8 998.0,911.9"/><path d="M1123.2,895.9 C1121.8,894.5 1120.0,890.2 1115.1,887.8 C1110.2,885.4 1098.6,883.8 1093.7,881.3 C1088.8,878.7 1090.7,874.5 1085.7,872.6 C1080.7,870.8 1069.5,871.7 1063.6,870.0 C1057.7,868.2 1053.9,865.2 1050.3,862.1 C1046.8,859.0 1046.8,855.0 1042.3,851.4 C1037.8,847.9 1026.5,842.6 1023.3,840.9"/><path d="M1014.6,897.1 C1016.4,897.2 1021.7,897.1 1025.3,897.5 C1029.0,897.9 1032.0,897.6 1036.4,899.6 C1040.8,901.6 1048.3,904.2 1051.7,909.5 C1055.0,914.8 1055.7,927.6 1056.5,931.2"/><path d="M1068.8,1034.7 C1066.1,1034.3 1057.9,1034.5 1052.2,1032.0 C1046.6,1029.4 1039.0,1023.2 1035.0,1019.5 C1031.0,1015.8 1032.6,1014.1 1028.3,1010.0 C1024.0,1005.8 1016.0,996.6 1009.2,994.6 C1002.4,992.6 993.8,999.4 987.6,997.7 C981.4,995.9 974.6,986.3 972.0,984.0"/><path d="M1328.9,668.7 C1331.4,667.6 1339.5,664.0 1343.9,662.4 C1348.3,660.9 1350.6,659.3 1355.2,659.4 C1359.8,659.4 1366.4,661.0 1371.7,662.6 C1376.9,664.3 1384.2,668.2 1386.7,669.3"/><path d="M1353.6,786.8 C1354.2,788.7 1354.8,793.0 1357.4,798.3 C1359.9,803.6 1364.8,812.9 1369.0,818.7 C1373.2,824.6 1377.8,828.5 1382.8,833.2 C1387.8,837.9 1394.8,842.6 1398.9,847.2 C1403.0,851.7 1406.0,855.9 1407.2,860.6 C1408.4,865.2 1405.5,869.4 1406.2,875.1 C1406.9,880.8 1408.6,889.4 1411.3,894.9 C1414.1,900.4 1420.7,905.8 1422.5,908.0"/><path d="M1342.7,688.7 C1342.5,691.9 1342.9,703.4 1341.4,708.0 C1339.8,712.6 1336.0,711.2 1333.3,716.2 C1330.5,721.1 1327.7,732.0 1325.0,738.0 C1322.3,743.9 1317.9,747.8 1317.0,751.9 C1316.2,755.9 1317.1,758.3 1319.7,762.4 C1322.4,766.4 1327.9,773.9 1333.0,776.3 C1338.1,778.7 1346.2,775.6 1350.5,776.6 C1354.8,777.6 1357.5,781.2 1358.9,782.2"/><path d="M1226.9,729.3 C1224.8,727.9 1218.3,724.5 1214.2,721.1 C1210.1,717.8 1204.4,714.0 1202.4,709.0 C1200.4,704.0 1201.9,697.4 1202.4,691.1 C1202.9,684.8 1204.6,677.5 1205.5,671.4 C1206.4,665.2 1206.0,659.9 1207.6,654.1 C1209.3,648.3 1211.7,640.2 1215.3,636.7 C1219.0,633.2 1227.1,633.7 1229.4,633.0"/><path d="M1278.6,850.5 C1280.8,849.6 1285.9,846.6 1292.1,845.3 C1298.3,844.0 1310.4,844.5 1315.9,842.8 C1321.3,841.1 1320.4,836.9 1325.0,835.1 C1329.5,833.3 1337.6,835.8 1343.1,832.0 C1348.7,828.2 1352.5,816.9 1358.4,812.2 C1364.2,807.6 1373.1,805.2 1378.2,803.9 C1383.3,802.7 1385.7,805.5 1389.0,804.8 C1392.4,804.1 1396.7,800.5 1398.2,799.7"/><path d="M1503.3,704.2 C1501.1,702.3 1495.4,697.0 1489.8,692.7 C1484.2,688.5 1474.0,682.9 1469.7,678.6 C1465.4,674.2 1465.1,671.1 1464.0,666.5 C1462.8,661.8 1463.0,653.3 1462.8,650.7"/><path d="M1521.0,707.6 C1522.6,711.3 1527.3,724.2 1530.6,729.5 C1533.9,734.9 1538.1,736.7 1540.6,739.9 C1543.2,743.2 1545.8,744.5 1546.0,749.2 C1546.1,753.8 1544.9,763.2 1541.5,767.8 C1538.2,772.4 1531.3,774.3 1526.0,776.5 C1520.8,778.8 1512.7,780.6 1510.1,781.4"/><path d="M1558.2,673.1 C1557.0,669.9 1553.3,661.0 1551.0,654.0 C1548.7,646.9 1544.5,638.2 1544.3,630.7 C1544.1,623.2 1546.6,613.6 1549.7,608.8 C1552.9,604.0 1561.0,603.2 1563.3,602.0"/><path d="M1632.0,640.5 C1630.5,636.7 1624.8,625.4 1623.0,617.4 C1621.1,609.4 1621.9,599.4 1621.1,592.6 C1620.2,585.8 1621.1,580.8 1618.0,576.4 C1614.8,572.0 1604.9,568.0 1602.3,566.3"/><path d="M1260.2,1044.6 C1263.2,1044.1 1272.0,1042.5 1278.4,1041.5 C1284.9,1040.4 1291.4,1038.8 1298.9,1038.4 C1306.5,1038.0 1316.1,1041.1 1323.5,1039.2 C1331.0,1037.3 1337.5,1029.3 1343.6,1027.1 C1349.7,1024.8 1355.4,1024.7 1360.2,1025.7 C1365.0,1026.7 1367.5,1030.8 1372.4,1033.1 C1377.4,1035.4 1386.2,1036.3 1390.0,1039.5 C1393.7,1042.6 1394.2,1050.0 1395.0,1052.2"/><path d="M1366.9,998.0 C1368.4,995.1 1374.2,985.5 1376.1,980.7 C1378.0,975.9 1380.1,974.5 1378.2,969.3 C1376.3,964.2 1366.8,956.8 1364.5,949.9 C1362.3,943.0 1363.5,933.9 1364.7,928.0 C1365.8,922.2 1370.2,919.5 1371.5,914.8 C1372.8,910.0 1372.1,902.0 1372.2,899.5"/><path d="M1246.7,869.1 C1246.0,866.5 1242.9,859.8 1242.5,853.7 C1242.0,847.6 1244.7,839.4 1244.3,832.3 C1243.9,825.3 1239.6,817.0 1239.9,811.6 C1240.2,806.1 1244.4,803.7 1246.2,799.6 C1248.1,795.5 1250.2,789.1 1251.0,787.0"/><path d="M1381.9,1058.1 C1383.6,1057.8 1387.9,1054.9 1392.2,1056.6 C1396.5,1058.4 1404.5,1063.0 1407.7,1068.5 C1410.9,1073.9 1407.9,1083.8 1411.4,1089.3 C1414.9,1094.8 1423.9,1098.5 1428.8,1101.3 C1433.7,1104.2 1437.3,1102.5 1440.8,1106.3 C1444.4,1110.1 1447.2,1119.7 1450.0,1124.0 C1452.8,1128.3 1455.4,1129.2 1457.5,1132.1 C1459.6,1135.1 1461.7,1140.2 1462.6,1141.8"/><path d="M1214.8,866.4 C1218.1,869.0 1227.5,878.2 1234.3,881.7 C1241.1,885.2 1249.5,884.4 1255.5,887.5 C1261.6,890.5 1266.9,896.4 1270.7,900.0 C1274.5,903.7 1276.7,903.8 1278.4,909.3 C1280.1,914.8 1280.3,927.0 1280.8,933.1 C1281.3,939.1 1279.6,942.1 1281.3,945.9 C1283.1,949.6 1289.7,951.5 1291.2,955.6 C1292.6,959.7 1290.4,967.9 1290.3,970.3"/><path d="M1225.1,969.5 C1226.8,969.2 1230.7,966.3 1235.5,968.1 C1240.3,970.0 1249.7,976.5 1253.9,980.5 C1258.0,984.4 1260.2,986.9 1260.2,992.0 C1260.3,997.0 1253.1,1004.0 1254.2,1010.6 C1255.3,1017.3 1264.3,1026.3 1266.7,1032.0 C1269.2,1037.6 1268.5,1042.4 1268.9,1044.5"/><path d="M1377.6,985.0 C1376.8,982.4 1374.6,976.0 1372.4,969.7 C1370.3,963.4 1366.0,953.0 1364.5,947.2 C1363.1,941.5 1362.3,939.8 1363.8,935.3 C1365.4,930.8 1372.1,922.6 1373.7,920.1"/><path d="M1352.8,868.2 C1354.3,869.7 1357.2,873.9 1361.9,877.3 C1366.5,880.7 1373.6,885.8 1380.7,888.6 C1387.7,891.4 1396.9,893.6 1404.0,894.3 C1411.2,895.1 1417.1,895.1 1423.4,893.2 C1429.7,891.4 1437.0,887.1 1441.8,883.4 C1446.5,879.6 1447.1,874.6 1452.1,870.7 C1457.1,866.9 1467.8,863.9 1472.0,860.3 C1476.2,856.7 1476.4,850.8 1477.3,848.9"/><path d="M1429.3,1008.5 C1430.7,1010.1 1433.4,1015.5 1437.5,1018.0 C1441.7,1020.4 1448.6,1023.1 1454.2,1023.3 C1459.8,1023.6 1467.1,1019.1 1471.4,1019.5 C1475.6,1019.9 1476.3,1023.7 1479.6,1025.9 C1482.8,1028.0 1485.8,1031.6 1490.8,1032.5 C1495.8,1033.4 1506.5,1031.4 1509.6,1031.2"/><path d="M1641.9,957.5 C1639.0,958.0 1630.7,961.7 1624.7,960.7 C1618.6,959.7 1610.4,955.6 1605.9,951.5 C1601.3,947.3 1602.3,939.9 1597.5,936.0 C1592.6,932.1 1582.3,928.8 1576.7,928.3 C1571.1,927.8 1568.3,930.4 1563.9,932.9 C1559.5,935.5 1552.7,941.8 1550.4,943.6"/><path d="M1453.6,1030.2 C1455.5,1032.0 1461.6,1038.7 1465.1,1041.0 C1468.6,1043.3 1469.6,1044.1 1474.6,1044.3 C1479.6,1044.4 1488.8,1041.0 1495.3,1042.0 C1501.8,1043.1 1508.1,1048.2 1513.8,1050.5 C1519.4,1052.7 1524.3,1055.3 1529.1,1055.6 C1533.9,1055.9 1540.1,1052.9 1542.4,1052.4"/><path d="M1654.4,982.9 C1653.4,985.4 1650.8,994.5 1648.1,997.7 C1645.5,1000.9 1644.0,1000.2 1638.4,1002.1 C1632.9,1004.0 1621.9,1006.3 1614.6,1009.1 C1607.2,1011.9 1600.1,1015.4 1594.2,1019.1 C1588.4,1022.8 1584.8,1029.4 1579.4,1031.2 C1574.1,1033.0 1567.9,1030.6 1562.0,1029.8 C1556.2,1029.0 1550.7,1028.6 1544.3,1026.4 C1537.9,1024.2 1527.1,1018.5 1523.6,1016.9"/><path d="M1457.8,890.7 C1455.2,888.1 1448.5,877.7 1442.0,874.9 C1435.6,872.1 1424.4,872.8 1418.9,873.7 C1413.4,874.6 1411.7,877.3 1409.2,880.6 C1406.6,883.9 1403.3,887.9 1403.7,893.6 C1404.0,899.2 1407.9,907.7 1411.4,914.4 C1414.8,921.1 1422.3,930.6 1424.4,933.8"/><path d="M1505.3,1033.1 C1504.9,1035.9 1502.2,1043.6 1502.9,1050.0 C1503.5,1056.3 1509.3,1064.0 1509.4,1071.2 C1509.6,1078.3 1503.9,1085.7 1503.8,1092.6 C1503.8,1099.4 1509.4,1106.0 1509.1,1112.0 C1508.7,1118.1 1503.1,1126.2 1501.9,1129.0"/><path d="M1625.3,866.2 C1625.5,864.0 1626.3,857.2 1626.5,853.0 C1626.6,848.8 1624.1,845.3 1626.0,841.2 C1627.9,837.1 1633.5,830.8 1637.8,828.2 C1642.1,825.5 1649.3,825.9 1651.6,825.4"/><path d="M1520.8,909.3 C1518.4,907.3 1512.6,900.7 1506.4,897.3 C1500.2,893.9 1489.2,889.3 1483.6,888.9 C1478.0,888.5 1478.5,893.2 1472.7,895.0 C1466.9,896.9 1454.8,900.2 1448.7,900.2 C1442.6,900.1 1439.2,898.2 1436.1,894.6 C1433.1,891.1 1432.0,884.7 1430.2,878.8 C1428.5,873.0 1426.5,862.9 1425.8,859.7"/><path d="M1559.4,1046.0 C1562.0,1045.7 1570.1,1045.5 1575.4,1044.1 C1580.8,1042.7 1585.5,1038.2 1591.5,1037.6 C1597.4,1036.9 1605.6,1036.8 1611.0,1040.2 C1616.5,1043.5 1622.7,1052.0 1624.2,1057.8 C1625.7,1063.5 1621.6,1069.9 1619.9,1074.8 C1618.3,1079.8 1615.2,1085.3 1614.3,1087.4"/><path d="M1640.2,1013.0 C1640.1,1017.1 1637.6,1031.3 1639.6,1037.9 C1641.6,1044.6 1648.9,1048.8 1652.1,1052.9 C1655.4,1057.0 1658.4,1057.9 1659.0,1062.6 C1659.7,1067.3 1657.4,1075.7 1656.0,1081.0 C1654.7,1086.2 1651.1,1089.4 1650.9,1093.9 C1650.7,1098.5 1653.9,1106.0 1654.5,1108.4"/><path d="M1696.2,657.5 C1693.9,658.5 1686.7,663.6 1682.1,663.6 C1677.4,663.5 1674.1,660.1 1668.4,657.2 C1662.7,654.3 1652.9,648.9 1648.0,646.0 C1643.0,643.2 1641.0,645.1 1638.6,640.1 C1636.2,635.1 1636.6,623.1 1633.5,616.2 C1630.5,609.3 1622.5,601.5 1620.3,598.6"/><path d="M1839.3,835.2 C1839.8,833.0 1841.0,827.8 1842.3,822.2 C1843.5,816.5 1843.8,807.9 1847.0,801.2 C1850.2,794.6 1856.6,786.4 1861.2,782.2 C1865.8,778.1 1871.2,779.9 1874.4,776.2 C1877.6,772.5 1879.1,766.6 1880.2,760.0 C1881.3,753.5 1878.9,743.0 1881.1,737.0 C1883.3,731.0 1891.6,726.2 1893.7,724.0"/><path d="M1848.5,797.0 C1845.6,797.6 1835.4,801.1 1831.0,800.8 C1826.6,800.5 1827.3,795.2 1822.1,795.1 C1817.0,795.0 1806.6,801.7 1800.1,800.5 C1793.6,799.2 1789.5,790.2 1783.2,787.5 C1776.9,784.9 1768.9,787.0 1762.2,784.5 C1755.6,782.1 1748.3,774.1 1743.2,772.8 C1738.1,771.6 1733.6,776.3 1731.6,777.0"/><path d="M1710.7,789.0 C1710.4,791.0 1708.2,794.9 1709.1,800.7 C1710.0,806.5 1716.0,816.2 1715.9,823.9 C1715.7,831.5 1710.3,840.2 1708.0,846.8 C1705.8,853.4 1703.4,860.6 1702.5,863.4"/><path d="M1670.4,732.2 C1667.2,733.1 1656.4,733.0 1651.3,737.5 C1646.2,742.0 1641.6,752.2 1639.9,759.3 C1638.1,766.3 1641.2,774.1 1640.9,779.7 C1640.7,785.2 1639.2,787.7 1638.5,792.5 C1637.8,797.4 1635.7,803.6 1636.5,808.7 C1637.4,813.8 1639.2,819.5 1643.6,823.0 C1648.0,826.5 1659.9,828.5 1663.1,829.6"/><path d="M1897.8,757.0 C1896.5,760.5 1894.5,773.0 1890.1,777.7 C1885.7,782.4 1876.7,784.7 1871.5,785.3 C1866.4,785.8 1862.7,784.0 1859.2,781.2 C1855.7,778.4 1854.3,772.2 1850.7,768.5 C1847.2,764.8 1841.0,763.0 1837.8,758.8 C1834.6,754.7 1832.7,749.1 1831.4,743.6 C1830.1,738.2 1827.8,731.9 1829.9,726.1 C1832.1,720.4 1841.8,712.0 1844.1,709.1"/><path d="M1763.7,823.2 C1766.6,823.7 1776.9,823.9 1781.0,826.2 C1785.1,828.4 1785.1,834.6 1788.1,836.6 C1791.2,838.6 1795.0,839.3 1799.2,838.2 C1803.4,837.1 1807.8,832.4 1813.4,830.1 C1818.9,827.8 1829.4,825.4 1832.6,824.4"/><path d="M1839.6,759.0 C1843.2,760.2 1853.7,766.4 1861.1,766.5 C1868.5,766.7 1877.7,764.2 1883.9,759.9 C1890.2,755.7 1896.6,747.4 1898.5,741.0 C1900.4,734.5 1896.3,727.7 1895.5,721.3 C1894.8,714.9 1892.8,707.3 1893.9,702.4 C1895.0,697.5 1897.8,693.7 1902.3,692.0 C1906.8,690.2 1917.7,691.9 1920.8,691.9"/><path d="M1857.2,694.1 C1859.6,695.0 1866.7,697.8 1871.4,699.6 C1876.1,701.3 1881.0,703.8 1885.5,704.7 C1889.9,705.6 1893.0,707.3 1898.1,704.9 C1903.2,702.5 1912.8,695.0 1916.3,690.5 C1919.7,685.9 1915.9,681.5 1918.7,677.5 C1921.4,673.5 1930.1,670.7 1932.9,666.3 C1935.7,661.9 1935.0,653.7 1935.4,651.1"/><path d="M1740.4,794.3 C1738.9,798.0 1732.1,810.5 1731.0,816.4 C1729.9,822.3 1732.7,825.1 1734.0,829.5 C1735.2,833.9 1738.1,836.7 1738.4,842.6 C1738.8,848.6 1737.9,859.2 1736.3,865.1 C1734.7,870.9 1731.5,873.8 1728.8,877.8 C1726.0,881.9 1723.1,885.2 1719.5,889.3 C1715.9,893.4 1709.1,900.1 1707.1,902.3"/><path d="M1977.9,684.8 C1975.7,685.8 1970.4,688.0 1964.6,691.1 C1958.8,694.2 1947.8,700.0 1943.0,703.3 C1938.3,706.6 1939.8,707.2 1936.2,710.9 C1932.6,714.6 1924.5,719.8 1921.1,725.6 C1917.8,731.3 1917.1,742.0 1916.3,745.3"/><path d="M1962.8,792.3 C1964.6,790.8 1969.3,787.9 1973.4,783.3 C1977.5,778.7 1983.1,769.5 1987.6,764.6 C1992.2,759.7 1997.1,759.3 2000.6,754.2 C2004.1,749.0 2005.2,738.2 2008.6,733.9 C2012.0,729.6 2016.4,728.7 2021.1,728.3 C2025.7,728.0 2032.1,730.8 2036.3,731.6 C2040.6,732.5 2044.8,733.1 2046.5,733.4"/><path d="M1965.7,692.0 C1964.5,694.1 1961.7,701.5 1958.4,704.8 C1955.1,708.2 1949.9,710.0 1945.7,712.0 C1941.6,713.9 1938.4,716.9 1933.7,716.6 C1928.9,716.3 1923.1,713.1 1917.2,710.2 C1911.2,707.3 1903.8,702.5 1898.3,699.1 C1892.7,695.6 1887.8,693.5 1883.7,689.6 C1879.6,685.7 1876.6,680.1 1873.9,675.6 C1871.1,671.2 1868.3,664.9 1867.2,662.8"/><path d="M1943.1,688.2 C1946.5,688.7 1957.2,692.4 1963.2,690.8 C1969.3,689.2 1974.4,682.2 1979.2,678.8 C1983.9,675.3 1986.8,674.0 1991.5,670.0 C1996.3,666.0 2004.1,661.1 2007.7,654.6 C2011.3,648.2 2013.2,637.6 2013.2,631.3 C2013.3,624.9 2011.3,620.8 2007.8,616.6 C2004.4,612.4 1997.4,611.0 1992.4,606.1 C1987.5,601.2 1980.5,590.4 1978.2,587.3"/><path d="M1971.6,691.8 C1974.1,689.0 1981.2,679.0 1987.1,675.2 C1992.9,671.5 2000.1,671.8 2006.7,669.3 C2013.2,666.9 2020.8,663.2 2026.4,660.3 C2032.1,657.4 2034.4,652.4 2040.7,651.9 C2047.1,651.4 2059.0,653.6 2064.6,657.2 C2070.3,660.9 2071.5,669.6 2074.6,673.9 C2077.8,678.2 2080.0,678.3 2083.7,682.9 C2087.4,687.4 2094.7,698.3 2096.9,701.4"/><path d="M1924.8,825.4 C1922.4,822.4 1914.7,814.1 1910.3,807.7 C1905.9,801.3 1900.6,792.5 1898.4,787.1 C1896.1,781.7 1897.8,779.3 1896.7,775.3 C1895.6,771.2 1893.6,767.1 1891.7,762.9 C1889.8,758.8 1885.6,756.2 1885.2,750.3 C1884.8,744.3 1890.1,734.9 1889.3,727.2 C1888.4,719.5 1881.5,707.9 1879.9,704.0"/><path d="M2145.6,723.2 C2148.0,722.3 2154.0,719.1 2160.0,717.7 C2165.9,716.3 2175.1,716.4 2181.3,714.8 C2187.4,713.1 2193.5,710.8 2196.9,707.7 C2200.3,704.7 2201.0,698.3 2201.8,696.4"/><path d="M2103.9,706.7 C2103.7,704.3 2104.8,698.4 2102.6,692.7 C2100.5,687.0 2092.7,679.8 2091.0,672.5 C2089.4,665.2 2091.5,656.0 2092.7,648.9 C2093.9,641.7 2097.1,636.3 2098.3,629.6 C2099.5,622.9 2099.2,613.9 2099.9,608.7 C2100.5,603.5 2101.7,604.3 2102.2,598.6 C2102.8,592.9 2102.9,578.5 2103.1,574.5"/><path d="M2135.8,718.1 C2136.7,720.1 2141.9,724.6 2141.4,730.0 C2140.9,735.3 2134.0,744.2 2132.8,750.2 C2131.6,756.1 2131.2,760.9 2134.3,765.6 C2137.5,770.3 2145.0,775.7 2151.6,778.3 C2158.2,780.9 2167.0,778.9 2173.8,781.1 C2180.7,783.4 2187.7,788.7 2192.6,791.8 C2197.6,794.9 2201.8,798.6 2203.6,799.9"/><path d="M1914.0,768.4 C1917.3,767.7 1928.2,766.1 1934.0,764.0 C1939.8,761.9 1943.2,756.2 1948.9,755.8 C1954.6,755.3 1962.4,760.1 1968.2,761.5 C1974.1,762.9 1979.6,761.3 1983.9,764.1 C1988.3,766.9 1991.0,772.7 1994.3,778.2 C1997.7,783.8 2000.6,793.9 2004.0,797.5 C2007.4,801.1 2010.5,800.4 2014.7,800.0 C2018.9,799.5 2026.9,795.6 2029.3,794.7"/><path d="M2133.8,678.8 C2134.6,676.5 2137.5,671.6 2138.7,665.3 C2139.8,659.1 2141.3,646.9 2140.5,641.2 C2139.7,635.5 2136.5,634.8 2134.0,631.1 C2131.5,627.5 2126.8,621.2 2125.4,619.2"/><path d="M1984.7,765.9 C1986.5,766.7 1990.7,769.9 1995.5,771.2 C2000.3,772.5 2007.8,775.0 2013.4,773.7 C2019.0,772.5 2026.2,767.3 2029.2,763.7 C2032.3,760.1 2030.8,756.0 2031.7,752.1 C2032.6,748.1 2034.5,743.9 2034.9,740.1 C2035.2,736.4 2035.8,732.8 2033.8,729.5 C2031.9,726.2 2024.9,721.8 2023.1,720.3"/><path d="M1681.8,883.8 C1679.3,886.7 1669.5,896.1 1666.8,901.3 C1664.0,906.5 1664.3,909.6 1665.2,915.0 C1666.0,920.4 1669.4,927.0 1671.9,934.0 C1674.4,941.0 1678.8,953.3 1680.2,957.2"/><path d="M1704.2,1024.3 C1700.7,1026.2 1687.8,1030.1 1683.1,1035.4 C1678.5,1040.6 1678.2,1049.6 1676.3,1055.9 C1674.4,1062.2 1671.7,1066.5 1671.8,1073.3 C1671.8,1080.2 1675.7,1093.1 1676.5,1097.0"/><path d="M1731.0,925.2 C1732.0,926.7 1733.8,931.8 1737.1,934.1 C1740.4,936.3 1745.8,939.4 1750.6,938.8 C1755.4,938.1 1759.8,931.2 1765.8,930.2 C1771.8,929.1 1783.0,932.1 1786.5,932.5"/><path d="M1780.7,1067.5 C1777.8,1069.3 1768.9,1075.0 1763.3,1078.5 C1757.6,1081.9 1751.9,1084.0 1746.8,1088.2 C1741.7,1092.3 1738.0,1099.6 1732.6,1103.5 C1727.2,1107.4 1720.5,1109.1 1714.3,1111.7 C1708.1,1114.3 1701.6,1115.7 1695.3,1118.9 C1689.0,1122.2 1679.6,1128.9 1676.5,1130.9"/><path d="M1678.1,871.2 C1680.0,869.0 1687.2,863.4 1689.5,857.9 C1691.8,852.5 1693.0,844.0 1691.9,838.4 C1690.9,832.8 1687.4,827.3 1683.0,824.4 C1678.5,821.4 1671.4,819.4 1665.2,820.7 C1659.1,821.9 1649.8,826.4 1645.9,831.8 C1642.0,837.3 1641.8,846.0 1641.9,853.6 C1641.9,861.2 1645.5,873.5 1646.2,877.5"/><path d="M1737.2,887.2 C1736.7,884.9 1736.2,876.3 1734.1,873.0 C1731.9,869.6 1729.4,870.4 1724.3,867.2 C1719.2,864.0 1708.0,860.0 1703.6,853.8 C1699.2,847.6 1698.5,835.8 1698.0,830.2 C1697.5,824.5 1700.2,821.7 1700.6,820.0"/><path d="M1848.9,936.9 C1845.8,935.7 1835.6,932.3 1830.1,929.5 C1824.6,926.7 1818.9,923.6 1815.8,920.2 C1812.7,916.7 1813.5,911.9 1811.6,908.8 C1809.7,905.7 1805.8,902.7 1804.6,901.4"/><path d="M1882.5,1046.1 C1878.9,1047.9 1867.1,1055.7 1861.1,1056.9 C1855.1,1058.1 1851.7,1053.4 1846.6,1053.1 C1841.5,1052.9 1835.4,1056.9 1830.5,1055.5 C1825.6,1054.1 1821.0,1047.3 1817.3,1044.8 C1813.5,1042.3 1813.3,1042.1 1807.8,1040.5 C1802.4,1038.9 1788.4,1036.2 1784.5,1035.3"/><path d="M1759.8,1027.7 C1763.2,1027.2 1774.8,1028.1 1780.5,1024.9 C1786.2,1021.8 1788.1,1012.8 1794.2,1008.8 C1800.2,1004.8 1811.9,1004.5 1816.6,1001.0 C1821.3,997.5 1819.8,992.1 1822.5,988.0 C1825.2,984.0 1829.6,980.2 1832.9,976.5 C1836.2,972.9 1839.4,970.2 1842.5,966.3 C1845.5,962.4 1849.7,955.5 1851.1,953.4"/><path d="M1680.3,1027.4 C1678.6,1029.0 1673.3,1032.4 1670.1,1036.7 C1666.8,1041.0 1664.6,1048.8 1660.9,1053.3 C1657.3,1057.8 1653.2,1061.1 1648.1,1063.7 C1643.0,1066.3 1636.7,1069.1 1630.3,1069.1 C1624.0,1069.0 1614.8,1065.6 1610.1,1063.6 C1605.5,1061.5 1605.5,1058.6 1602.5,1056.5 C1599.5,1054.5 1593.8,1052.1 1592.1,1051.2"/><path d="M1862.5,891.4 C1863.4,887.8 1864.6,875.1 1867.6,869.5 C1870.5,863.9 1874.4,860.8 1880.2,857.8 C1885.9,854.7 1895.5,852.5 1902.1,851.3 C1908.7,850.2 1913.8,848.5 1919.8,851.1 C1925.9,853.7 1932.6,864.5 1938.5,866.8 C1944.3,869.1 1952.1,865.1 1954.9,864.8"/><path d="M1685.7,974.6 C1687.5,971.7 1691.5,961.6 1696.4,957.2 C1701.2,952.8 1709.0,949.2 1714.8,948.4 C1720.6,947.6 1725.2,949.6 1731.1,952.5 C1737.0,955.4 1747.1,963.6 1750.2,965.8"/><path d="M1776.9,1033.3 C1773.9,1035.4 1765.1,1044.8 1758.9,1046.0 C1752.7,1047.3 1745.4,1042.7 1739.5,1041.0 C1733.7,1039.3 1729.5,1036.6 1723.9,1035.9 C1718.3,1035.2 1712.1,1038.3 1706.0,1036.9 C1699.9,1035.5 1690.5,1029.1 1687.4,1027.5"/><path d="M1659.0,966.1 C1662.2,965.1 1671.7,963.1 1678.1,959.7 C1684.4,956.2 1691.1,950.0 1697.1,945.4 C1703.2,940.8 1711.0,936.9 1714.2,932.3 C1717.5,927.8 1714.4,923.1 1716.9,918.0 C1719.4,912.9 1727.0,904.5 1729.1,901.8"/><path d="M1830.4,1005.7 C1833.9,1007.3 1845.7,1013.9 1851.1,1015.1 C1856.5,1016.4 1857.6,1013.9 1862.5,1013.4 C1867.5,1012.9 1874.3,1011.3 1880.8,1012.2 C1887.3,1013.2 1898.1,1018.0 1901.5,1019.1"/><path d="M1880.5,860.7 C1882.4,858.5 1889.0,852.3 1891.7,847.7 C1894.3,843.2 1894.6,838.0 1896.4,833.5 C1898.2,829.0 1898.7,823.8 1902.7,820.8 C1906.7,817.9 1914.7,818.2 1920.3,815.8 C1925.9,813.3 1933.6,807.8 1936.2,806.2"/><path d="M2121.5,952.1 C2121.9,949.2 2123.2,939.7 2124.2,934.4 C2125.1,929.1 2126.1,924.3 2127.3,920.3 C2128.5,916.3 2127.7,914.9 2131.2,910.4 C2134.7,905.8 2143.6,898.1 2148.3,893.0 C2152.9,887.9 2155.4,883.9 2159.2,880.0 C2163.0,876.1 2166.8,871.3 2171.0,869.7 C2175.1,868.1 2182.0,870.2 2184.2,870.4"/><path d="M2026.9,1005.3 C2027.3,1003.0 2028.1,995.6 2029.2,991.5 C2030.4,987.4 2031.4,983.8 2033.6,980.6 C2035.7,977.4 2040.1,976.0 2042.1,972.3 C2044.1,968.5 2045.3,962.7 2045.6,958.2 C2045.8,953.8 2044.6,950.9 2043.3,945.6 C2042.1,940.4 2038.9,929.9 2038.0,926.7"/><path d="M2125.8,918.0 C2122.4,920.2 2110.7,927.2 2105.5,931.2 C2100.3,935.2 2100.0,939.8 2094.6,942.1 C2089.2,944.5 2077.8,945.8 2072.9,945.1 C2068.0,944.5 2066.7,942.2 2065.3,938.4 C2064.0,934.6 2063.9,926.8 2064.9,922.2 C2065.9,917.6 2068.3,915.6 2071.3,910.8 C2074.3,905.9 2081.1,896.0 2083.1,893.0"/><path d="M2085.0,1006.1 C2088.6,1005.2 2099.8,1002.1 2106.6,1000.8 C2113.4,999.5 2119.7,1000.9 2125.8,998.3 C2132.0,995.8 2138.3,988.0 2143.5,985.5 C2148.7,983.1 2154.8,983.7 2157.1,983.4"/><path d="M2137.4,945.8 C2138.2,943.0 2141.0,934.2 2141.9,928.9 C2142.8,923.7 2142.0,920.3 2142.8,914.4 C2143.6,908.5 2146.3,901.0 2146.8,893.8 C2147.4,886.7 2148.6,878.7 2146.3,871.6 C2144.0,864.4 2135.4,854.2 2133.2,850.7"/><path d="M2126.2,1049.0 C2128.9,1049.0 2135.9,1049.0 2142.6,1048.9 C2149.3,1048.9 2158.7,1049.6 2166.4,1049.0 C2174.1,1048.3 2183.1,1048.3 2188.8,1044.9 C2194.5,1041.4 2198.9,1033.1 2200.7,1028.0 C2202.5,1022.8 2202.7,1018.9 2199.7,1013.9 C2196.7,1008.9 2186.0,1004.3 2182.8,998.0 C2179.6,991.7 2181.0,981.8 2180.4,976.2 C2179.8,970.7 2179.4,966.6 2179.2,964.6"/><path d="M2035.0,1050.1 C2031.9,1048.1 2020.3,1043.1 2016.1,1037.9 C2012.0,1032.7 2010.8,1025.5 2010.4,1019.0 C2010.0,1012.5 2012.9,1005.3 2014.0,999.1 C2015.1,992.9 2016.7,984.7 2017.2,981.8"/><path d="M2142.6,912.4 C2140.4,913.6 2132.7,916.2 2129.6,919.6 C2126.4,922.9 2124.3,927.1 2123.4,932.3 C2122.5,937.4 2122.3,944.0 2124.2,950.6 C2126.0,957.2 2130.6,967.8 2134.5,971.9 C2138.4,976.1 2142.9,973.4 2147.5,975.3 C2152.2,977.1 2157.4,982.3 2162.4,982.9 C2167.4,983.4 2172.2,981.6 2177.6,978.6 C2183.0,975.6 2191.9,967.2 2194.8,964.9"/><path d="M1964.9,994.1 C1964.1,992.0 1963.7,985.3 1960.0,981.3 C1956.4,977.3 1948.6,971.9 1943.0,970.1 C1937.5,968.4 1930.6,972.0 1926.7,970.8 C1922.7,969.6 1922.2,965.9 1919.3,962.8 C1916.4,959.8 1910.8,957.0 1909.3,952.4 C1907.8,947.9 1911.3,940.4 1910.2,935.5 C1909.0,930.6 1903.8,925.0 1902.5,922.9"/><path d="M2107.7,1028.2 C2110.0,1030.6 2117.3,1039.3 2121.4,1042.5 C2125.5,1045.6 2128.1,1044.3 2132.5,1047.2 C2136.9,1050.0 2142.6,1058.1 2147.9,1059.6 C2153.1,1061.0 2158.4,1055.4 2164.0,1056.0 C2169.6,1056.7 2175.4,1059.6 2181.3,1063.6 C2187.3,1067.5 2194.1,1076.7 2199.8,1079.9 C2205.5,1083.1 2209.3,1084.1 2215.4,1082.9 C2221.6,1081.7 2233.1,1074.5 2236.6,1072.8"/><path d="M2051.6,1044.7 C2050.4,1041.8 2047.3,1031.0 2044.5,1027.1 C2041.7,1023.2 2038.1,1024.3 2034.7,1021.4 C2031.3,1018.5 2027.9,1012.1 2023.9,1009.7 C2019.9,1007.2 2015.7,1010.0 2010.7,1006.5 C2005.8,1003.0 1998.0,993.0 1994.3,988.7 C1990.5,984.4 1989.2,982.0 1988.2,980.6"/><path d="M2138.1,907.1 C2138.0,903.9 2137.1,895.1 2137.3,887.8 C2137.4,880.4 2136.4,869.9 2138.8,863.1 C2141.2,856.4 2148.7,851.6 2151.5,847.3 C2154.4,843.1 2153.6,840.7 2155.8,837.4 C2158.0,834.1 2160.3,830.6 2164.7,827.4 C2169.1,824.2 2177.6,819.5 2182.3,818.3 C2187.0,817.1 2191.2,819.9 2193.0,820.2"/><path d="M2025.5,929.5 C2025.5,933.5 2022.9,946.9 2025.4,953.7 C2027.9,960.5 2038.5,964.1 2040.6,970.2 C2042.7,976.4 2037.2,984.1 2038.0,990.6 C2038.8,997.1 2042.9,1004.4 2045.4,1009.3 C2047.8,1014.1 2050.0,1017.1 2052.8,1019.5 C2055.7,1021.9 2060.8,1022.8 2062.4,1023.5"/><path d="M2036.6,1053.1 C2039.4,1050.4 2049.1,1041.6 2053.6,1036.9 C2058.1,1032.2 2060.1,1028.4 2063.7,1025.0 C2067.3,1021.5 2071.6,1021.2 2075.3,1016.2 C2079.1,1011.2 2082.3,1000.7 2086.0,995.0 C2089.7,989.3 2095.7,984.1 2097.6,981.9"/><path d="M2019.9,1027.8 C2021.3,1024.3 2027.9,1011.7 2028.4,1006.4 C2029.0,1001.2 2027.4,999.4 2023.4,996.4 C2019.5,993.3 2010.0,989.1 2004.9,988.3 C1999.7,987.5 1997.6,989.7 1992.6,991.5 C1987.5,993.2 1980.2,998.0 1974.5,998.8 C1968.8,999.6 1961.1,996.7 1958.4,996.3"/><path d="M2100.2,938.1 C2098.2,938.7 2091.9,941.2 2088.2,941.8 C2084.6,942.3 2082.0,944.3 2078.2,941.5 C2074.4,938.6 2070.1,928.5 2065.5,924.6 C2060.8,920.8 2054.4,922.5 2050.3,918.1 C2046.3,913.8 2042.6,904.9 2041.4,898.5 C2040.2,892.1 2044.2,885.9 2043.0,879.9 C2041.8,873.8 2035.7,865.1 2034.2,862.1"/></g><path d="M1075.0,196.0 C1076.7,197.8 1080.8,203.0 1085.0,207.0 C1089.2,211.0 1093.8,213.5 1100.0,220.0 C1106.2,226.5 1111.5,237.5 1122.0,246.0 C1132.5,254.5 1156.2,266.8 1163.0,271.0" fill="none" stroke="#a6d7fb" stroke-width="30" stroke-linecap="round" stroke-linejoin="round"/><path d="M1100.0,220.0 C1103.7,224.3 1111.5,237.5 1122.0,246.0 C1132.5,254.5 1153.2,263.5 1163.0,271.0 C1172.8,278.5 1175.3,284.5 1181.0,291.0 C1186.7,297.5 1194.3,306.8 1197.0,310.0" fill="none" stroke="#a6d7fb" stroke-width="24" stroke-linecap="round" stroke-linejoin="round"/><path d="M1163.0,271.0 C1166.0,274.3 1175.3,284.5 1181.0,291.0 C1186.7,297.5 1192.5,302.5 1197.0,310.0 C1201.5,317.5 1206.2,331.7 1208.0,336.0" fill="none" stroke="#a6d7fb" stroke-width="16" stroke-linecap="round" stroke-linejoin="round"/><path d="M1197.0,310.0 C1198.8,314.3 1205.8,327.7 1208.0,336.0 C1210.2,344.3 1210.2,351.0 1210.0,360.0 C1209.8,369.0 1206.7,380.0 1207.0,390.0 C1207.3,400.0 1210.2,410.0 1212.0,420.0 C1213.8,430.0 1217.0,445.0 1218.0,450.0" fill="none" stroke="#a6d7fb" stroke-width="12" stroke-linecap="round" stroke-linejoin="round"/><path d="M1212.0,420.0 C1213.0,425.0 1217.7,438.3 1218.0,450.0 C1218.3,461.7 1214.7,477.2 1214.0,490.0 C1213.3,502.8 1213.0,515.3 1214.0,527.0 C1215.0,538.7 1218.7,547.8 1220.0,560.0 C1221.3,572.2 1219.8,587.3 1222.0,600.0 C1224.2,612.7 1231.2,630.0 1233.0,636.0" fill="none" stroke="#a6d7fb" stroke-width="16" stroke-linecap="round" stroke-linejoin="round"/><path d="M1222.0,600.0 C1223.8,606.0 1226.8,623.0 1233.0,636.0 C1239.2,649.0 1252.3,666.7 1259.0,678.0 C1265.7,689.3 1273.8,695.3 1273.0,704.0 C1272.2,712.7 1257.2,725.7 1254.0,730.0" fill="none" stroke="#a6d7fb" stroke-width="13" stroke-linecap="round" stroke-linejoin="round"/><path d="M1273.0,704.0 C1269.8,708.3 1259.5,721.2 1254.0,730.0 C1248.5,738.8 1244.3,748.2 1240.0,757.0 C1235.7,765.8 1226.5,774.3 1228.0,783.0 C1229.5,791.7 1239.5,798.5 1249.0,809.0 C1258.5,819.5 1272.8,832.8 1285.0,846.0 C1297.2,859.2 1312.3,872.3 1322.0,888.0 C1331.7,903.7 1335.0,927.2 1343.0,940.0 C1351.0,952.8 1365.5,960.8 1370.0,965.0" fill="none" stroke="#a6d7fb" stroke-width="10" stroke-linecap="round" stroke-linejoin="round"/><path d="M1370.0,965.0 C1373.3,967.8 1384.0,974.8 1390.0,982.0 C1396.0,989.2 1406.8,997.5 1406.0,1008.0 C1405.2,1018.5 1394.3,1034.3 1385.0,1045.0 C1375.7,1055.7 1359.2,1065.3 1350.0,1072.0 C1340.8,1078.7 1333.3,1082.8 1330.0,1085.0" fill="none" stroke="#a6d7fb" stroke-width="14" stroke-linecap="round" stroke-linejoin="round"/><path d="M1215.0,428.0 C1218.8,433.3 1231.8,447.2 1238.0,460.0 C1244.2,472.8 1250.3,491.7 1252.0,505.0 C1253.7,518.3 1251.7,529.2 1248.0,540.0 C1244.3,550.8 1233.0,565.0 1230.0,570.0" fill="none" stroke="#a6d7fb" stroke-width="10" stroke-linecap="round" stroke-linejoin="round"/><path d="M1400.0,975.0 C1407.5,968.3 1431.3,947.3 1445.0,935.0 C1458.7,922.7 1467.2,914.2 1482.0,901.0 C1496.8,887.8 1514.3,863.2 1534.0,856.0 C1553.7,848.8 1579.8,856.8 1600.0,858.0 C1620.2,859.2 1637.2,859.3 1655.0,863.0 C1672.8,866.7 1687.3,878.0 1707.0,880.0 C1726.7,882.0 1759.8,869.7 1773.0,875.0 C1786.2,880.3 1770.8,904.2 1786.0,912.0 C1801.2,919.8 1845.7,924.5 1864.0,922.0 C1882.3,919.5 1882.8,898.2 1896.0,897.0 C1909.2,895.8 1928.7,907.7 1943.0,915.0 C1957.3,922.3 1972.5,928.0 1982.0,941.0 C1991.5,954.0 1991.3,980.0 2000.0,993.0 C2008.7,1006.0 2026.5,1004.5 2034.0,1019.0 C2041.5,1033.5 2043.2,1069.8 2045.0,1080.0" fill="none" stroke="#a6d7fb" stroke-width="2.4" stroke-linecap="round" stroke-linejoin="round"/><path d="M2035.0,200.0 C2036.3,207.7 2038.7,232.7 2043.0,246.0 C2047.3,259.3 2055.3,269.0 2061.0,280.0 C2066.7,291.0 2073.0,301.5 2077.0,312.0 C2081.0,322.5 2084.5,333.5 2085.0,343.0 C2085.5,352.5 2078.3,361.5 2080.0,369.0 C2081.7,376.5 2089.3,386.2 2095.0,388.0 C2100.7,389.8 2104.7,384.0 2114.0,380.0 C2123.3,376.0 2144.8,366.7 2151.0,364.0" fill="none" stroke="#a6d7fb" stroke-width="4" stroke-linecap="round" stroke-linejoin="round"/><path d="M710.0,885.0 C718.3,882.5 740.0,873.8 760.0,870.0 C780.0,866.2 806.7,862.3 830.0,862.0 C853.3,861.7 878.3,863.3 900.0,868.0 C921.7,872.7 941.7,883.8 960.0,890.0 C978.3,896.2 993.3,900.8 1010.0,905.0 C1026.7,909.2 1041.7,912.5 1060.0,915.0 C1078.3,917.5 1100.0,917.5 1120.0,920.0 C1140.0,922.5 1161.7,923.3 1180.0,930.0 C1198.3,936.7 1221.7,955.0 1230.0,960.0" fill="none" stroke="#a6d7fb" stroke-width="2.2" stroke-linecap="round" stroke-linejoin="round"/><path d="M1060.0,840.0 C1063.3,838.0 1071.7,832.7 1080.0,828.0 C1088.3,823.3 1097.5,817.3 1110.0,812.0 C1122.5,806.7 1141.7,799.7 1155.0,796.0 C1168.3,792.3 1175.8,791.0 1190.0,790.0 C1204.2,789.0 1231.7,790.0 1240.0,790.0" fill="none" stroke="#a6d7fb" stroke-width="10" stroke-linecap="round" stroke-linejoin="round"/><path d="M1825.0,207.0 C1829.2,210.0 1840.8,220.8 1850.0,225.0 C1859.2,229.2 1871.7,232.8 1880.0,232.0 C1888.3,231.2 1896.7,222.0 1900.0,220.0" fill="none" stroke="#a6d7fb" stroke-width="10" stroke-linecap="round" stroke-linejoin="round"/><polygon points="2100.0,207.0 2151.0,207.0 2151.0,225.0 2120.0,222.0" fill="#aadaff"/><polygon points="1222.0,450.0 1235.0,452.0 1240.0,470.0 1238.0,492.0 1228.0,505.0 1220.0,495.0 1218.0,470.0" fill="#aadaff"/><polygon points="1238.0,525.0 1255.0,522.0 1262.0,535.0 1258.0,555.0 1242.0,560.0 1234.0,548.0" fill="#aadaff"/><path d="M155.0,353.8 C163.4,353.8 222.1,354.1 238.9,353.8 C255.6,353.4 297.0,350.0 322.7,349.8 C348.4,349.6 474.4,349.6 495.7,351.7 C516.9,353.8 519.0,368.0 535.0,370.8 C550.9,373.6 643.0,379.0 655.0,380.0" fill="none" stroke="#fff" stroke-width="2.2" stroke-linejoin="round"/><path d="M238.9,343.3 C247.2,343.3 308.8,342.6 322.7,343.3 C336.6,343.9 360.5,349.0 377.7,349.8 C395.0,350.6 483.9,351.0 495.7,351.1" fill="none" stroke="#fff" stroke-width="2.2" stroke-linejoin="round"/><path d="M275.5,368.2 C280.3,370.4 313.8,385.9 322.7,390.4 C331.6,395.0 358.5,410.8 364.6,414.0 C370.8,417.2 370.7,419.6 384.3,422.4 C397.9,425.2 473.3,438.3 500.4,442.3 C527.5,446.3 639.5,460.5 655.0,462.5" fill="none" stroke="#fff" stroke-width="2.2" stroke-linejoin="round"/><path d="M254.6,207.0 C256.2,214.9 268.6,270.9 270.3,285.6 C272.0,300.3 271.6,338.0 271.6,353.8 C271.6,369.5 270.7,426.1 270.3,442.8 C269.9,459.6 267.7,501.8 267.7,521.5 C267.7,541.2 270.0,628.1 270.3,639.9" fill="none" stroke="#fff" stroke-width="2.2" stroke-linejoin="round"/><path d="M348.9,220.1 C358.4,220.5 427.5,223.5 443.3,224.0 C459.0,224.6 497.0,223.6 506.2,225.3 C515.3,227.0 520.1,235.8 535.0,241.1 C549.9,246.3 643.0,274.1 655.0,277.8" fill="none" stroke="#fff" stroke-width="2.2" stroke-linejoin="round"/><path d="M272.9,283.0 C276.9,281.9 297.8,273.2 312.2,272.5 C326.6,271.9 397.4,276.1 417.1,276.4 C436.7,276.8 492.5,274.7 508.8,275.7 C525.0,276.6 564.9,282.0 579.5,285.6 C594.2,289.2 647.5,309.2 655.0,311.8" fill="none" stroke="#fff" stroke-width="2.2" stroke-linejoin="round"/><path d="M155.0,500.5 L270.3,500.5" fill="none" stroke="#fff" stroke-width="2.2" stroke-linejoin="round"/><path d="M286.0,495.3 C286.6,503.1 288.1,563.4 291.3,573.9 C294.4,584.4 311.2,596.9 317.5,600.1 C323.8,603.2 350.5,601.3 354.2,605.3 C357.8,609.3 354.2,636.5 354.2,639.9" fill="none" stroke="#fff" stroke-width="2.2" stroke-linejoin="round"/><path d="M286.0,495.3 C290.7,493.7 327.4,485.0 333.2,479.5 C339.0,474.0 340.5,448.1 343.7,440.2 C346.8,432.4 362.5,404.9 364.6,400.9" fill="none" stroke="#fff" stroke-width="2.2" stroke-linejoin="round"/><path d="M390.8,573.9 C396.1,572.8 427.5,564.4 443.3,563.4 C459.0,562.3 526.9,567.3 548.1,563.4 C569.3,559.5 644.3,528.0 655.0,524.1" fill="none" stroke="#fff" stroke-width="2.2" stroke-linejoin="round"/><path d="M443.3,563.4 L443.3,639.9" fill="none" stroke="#fff" stroke-width="2.2" stroke-linejoin="round"/><path d="M417.1,461.2 C423.6,461.1 474.2,461.7 482.6,459.9 C491.0,458.0 499.3,432.5 500.9,442.8 C502.5,453.2 498.6,551.3 498.3,563.4" fill="none" stroke="#fff" stroke-width="2.2" stroke-linejoin="round"/><path d="M422.3,458.6 C424.4,463.6 440.9,498.9 443.3,508.4 C445.6,517.8 447.5,543.7 445.9,552.9 C444.3,562.1 430.4,591.4 427.5,600.1 C424.7,608.8 418.1,635.9 417.1,639.9" fill="none" stroke="#fff" stroke-width="2.2" stroke-linejoin="round"/><path d="M322.7,343.3 L322.7,390.4" fill="none" stroke="#fff" stroke-width="2.2" stroke-linejoin="round"/><path d="M377.7,311.8 C377.9,316.0 377.7,345.9 379.1,353.8 C380.4,361.6 389.7,385.7 390.8,390.4 C392.0,395.2 390.8,399.9 390.8,400.9" fill="none" stroke="#fff" stroke-width="2.2" stroke-linejoin="round"/><path d="M430.2,246.3 C430.2,260.7 428.6,374.5 430.2,390.4 C431.7,406.4 444.0,399.2 445.9,406.2 C447.7,413.1 448.2,454.5 448.5,459.9" fill="none" stroke="#fff" stroke-width="2.2" stroke-linejoin="round"/><path d="M348.9,228.0 C351.3,230.1 370.4,241.1 372.5,248.9 C374.6,256.8 365.4,301.6 369.9,306.6 C374.3,311.6 409.7,299.8 417.1,298.7 C424.4,297.7 435.4,296.6 443.3,296.1 C451.1,295.6 490.4,293.7 495.7,293.5" fill="none" stroke="#fff" stroke-width="2.2" stroke-linejoin="round"/><path d="M322.7,348.5 C324.3,345.4 333.2,321.0 338.4,317.1 C343.7,313.1 371.5,310.0 375.1,309.2" fill="none" stroke="#fff" stroke-width="2.2" stroke-linejoin="round"/><path d="M493.1,306.6 C493.3,314.7 492.0,379.7 495.7,387.8 C499.3,395.9 526.1,380.2 529.7,387.8 C533.4,395.4 529.2,455.7 532.4,463.8 C535.5,471.9 558.3,468.5 561.2,469.1" fill="none" stroke="#fff" stroke-width="2.2" stroke-linejoin="round"/><path d="M535.0,207.0 C535.0,221.7 535.5,328.1 535.0,353.8 C534.5,379.4 530.3,452.8 529.7,463.8" fill="none" stroke="#fff" stroke-width="2.2" stroke-linejoin="round"/><path d="M569.0,285.6 C569.3,290.9 571.7,319.7 571.7,338.0 C571.7,356.4 570.9,448.1 569.0,469.1 C567.2,490.0 553.3,530.6 553.3,547.7 C553.3,564.8 567.5,630.7 569.0,639.9" fill="none" stroke="#fff" stroke-width="2.2" stroke-linejoin="round"/><path d="M631.9,246.3 L631.9,639.9" fill="none" stroke="#fff" stroke-width="2.2" stroke-linejoin="round"/><path d="M595.3,369.5 L595.3,547.7" fill="none" stroke="#fff" stroke-width="2.2" stroke-linejoin="round"/><path d="M493.1,369.5 L655.0,369.5" fill="none" stroke="#fff" stroke-width="2.2" stroke-linejoin="round"/><path d="M445.9,403.5 L595.3,403.5" fill="none" stroke="#fff" stroke-width="2.2" stroke-linejoin="round"/><path d="M390.8,369.5 L430.2,369.5" fill="none" stroke="#fff" stroke-width="2.2" stroke-linejoin="round"/><path d="M390.8,385.2 L430.2,385.2" fill="none" stroke="#fff" stroke-width="2.2" stroke-linejoin="round"/><path d="M275.5,319.7 L333.2,319.7" fill="none" stroke="#fff" stroke-width="2.2" stroke-linejoin="round"/><path d="M275.5,335.4 L322.7,335.4" fill="none" stroke="#fff" stroke-width="2.2" stroke-linejoin="round"/><path d="M155.0,568.6 C162.9,568.6 220.5,567.1 233.6,568.6 C246.7,570.2 280.8,582.8 286.0,584.4" fill="none" stroke="#fff" stroke-width="2.2" stroke-linejoin="round"/><path d="M265.1,610.6 L354.2,605.3" fill="none" stroke="#fff" stroke-width="2.2" stroke-linejoin="round"/><path d="M495.7,563.4 L495.7,639.9" fill="none" stroke="#fff" stroke-width="2.2" stroke-linejoin="round"/><path d="M561.2,469.1 L655.0,476.9" fill="none" stroke="#fff" stroke-width="2.2" stroke-linejoin="round"/><path d="M155.0,233.2 C160.2,233.7 196.9,239.0 207.4,238.4 C217.9,237.9 254.6,229.0 259.8,228.0" fill="none" stroke="#fff" stroke-width="2.2" stroke-linejoin="round"/><path d="M196.9,298.7 L207.4,207.0" fill="none" stroke="#fff" stroke-width="2.2" stroke-linejoin="round"/><path d="M655.0,288.2 C660.2,289.8 694.3,299.8 707.4,304.0 C720.5,308.2 771.4,326.2 786.0,330.2 C800.7,334.1 841.1,341.4 854.2,343.3 C867.3,345.1 910.8,348.0 917.1,348.5" fill="none" stroke="#fff" stroke-width="2.2" stroke-linejoin="round"/><path d="M655.0,495.3 L676.0,495.3" fill="none" stroke="#fff" stroke-width="2.2" stroke-linejoin="round"/><path d="M707.4,508.4 L812.2,508.4" fill="none" stroke="#fff" stroke-width="2.2" stroke-linejoin="round"/><path d="M676.0,429.7 C683.6,430.0 738.3,431.6 752.0,432.4 C765.6,433.2 802.0,436.6 812.2,437.6 C822.5,438.7 850.0,442.3 854.2,442.8" fill="none" stroke="#fff" stroke-width="2.2" stroke-linejoin="round"/><path d="M775.5,469.1 L775.5,639.9" fill="none" stroke="#fff" stroke-width="2.2" stroke-linejoin="round"/><path d="M720.5,534.6 L720.5,639.9" fill="none" stroke="#fff" stroke-width="2.2" stroke-linejoin="round"/><path d="M838.4,534.6 L843.7,639.9" fill="none" stroke="#fff" stroke-width="2.2" stroke-linejoin="round"/><path d="M943.3,495.3 L943.3,639.9" fill="none" stroke="#fff" stroke-width="2.2" stroke-linejoin="round"/><path d="M1016.6,469.1 L1016.6,639.9" fill="none" stroke="#fff" stroke-width="2.2" stroke-linejoin="round"/><path d="M655.0,615.8 L890.8,615.8" fill="none" stroke="#fff" stroke-width="2.2" stroke-linejoin="round"/><path d="M906.6,552.9 L1155.0,547.7" fill="none" stroke="#fff" stroke-width="2.2" stroke-linejoin="round"/><path d="M969.5,639.4 C977.3,637.6 1029.5,622.4 1048.1,621.0 C1066.6,619.7 1144.3,625.8 1155.0,626.3" fill="none" stroke="#fff" stroke-width="2.2" stroke-linejoin="round"/><path d="M1113.6,495.3 L1155.0,508.4" fill="none" stroke="#fff" stroke-width="2.2" stroke-linejoin="round"/><path d="M754.6,207.0 L754.6,259.4" fill="none" stroke="#fff" stroke-width="2.2" stroke-linejoin="round"/><path d="M655.0,222.7 L796.5,228.0" fill="none" stroke="#fff" stroke-width="2.2" stroke-linejoin="round"/><path d="M796.5,254.2 L864.6,259.4" fill="none" stroke="#fff" stroke-width="2.2" stroke-linejoin="round"/><path d="M917.1,369.5 L917.1,437.6" fill="none" stroke="#fff" stroke-width="2.2" stroke-linejoin="round"/><path d="M956.4,390.4 L969.5,469.1" fill="none" stroke="#fff" stroke-width="2.2" stroke-linejoin="round"/><path d="M676.0,385.2 L676.0,639.9" fill="none" stroke="#fff" stroke-width="2.2" stroke-linejoin="round"/><path d="M712.7,207.0 C712.4,217.5 710.6,293.5 710.0,311.8 C709.5,330.2 707.7,382.6 707.4,390.4" fill="none" stroke="#fff" stroke-width="2.2" stroke-linejoin="round"/><path d="M752.0,259.4 L752.0,639.9" fill="none" stroke="#fff" stroke-width="2.2" stroke-linejoin="round"/><path d="M796.5,207.0 L796.5,311.8" fill="none" stroke="#fff" stroke-width="2.2" stroke-linejoin="round"/><path d="M812.2,469.1 L812.2,639.9" fill="none" stroke="#fff" stroke-width="2.2" stroke-linejoin="round"/><path d="M828.0,277.8 L828.0,390.4" fill="none" stroke="#fff" stroke-width="2.2" stroke-linejoin="round"/><path d="M655.0,466.4 L786.0,469.1" fill="none" stroke="#fff" stroke-width="2.2" stroke-linejoin="round"/><path d="M676.0,534.6 L1155.0,534.6" fill="none" stroke="#fff" stroke-width="2.2" stroke-linejoin="round"/><path d="M812.2,563.4 L1100.5,563.4" fill="none" stroke="#fff" stroke-width="2.2" stroke-linejoin="round"/><path d="M655.0,579.1 L1152.9,579.1" fill="none" stroke="#fff" stroke-width="2.2" stroke-linejoin="round"/><path d="M655.0,332.8 C665.5,334.9 739.9,349.6 759.8,353.8 C779.7,357.9 841.1,371.3 854.2,374.7 C867.3,378.1 887.2,386.5 890.8,387.8" fill="none" stroke="#fff" stroke-width="2.2" stroke-linejoin="round"/><path d="M655.0,513.6 C662.9,511.2 720.0,492.9 733.6,490.0 C747.2,487.1 767.5,484.5 791.3,484.8 C815.1,485.0 935.2,492.1 971.6,492.6 C1007.9,493.2 1136.7,490.3 1155.0,490.0" fill="none" stroke="#fff" stroke-width="2.2" stroke-linejoin="round"/><path d="M854.2,474.3 C858.1,473.0 885.9,464.3 893.5,461.2 C901.1,458.0 922.6,447.3 930.2,442.8 C937.8,438.4 960.3,423.2 969.5,416.6 C978.6,410.1 1016.6,381.3 1021.9,377.3" fill="none" stroke="#fff" stroke-width="2.2" stroke-linejoin="round"/><path d="M872.5,495.3 C874.3,497.9 887.4,515.7 890.8,521.5 C894.3,527.2 906.6,541.1 906.6,552.9 C906.6,564.8 892.4,631.2 890.8,639.9" fill="none" stroke="#fff" stroke-width="2.2" stroke-linejoin="round"/><path d="M982.6,469.1 L979.9,639.9" fill="none" stroke="#fff" stroke-width="2.2" stroke-linejoin="round"/><path d="M1048.1,469.1 L1053.3,639.9" fill="none" stroke="#fff" stroke-width="2.2" stroke-linejoin="round"/><path d="M883.0,259.4 C889.0,258.1 932.0,244.2 943.3,246.3 C954.5,248.4 987.8,271.2 995.7,280.4 C1003.5,289.5 1016.6,328.6 1021.9,338.0 C1027.1,347.5 1042.8,373.1 1048.1,374.7 C1053.3,376.3 1063.6,357.7 1074.3,353.8 C1085.0,349.8 1146.9,337.2 1155.0,335.4" fill="none" stroke="#fff" stroke-width="2.2" stroke-linejoin="round"/><path d="M995.7,437.6 C997.8,434.5 1009.8,407.7 1016.6,406.2 C1023.4,404.6 1055.4,421.1 1063.8,421.9 C1072.2,422.7 1091.4,415.6 1100.5,414.0 C1109.6,412.5 1149.5,406.9 1155.0,406.2" fill="none" stroke="#fff" stroke-width="2.2" stroke-linejoin="round"/><path d="M1084.8,437.6 L1087.4,573.9" fill="none" stroke="#fff" stroke-width="2.2" stroke-linejoin="round"/><path d="M655.0,369.5 C662.9,370.5 720.0,377.9 733.6,380.0 C747.2,382.1 785.5,389.4 791.3,390.4" fill="none" stroke="#fff" stroke-width="2.2" stroke-linejoin="round"/><path d="M791.3,390.4 C796.5,389.9 833.7,384.4 843.7,385.2 C853.6,386.0 886.1,397.0 890.8,398.3" fill="none" stroke="#fff" stroke-width="2.2" stroke-linejoin="round"/><path d="M707.4,248.9 C712.7,247.9 748.0,239.8 759.8,238.4 C771.6,237.1 814.9,235.3 825.3,235.8 C835.8,236.4 860.7,242.9 864.6,243.7" fill="none" stroke="#fff" stroke-width="2.2" stroke-linejoin="round"/><path d="M1100.5,275.1 L1155.0,267.3" fill="none" stroke="#fff" stroke-width="2.2" stroke-linejoin="round"/><path d="M1121.5,264.7 C1122.0,273.6 1123.3,343.8 1126.7,353.8 C1130.1,363.7 1152.2,363.2 1155.0,364.2" fill="none" stroke="#fff" stroke-width="2.2" stroke-linejoin="round"/><path d="M655.0,600.1 L812.2,594.8" fill="none" stroke="#fff" stroke-width="2.2" stroke-linejoin="round"/><path d="M917.1,615.8 L1155.0,600.1" fill="none" stroke="#fff" stroke-width="2.2" stroke-linejoin="round"/><path d="M943.3,298.7 C944.8,305.3 953.7,355.1 959.0,364.2 C964.2,373.4 992.0,387.8 995.7,390.4" fill="none" stroke="#fff" stroke-width="2.2" stroke-linejoin="round"/><path d="M1231.0,332.8 C1247.0,323.6 1367.0,253.6 1390.8,241.1 C1414.7,228.5 1461.6,210.4 1469.5,207.0" fill="none" stroke="#fff" stroke-width="2.2" stroke-linejoin="round"/><path d="M1254.6,547.7 C1273.4,547.9 1418.4,550.3 1443.3,550.3 C1468.2,550.3 1497.5,547.9 1503.5,547.7" fill="none" stroke="#fff" stroke-width="2.2" stroke-linejoin="round"/><path d="M1254.6,579.1 L1443.3,579.1" fill="none" stroke="#fff" stroke-width="2.2" stroke-linejoin="round"/><path d="M1301.8,534.6 L1301.8,639.9" fill="none" stroke="#fff" stroke-width="2.2" stroke-linejoin="round"/><path d="M1343.7,534.6 L1343.7,600.1" fill="none" stroke="#fff" stroke-width="2.2" stroke-linejoin="round"/><path d="M1385.6,534.6 L1380.4,639.9" fill="none" stroke="#fff" stroke-width="2.2" stroke-linejoin="round"/><path d="M1440.6,534.6 L1440.6,639.9" fill="none" stroke="#fff" stroke-width="2.2" stroke-linejoin="round"/><path d="M1443.3,600.1 C1449.3,602.7 1482.4,624.2 1503.5,626.3 C1524.7,628.4 1639.9,621.6 1655.0,621.0" fill="none" stroke="#fff" stroke-width="2.2" stroke-linejoin="round"/><path d="M1527.1,534.6 L1532.4,639.9" fill="none" stroke="#fff" stroke-width="2.2" stroke-linejoin="round"/><path d="M1561.2,534.6 L1563.8,639.9" fill="none" stroke="#fff" stroke-width="2.2" stroke-linejoin="round"/><path d="M1595.3,534.6 L1600.5,639.9" fill="none" stroke="#fff" stroke-width="2.2" stroke-linejoin="round"/><path d="M1626.7,534.6 L1631.9,600.1" fill="none" stroke="#fff" stroke-width="2.2" stroke-linejoin="round"/><path d="M1503.5,568.6 L1655.0,563.4" fill="none" stroke="#fff" stroke-width="2.2" stroke-linejoin="round"/><path d="M1521.9,594.8 L1655.0,594.8" fill="none" stroke="#fff" stroke-width="2.2" stroke-linejoin="round"/><path d="M1390.8,458.6 C1402.1,464.9 1487.3,513.3 1503.5,521.5 C1519.8,529.6 1548.3,538.0 1553.3,539.8" fill="none" stroke="#fff" stroke-width="2.2" stroke-linejoin="round"/><path d="M1369.9,589.6 C1377.2,590.4 1430.7,595.9 1443.3,597.5 C1455.8,599.0 1490.4,604.5 1495.7,605.3" fill="none" stroke="#fff" stroke-width="2.2" stroke-linejoin="round"/><path d="M1254.6,524.1 L1655.0,521.5" fill="none" stroke="#fff" stroke-width="2.2" stroke-linejoin="round"/><path d="M1233.6,547.7 L1233.6,639.9" fill="none" stroke="#fff" stroke-width="2.2" stroke-linejoin="round"/><path d="M1796.5,359.0 C1811.2,363.7 1923.3,397.8 1943.3,406.2 C1963.2,414.5 1982.6,427.9 1995.7,442.8 C2008.8,457.8 2058.8,541.4 2074.3,555.5 C2089.7,569.7 2142.7,581.5 2150.3,584.4" fill="none" stroke="#fff" stroke-width="2.2" stroke-linejoin="round"/><path d="M2016.6,414.0 C2020.6,417.2 2042.3,442.1 2055.9,445.5 C2069.6,448.9 2143.2,447.8 2152.9,448.1" fill="none" stroke="#fff" stroke-width="2.2" stroke-linejoin="round"/><path d="M1655.0,214.9 C1666.3,215.4 1756.4,216.7 1767.7,220.1 C1779.0,223.5 1755.4,245.5 1767.7,248.9 C1780.0,252.3 1873.6,253.1 1890.8,254.2 C1908.1,255.2 1930.2,258.4 1940.6,259.4 C1951.1,260.5 1990.2,264.1 1995.7,264.7" fill="none" stroke="#fff" stroke-width="2.2" stroke-linejoin="round"/><path d="M1655.0,531.9 C1660.2,532.2 1697.5,529.9 1707.4,534.6 C1717.4,539.3 1748.8,568.6 1754.6,579.1 C1760.3,589.7 1764.0,633.8 1765.1,639.9" fill="none" stroke="#fff" stroke-width="2.2" stroke-linejoin="round"/><path d="M1655.0,594.8 L1812.2,600.1" fill="none" stroke="#fff" stroke-width="2.2" stroke-linejoin="round"/><path d="M1772.9,495.3 C1775.3,497.9 1793.6,507.0 1796.5,521.5 C1799.4,535.9 1801.2,628.1 1801.8,639.9" fill="none" stroke="#fff" stroke-width="2.2" stroke-linejoin="round"/><path d="M1854.2,469.1 L1854.2,639.9" fill="none" stroke="#fff" stroke-width="2.2" stroke-linejoin="round"/><path d="M1655.0,552.9 C1666.8,552.9 1756.7,552.4 1772.9,552.9 C1789.2,553.4 1805.7,557.4 1817.5,558.2 C1829.3,558.9 1878.3,560.2 1890.8,560.8 C1903.4,561.3 1932.8,559.5 1943.3,563.4 C1953.7,567.3 1990.4,596.4 1995.7,600.1" fill="none" stroke="#fff" stroke-width="2.2" stroke-linejoin="round"/><path d="M2152.9,529.3 L2027.1,524.1" fill="none" stroke="#fff" stroke-width="2.2" stroke-linejoin="round"/><path d="M270.1,640.0 C271.9,643.4 283.1,667.7 288.4,674.0 C293.6,680.3 315.8,698.3 322.4,702.8 C328.9,707.2 349.8,714.3 353.7,718.5 C357.7,722.6 360.8,736.0 361.6,744.6 C362.4,753.2 357.4,796.9 361.6,804.7 C365.8,812.6 396.9,818.3 403.4,823.1 C410.0,827.8 424.6,848.9 427.0,851.8" fill="none" stroke="#fff" stroke-width="2.2" stroke-linejoin="round"/><path d="M291.0,674.0 C294.1,671.9 316.1,656.5 322.4,653.1 C328.6,649.7 350.6,641.3 353.7,640.0" fill="none" stroke="#fff" stroke-width="2.2" stroke-linejoin="round"/><path d="M155.0,773.4 L361.6,774.7" fill="none" stroke="#fff" stroke-width="2.2" stroke-linejoin="round"/><path d="M361.6,804.7 L427.0,810.0" fill="none" stroke="#fff" stroke-width="2.2" stroke-linejoin="round"/><path d="M427.0,851.8 C429.1,852.1 442.7,857.3 447.9,854.4 C453.1,851.6 475.1,832.5 479.3,823.1 C483.5,813.6 484.2,765.8 489.7,760.3 C495.2,754.8 524.5,766.8 534.2,768.1 C543.9,769.4 577.9,775.7 586.5,773.4 C595.1,771.0 613.6,747.7 620.5,744.6 C627.3,741.5 651.5,742.2 655.0,742.0" fill="none" stroke="#fff" stroke-width="2.2" stroke-linejoin="round"/><path d="M390.4,640.0 C390.4,646.0 386.4,691.5 390.4,700.1 C394.3,708.8 419.6,720.5 429.6,726.3 C439.5,732.1 483.7,754.5 489.7,757.7" fill="none" stroke="#fff" stroke-width="2.2" stroke-linejoin="round"/><path d="M437.4,668.8 C439.3,669.0 451.3,668.5 455.7,671.4 C460.2,674.3 475.1,693.9 481.9,697.5 C488.7,701.2 514.6,706.2 523.7,708.0 C532.9,709.8 564.0,712.2 573.4,715.8 C582.8,719.5 613.4,741.7 617.9,744.6" fill="none" stroke="#fff" stroke-width="2.2" stroke-linejoin="round"/><path d="M523.7,640.0 C523.7,650.2 524.5,729.4 523.7,742.0 C522.9,754.5 516.7,763.2 515.9,765.5" fill="none" stroke="#fff" stroke-width="2.2" stroke-linejoin="round"/><path d="M578.6,640.0 L578.6,715.8" fill="none" stroke="#fff" stroke-width="2.2" stroke-linejoin="round"/><path d="M599.6,776.0 L599.6,901.5" fill="none" stroke="#fff" stroke-width="2.2" stroke-linejoin="round"/><path d="M447.9,854.4 C444.7,857.3 422.3,878.8 416.5,883.2 C410.8,887.6 393.5,891.8 390.4,898.9 C387.2,906.0 387.7,943.1 385.1,953.8 C382.5,964.5 368.4,994.3 364.2,1006.1 C360.0,1017.9 345.4,1065.4 343.3,1072.0" fill="none" stroke="#fff" stroke-width="2.2" stroke-linejoin="round"/><path d="M427.0,851.8 C424.6,853.4 414.2,866.2 403.4,867.5 C392.7,868.8 328.4,861.5 319.7,864.9 C311.1,868.3 317.4,887.4 317.1,901.5 C316.9,915.6 317.1,995.6 317.1,1006.1" fill="none" stroke="#fff" stroke-width="2.2" stroke-linejoin="round"/><path d="M531.6,898.9 C541.2,898.5 618.4,877.7 628.3,895.0 C638.3,912.3 630.7,1054.3 630.9,1072.0" fill="none" stroke="#fff" stroke-width="2.2" stroke-linejoin="round"/><path d="M513.3,926.3 L651.9,926.3" fill="none" stroke="#fff" stroke-width="2.2" stroke-linejoin="round"/><path d="M510.6,985.2 L655.0,985.2" fill="none" stroke="#fff" stroke-width="2.2" stroke-linejoin="round"/><path d="M489.7,823.1 C491.8,824.1 508.6,826.2 510.6,833.5 C512.7,840.8 510.6,890.0 510.6,896.3" fill="none" stroke="#fff" stroke-width="2.2" stroke-linejoin="round"/><path d="M155.0,980.0 C160.2,982.6 198.7,996.9 207.3,1006.1 C215.9,1015.3 237.9,1065.4 241.3,1072.0" fill="none" stroke="#fff" stroke-width="2.2" stroke-linejoin="round"/><path d="M450.5,859.7 C450.5,871.7 448.7,958.7 450.5,980.0 C452.3,1001.2 467.0,1062.8 468.8,1072.0" fill="none" stroke="#fff" stroke-width="2.2" stroke-linejoin="round"/><path d="M196.8,804.7 C196.8,808.7 189.8,840.1 196.8,844.0 C203.9,847.9 255.2,841.9 267.4,844.0 C279.7,846.1 314.5,862.8 319.7,864.9" fill="none" stroke="#fff" stroke-width="2.2" stroke-linejoin="round"/><path d="M155.0,681.8 L285.8,684.5" fill="none" stroke="#fff" stroke-width="2.2" stroke-linejoin="round"/><path d="M155.0,760.3 C160.2,758.2 195.8,744.6 207.3,739.4 C218.8,734.1 263.8,711.1 270.1,708.0" fill="none" stroke="#fff" stroke-width="2.2" stroke-linejoin="round"/><path d="M510.6,985.2 L510.6,1072.0" fill="none" stroke="#fff" stroke-width="2.2" stroke-linejoin="round"/><path d="M675.9,640.0 L675.9,1072.0" fill="none" stroke="#fff" stroke-width="2.2" stroke-linejoin="round"/><path d="M702.1,739.4 L702.1,849.2" fill="none" stroke="#fff" stroke-width="2.2" stroke-linejoin="round"/><path d="M728.2,739.4 L728.2,849.2" fill="none" stroke="#fff" stroke-width="2.2" stroke-linejoin="round"/><path d="M811.9,789.1 L811.9,896.3" fill="none" stroke="#fff" stroke-width="2.2" stroke-linejoin="round"/><path d="M851.1,833.5 L853.7,966.9" fill="none" stroke="#fff" stroke-width="2.2" stroke-linejoin="round"/><path d="M890.4,833.5 L890.4,985.2" fill="none" stroke="#fff" stroke-width="2.2" stroke-linejoin="round"/><path d="M992.3,953.8 L992.3,1072.0" fill="none" stroke="#fff" stroke-width="2.2" stroke-linejoin="round"/><path d="M1073.4,862.3 L1073.4,1072.0" fill="none" stroke="#fff" stroke-width="2.2" stroke-linejoin="round"/><path d="M1112.6,864.9 L1115.3,1027.0" fill="none" stroke="#fff" stroke-width="2.2" stroke-linejoin="round"/><path d="M655.0,914.6 L811.9,914.6" fill="none" stroke="#fff" stroke-width="2.2" stroke-linejoin="round"/><path d="M929.6,807.4 L1021.1,807.4" fill="none" stroke="#fff" stroke-width="2.2" stroke-linejoin="round"/><path d="M1021.1,901.5 L1155.0,901.5" fill="none" stroke="#fff" stroke-width="2.2" stroke-linejoin="round"/><path d="M1021.1,993.0 L1155.0,993.0" fill="none" stroke="#fff" stroke-width="2.2" stroke-linejoin="round"/><path d="M811.9,1032.3 L937.4,1027.0" fill="none" stroke="#fff" stroke-width="2.2" stroke-linejoin="round"/><path d="M681.2,1045.3 L811.9,1047.9" fill="none" stroke="#fff" stroke-width="2.2" stroke-linejoin="round"/><path d="M1083.9,640.0 C1085.4,647.8 1095.4,705.4 1099.6,718.5 C1103.7,731.5 1123.1,765.5 1125.7,770.8" fill="none" stroke="#fff" stroke-width="2.2" stroke-linejoin="round"/><path d="M1155.0,660.9 L1099.6,718.5" fill="none" stroke="#fff" stroke-width="2.2" stroke-linejoin="round"/><path d="M751.8,640.0 L751.8,739.4" fill="none" stroke="#fff" stroke-width="2.2" stroke-linejoin="round"/><path d="M783.1,666.2 L783.1,796.9" fill="none" stroke="#fff" stroke-width="2.2" stroke-linejoin="round"/><path d="M811.9,901.5 L811.9,1072.0" fill="none" stroke="#fff" stroke-width="2.2" stroke-linejoin="round"/><path d="M825.0,674.0 L825.0,770.8" fill="none" stroke="#fff" stroke-width="2.2" stroke-linejoin="round"/><path d="M929.6,640.0 L929.6,953.8" fill="none" stroke="#fff" stroke-width="2.2" stroke-linejoin="round"/><path d="M968.8,687.1 L968.8,901.5" fill="none" stroke="#fff" stroke-width="2.2" stroke-linejoin="round"/><path d="M1021.1,744.6 L1021.1,980.0" fill="none" stroke="#fff" stroke-width="2.2" stroke-linejoin="round"/><path d="M1055.1,744.6 L1055.1,862.3" fill="none" stroke="#fff" stroke-width="2.2" stroke-linejoin="round"/><path d="M1083.9,640.0 L1083.9,681.8" fill="none" stroke="#fff" stroke-width="2.2" stroke-linejoin="round"/><path d="M1144.0,849.2 L1144.0,1072.0" fill="none" stroke="#fff" stroke-width="2.2" stroke-linejoin="round"/><path d="M655.0,739.4 L798.8,739.4" fill="none" stroke="#fff" stroke-width="2.2" stroke-linejoin="round"/><path d="M811.9,773.4 L929.6,773.4" fill="none" stroke="#fff" stroke-width="2.2" stroke-linejoin="round"/><path d="M675.9,789.1 L848.5,789.1" fill="none" stroke="#fff" stroke-width="2.2" stroke-linejoin="round"/><path d="M838.1,833.5 L963.6,833.5" fill="none" stroke="#fff" stroke-width="2.2" stroke-linejoin="round"/><path d="M655.0,849.2 L838.1,849.2" fill="none" stroke="#fff" stroke-width="2.2" stroke-linejoin="round"/><path d="M811.9,896.3 L929.6,896.3" fill="none" stroke="#fff" stroke-width="2.2" stroke-linejoin="round"/><path d="M929.6,906.7 L981.9,906.7" fill="none" stroke="#fff" stroke-width="2.2" stroke-linejoin="round"/><path d="M929.6,927.7 L992.3,927.7" fill="none" stroke="#fff" stroke-width="2.2" stroke-linejoin="round"/><path d="M992.3,953.8 L1115.3,953.8" fill="none" stroke="#fff" stroke-width="2.2" stroke-linejoin="round"/><path d="M851.1,966.9 L942.7,966.9" fill="none" stroke="#fff" stroke-width="2.2" stroke-linejoin="round"/><path d="M655.0,985.2 L981.9,985.2" fill="none" stroke="#fff" stroke-width="2.2" stroke-linejoin="round"/><path d="M937.4,1027.0 L1155.0,1027.0" fill="none" stroke="#fff" stroke-width="2.2" stroke-linejoin="round"/><path d="M655.0,742.0 C662.8,739.4 716.5,720.5 733.5,715.8 C750.4,711.1 811.9,701.2 825.0,694.9 C838.1,688.6 857.7,658.6 864.2,653.1 C870.7,647.6 887.7,641.3 890.4,640.0" fill="none" stroke="#fff" stroke-width="2.2" stroke-linejoin="round"/><path d="M992.3,823.1 C1000.4,817.8 1057.5,781.2 1073.4,770.8 C1089.4,760.3 1144.0,723.7 1151.9,718.5" fill="none" stroke="#fff" stroke-width="2.2" stroke-linejoin="round"/><path d="M1112.6,953.8 L1151.9,862.3" fill="none" stroke="#fff" stroke-width="2.2" stroke-linejoin="round"/><path d="M1060.3,770.8 L1155.0,749.8" fill="none" stroke="#fff" stroke-width="2.2" stroke-linejoin="round"/><path d="M811.9,938.1 L929.6,906.7" fill="none" stroke="#fff" stroke-width="2.2" stroke-linejoin="round"/><path d="M995.0,862.3 L1155.0,864.9" fill="none" stroke="#fff" stroke-width="2.2" stroke-linejoin="round"/><path d="M1021.1,744.6 L1055.1,744.6" fill="none" stroke="#fff" stroke-width="2.2" stroke-linejoin="round"/><path d="M1083.9,681.8 L1155.0,684.5" fill="none" stroke="#fff" stroke-width="2.2" stroke-linejoin="round"/><path d="M1277.9,757.7 C1277.9,764.2 1273.5,821.2 1277.9,823.1 C1282.4,824.9 1311.1,779.9 1322.4,776.0 C1333.6,772.1 1374.4,783.0 1390.4,783.8 C1406.3,784.6 1472.7,783.8 1481.9,783.8" fill="none" stroke="#fff" stroke-width="2.2" stroke-linejoin="round"/><path d="M1429.6,755.1 L1429.6,849.2" fill="none" stroke="#fff" stroke-width="2.2" stroke-linejoin="round"/><path d="M1390.4,783.8 L1385.1,875.4" fill="none" stroke="#fff" stroke-width="2.2" stroke-linejoin="round"/><path d="M1481.9,783.8 L1479.3,836.1" fill="none" stroke="#fff" stroke-width="2.2" stroke-linejoin="round"/><path d="M1526.3,883.2 L1526.3,980.0" fill="none" stroke="#fff" stroke-width="2.2" stroke-linejoin="round"/><path d="M1573.4,823.1 L1573.4,927.7" fill="none" stroke="#fff" stroke-width="2.2" stroke-linejoin="round"/><path d="M1612.6,744.6 L1615.3,875.4" fill="none" stroke="#fff" stroke-width="2.2" stroke-linejoin="round"/><path d="M1521.1,640.0 L1521.1,726.3" fill="none" stroke="#fff" stroke-width="2.2" stroke-linejoin="round"/><path d="M1586.5,692.3 L1655.0,692.3" fill="none" stroke="#fff" stroke-width="2.2" stroke-linejoin="round"/><path d="M1322.4,708.0 L1390.4,640.0" fill="none" stroke="#fff" stroke-width="2.2" stroke-linejoin="round"/><path d="M1233.5,640.0 C1234.2,646.5 1236.6,698.8 1241.3,705.4 C1246.0,711.9 1276.6,705.4 1280.5,705.4" fill="none" stroke="#fff" stroke-width="2.2" stroke-linejoin="round"/><path d="M1322.4,760.3 L1325.0,705.4" fill="none" stroke="#fff" stroke-width="2.2" stroke-linejoin="round"/><path d="M1155.0,796.9 C1160.2,797.4 1199.5,803.2 1207.3,802.1 C1215.1,801.1 1230.8,788.0 1233.5,786.4" fill="none" stroke="#fff" stroke-width="2.2" stroke-linejoin="round"/><path d="M1155.0,1032.3 C1162.8,1031.0 1221.7,1019.2 1233.5,1019.2 C1245.2,1019.2 1268.8,1031.0 1272.7,1032.3" fill="none" stroke="#fff" stroke-width="2.2" stroke-linejoin="round"/><path d="M1311.9,980.0 C1317.1,977.3 1356.4,951.2 1364.2,953.8 C1372.1,956.4 1387.7,1000.9 1390.4,1006.1" fill="none" stroke="#fff" stroke-width="2.2" stroke-linejoin="round"/><path d="M1416.5,980.0 L1468.8,1000.9" fill="none" stroke="#fff" stroke-width="2.2" stroke-linejoin="round"/><path d="M1495.0,980.0 C1500.2,982.1 1536.8,1000.9 1547.3,1000.9 C1557.7,1000.9 1594.3,982.1 1599.6,980.0" fill="none" stroke="#fff" stroke-width="2.2" stroke-linejoin="round"/><path d="M1655.0,980.0 L1599.6,980.0" fill="none" stroke="#fff" stroke-width="2.2" stroke-linejoin="round"/><path d="M1526.3,927.7 L1526.3,883.2" fill="none" stroke="#fff" stroke-width="2.2" stroke-linejoin="round"/><path d="M1620.5,927.7 L1625.7,1072.0" fill="none" stroke="#fff" stroke-width="2.2" stroke-linejoin="round"/><path d="M1168.1,765.5 C1174.6,764.5 1218.0,755.6 1233.5,755.1 C1248.9,754.5 1313.5,759.8 1322.4,760.3" fill="none" stroke="#fff" stroke-width="2.2" stroke-linejoin="round"/><path d="M1155.0,849.2 C1159.2,849.2 1188.2,852.3 1196.8,849.2 C1205.5,846.1 1236.9,821.0 1241.3,817.8" fill="none" stroke="#fff" stroke-width="2.2" stroke-linejoin="round"/><path d="M1241.3,817.8 C1248.4,826.2 1297.0,889.2 1311.9,901.5 C1326.8,913.8 1380.9,935.5 1390.4,940.7 C1399.8,946.0 1404.5,952.5 1406.0,953.8" fill="none" stroke="#fff" stroke-width="2.2" stroke-linejoin="round"/><path d="M1338.1,867.5 C1348.5,864.6 1427.0,845.0 1442.7,838.7 C1458.3,832.5 1489.7,808.1 1495.0,804.7" fill="none" stroke="#fff" stroke-width="2.2" stroke-linejoin="round"/><path d="M1280.5,705.4 L1364.2,765.5" fill="none" stroke="#fff" stroke-width="2.2" stroke-linejoin="round"/><path d="M1521.1,726.3 L1651.9,744.6" fill="none" stroke="#fff" stroke-width="2.2" stroke-linejoin="round"/><path d="M1625.7,640.0 C1621.8,645.2 1589.1,681.8 1586.5,692.3 C1583.9,702.8 1598.8,732.8 1599.6,744.6 C1600.3,756.4 1594.9,803.4 1594.3,810.0" fill="none" stroke="#fff" stroke-width="2.2" stroke-linejoin="round"/><path d="M1429.6,640.0 C1429.3,645.2 1427.0,686.0 1427.0,692.3 C1427.0,698.6 1429.3,701.7 1429.6,702.8" fill="none" stroke="#fff" stroke-width="2.2" stroke-linejoin="round"/><path d="M1338.1,870.1 L1416.5,812.6" fill="none" stroke="#fff" stroke-width="2.2" stroke-linejoin="round"/><path d="M1453.1,640.0 L1450.5,705.4" fill="none" stroke="#fff" stroke-width="2.2" stroke-linejoin="round"/><path d="M1406.0,953.8 C1417.6,960.3 1503.1,1011.3 1521.1,1019.2 C1539.2,1027.0 1573.1,1028.3 1586.5,1032.3 C1599.9,1036.2 1648.1,1055.8 1655.0,1058.4" fill="none" stroke="#fff" stroke-width="2.2" stroke-linejoin="round"/><path d="M1495.0,927.7 L1655.0,927.7" fill="none" stroke="#fff" stroke-width="2.2" stroke-linejoin="round"/><path d="M1526.3,883.2 L1651.9,883.2" fill="none" stroke="#fff" stroke-width="2.2" stroke-linejoin="round"/><path d="M1463.6,1000.9 L1468.8,1072.0" fill="none" stroke="#fff" stroke-width="2.2" stroke-linejoin="round"/><path d="M1155.0,980.0 C1161.5,979.4 1207.3,965.5 1220.4,974.7 C1233.5,983.9 1279.2,1062.3 1285.8,1072.0" fill="none" stroke="#fff" stroke-width="2.2" stroke-linejoin="round"/><path d="M1233.5,755.1 L1220.4,640.0" fill="none" stroke="#fff" stroke-width="2.2" stroke-linejoin="round"/><path d="M1155.0,901.5 C1160.2,898.9 1198.7,883.2 1207.3,875.4 C1215.9,867.5 1237.9,828.3 1241.3,823.1" fill="none" stroke="#fff" stroke-width="2.2" stroke-linejoin="round"/><path d="M1298.8,927.7 L1259.6,1072.0" fill="none" stroke="#fff" stroke-width="2.2" stroke-linejoin="round"/><path d="M1301.4,836.1 C1309.3,836.4 1365.8,830.9 1379.9,838.7 C1394.0,846.6 1436.4,907.0 1442.7,914.6" fill="none" stroke="#fff" stroke-width="2.2" stroke-linejoin="round"/><path d="M1429.6,755.1 L1481.9,760.3" fill="none" stroke="#fff" stroke-width="2.2" stroke-linejoin="round"/><path d="M1586.5,823.1 L1655.0,823.1" fill="none" stroke="#fff" stroke-width="2.2" stroke-linejoin="round"/><path d="M1655.0,640.0 C1655.5,643.4 1657.6,666.2 1660.2,674.0 C1662.8,681.8 1679.1,704.9 1681.2,718.5 C1683.2,732.1 1678.5,794.3 1681.2,810.0 C1683.8,825.7 1701.3,864.9 1707.3,875.4 C1713.3,885.8 1734.0,909.9 1741.3,914.6 C1748.6,919.3 1776.6,921.6 1780.5,922.4" fill="none" stroke="#fff" stroke-width="2.2" stroke-linejoin="round"/><path d="M1770.1,640.0 C1771.1,645.2 1779.7,683.1 1780.5,692.3 C1781.3,701.5 1775.8,726.3 1777.9,731.5 C1780.0,736.8 1797.3,742.8 1801.4,744.6 C1805.6,746.4 1817.1,746.4 1819.7,749.8 C1822.4,753.2 1826.8,775.7 1827.6,778.6" fill="none" stroke="#fff" stroke-width="2.2" stroke-linejoin="round"/><path d="M1743.9,640.0 L1743.9,807.4" fill="none" stroke="#fff" stroke-width="2.2" stroke-linejoin="round"/><path d="M1893.0,640.0 L1893.0,776.0" fill="none" stroke="#fff" stroke-width="2.2" stroke-linejoin="round"/><path d="M1953.1,640.0 L1953.1,776.0" fill="none" stroke="#fff" stroke-width="2.2" stroke-linejoin="round"/><path d="M1923.0,778.6 C1923.0,785.1 1921.3,835.6 1923.0,844.0 C1924.7,852.3 1939.6,859.4 1940.0,862.3 C1940.4,865.2 1932.5,869.9 1927.0,872.7 C1921.5,875.6 1894.0,887.4 1885.1,891.0 C1876.2,894.7 1845.4,909.6 1838.1,909.4 C1830.7,909.1 1817.1,893.1 1811.9,888.4 C1806.7,883.7 1788.4,864.9 1785.8,862.3" fill="none" stroke="#fff" stroke-width="2.2" stroke-linejoin="round"/><path d="M1804.1,640.0 C1807.5,644.2 1829.4,677.1 1838.1,681.8 C1846.7,686.5 1885.1,686.5 1890.4,687.1" fill="none" stroke="#fff" stroke-width="2.2" stroke-linejoin="round"/><path d="M1655.0,867.5 C1660.2,867.8 1698.1,870.4 1707.3,870.1 C1716.5,869.9 1738.7,865.7 1746.5,864.9 C1754.4,864.1 1781.8,862.5 1785.8,862.3" fill="none" stroke="#fff" stroke-width="2.2" stroke-linejoin="round"/><path d="M1929.6,875.4 C1936.9,878.5 1988.4,895.8 2002.8,906.7 C2017.2,917.7 2058.2,971.3 2073.4,985.2 C2088.6,999.0 2146.8,1039.3 2155.0,1045.3" fill="none" stroke="#fff" stroke-width="2.2" stroke-linejoin="round"/><path d="M2042.0,776.0 C2042.0,783.3 2046.0,836.1 2042.0,849.2 C2038.1,862.3 2006.7,901.0 2002.8,906.7" fill="none" stroke="#fff" stroke-width="2.2" stroke-linejoin="round"/><path d="M2073.4,640.0 L2070.8,715.8" fill="none" stroke="#fff" stroke-width="2.2" stroke-linejoin="round"/><path d="M2055.1,776.0 L2155.0,776.0" fill="none" stroke="#fff" stroke-width="2.2" stroke-linejoin="round"/><path d="M2110.0,776.0 L2110.0,875.4" fill="none" stroke="#fff" stroke-width="2.2" stroke-linejoin="round"/><path d="M1780.5,922.4 C1780.5,927.7 1778.4,969.0 1780.5,974.7 C1782.6,980.5 1793.1,975.5 1801.4,980.0 C1809.8,984.4 1856.1,1010.0 1864.2,1019.2 C1872.3,1028.4 1880.7,1066.7 1882.5,1072.0" fill="none" stroke="#fff" stroke-width="2.2" stroke-linejoin="round"/><path d="M1872.1,938.1 L1864.2,1072.0" fill="none" stroke="#fff" stroke-width="2.2" stroke-linejoin="round"/><path d="M1927.0,940.7 L1927.0,1072.0" fill="none" stroke="#fff" stroke-width="2.2" stroke-linejoin="round"/><path d="M2070.8,906.7 L2070.8,1072.0" fill="none" stroke="#fff" stroke-width="2.2" stroke-linejoin="round"/><path d="M2026.3,930.3 L2155.0,930.3" fill="none" stroke="#fff" stroke-width="2.2" stroke-linejoin="round"/><path d="M1655.0,914.6 L1723.0,914.6" fill="none" stroke="#fff" stroke-width="2.2" stroke-linejoin="round"/><path d="M1712.5,901.5 L1712.5,1072.0" fill="none" stroke="#fff" stroke-width="2.2" stroke-linejoin="round"/><path d="M1655.0,739.4 C1664.2,739.4 1736.6,737.8 1746.5,739.4 C1756.5,740.9 1747.8,751.9 1754.4,755.1 C1760.9,758.2 1806.2,769.2 1811.9,770.8" fill="none" stroke="#fff" stroke-width="2.2" stroke-linejoin="round"/><path d="M1655.0,993.0 L1780.5,974.7" fill="none" stroke="#fff" stroke-width="2.2" stroke-linejoin="round"/><path d="M1968.8,940.7 L2026.3,930.3" fill="none" stroke="#fff" stroke-width="2.2" stroke-linejoin="round"/><path d="M2155.0,993.0 L2047.3,1006.1" fill="none" stroke="#fff" stroke-width="2.2" stroke-linejoin="round"/><path d="M1180.8,207.0 L1180.8,531.6" fill="none" stroke="#fff" stroke-width="2" stroke-linejoin="round"/><path d="M1265.1,207.0 L1265.1,636.3" fill="none" stroke="#fff" stroke-width="2" stroke-linejoin="round"/><path d="M1290.8,207.0 L1290.8,636.3" fill="none" stroke="#fff" stroke-width="2" stroke-linejoin="round"/><path d="M1344.2,207.0 L1344.2,636.3" fill="none" stroke="#fff" stroke-width="2" stroke-linejoin="round"/><path d="M1366.7,207.0 L1366.7,636.3" fill="none" stroke="#fff" stroke-width="2" stroke-linejoin="round"/><path d="M1403.9,207.0 L1403.9,636.3" fill="none" stroke="#fff" stroke-width="2" stroke-linejoin="round"/><path d="M1503.9,207.0 L1503.9,636.3" fill="none" stroke="#fff" stroke-width="2" stroke-linejoin="round"/><path d="M1532.2,207.0 L1532.2,531.6" fill="none" stroke="#fff" stroke-width="2" stroke-linejoin="round"/><path d="M1560.9,207.0 L1560.9,531.6" fill="none" stroke="#fff" stroke-width="2" stroke-linejoin="round"/><path d="M1592.9,207.0 L1592.9,531.6" fill="none" stroke="#fff" stroke-width="2" stroke-linejoin="round"/><path d="M1626.9,207.0 L1626.9,531.6" fill="none" stroke="#fff" stroke-width="2" stroke-linejoin="round"/><path d="M1670.9,207.0 L1670.9,531.6" fill="none" stroke="#fff" stroke-width="2" stroke-linejoin="round"/><path d="M1712.8,207.0 L1712.8,510.7" fill="none" stroke="#fff" stroke-width="2" stroke-linejoin="round"/><path d="M1767.8,207.0 L1767.8,510.7" fill="none" stroke="#fff" stroke-width="2" stroke-linejoin="round"/><path d="M1833.2,207.0 L1833.2,510.7" fill="none" stroke="#fff" stroke-width="2" stroke-linejoin="round"/><path d="M1895.0,207.0 L1895.0,510.7" fill="none" stroke="#fff" stroke-width="2" stroke-linejoin="round"/><path d="M1953.6,207.0 L1953.6,510.7" fill="none" stroke="#fff" stroke-width="2" stroke-linejoin="round"/><path d="M1995.5,207.0 L1995.5,510.7" fill="none" stroke="#fff" stroke-width="2" stroke-linejoin="round"/><path d="M2026.9,207.0 L2026.9,510.7" fill="none" stroke="#fff" stroke-width="2" stroke-linejoin="round"/><path d="M2074.0,207.0 L2074.0,510.7" fill="none" stroke="#fff" stroke-width="2" stroke-linejoin="round"/><path d="M2134.8,207.0 L2134.8,510.7" fill="none" stroke="#fff" stroke-width="2" stroke-linejoin="round"/><path d="M1234.8,233.2 L1674.6,233.2" fill="none" stroke="#fff" stroke-width="2" stroke-linejoin="round"/><path d="M1234.8,262.0 L1674.6,262.0" fill="none" stroke="#fff" stroke-width="2" stroke-linejoin="round"/><path d="M1234.8,292.9 L1674.6,292.9" fill="none" stroke="#fff" stroke-width="2" stroke-linejoin="round"/><path d="M1234.8,327.4 L1674.6,327.4" fill="none" stroke="#fff" stroke-width="2" stroke-linejoin="round"/><path d="M1234.8,356.2 L1674.6,356.2" fill="none" stroke="#fff" stroke-width="2" stroke-linejoin="round"/><path d="M1234.8,385.0 L1674.6,385.0" fill="none" stroke="#fff" stroke-width="2" stroke-linejoin="round"/><path d="M1234.8,413.8 L1674.6,413.8" fill="none" stroke="#fff" stroke-width="2" stroke-linejoin="round"/><path d="M1234.8,476.1 L1674.6,476.1" fill="none" stroke="#fff" stroke-width="2" stroke-linejoin="round"/><path d="M1234.8,521.1 L1674.6,521.1" fill="none" stroke="#fff" stroke-width="2" stroke-linejoin="round"/><path d="M1234.8,563.0 L1674.6,563.0" fill="none" stroke="#fff" stroke-width="2" stroke-linejoin="round"/><path d="M1234.8,595.0 L1674.6,595.0" fill="none" stroke="#fff" stroke-width="2" stroke-linejoin="round"/><path d="M1674.6,214.9 L2151.0,214.9" fill="none" stroke="#fff" stroke-width="2" stroke-linejoin="round"/><path d="M1674.6,296.0 L2151.0,296.0" fill="none" stroke="#fff" stroke-width="2" stroke-linejoin="round"/><path d="M1674.6,343.1 L2151.0,343.1" fill="none" stroke="#fff" stroke-width="2" stroke-linejoin="round"/><path d="M1674.6,416.9 L2151.0,416.9" fill="none" stroke="#fff" stroke-width="2" stroke-linejoin="round"/><path d="M1674.6,492.9 L2151.0,492.9" fill="none" stroke="#fff" stroke-width="2" stroke-linejoin="round"/><path d="M1674.6,529.0 L2151.0,529.0" fill="none" stroke="#fff" stroke-width="2" stroke-linejoin="round"/><path d="M1674.6,549.9 L2151.0,549.9" fill="none" stroke="#fff" stroke-width="2" stroke-linejoin="round"/><path d="M1234.8,320.1 L2151.0,320.1" fill="none" stroke="#fff" stroke-width="2" stroke-linejoin="round"/><path d="M1234.8,356.2 L2151.0,356.2" fill="none" stroke="#fff" stroke-width="2" stroke-linejoin="round"/><path d="M1234.8,492.9 L2151.0,492.9" fill="none" stroke="#fff" stroke-width="2" stroke-linejoin="round"/><path d="M655.0,272.0 C672.5,281.7 720.7,308.3 760.0,330.0 C799.3,351.7 857.7,388.8 891.0,402.0 C924.3,415.2 938.2,409.7 960.0,409.0 C981.8,408.3 1005.2,398.5 1022.0,398.0 C1038.8,397.5 1048.0,406.3 1061.0,406.0 C1074.0,405.7 1090.2,402.0 1100.0,396.0 C1109.8,390.0 1113.3,374.0 1120.0,370.0 C1126.7,366.0 1134.8,370.2 1140.0,372.0 C1145.2,373.8 1149.2,379.5 1151.0,381.0" fill="none" stroke="#f6cd76" stroke-width="6" stroke-linecap="round" stroke-linejoin="round"/><path d="M891.0,402.0 C885.8,408.3 867.0,423.7 860.0,440.0 C853.0,456.3 850.3,484.2 849.0,500.0 C847.7,515.8 848.8,525.0 852.0,535.0 C855.2,545.0 864.5,542.5 868.0,560.0 C871.5,577.5 862.7,617.5 873.0,640.0 C883.3,662.5 914.0,678.5 930.0,695.0 C946.0,711.5 959.0,727.2 969.0,739.0 C979.0,750.8 986.5,761.5 990.0,766.0" fill="none" stroke="#f6cd76" stroke-width="6" stroke-linecap="round" stroke-linejoin="round"/><path d="M1022.0,207.0 C1030.3,212.2 1057.3,230.5 1072.0,238.0 C1086.7,245.5 1101.3,247.0 1110.0,252.0 C1118.7,257.0 1120.7,262.8 1124.0,268.0 C1127.3,273.2 1124.7,279.0 1130.0,283.0 C1135.3,287.0 1151.7,290.5 1156.0,292.0" fill="none" stroke="#f6cd76" stroke-width="6" stroke-linecap="round" stroke-linejoin="round"/><path d="M1156.0,292.0 C1156.5,299.3 1159.8,321.2 1159.0,336.0 C1158.2,350.8 1150.8,370.3 1151.0,381.0 C1151.2,391.7 1156.5,394.2 1160.0,400.0 C1163.5,405.8 1170.0,413.3 1172.0,416.0" fill="none" stroke="#f6cd76" stroke-width="6" stroke-linecap="round" stroke-linejoin="round"/><path d="M1156.0,292.0 C1160.8,286.5 1176.5,267.5 1185.0,259.0 C1193.5,250.5 1203.3,244.0 1207.0,241.0" fill="none" stroke="#f6cd76" stroke-width="6" stroke-linecap="round" stroke-linejoin="round"/><path d="M1181.0,207.0 C1181.2,212.3 1179.2,230.3 1182.0,239.0 C1184.8,247.7 1192.8,251.8 1198.0,259.0 C1203.2,266.2 1209.3,275.7 1213.0,282.0 C1216.7,288.3 1218.8,288.0 1220.0,297.0 C1221.2,306.0 1221.0,323.0 1220.0,336.0 C1219.0,349.0 1214.7,365.3 1214.0,375.0 C1213.3,384.7 1217.5,388.7 1216.0,394.0 C1214.5,399.3 1208.7,399.3 1205.0,407.0 C1201.3,414.7 1196.5,429.7 1194.0,440.0 C1191.5,450.3 1192.3,452.3 1190.0,469.0 C1187.7,485.7 1185.0,525.5 1180.0,540.0 C1175.0,554.5 1173.3,546.0 1160.0,556.0 C1146.7,566.0 1119.5,586.0 1100.0,600.0 C1080.5,614.0 1060.5,627.2 1043.0,640.0 C1025.5,652.8 1003.7,655.2 995.0,677.0 C986.3,698.8 991.8,746.7 991.0,771.0 C990.2,795.3 993.7,799.0 990.0,823.0 C986.3,847.0 976.0,888.8 969.0,915.0 C962.0,941.2 955.5,953.8 948.0,980.0 C940.5,1006.2 928.0,1056.7 924.0,1072.0" fill="none" stroke="#f6cd76" stroke-width="6" stroke-linecap="round" stroke-linejoin="round"/><path d="M1222.0,332.0 C1228.7,329.2 1247.0,319.5 1262.0,315.0 C1277.0,310.5 1295.7,304.5 1312.0,305.0 C1328.3,305.5 1346.8,315.2 1360.0,318.0 C1373.2,320.8 1377.2,327.0 1391.0,322.0 C1404.8,317.0 1428.2,291.7 1443.0,288.0 C1457.8,284.3 1469.5,297.2 1480.0,300.0 C1490.5,302.8 1499.3,308.3 1506.0,305.0 C1512.7,301.7 1515.7,290.0 1520.0,280.0 C1524.3,270.0 1525.3,251.7 1532.0,245.0 C1538.7,238.3 1539.8,238.3 1560.0,240.0 C1580.2,241.7 1619.7,251.3 1653.0,255.0 C1686.3,258.7 1727.0,259.2 1760.0,262.0 C1793.0,264.8 1829.2,271.5 1851.0,272.0 C1872.8,272.5 1877.8,265.3 1891.0,265.0 C1904.2,264.7 1914.7,272.5 1930.0,270.0 C1945.3,267.5 1965.5,253.5 1983.0,250.0 C2000.5,246.5 2007.0,247.0 2035.0,249.0 C2063.0,251.0 2131.7,259.8 2151.0,262.0" fill="none" stroke="#f6cd76" stroke-width="6" stroke-linecap="round" stroke-linejoin="round"/><path d="M1522.0,207.0 C1520.3,215.8 1513.8,244.5 1512.0,260.0 C1510.2,275.5 1511.2,252.0 1511.0,300.0 C1510.8,348.0 1512.8,498.0 1511.0,548.0 C1509.2,598.0 1503.5,584.7 1500.0,600.0 C1496.5,615.3 1490.3,629.0 1490.0,640.0 C1489.7,651.0 1495.0,653.0 1498.0,666.0 C1501.0,679.0 1510.2,700.5 1508.0,718.0 C1505.8,735.5 1487.2,753.5 1485.0,771.0 C1482.8,788.5 1496.3,803.5 1495.0,823.0 C1493.7,842.5 1485.7,866.2 1477.0,888.0 C1468.3,909.8 1457.5,935.2 1443.0,954.0 C1428.5,972.8 1407.5,985.3 1390.0,1001.0 C1372.5,1016.7 1357.5,1036.7 1338.0,1048.0 C1318.5,1059.3 1290.5,1067.3 1273.0,1069.0 C1255.5,1070.7 1244.0,1068.5 1233.0,1058.0 C1222.0,1047.5 1220.0,1017.7 1207.0,1006.0 C1194.0,994.3 1175.0,994.5 1155.0,988.0 C1135.0,981.5 1111.5,971.3 1087.0,967.0 C1062.5,962.7 1030.8,959.0 1008.0,962.0 C985.2,965.0 959.7,981.2 950.0,985.0" fill="none" stroke="#f6cd76" stroke-width="6" stroke-linecap="round" stroke-linejoin="round"/><path d="M1200.0,432.0 C1209.2,431.8 1234.2,428.3 1255.0,431.0 C1275.8,433.7 1284.8,445.3 1325.0,448.0 C1365.2,450.7 1441.3,448.7 1496.0,447.0 C1550.7,445.3 1606.0,432.8 1653.0,438.0 C1700.0,443.2 1750.5,475.8 1778.0,478.0 C1805.5,480.2 1788.7,456.3 1818.0,451.0 C1847.3,445.7 1928.7,444.7 1954.0,446.0 C1979.3,447.3 1963.0,450.8 1970.0,459.0 C1977.0,467.2 1990.3,480.2 1996.0,495.0 C2001.7,509.8 1991.0,523.8 2004.0,548.0 C2017.0,572.2 2049.5,612.5 2074.0,640.0 C2098.5,667.5 2138.2,700.8 2151.0,713.0" fill="none" stroke="#f6cd76" stroke-width="6" stroke-linecap="round" stroke-linejoin="round"/><path d="M1232.0,207.0 C1232.0,244.2 1223.0,379.8 1232.0,430.0 C1241.0,480.2 1274.8,473.0 1286.0,508.0 C1297.2,543.0 1294.7,605.0 1299.0,640.0 C1303.3,675.0 1308.5,691.8 1312.0,718.0 C1315.5,744.2 1311.3,770.8 1320.0,797.0 C1328.7,823.2 1350.2,848.8 1364.0,875.0 C1377.8,901.2 1395.5,934.3 1403.0,954.0 C1410.5,973.7 1408.0,986.5 1409.0,993.0" fill="none" stroke="#f6cd76" stroke-width="6" stroke-linecap="round" stroke-linejoin="round"/><path d="M1312.0,653.0 C1318.5,659.5 1333.7,677.7 1351.0,692.0 C1368.3,706.3 1394.2,727.7 1416.0,739.0 C1437.8,750.3 1469.3,754.7 1482.0,760.0 C1494.7,765.3 1481.2,765.3 1492.0,771.0 C1502.8,776.7 1531.3,787.5 1547.0,794.0 C1562.7,800.5 1568.5,807.5 1586.0,810.0 C1603.5,812.5 1641.0,809.2 1652.0,809.0" fill="none" stroke="#f6cd76" stroke-width="6" stroke-linecap="round" stroke-linejoin="round"/><path d="M1655.0,810.0 C1661.5,810.8 1685.3,815.2 1694.0,815.0 C1702.7,814.8 1693.8,810.7 1707.0,809.0 C1720.2,807.3 1755.5,808.8 1773.0,805.0 C1790.5,801.2 1799.0,790.7 1812.0,786.0 C1825.0,781.3 1821.3,778.7 1851.0,777.0 C1880.7,775.3 1963.8,779.2 1990.0,776.0 C2016.2,772.8 1995.3,765.8 2008.0,758.0 C2020.7,750.2 2055.2,736.0 2066.0,729.0 C2076.8,722.0 2058.8,718.2 2073.0,716.0 C2087.2,713.8 2138.0,716.0 2151.0,716.0" fill="none" stroke="#f6cd76" stroke-width="6" stroke-linecap="round" stroke-linejoin="round"/><path d="M1497.0,819.0 C1511.8,819.0 1560.2,820.2 1586.0,819.0 C1611.8,817.8 1641.0,813.2 1652.0,812.0" fill="none" stroke="#f6cd76" stroke-width="6" stroke-linecap="round" stroke-linejoin="round"/><path d="M1472.0,443.0 C1472.0,475.8 1470.8,587.5 1472.0,640.0 C1473.2,692.5 1477.8,738.3 1479.0,758.0" fill="none" stroke="#f6cd76" stroke-width="6" stroke-linecap="round" stroke-linejoin="round"/><path d="M995.0,677.0 C981.8,683.5 937.8,702.2 916.0,716.0 C894.2,729.8 876.2,744.3 864.0,760.0 C851.8,775.7 848.7,790.8 843.0,810.0 C837.3,829.2 837.3,859.8 830.0,875.0 C822.7,890.2 815.2,892.2 799.0,901.0 C782.8,909.8 748.3,917.0 733.0,928.0 C717.7,939.0 720.0,950.5 707.0,967.0 C694.0,983.5 669.5,1009.5 655.0,1027.0 C640.5,1044.5 625.8,1064.5 620.0,1072.0" fill="none" stroke="#f6cd76" stroke-width="6" stroke-linecap="round" stroke-linejoin="round"/><path d="M560.0,207.0 L655.0,272.0" fill="none" stroke="#f6cd76" stroke-width="6" stroke-linecap="round" stroke-linejoin="round"/><path d="M1151.0,381.0 C1159.2,380.8 1186.5,376.8 1200.0,380.0 C1213.5,383.2 1226.7,396.7 1232.0,400.0" fill="none" stroke="#f6cd76" stroke-width="6" stroke-linecap="round" stroke-linejoin="round"/><path d="M1954.0,446.0 L1970.0,430.0" fill="none" stroke="#f6cd76" stroke-width="6" stroke-linecap="round" stroke-linejoin="round"/><path d="M655.0,272.0 C672.5,281.7 720.7,308.3 760.0,330.0 C799.3,351.7 857.7,388.8 891.0,402.0 C924.3,415.2 938.2,409.7 960.0,409.0 C981.8,408.3 1005.2,398.5 1022.0,398.0 C1038.8,397.5 1048.0,406.3 1061.0,406.0 C1074.0,405.7 1090.2,402.0 1100.0,396.0 C1109.8,390.0 1113.3,374.0 1120.0,370.0 C1126.7,366.0 1134.8,370.2 1140.0,372.0 C1145.2,373.8 1149.2,379.5 1151.0,381.0" fill="none" stroke="#fde6a2" stroke-width="3.8" stroke-linecap="round" stroke-linejoin="round"/><path d="M891.0,402.0 C885.8,408.3 867.0,423.7 860.0,440.0 C853.0,456.3 850.3,484.2 849.0,500.0 C847.7,515.8 848.8,525.0 852.0,535.0 C855.2,545.0 864.5,542.5 868.0,560.0 C871.5,577.5 862.7,617.5 873.0,640.0 C883.3,662.5 914.0,678.5 930.0,695.0 C946.0,711.5 959.0,727.2 969.0,739.0 C979.0,750.8 986.5,761.5 990.0,766.0" fill="none" stroke="#fde6a2" stroke-width="3.8" stroke-linecap="round" stroke-linejoin="round"/><path d="M1022.0,207.0 C1030.3,212.2 1057.3,230.5 1072.0,238.0 C1086.7,245.5 1101.3,247.0 1110.0,252.0 C1118.7,257.0 1120.7,262.8 1124.0,268.0 C1127.3,273.2 1124.7,279.0 1130.0,283.0 C1135.3,287.0 1151.7,290.5 1156.0,292.0" fill="none" stroke="#fde6a2" stroke-width="3.8" stroke-linecap="round" stroke-linejoin="round"/><path d="M1156.0,292.0 C1156.5,299.3 1159.8,321.2 1159.0,336.0 C1158.2,350.8 1150.8,370.3 1151.0,381.0 C1151.2,391.7 1156.5,394.2 1160.0,400.0 C1163.5,405.8 1170.0,413.3 1172.0,416.0" fill="none" stroke="#fde6a2" stroke-width="3.8" stroke-linecap="round" stroke-linejoin="round"/><path d="M1156.0,292.0 C1160.8,286.5 1176.5,267.5 1185.0,259.0 C1193.5,250.5 1203.3,244.0 1207.0,241.0" fill="none" stroke="#fde6a2" stroke-width="3.8" stroke-linecap="round" stroke-linejoin="round"/><path d="M1181.0,207.0 C1181.2,212.3 1179.2,230.3 1182.0,239.0 C1184.8,247.7 1192.8,251.8 1198.0,259.0 C1203.2,266.2 1209.3,275.7 1213.0,282.0 C1216.7,288.3 1218.8,288.0 1220.0,297.0 C1221.2,306.0 1221.0,323.0 1220.0,336.0 C1219.0,349.0 1214.7,365.3 1214.0,375.0 C1213.3,384.7 1217.5,388.7 1216.0,394.0 C1214.5,399.3 1208.7,399.3 1205.0,407.0 C1201.3,414.7 1196.5,429.7 1194.0,440.0 C1191.5,450.3 1192.3,452.3 1190.0,469.0 C1187.7,485.7 1185.0,525.5 1180.0,540.0 C1175.0,554.5 1173.3,546.0 1160.0,556.0 C1146.7,566.0 1119.5,586.0 1100.0,600.0 C1080.5,614.0 1060.5,627.2 1043.0,640.0 C1025.5,652.8 1003.7,655.2 995.0,677.0 C986.3,698.8 991.8,746.7 991.0,771.0 C990.2,795.3 993.7,799.0 990.0,823.0 C986.3,847.0 976.0,888.8 969.0,915.0 C962.0,941.2 955.5,953.8 948.0,980.0 C940.5,1006.2 928.0,1056.7 924.0,1072.0" fill="none" stroke="#fde6a2" stroke-width="3.8" stroke-linecap="round" stroke-linejoin="round"/><path d="M1222.0,332.0 C1228.7,329.2 1247.0,319.5 1262.0,315.0 C1277.0,310.5 1295.7,304.5 1312.0,305.0 C1328.3,305.5 1346.8,315.2 1360.0,318.0 C1373.2,320.8 1377.2,327.0 1391.0,322.0 C1404.8,317.0 1428.2,291.7 1443.0,288.0 C1457.8,284.3 1469.5,297.2 1480.0,300.0 C1490.5,302.8 1499.3,308.3 1506.0,305.0 C1512.7,301.7 1515.7,290.0 1520.0,280.0 C1524.3,270.0 1525.3,251.7 1532.0,245.0 C1538.7,238.3 1539.8,238.3 1560.0,240.0 C1580.2,241.7 1619.7,251.3 1653.0,255.0 C1686.3,258.7 1727.0,259.2 1760.0,262.0 C1793.0,264.8 1829.2,271.5 1851.0,272.0 C1872.8,272.5 1877.8,265.3 1891.0,265.0 C1904.2,264.7 1914.7,272.5 1930.0,270.0 C1945.3,267.5 1965.5,253.5 1983.0,250.0 C2000.5,246.5 2007.0,247.0 2035.0,249.0 C2063.0,251.0 2131.7,259.8 2151.0,262.0" fill="none" stroke="#fde6a2" stroke-width="3.8" stroke-linecap="round" stroke-linejoin="round"/><path d="M1522.0,207.0 C1520.3,215.8 1513.8,244.5 1512.0,260.0 C1510.2,275.5 1511.2,252.0 1511.0,300.0 C1510.8,348.0 1512.8,498.0 1511.0,548.0 C1509.2,598.0 1503.5,584.7 1500.0,600.0 C1496.5,615.3 1490.3,629.0 1490.0,640.0 C1489.7,651.0 1495.0,653.0 1498.0,666.0 C1501.0,679.0 1510.2,700.5 1508.0,718.0 C1505.8,735.5 1487.2,753.5 1485.0,771.0 C1482.8,788.5 1496.3,803.5 1495.0,823.0 C1493.7,842.5 1485.7,866.2 1477.0,888.0 C1468.3,909.8 1457.5,935.2 1443.0,954.0 C1428.5,972.8 1407.5,985.3 1390.0,1001.0 C1372.5,1016.7 1357.5,1036.7 1338.0,1048.0 C1318.5,1059.3 1290.5,1067.3 1273.0,1069.0 C1255.5,1070.7 1244.0,1068.5 1233.0,1058.0 C1222.0,1047.5 1220.0,1017.7 1207.0,1006.0 C1194.0,994.3 1175.0,994.5 1155.0,988.0 C1135.0,981.5 1111.5,971.3 1087.0,967.0 C1062.5,962.7 1030.8,959.0 1008.0,962.0 C985.2,965.0 959.7,981.2 950.0,985.0" fill="none" stroke="#fde6a2" stroke-width="3.8" stroke-linecap="round" stroke-linejoin="round"/><path d="M1200.0,432.0 C1209.2,431.8 1234.2,428.3 1255.0,431.0 C1275.8,433.7 1284.8,445.3 1325.0,448.0 C1365.2,450.7 1441.3,448.7 1496.0,447.0 C1550.7,445.3 1606.0,432.8 1653.0,438.0 C1700.0,443.2 1750.5,475.8 1778.0,478.0 C1805.5,480.2 1788.7,456.3 1818.0,451.0 C1847.3,445.7 1928.7,444.7 1954.0,446.0 C1979.3,447.3 1963.0,450.8 1970.0,459.0 C1977.0,467.2 1990.3,480.2 1996.0,495.0 C2001.7,509.8 1991.0,523.8 2004.0,548.0 C2017.0,572.2 2049.5,612.5 2074.0,640.0 C2098.5,667.5 2138.2,700.8 2151.0,713.0" fill="none" stroke="#fde6a2" stroke-width="3.8" stroke-linecap="round" stroke-linejoin="round"/><path d="M1232.0,207.0 C1232.0,244.2 1223.0,379.8 1232.0,430.0 C1241.0,480.2 1274.8,473.0 1286.0,508.0 C1297.2,543.0 1294.7,605.0 1299.0,640.0 C1303.3,675.0 1308.5,691.8 1312.0,718.0 C1315.5,744.2 1311.3,770.8 1320.0,797.0 C1328.7,823.2 1350.2,848.8 1364.0,875.0 C1377.8,901.2 1395.5,934.3 1403.0,954.0 C1410.5,973.7 1408.0,986.5 1409.0,993.0" fill="none" stroke="#fde6a2" stroke-width="3.8" stroke-linecap="round" stroke-linejoin="round"/><path d="M1312.0,653.0 C1318.5,659.5 1333.7,677.7 1351.0,692.0 C1368.3,706.3 1394.2,727.7 1416.0,739.0 C1437.8,750.3 1469.3,754.7 1482.0,760.0 C1494.7,765.3 1481.2,765.3 1492.0,771.0 C1502.8,776.7 1531.3,787.5 1547.0,794.0 C1562.7,800.5 1568.5,807.5 1586.0,810.0 C1603.5,812.5 1641.0,809.2 1652.0,809.0" fill="none" stroke="#fde6a2" stroke-width="3.8" stroke-linecap="round" stroke-linejoin="round"/><path d="M1655.0,810.0 C1661.5,810.8 1685.3,815.2 1694.0,815.0 C1702.7,814.8 1693.8,810.7 1707.0,809.0 C1720.2,807.3 1755.5,808.8 1773.0,805.0 C1790.5,801.2 1799.0,790.7 1812.0,786.0 C1825.0,781.3 1821.3,778.7 1851.0,777.0 C1880.7,775.3 1963.8,779.2 1990.0,776.0 C2016.2,772.8 1995.3,765.8 2008.0,758.0 C2020.7,750.2 2055.2,736.0 2066.0,729.0 C2076.8,722.0 2058.8,718.2 2073.0,716.0 C2087.2,713.8 2138.0,716.0 2151.0,716.0" fill="none" stroke="#fde6a2" stroke-width="3.8" stroke-linecap="round" stroke-linejoin="round"/><path d="M1497.0,819.0 C1511.8,819.0 1560.2,820.2 1586.0,819.0 C1611.8,817.8 1641.0,813.2 1652.0,812.0" fill="none" stroke="#fde6a2" stroke-width="3.8" stroke-linecap="round" stroke-linejoin="round"/><path d="M1472.0,443.0 C1472.0,475.8 1470.8,587.5 1472.0,640.0 C1473.2,692.5 1477.8,738.3 1479.0,758.0" fill="none" stroke="#fde6a2" stroke-width="3.8" stroke-linecap="round" stroke-linejoin="round"/><path d="M995.0,677.0 C981.8,683.5 937.8,702.2 916.0,716.0 C894.2,729.8 876.2,744.3 864.0,760.0 C851.8,775.7 848.7,790.8 843.0,810.0 C837.3,829.2 837.3,859.8 830.0,875.0 C822.7,890.2 815.2,892.2 799.0,901.0 C782.8,909.8 748.3,917.0 733.0,928.0 C717.7,939.0 720.0,950.5 707.0,967.0 C694.0,983.5 669.5,1009.5 655.0,1027.0 C640.5,1044.5 625.8,1064.5 620.0,1072.0" fill="none" stroke="#fde6a2" stroke-width="3.8" stroke-linecap="round" stroke-linejoin="round"/><path d="M560.0,207.0 L655.0,272.0" fill="none" stroke="#fde6a2" stroke-width="3.8" stroke-linecap="round" stroke-linejoin="round"/><path d="M1151.0,381.0 C1159.2,380.8 1186.5,376.8 1200.0,380.0 C1213.5,383.2 1226.7,396.7 1232.0,400.0" fill="none" stroke="#fde6a2" stroke-width="3.8" stroke-linecap="round" stroke-linejoin="round"/><path d="M1954.0,446.0 L1970.0,430.0" fill="none" stroke="#fde6a2" stroke-width="3.8" stroke-linecap="round" stroke-linejoin="round"/><text x="364.4" y="277.8" font-size="13.5" fill="#3d7bc5" font-weight="400" text-anchor="middle" stroke="#fff" stroke-width="2.5" paint-order="stroke" stroke-opacity="0.85" style="">Costco Wholesale</text><text x="545.1" y="248.0" font-size="13.5" fill="#607d8b" font-weight="400" text-anchor="middle" stroke="#fff" stroke-width="2.5" paint-order="stroke" stroke-opacity="0.85" style="">Intel Ronler</text><text x="545.1" y="262.1" font-size="13.5" fill="#607d8b" font-weight="400" text-anchor="middle" stroke="#fff" stroke-width="2.5" paint-order="stroke" stroke-opacity="0.85" style="">Acres Campus</text><text x="602.6" y="275.2" font-size="9" fill="#7b8ca3" font-weight="700" text-anchor="middle" stroke="#fff" stroke-width="2.5" paint-order="stroke" stroke-opacity="0.85" style="letter-spacing:1.2px">TANASBOURNE</text><text x="486.4" y="301.9" font-size="9" fill="#7b8ca3" font-weight="700" text-anchor="middle" stroke="#fff" stroke-width="2.5" paint-order="stroke" stroke-opacity="0.85" style="letter-spacing:1.2px">ORENCO STATION</text><text x="431.4" y="327.7" font-size="14" fill="#3c4043" font-weight="400" text-anchor="middle" stroke="#fff" stroke-width="2.5" paint-order="stroke" stroke-opacity="0.85" style="">Hillsboro</text><text x="170.7" y="333.8" font-size="13.5" fill="#3d7bc5" font-weight="400" text-anchor="middle" stroke="#fff" stroke-width="2.5" paint-order="stroke" stroke-opacity="0.85" style="">enter</text><text x="727.3" y="288.8" font-size="9" fill="#7b8ca3" font-weight="700" text-anchor="middle" stroke="#fff" stroke-width="2.5" paint-order="stroke" stroke-opacity="0.85" style="letter-spacing:1.2px">OAK HILLS</text><text x="849.2" y="329.6" font-size="9" fill="#7b8ca3" font-weight="700" text-anchor="middle" stroke="#fff" stroke-width="2.5" paint-order="stroke" stroke-opacity="0.85" style="letter-spacing:1.2px">CEDAR MILL</text><text x="1009.5" y="320.8" font-size="13.5" fill="#138f96" font-weight="400" text-anchor="middle" stroke="#fff" stroke-width="2.5" paint-order="stroke" stroke-opacity="0.85" style="">Pittock Mansion</text><text x="924.6" y="362.3" font-size="12.5" fill="#5f6368" font-weight="400" text-anchor="middle" stroke="#fff" stroke-width="2.5" paint-order="stroke" stroke-opacity="0.85" style="">West</text><text x="924.6" y="375.4" font-size="12.5" fill="#5f6368" font-weight="400" text-anchor="middle" stroke="#fff" stroke-width="2.5" paint-order="stroke" stroke-opacity="0.85" style="">Haven-Sylvan</text><text x="1023.1" y="384.1" font-size="13.5" fill="#1e8e3e" font-weight="400" text-anchor="middle" stroke="#fff" stroke-width="2.5" paint-order="stroke" stroke-opacity="0.85" style="">Oregon Zoo</text><text x="280.7" y="401.7" font-size="13" fill="#2d8a4e" font-weight="400" text-anchor="middle" stroke="#fff" stroke-width="2.5" paint-order="stroke" stroke-opacity="0.85" style="font-style:italic">Jackson</text><text x="280.7" y="415.9" font-size="13" fill="#2d8a4e" font-weight="400" text-anchor="middle" stroke="#fff" stroke-width="2.5" paint-order="stroke" stroke-opacity="0.85" style="font-style:italic">Bottom</text><text x="280.7" y="430.0" font-size="13" fill="#2d8a4e" font-weight="400" text-anchor="middle" stroke="#fff" stroke-width="2.5" paint-order="stroke" stroke-opacity="0.85" style="font-style:italic">Wetlands</text><text x="386.9" y="484.5" font-size="13" fill="#2d8a4e" font-weight="400" text-anchor="middle" stroke="#fff" stroke-width="2.5" paint-order="stroke" stroke-opacity="0.85" style="">Rood</text><text x="386.9" y="498.6" font-size="13" fill="#2d8a4e" font-weight="400" text-anchor="middle" stroke="#fff" stroke-width="2.5" paint-order="stroke" stroke-opacity="0.85" style="">Bridge Park</text><text x="809.5" y="404.2" font-size="12.5" fill="#5f6368" font-weight="400" text-anchor="middle" stroke="#fff" stroke-width="2.5" paint-order="stroke" stroke-opacity="0.85" style="">Cedar Hills</text><text x="899.5" y="443.4" font-size="12.5" fill="#5f6368" font-weight="400" text-anchor="middle" stroke="#fff" stroke-width="2.5" paint-order="stroke" stroke-opacity="0.85" style="">West Slope</text><text x="632.5" y="464.4" font-size="12.5" fill="#5f6368" font-weight="400" text-anchor="middle" stroke="#fff" stroke-width="2.5" paint-order="stroke" stroke-opacity="0.85" style="">Aloha</text><text x="823.6" y="488.0" font-size="14" fill="#3c4043" font-weight="400" text-anchor="middle" stroke="#fff" stroke-width="2.5" paint-order="stroke" stroke-opacity="0.85" style="">Beaverton</text><text x="938.8" y="521.4" font-size="12.5" fill="#5f6368" font-weight="400" text-anchor="middle" stroke="#fff" stroke-width="2.5" paint-order="stroke" stroke-opacity="0.85" style="">Raleigh Hills</text><text x="1084.8" y="496.6" font-size="9" fill="#7b8ca3" font-weight="700" text-anchor="middle" stroke="#fff" stroke-width="2.5" paint-order="stroke" stroke-opacity="0.85" style="letter-spacing:1.2px">SOUTHWEST</text><text x="1084.8" y="506.6" font-size="9" fill="#7b8ca3" font-weight="700" text-anchor="middle" stroke="#fff" stroke-width="2.5" paint-order="stroke" stroke-opacity="0.85" style="letter-spacing:1.2px">PORTLAND</text><text x="556.6" y="580.1" font-size="12.5" fill="#5f6368" font-weight="400" text-anchor="middle" stroke="#fff" stroke-width="2.5" paint-order="stroke" stroke-opacity="0.85" style="">Hazeldale</text><text x="1081.7" y="575.7" font-size="9" fill="#7b8ca3" font-weight="700" text-anchor="middle" stroke="#fff" stroke-width="2.5" paint-order="stroke" stroke-opacity="0.85" style="letter-spacing:1.2px">MULTNOMAH</text><text x="946.6" y="593.2" font-size="12.5" fill="#5f6368" font-weight="400" text-anchor="middle" stroke="#fff" stroke-width="2.5" paint-order="stroke" stroke-opacity="0.85" style="">Garden</text><text x="946.6" y="606.3" font-size="12.5" fill="#5f6368" font-weight="400" text-anchor="middle" stroke="#fff" stroke-width="2.5" paint-order="stroke" stroke-opacity="0.85" style="">Home-Whitford</text><text x="621.0" y="625.8" font-size="13" fill="#2d8a4e" font-weight="400" text-anchor="middle" stroke="#fff" stroke-width="2.5" paint-order="stroke" stroke-opacity="0.85" style="">Cooper</text><text x="621.0" y="640.0" font-size="13" fill="#2d8a4e" font-weight="400" text-anchor="middle" stroke="#fff" stroke-width="2.5" paint-order="stroke" stroke-opacity="0.85" style="">Mountain</text><text x="621.0" y="654.1" font-size="13" fill="#2d8a4e" font-weight="400" text-anchor="middle" stroke="#fff" stroke-width="2.5" paint-order="stroke" stroke-opacity="0.85" style="">Nature Park</text><text x="400.0" y="652.3" font-size="12.5" fill="#5f6368" font-weight="400" text-anchor="middle" stroke="#fff" stroke-width="2.5" paint-order="stroke" stroke-opacity="0.85" style="">Farmington</text><text x="947.7" y="663.3" font-size="12.5" fill="#5f6368" font-weight="400" text-anchor="middle" stroke="#fff" stroke-width="2.5" paint-order="stroke" stroke-opacity="0.85" style="">Metzger</text><text x="604.2" y="759.1" font-size="12.5" fill="#5f6368" font-weight="400" text-anchor="middle" stroke="#fff" stroke-width="2.5" paint-order="stroke" stroke-opacity="0.85" style="">Kinton</text><text x="865.5" y="778.5" font-size="14" fill="#3c4043" font-weight="400" text-anchor="middle" stroke="#fff" stroke-width="2.5" paint-order="stroke" stroke-opacity="0.85" style="">Tigard</text><text x="767.6" y="789.8" font-size="9" fill="#7b8ca3" font-weight="700" text-anchor="middle" stroke="#fff" stroke-width="2.5" paint-order="stroke" stroke-opacity="0.85" style="letter-spacing:1.2px">BULL MOUNTAIN</text><text x="1071.8" y="790.0" font-size="12.5" fill="#5f6368" font-weight="400" text-anchor="middle" stroke="#fff" stroke-width="2.5" paint-order="stroke" stroke-opacity="0.85" style="">Lake Oswego</text><text x="269.7" y="779.0" font-size="12.5" fill="#5f6368" font-weight="400" text-anchor="middle" stroke="#fff" stroke-width="2.5" paint-order="stroke" stroke-opacity="0.85" style="">Laurel</text><text x="472.3" y="822.0" font-size="12.5" fill="#5f6368" font-weight="400" text-anchor="middle" stroke="#fff" stroke-width="2.5" paint-order="stroke" stroke-opacity="0.85" style="">Scholls</text><text x="908.9" y="828.4" font-size="13" fill="#1e8e3e" font-weight="400" text-anchor="middle" stroke="#fff" stroke-width="2.5" paint-order="stroke" stroke-opacity="0.85" style="">Cook Park</text><text x="814.2" y="845.0" font-size="12.5" fill="#5f6368" font-weight="400" text-anchor="middle" stroke="#fff" stroke-width="2.5" paint-order="stroke" stroke-opacity="0.85" style="">King City</text><text x="957.6" y="882.7" font-size="12.5" fill="#5f6368" font-weight="400" text-anchor="middle" stroke="#fff" stroke-width="2.5" paint-order="stroke" stroke-opacity="0.85" style="">Durham</text><text x="1029.3" y="913.1" font-size="12.5" fill="#5f6368" font-weight="400" text-anchor="middle" stroke="#fff" stroke-width="2.5" paint-order="stroke" stroke-opacity="0.85" style="">Rivergrove</text><text x="368.1" y="924.2" font-size="13" fill="#d67b46" font-weight="400" text-anchor="middle" stroke="#fff" stroke-width="2.5" paint-order="stroke" stroke-opacity="0.85" style="">Ponzi Vineyards</text><text x="734.6" y="909.6" font-size="13" fill="#2d8a4e" font-weight="400" text-anchor="middle" stroke="#fff" stroke-width="2.5" paint-order="stroke" stroke-opacity="0.85" style="font-style:italic">Tualatin River</text><text x="734.6" y="923.7" font-size="13" fill="#2d8a4e" font-weight="400" text-anchor="middle" stroke="#fff" stroke-width="2.5" paint-order="stroke" stroke-opacity="0.85" style="font-style:italic">National</text><text x="734.6" y="937.3" font-size="13" fill="#2d8a4e" font-weight="400" text-anchor="middle" stroke="#fff" stroke-width="2.5" paint-order="stroke" stroke-opacity="0.85" style="font-style:italic">Wildlife</text><text x="734.6" y="951.5" font-size="13" fill="#2d8a4e" font-weight="400" text-anchor="middle" stroke="#fff" stroke-width="2.5" paint-order="stroke" stroke-opacity="0.85" style="font-style:italic">Refuge...</text><text x="880.1" y="947.1" font-size="12.5" fill="#5f6368" font-weight="400" text-anchor="middle" stroke="#fff" stroke-width="2.5" paint-order="stroke" stroke-opacity="0.85" style="">Tualatin</text><text x="1128.8" y="942.9" font-size="12.5" fill="#5f6368" font-weight="400" text-anchor="middle" stroke="#fff" stroke-width="2.5" paint-order="stroke" stroke-opacity="0.85" style="">Shadowood</text><text x="246.6" y="953.4" font-size="12.5" fill="#5f6368" font-weight="400" text-anchor="middle" stroke="#fff" stroke-width="2.5" paint-order="stroke" stroke-opacity="0.85" style="">Buckheaven</text><text x="710.5" y="1037.2" font-size="12.5" fill="#5f6368" font-weight="400" text-anchor="middle" stroke="#fff" stroke-width="2.5" paint-order="stroke" stroke-opacity="0.85" style="">Sherwood</text><text x="961.3" y="1024.6" font-size="12.5" fill="#5f6368" font-weight="400" text-anchor="middle" stroke="#fff" stroke-width="2.5" paint-order="stroke" stroke-opacity="0.85" style="">Norwood</text><text x="1053.4" y="1032.4" font-size="12.5" fill="#5f6368" font-weight="400" text-anchor="middle" stroke="#fff" stroke-width="2.5" paint-order="stroke" stroke-opacity="0.85" style="">Stafford</text><text x="1113.1" y="539.6" font-size="13.5" fill="#138f96" font-weight="400" text-anchor="middle" stroke="#fff" stroke-width="2.5" paint-order="stroke" stroke-opacity="0.85" style="">Oaks Amusement Park</text><text x="1525.3" y="215.7" font-size="12.5" fill="#5f6368" font-weight="400" text-anchor="middle" stroke="#fff" stroke-width="2.5" paint-order="stroke" stroke-opacity="0.85" style="">Maywood</text><text x="1525.3" y="228.3" font-size="12.5" fill="#5f6368" font-weight="400" text-anchor="middle" stroke="#fff" stroke-width="2.5" paint-order="stroke" stroke-opacity="0.85" style="">Park</text><text x="1639.0" y="212.9" font-size="9" fill="#7b8ca3" font-weight="700" text-anchor="middle" stroke="#fff" stroke-width="2.5" paint-order="stroke" stroke-opacity="0.85" style="letter-spacing:1.2px">ARGAY</text><text x="1856.8" y="225.6" font-size="12.5" fill="#5f6368" font-weight="400" text-anchor="middle" stroke="#fff" stroke-width="2.5" paint-order="stroke" stroke-opacity="0.85" style="">Interlachen</text><text x="2068.3" y="241.5" font-size="13" fill="#2d8a4e" font-weight="400" text-anchor="middle" stroke="#fff" stroke-width="2.5" paint-order="stroke" stroke-opacity="0.85" style="">Sandy</text><text x="2068.3" y="255.7" font-size="13" fill="#2d8a4e" font-weight="400" text-anchor="middle" stroke="#fff" stroke-width="2.5" paint-order="stroke" stroke-opacity="0.85" style="">River Delta</text><text x="1200.7" y="227.5" font-size="9" fill="#7b8ca3" font-weight="700" text-anchor="middle" stroke="#fff" stroke-width="2.5" paint-order="stroke" stroke-opacity="0.85" style="letter-spacing:1.2px">BOISE</text><text x="1397.1" y="263.6" font-size="9" fill="#7b8ca3" font-weight="700" text-anchor="middle" stroke="#fff" stroke-width="2.5" paint-order="stroke" stroke-opacity="0.85" style="letter-spacing:1.2px">ROSE CITY PARK</text><text x="1267.2" y="276.7" font-size="9" fill="#7b8ca3" font-weight="700" text-anchor="middle" stroke="#fff" stroke-width="2.5" paint-order="stroke" stroke-opacity="0.85" style="letter-spacing:1.2px">IRVINGTON</text><text x="1471.4" y="284.6" font-size="9" fill="#7b8ca3" font-weight="700" text-anchor="middle" stroke="#fff" stroke-width="2.5" paint-order="stroke" stroke-opacity="0.85" style="letter-spacing:1.2px">MADISON SOUTH</text><text x="1895.5" y="264.4" font-size="12.5" fill="#5f6368" font-weight="400" text-anchor="middle" stroke="#fff" stroke-width="2.5" paint-order="stroke" stroke-opacity="0.85" style="">Fairview</text><text x="2021.2" y="271.2" font-size="12.5" fill="#5f6368" font-weight="400" text-anchor="middle" stroke="#fff" stroke-width="2.5" paint-order="stroke" stroke-opacity="0.85" style="">Troutdale</text><text x="1939.0" y="285.8" font-size="12.5" fill="#5f6368" font-weight="400" text-anchor="middle" stroke="#fff" stroke-width="2.5" paint-order="stroke" stroke-opacity="0.85" style="">Wood Village</text><text x="1331.6" y="299.6" font-size="13" fill="#1e8e3e" font-weight="400" text-anchor="middle" stroke="#fff" stroke-width="2.5" paint-order="stroke" stroke-opacity="0.85" style="">Laurelhurst</text><text x="1331.6" y="313.8" font-size="13" fill="#1e8e3e" font-weight="400" text-anchor="middle" stroke="#fff" stroke-width="2.5" paint-order="stroke" stroke-opacity="0.85" style="">Park</text><text x="1171.9" y="313.9" font-size="9" fill="#7b8ca3" font-weight="700" text-anchor="middle" stroke="#fff" stroke-width="2.5" paint-order="stroke" stroke-opacity="0.85" style="letter-spacing:1.2px">PEARL DISTRICT</text><text x="1177.2" y="378.3" font-size="9" fill="#7b8ca3" font-weight="700" text-anchor="middle" stroke="#fff" stroke-width="2.5" paint-order="stroke" stroke-opacity="0.85" style="letter-spacing:1.2px">DOWNTOWN</text><text x="1177.2" y="387.7" font-size="9" fill="#7b8ca3" font-weight="700" text-anchor="middle" stroke="#fff" stroke-width="2.5" paint-order="stroke" stroke-opacity="0.85" style="letter-spacing:1.2px">PORTLAND</text><text x="1343.7" y="370.4" font-size="9" fill="#7b8ca3" font-weight="700" text-anchor="middle" stroke="#fff" stroke-width="2.5" paint-order="stroke" stroke-opacity="0.85" style="letter-spacing:1.2px">SUNNYSIDE</text><text x="1471.4" y="360.0" font-size="9" fill="#7b8ca3" font-weight="700" text-anchor="middle" stroke="#fff" stroke-width="2.5" paint-order="stroke" stroke-opacity="0.85" style="letter-spacing:1.2px">MONTAVILLA</text><text x="1768.8" y="360.0" font-size="9" fill="#7b8ca3" font-weight="700" text-anchor="middle" stroke="#fff" stroke-width="2.5" paint-order="stroke" stroke-opacity="0.85" style="letter-spacing:1.2px">ROCKWOOD</text><text x="1891.8" y="401.0" font-size="14" fill="#3c4043" font-weight="400" text-anchor="middle" stroke="#fff" stroke-width="2.5" paint-order="stroke" stroke-opacity="0.85" style="">Gresham</text><text x="1191.8" y="421.7" font-size="19" fill="#3c4043" font-weight="700" text-anchor="middle" stroke="#fff" stroke-width="2.5" paint-order="stroke" stroke-opacity="0.85" style="letter-spacing:0.3px">Portland</text><text x="1343.7" y="419.7" font-size="9" fill="#7b8ca3" font-weight="700" text-anchor="middle" stroke="#fff" stroke-width="2.5" paint-order="stroke" stroke-opacity="0.85" style="letter-spacing:1.2px">RICHMOND</text><text x="1710.7" y="419.7" font-size="9" fill="#7b8ca3" font-weight="700" text-anchor="middle" stroke="#fff" stroke-width="2.5" paint-order="stroke" stroke-opacity="0.85" style="letter-spacing:1.2px">CENTENNIAL</text><text x="1591.8" y="463.1" font-size="9" fill="#7b8ca3" font-weight="700" text-anchor="middle" stroke="#fff" stroke-width="2.5" paint-order="stroke" stroke-opacity="0.85" style="letter-spacing:1.2px">POWELLHURST-GILBERT</text><text x="1711.2" y="472.4" font-size="13" fill="#2d8a4e" font-weight="400" text-anchor="middle" stroke="#fff" stroke-width="2.5" paint-order="stroke" stroke-opacity="0.85" style="">Powell Butte</text><text x="1711.2" y="486.5" font-size="13" fill="#2d8a4e" font-weight="400" text-anchor="middle" stroke="#fff" stroke-width="2.5" paint-order="stroke" stroke-opacity="0.85" style="">Nature Park</text><text x="1431.1" y="469.9" font-size="9" fill="#7b8ca3" font-weight="700" text-anchor="middle" stroke="#fff" stroke-width="2.5" paint-order="stroke" stroke-opacity="0.85" style="letter-spacing:1.2px">SOUTHEAST</text><text x="1431.1" y="479.9" font-size="9" fill="#7b8ca3" font-weight="700" text-anchor="middle" stroke="#fff" stroke-width="2.5" paint-order="stroke" stroke-opacity="0.85" style="letter-spacing:1.2px">PORTLAND</text><text x="1195.5" y="485.6" font-size="9" fill="#7b8ca3" font-weight="700" text-anchor="middle" stroke="#fff" stroke-width="2.5" paint-order="stroke" stroke-opacity="0.85" style="letter-spacing:1.2px">SOUTH PORTLAND</text><text x="1373.0" y="512.9" font-size="9" fill="#7b8ca3" font-weight="700" text-anchor="middle" stroke="#fff" stroke-width="2.5" paint-order="stroke" stroke-opacity="0.85" style="letter-spacing:1.2px">WOODSTOCK</text><text x="1520.6" y="530.7" font-size="9" fill="#7b8ca3" font-weight="700" text-anchor="middle" stroke="#fff" stroke-width="2.5" paint-order="stroke" stroke-opacity="0.85" style="letter-spacing:1.2px">LENTS</text><text x="2131.1" y="576.4" font-size="12.5" fill="#5f6368" font-weight="400" text-anchor="middle" stroke="#fff" stroke-width="2.5" paint-order="stroke" stroke-opacity="0.85" style="">Orient</text><text x="1272.5" y="582.5" font-size="9" fill="#7b8ca3" font-weight="700" text-anchor="middle" stroke="#fff" stroke-width="2.5" paint-order="stroke" stroke-opacity="0.85" style="letter-spacing:1.2px">SELLWOOD -</text><text x="1272.5" y="591.9" font-size="9" fill="#7b8ca3" font-weight="700" text-anchor="middle" stroke="#fff" stroke-width="2.5" paint-order="stroke" stroke-opacity="0.85" style="letter-spacing:1.2px">MORELAND</text><text x="1187.6" y="635.4" font-size="9" fill="#7b8ca3" font-weight="700" text-anchor="middle" stroke="#fff" stroke-width="2.5" paint-order="stroke" stroke-opacity="0.85" style="letter-spacing:1.2px">COLLINS VIEW</text><text x="1315.9" y="662.8" font-size="12.5" fill="#5f6368" font-weight="400" text-anchor="middle" stroke="#fff" stroke-width="2.5" paint-order="stroke" stroke-opacity="0.85" style="">Milwaukie</text><text x="1474.0" y="654.4" font-size="12.5" fill="#5f6368" font-weight="400" text-anchor="middle" stroke="#fff" stroke-width="2.5" paint-order="stroke" stroke-opacity="0.85" style="">Harmony</text><text x="1474.0" y="667.5" font-size="12.5" fill="#5f6368" font-weight="400" text-anchor="middle" stroke="#fff" stroke-width="2.5" paint-order="stroke" stroke-opacity="0.85" style="">Point</text><text x="1611.7" y="661.2" font-size="12.5" fill="#5f6368" font-weight="400" text-anchor="middle" stroke="#fff" stroke-width="2.5" paint-order="stroke" stroke-opacity="0.85" style="">Happy Valley</text><text x="1182.4" y="675.0" font-size="13" fill="#2d8a4e" font-weight="400" text-anchor="middle" stroke="#fff" stroke-width="2.5" paint-order="stroke" stroke-opacity="0.85" style="">Tryon</text><text x="1182.4" y="688.6" font-size="13" fill="#2d8a4e" font-weight="400" text-anchor="middle" stroke="#fff" stroke-width="2.5" paint-order="stroke" stroke-opacity="0.85" style="">Creek State</text><text x="1182.4" y="702.8" font-size="13" fill="#2d8a4e" font-weight="400" text-anchor="middle" stroke="#fff" stroke-width="2.5" paint-order="stroke" stroke-opacity="0.85" style="">Natural Area</text><text x="1474.0" y="707.3" font-size="12.5" fill="#5f6368" font-weight="400" text-anchor="middle" stroke="#fff" stroke-width="2.5" paint-order="stroke" stroke-opacity="0.85" style="">Harmony</text><text x="1550.5" y="716.2" font-size="12.5" fill="#5f6368" font-weight="400" text-anchor="middle" stroke="#fff" stroke-width="2.5" paint-order="stroke" stroke-opacity="0.85" style="">Sunnyside</text><text x="2070.4" y="726.2" font-size="12.5" fill="#5f6368" font-weight="400" text-anchor="middle" stroke="#fff" stroke-width="2.5" paint-order="stroke" stroke-opacity="0.85" style="">Boring</text><text x="1821.2" y="783.2" font-size="12.5" fill="#5f6368" font-weight="400" text-anchor="middle" stroke="#fff" stroke-width="2.5" paint-order="stroke" stroke-opacity="0.85" style="">Damascus</text><text x="1293.4" y="785.8" font-size="12.5" fill="#5f6368" font-weight="400" text-anchor="middle" stroke="#fff" stroke-width="2.5" paint-order="stroke" stroke-opacity="0.85" style="">Oak Grove</text><text x="1433.7" y="802.1" font-size="12.5" fill="#5f6368" font-weight="400" text-anchor="middle" stroke="#fff" stroke-width="2.5" paint-order="stroke" stroke-opacity="0.85" style="">Oatfield</text><text x="1497.1" y="824.1" font-size="12.5" fill="#5f6368" font-weight="400" text-anchor="middle" stroke="#fff" stroke-width="2.5" paint-order="stroke" stroke-opacity="0.85" style="">Clackamas</text><text x="1373.5" y="886.4" font-size="12.5" fill="#5f6368" font-weight="400" text-anchor="middle" stroke="#fff" stroke-width="2.5" paint-order="stroke" stroke-opacity="0.85" style="">Jennings</text><text x="1373.5" y="899.5" font-size="12.5" fill="#5f6368" font-weight="400" text-anchor="middle" stroke="#fff" stroke-width="2.5" paint-order="stroke" stroke-opacity="0.85" style="">Lodge</text><text x="1451.0" y="906.3" font-size="12.5" fill="#5f6368" font-weight="400" text-anchor="middle" stroke="#fff" stroke-width="2.5" paint-order="stroke" stroke-opacity="0.85" style="">Gladstone</text><text x="1975.6" y="901.0" font-size="12.5" fill="#5f6368" font-weight="400" text-anchor="middle" stroke="#fff" stroke-width="2.5" paint-order="stroke" stroke-opacity="0.85" style="">Barton</text><text x="1293.4" y="914.1" font-size="12.5" fill="#5f6368" font-weight="400" text-anchor="middle" stroke="#fff" stroke-width="2.5" paint-order="stroke" stroke-opacity="0.85" style="">West Linn</text><text x="2088.2" y="1031.9" font-size="12.5" fill="#5f6368" font-weight="400" text-anchor="middle" stroke="#fff" stroke-width="2.5" paint-order="stroke" stroke-opacity="0.85" style="">Eagle Creek</text><text x="1371" y="953" font-size="11" fill="#3b7fc4" font-style="italic" text-anchor="middle" transform="rotate(38 1371 953)" stroke="#fff" stroke-width="2" paint-order="stroke" stroke-opacity=".7">Willamette River</text><text x="2032" y="1030" font-size="11" fill="#3b7fc4" font-style="italic" text-anchor="middle" transform="rotate(68 2032 1030)" stroke="#fff" stroke-width="2" paint-order="stroke" stroke-opacity=".7">Clackamas River</text><rect x="168.8" y="344.5" width="14.2" height="16" rx="8" fill="#fff" stroke="#3c3c3c" stroke-width="1.2"/><text x="175.9" y="356.3" font-size="10.5" fill="#333" text-anchor="middle">8</text><rect x="376.7" y="414.7" width="14.2" height="16" rx="8" fill="#fff" stroke="#3c3c3c" stroke-width="1.2"/><text x="383.8" y="426.5" font-size="10.5" fill="#333" text-anchor="middle">8</text><rect x="492.4" y="434.6" width="14.2" height="16" rx="8" fill="#fff" stroke="#3c3c3c" stroke-width="1.2"/><text x="499.5" y="446.4" font-size="10.5" fill="#333" text-anchor="middle">8</text><rect x="659.9" y="458.2" width="14.2" height="16" rx="8" fill="#fff" stroke="#3c3c3c" stroke-width="1.2"/><text x="667.0" y="470.0" font-size="10.5" fill="#333" text-anchor="middle">8</text><rect x="886.1" y="454.0" width="14.2" height="16" rx="8" fill="#fff" stroke="#3c3c3c" stroke-width="1.2"/><text x="893.2" y="465.8" font-size="10.5" fill="#333" text-anchor="middle">8</text><rect x="252.7" y="517.8" width="26.6" height="16" rx="8" fill="#fff" stroke="#3c3c3c" stroke-width="1.2"/><text x="266.0" y="529.6" font-size="10.5" fill="#333" text-anchor="middle">219</text><rect x="330.2" y="705.8" width="26.6" height="16" rx="8" fill="#fff" stroke="#3c3c3c" stroke-width="1.2"/><text x="343.5" y="717.6" font-size="10.5" fill="#333" text-anchor="middle">219</text><rect x="384.6" y="804.8" width="26.6" height="16" rx="8" fill="#fff" stroke="#3c3c3c" stroke-width="1.2"/><text x="397.9" y="816.6" font-size="10.5" fill="#333" text-anchor="middle">219</text><rect x="362.1" y="949.8" width="26.6" height="16" rx="8" fill="#fff" stroke="#3c3c3c" stroke-width="1.2"/><text x="375.4" y="961.6" font-size="10.5" fill="#333" text-anchor="middle">219</text><rect x="301.9" y="646.6" width="20.4" height="16" rx="8" fill="#fff" stroke="#3c3c3c" stroke-width="1.2"/><text x="312.1" y="658.4" font-size="10.5" fill="#333" text-anchor="middle">10</text><rect x="971.5" y="484.3" width="20.4" height="16" rx="8" fill="#fff" stroke="#3c3c3c" stroke-width="1.2"/><text x="981.7" y="496.1" font-size="10.5" fill="#333" text-anchor="middle">10</text><rect x="1136.9" y="511.6" width="20.4" height="16" rx="8" fill="#fff" stroke="#3c3c3c" stroke-width="1.2"/><text x="1147.1" y="523.4" font-size="10.5" fill="#333" text-anchor="middle">10</text><rect x="755.8" y="676.5" width="26.6" height="16" rx="8" fill="#fff" stroke="#3c3c3c" stroke-width="1.2"/><text x="769.1" y="688.3" font-size="10.5" fill="#333" text-anchor="middle">210</text><rect x="504.5" y="759.7" width="26.6" height="16" rx="8" fill="#fff" stroke="#3c3c3c" stroke-width="1.2"/><text x="517.8" y="771.5" font-size="10.5" fill="#333" text-anchor="middle">210</text><rect x="845.9" y="527.8" width="26.6" height="16" rx="8" fill="#fff" stroke="#3c3c3c" stroke-width="1.2"/><text x="859.2" y="539.6" font-size="10.5" fill="#333" text-anchor="middle">217</text><rect x="920.8" y="692.7" width="26.6" height="16" rx="8" fill="#fff" stroke="#3c3c3c" stroke-width="1.2"/><text x="934.1" y="704.5" font-size="10.5" fill="#333" text-anchor="middle">217</text><rect x="912.9" y="730.4" width="26.6" height="16" rx="8" fill="#fff" stroke="#3c3c3c" stroke-width="1.2"/><text x="926.2" y="742.2" font-size="10.5" fill="#333" text-anchor="middle">141</text><rect x="888.8" y="1005.3" width="26.6" height="16" rx="8" fill="#fff" stroke="#3c3c3c" stroke-width="1.2"/><text x="902.1" y="1017.1" font-size="10.5" fill="#333" text-anchor="middle">141</text><rect x="955.8" y="678.6" width="26.6" height="16" rx="8" fill="#fff" stroke="#3c3c3c" stroke-width="1.2"/><text x="969.1" y="690.4" font-size="10.5" fill="#333" text-anchor="middle">99W</text><rect x="826.5" y="815.2" width="26.6" height="16" rx="8" fill="#fff" stroke="#3c3c3c" stroke-width="1.2"/><text x="839.8" y="827.0" font-size="10.5" fill="#333" text-anchor="middle">99W</text><path d="M998.2,391.7 h20.4 v9 q0,6 -10.2,9 q-10.2,-3 -10.2,-9 z" fill="#fff" stroke="#3c3c3c" stroke-width="1.2"/><text x="1008.4" y="403.5" font-size="10.5" fill="#333" text-anchor="middle">26</text><path d="M1062.1,227.8 h20.4 v9 q0,6 -10.2,9 q-10.2,-3 -10.2,-9 z" fill="#fff" stroke="#3c3c3c" stroke-width="1.2"/><text x="1072.3" y="239.6" font-size="10.5" fill="#333" text-anchor="middle">30</text><path d="M988.0,677.5 h13.6 v7 q0,7 -6.8,9 q-6.8,-2 -6.8,-9 z" fill="#2c6fc0" stroke="#fff" stroke-width="1"/><rect x="988.0" y="676.5" width="13.6" height="3" fill="#d93b3b"/><text x="994.8" y="689.5" font-size="9.5" font-weight="700" fill="#fff" text-anchor="middle" letter-spacing="-0.3">5</text><path d="M941.9,979.1 h13.6 v7 q0,7 -6.8,9 q-6.8,-2 -6.8,-9 z" fill="#2c6fc0" stroke="#fff" stroke-width="1"/><rect x="941.9" y="978.1" width="13.6" height="3" fill="#d93b3b"/><text x="948.7" y="991.1" font-size="9.5" font-weight="700" fill="#fff" text-anchor="middle" letter-spacing="-0.3">5</text><path d="M999.6,956.0 h20.8 v7 q0,7 -10.4,9 q-10.4,-2 -10.4,-9 z" fill="#2c6fc0" stroke="#fff" stroke-width="1"/><rect x="999.6" y="955.0" width="20.8" height="3" fill="#d93b3b"/><text x="1010.0" y="968.0" font-size="9.5" font-weight="700" fill="#fff" text-anchor="middle" letter-spacing="-0.3">205</text><rect x="1217.8" y="205.3" width="26.6" height="16" rx="8" fill="#fff" stroke="#3c3c3c" stroke-width="1.2"/><text x="1231.1" y="217.1" font-size="10.5" fill="#333" text-anchor="middle">99E</text><rect x="1218.9" y="380.7" width="26.6" height="16" rx="8" fill="#fff" stroke="#3c3c3c" stroke-width="1.2"/><text x="1232.2" y="392.5" font-size="10.5" fill="#333" text-anchor="middle">99E</text><rect x="1458.6" y="255.0" width="26.6" height="16" rx="8" fill="#fff" stroke="#3c3c3c" stroke-width="1.2"/><text x="1471.9" y="266.8" font-size="10.5" fill="#333" text-anchor="middle">213</text><rect x="1458.6" y="522.6" width="26.6" height="16" rx="8" fill="#fff" stroke="#3c3c3c" stroke-width="1.2"/><text x="1471.9" y="534.4" font-size="10.5" fill="#333" text-anchor="middle">213</text><rect x="1458.1" y="674.4" width="26.6" height="16" rx="8" fill="#fff" stroke="#3c3c3c" stroke-width="1.2"/><text x="1471.4" y="686.2" font-size="10.5" fill="#333" text-anchor="middle">213</text><rect x="1439.8" y="979.1" width="26.6" height="16" rx="8" fill="#fff" stroke="#3c3c3c" stroke-width="1.2"/><text x="1453.1" y="990.9" font-size="10.5" fill="#333" text-anchor="middle">213</text><path d="M1207.6,282.2 h13.6 v7 q0,7 -6.8,9 q-6.8,-2 -6.8,-9 z" fill="#2c6fc0" stroke="#fff" stroke-width="1"/><rect x="1207.6" y="281.2" width="13.6" height="3" fill="#d93b3b"/><text x="1214.4" y="294.2" font-size="9.5" font-weight="700" fill="#fff" text-anchor="middle" letter-spacing="-0.3">5</text><path d="M1211.2,346.6 h13.6 v7 q0,7 -6.8,9 q-6.8,-2 -6.8,-9 z" fill="#2c6fc0" stroke="#fff" stroke-width="1"/><rect x="1211.2" y="345.6" width="13.6" height="3" fill="#d93b3b"/><text x="1218.0" y="358.6" font-size="9.5" font-weight="700" fill="#fff" text-anchor="middle" letter-spacing="-0.3">5</text><path d="M1189.7,456.5 h13.6 v7 q0,7 -6.8,9 q-6.8,-2 -6.8,-9 z" fill="#2c6fc0" stroke="#fff" stroke-width="1"/><rect x="1189.7" y="455.5" width="13.6" height="3" fill="#d93b3b"/><text x="1196.5" y="468.5" font-size="9.5" font-weight="700" fill="#fff" text-anchor="middle" letter-spacing="-0.3">5</text><path d="M1149.0,332.5 h20.8 v7 q0,7 -10.4,9 q-10.4,-2 -10.4,-9 z" fill="#2c6fc0" stroke="#fff" stroke-width="1"/><rect x="1149.0" y="331.5" width="20.8" height="3" fill="#d93b3b"/><text x="1159.4" y="344.5" font-size="9.5" font-weight="700" fill="#fff" text-anchor="middle" letter-spacing="-0.3">405</text><path d="M1506.3,292.7 h17.2 v7 q0,7 -8.6,9 q-8.6,-2 -8.6,-9 z" fill="#2c6fc0" stroke="#fff" stroke-width="1"/><rect x="1506.3" y="291.7" width="17.2" height="3" fill="#d93b3b"/><text x="1514.9" y="304.7" font-size="9.5" font-weight="700" fill="#fff" text-anchor="middle" letter-spacing="-0.3">84</text><path d="M1256.0,427.8 h20.4 v9 q0,6 -10.2,9 q-10.2,-3 -10.2,-9 z" fill="#fff" stroke="#3c3c3c" stroke-width="1.2"/><text x="1266.2" y="439.6" font-size="10.5" fill="#333" text-anchor="middle">26</text><path d="M1476.4,439.3 h20.4 v9 q0,6 -10.2,9 q-10.2,-3 -10.2,-9 z" fill="#fff" stroke="#3c3c3c" stroke-width="1.2"/><text x="1486.6" y="451.1" font-size="10.5" fill="#333" text-anchor="middle">26</text><path d="M1813.1,443.0 h20.4 v9 q0,6 -10.2,9 q-10.2,-3 -10.2,-9 z" fill="#fff" stroke="#3c3c3c" stroke-width="1.2"/><text x="1823.3" y="454.8" font-size="10.5" fill="#333" text-anchor="middle">26</text><path d="M1986.9,500.0 h20.4 v9 q0,6 -10.2,9 q-10.2,-3 -10.2,-9 z" fill="#fff" stroke="#3c3c3c" stroke-width="1.2"/><text x="1997.1" y="511.8" font-size="10.5" fill="#333" text-anchor="middle">26</text><path d="M1499.8,458.1 h20.8 v7 q0,7 -10.4,9 q-10.4,-2 -10.4,-9 z" fill="#2c6fc0" stroke="#fff" stroke-width="1"/><rect x="1499.8" y="457.1" width="20.8" height="3" fill="#d93b3b"/><text x="1510.2" y="470.1" font-size="9.5" font-weight="700" fill="#fff" text-anchor="middle" letter-spacing="-0.3">205</text><path d="M1480.9,758.6 h20.8 v7 q0,7 -10.4,9 q-10.4,-2 -10.4,-9 z" fill="#2c6fc0" stroke="#fff" stroke-width="1"/><rect x="1480.9" y="757.6" width="20.8" height="3" fill="#d93b3b"/><text x="1491.3" y="770.6" font-size="9.5" font-weight="700" fill="#fff" text-anchor="middle" letter-spacing="-0.3">205</text><path d="M1473.1,864.9 h20.8 v7 q0,7 -10.4,9 q-10.4,-2 -10.4,-9 z" fill="#2c6fc0" stroke="#fff" stroke-width="1"/><rect x="1473.1" y="863.9" width="20.8" height="3" fill="#d93b3b"/><text x="1483.5" y="876.9" font-size="9.5" font-weight="700" fill="#fff" text-anchor="middle" letter-spacing="-0.3">205</text><path d="M1219.7,1041.9 h20.8 v7 q0,7 -10.4,9 q-10.4,-2 -10.4,-9 z" fill="#2c6fc0" stroke="#fff" stroke-width="1"/><rect x="1219.7" y="1040.9" width="20.8" height="3" fill="#d93b3b"/><text x="1230.1" y="1053.9" font-size="9.5" font-weight="700" fill="#fff" text-anchor="middle" letter-spacing="-0.3">205</text><rect x="1187.4" y="507.9" width="20.4" height="16" rx="8" fill="#fff" stroke="#3c3c3c" stroke-width="1.2"/><text x="1197.6" y="519.7" font-size="10.5" fill="#333" text-anchor="middle">43</text><rect x="1246.0" y="684.9" width="20.4" height="16" rx="8" fill="#fff" stroke="#3c3c3c" stroke-width="1.2"/><text x="1256.2" y="696.7" font-size="10.5" fill="#333" text-anchor="middle">43</text><rect x="1225.1" y="812.6" width="20.4" height="16" rx="8" fill="#fff" stroke="#3c3c3c" stroke-width="1.2"/><text x="1235.3" y="824.4" font-size="10.5" fill="#333" text-anchor="middle">43</text><rect x="1331.9" y="963.4" width="20.4" height="16" rx="8" fill="#fff" stroke="#3c3c3c" stroke-width="1.2"/><text x="1342.1" y="975.2" font-size="10.5" fill="#333" text-anchor="middle">43</text><rect x="1357.6" y="706.9" width="26.6" height="16" rx="8" fill="#fff" stroke="#3c3c3c" stroke-width="1.2"/><text x="1370.9" y="718.7" font-size="10.5" fill="#333" text-anchor="middle">224</text><rect x="1522.5" y="784.3" width="26.6" height="16" rx="8" fill="#fff" stroke="#3c3c3c" stroke-width="1.2"/><text x="1535.8" y="796.1" font-size="10.5" fill="#333" text-anchor="middle">224</text><rect x="1884.8" y="879.6" width="26.6" height="16" rx="8" fill="#fff" stroke="#3c3c3c" stroke-width="1.2"/><text x="1898.1" y="891.4" font-size="10.5" fill="#333" text-anchor="middle">224</text><rect x="2076.4" y="994.8" width="26.6" height="16" rx="8" fill="#fff" stroke="#3c3c3c" stroke-width="1.2"/><text x="2089.7" y="1006.6" font-size="10.5" fill="#333" text-anchor="middle">224</text><rect x="1607.3" y="802.7" width="26.6" height="16" rx="8" fill="#fff" stroke="#3c3c3c" stroke-width="1.2"/><text x="1620.6" y="814.5" font-size="10.5" fill="#333" text-anchor="middle">212</text><rect x="1751.3" y="799.0" width="26.6" height="16" rx="8" fill="#fff" stroke="#3c3c3c" stroke-width="1.2"/><text x="1764.6" y="810.8" font-size="10.5" fill="#333" text-anchor="middle">212</text><rect x="1986.9" y="755.5" width="26.6" height="16" rx="8" fill="#fff" stroke="#3c3c3c" stroke-width="1.2"/><text x="2000.2" y="767.3" font-size="10.5" fill="#333" text-anchor="middle">212</text><path d="M1785.3,240.9 h26.6 v9 q0,6 -13.3,9 q-13.3,-3 -13.3,-9 z" fill="#fff" stroke="#3c3c3c" stroke-width="1.2"/><text x="1798.6" y="252.7" font-size="10.5" fill="#333" text-anchor="middle">30B</text><path d="M433.5340314136126,281.82722513089004 c-3,-5 -8,-8 -8,-13 a8,8 0 1 1 16,0 c0,5 -5,8 -8,13 z" fill="#4285f4"/><circle cx="433.5340314136126" cy="268.82722513089004" r="3.2" fill="#fff"/><path d="M486.9371727748691,259.83769633507853 c-3,-5 -8,-8 -8,-13 a8,8 0 1 1 16,0 c0,5 -5,8 -8,13 z" fill="#7b9bb0"/><circle cx="486.9371727748691" cy="246.83769633507853" r="3.2" fill="#fff"/><path d="M1072.2774869109949,326.32984293193715 c-3,-5 -8,-8 -8,-13 a8,8 0 1 1 16,0 c0,5 -5,8 -8,13 z" fill="#12a5b0"/><circle cx="1072.2774869109949" cy="313.32984293193715" r="3.2" fill="#fff"/><path d="M1072.2774869109949,389.1570680628272 c-3,-5 -8,-8 -8,-13 a8,8 0 1 1 16,0 c0,5 -5,8 -8,13 z" fill="#34a853"/><circle cx="1072.2774869109949" cy="376.1570680628272" r="3.2" fill="#fff"/><path d="M385.890052356021,465.0732984293194 c-3,-5 -8,-8 -8,-13 a8,8 0 1 1 16,0 c0,5 -5,8 -8,13 z" fill="#34a853"/><circle cx="385.890052356021" cy="452.0732984293194" r="3.2" fill="#fff"/><path d="M908.9267015706806,857.7434554973822 c-3,-5 -8,-8 -8,-13 a8,8 0 1 1 16,0 c0,5 -5,8 -8,13 z" fill="#34a853"/><circle cx="908.9267015706806" cy="844.7434554973822" r="3.2" fill="#fff"/><path d="M430.9162303664922,929.4712041884817 c-3,-5 -8,-8 -8,-13 a8,8 0 1 1 16,0 c0,5 -5,8 -8,13 z" fill="#f0965a"/><circle cx="430.9162303664922" cy="916.4712041884817" r="3.2" fill="#fff"/><path d="M1331.628272251309,342.0366492146597 c-3,-5 -8,-8 -8,-13 a8,8 0 1 1 16,0 c0,5 -5,8 -8,13 z" fill="#34a853"/><circle cx="1331.628272251309" cy="329.0366492146597" r="3.2" fill="#fff"/><path d="M1228.4869109947645,543.6073298429319 c-3,-5 -8,-8 -8,-13 a8,8 0 1 1 16,0 c0,5 -5,8 -8,13 z" fill="#12a5b0"/><circle cx="1228.4869109947645" cy="530.6073298429319" r="3.2" fill="#fff"/><path transform="translate(257.9,787.0)" d="M13.5,0 C6,0 0,6 0,13.5 C0,23 9,27 13.5,42 C18,27 27,23 27,13.5 C27,6 21,0 13.5,0 Z" fill="#ea4335" stroke="#fff" stroke-width="1" stroke-opacity="0.8"/><text x="271.4" y="805.6" font-size="14" fill="#000" text-anchor="middle">Requested Address</text><path transform="translate(1311.5,416.6)" d="M13.5,0 C6,0 0,6 0,13.5 C0,23 9,27 13.5,42 C18,27 27,23 27,13.5 C27,6 21,0 13.5,0 Z" fill="#ea4335" stroke="#fff" stroke-width="1" stroke-opacity="0.8"/><text x="1325.0" y="435.2" font-size="14" fill="#000" text-anchor="middle">310002371</text><path transform="translate(1349.5,437.6)" d="M13.5,0 C6,0 0,6 0,13.5 C0,23 9,27 13.5,42 C18,27 27,23 27,13.5 C27,6 21,0 13.5,0 Z" fill="#ea4335" stroke="#fff" stroke-width="1" stroke-opacity="0.8"/><text x="1363.0" y="456.2" font-size="14" fill="#000" text-anchor="middle">310002779</text><path transform="translate(1445.5,407.5)" d="M13.5,0 C6,0 0,6 0,13.5 C0,23 9,27 13.5,42 C18,27 27,23 27,13.5 C27,6 21,0 13.5,0 Z" fill="#ea4335" stroke="#fff" stroke-width="1" stroke-opacity="0.8"/><text x="1459.0" y="426.1" font-size="14" fill="#000" text-anchor="middle">310002692</text><path transform="translate(1577.5,492.6)" d="M13.5,0 C6,0 0,6 0,13.5 C0,23 9,27 13.5,42 C18,27 27,23 27,13.5 C27,6 21,0 13.5,0 Z" fill="#ea4335" stroke="#fff" stroke-width="1" stroke-opacity="0.8"/><text x="1591.0" y="511.2" font-size="14" fill="#000" text-anchor="middle">310002588</text><text x="1591.0" y="511.2" font-size="14" fill="#000" text-anchor="middle">310002520</text><path transform="translate(1310.2,794.3)" d="M13.5,0 C6,0 0,6 0,13.5 C0,23 9,27 13.5,42 C18,27 27,23 27,13.5 C27,6 21,0 13.5,0 Z" fill="#ea4335" stroke="#fff" stroke-width="1" stroke-opacity="0.8"/><text x="1323.7" y="812.9" font-size="14" fill="#000" text-anchor="middle">310002457</text><path transform="translate(1445.5,852.3)" d="M13.5,0 C6,0 0,6 0,13.5 C0,23 9,27 13.5,42 C18,27 27,23 27,13.5 C27,6 21,0 13.5,0 Z" fill="#ea4335" stroke="#fff" stroke-width="1" stroke-opacity="0.8"/><text x="1459.0" y="870.9" font-size="14" fill="#000" text-anchor="middle">310002932</text></g><g><rect x="10" y="10" width="169" height="40" rx="2" fill="#fff" style="filter:drop-shadow(0 1px 2px rgba(0,0,0,.3))"/><line x1="80" y1="10" x2="80" y2="50" stroke="#e6e6e6"/><text x="45.5" y="36.5" font-size="18" font-weight="700" fill="#000" text-anchor="middle">Map</text><text x="130" y="36.5" font-size="18" fill="#565656" text-anchor="middle">Satellite</text><rect x="1946" y="10" width="40" height="40" rx="2" fill="#fff" style="filter:drop-shadow(0 1px 2px rgba(0,0,0,.3))"/><path d="M1957,25 v-4 h4 M1971,21 h4 v4 M1975,35 v4 h-4 M1961,39 h-4 v-4" fill="none" stroke="#666" stroke-width="2.6"/><rect x="1946" y="800" width="40" height="40" rx="2" fill="#fff" style="filter:drop-shadow(0 1px 2px rgba(0,0,0,.3))"/><circle cx="1966" cy="810" r="4" fill="#fbbc04" stroke="#e08a00" stroke-width=".8"/><path d="M1960,815 h12 l1,11 h-2 v9 h-3.5 v-8 h-1 v8 h-3.5 v-9 h-2 z" fill="#fbbc04" stroke="#e08a00" stroke-width=".8"/><text x="7" y="857" font-size="20" font-weight="700" stroke="#fff" stroke-width="2" paint-order="stroke" letter-spacing="-0.9"><tspan fill="#4285f4">G</tspan><tspan fill="#ea4335">o</tspan><tspan fill="#fbbc05">o</tspan><tspan fill="#4285f4">g</tspan><tspan fill="#34a853">l</tspan><tspan fill="#ea4335">e</tspan></text><rect x="1710" y="849" width="286" height="15" fill="#f5f5f5" fill-opacity="0.75"/><text x="1714" y="860" font-size="10" fill="#444">Map data ©2020 Google</text><text x="1836" y="860" font-size="10" fill="#444">Terms of Use</text><text x="1906" y="860" font-size="10" fill="#444">Report a map error</text></g></svg></div><div class="a" style="left:155px;top:1072px;width:83px;height:35px;background:#fff;border:1px solid #d9d9d9;border-radius:4px"></div><div class="a" style="left:240px;top:1072px;width:91px;height:35px;background:#fff;border:1px solid #d9d9d9;border-radius:4px"></div><div class="c" style="left:-3.0px;top:1081.4px;font-size:14px;color:#222;font-weight:400;">Zoom in</div><div class="c" style="left:85.5px;top:1081.4px;font-size:14px;color:#222;font-weight:400;">Zoom out</div><div class="hr" style="left:155px;top:1127px;width:1996px;background:#e5e5e5"></div><div class="a" style="left:155px;top:1148px;width:327px;height:50px;background:#efefef;border-radius:4px 4px 0 0"></div><div class="a" style="left:155px;top:1148px;width:100px;height:50px;background:#2479b2;border-radius:4px 0 0 0"></div><div class="a" style="left:358px;top:1148px;width:1px;height:50px;background:#c9c9c9"></div><div class="c" style="left:5.0px;top:1166.5px;font-size:12px;color:#fff;font-weight:400;">Visit Tasks - 9</div><div class="c" style="left:106.5px;top:1166.5px;font-size:12px;color:#333;font-weight:400;">Misc Tasks - 0</div><div class="c" style="left:220.0px;top:1166.5px;font-size:12px;color:#333;font-weight:400;">Pending SOCs - 0</div><div class="a" style="left:155px;top:1198px;width:1996px;height:310px;overflow:hidden"><div class="a" style="left:0;top:0;width:1996px;height:310px;background:#f4f4f4;border-left:1px solid #d0d0d0"></div><div class="c" style="left:-144.0px;top:21.0px;font-size:12px;color:#666;font-weight:400;letter-spacing:-0.1px;-webkit-text-stroke:0.35px #666">#</div><div class="c" style="left:-22.0px;top:21.0px;font-size:12px;color:#666;font-weight:400;letter-spacing:-0.1px;-webkit-text-stroke:0.35px #666">Discipline</div><div class="c" style="left:152.5px;top:21.0px;font-size:12px;color:#666;font-weight:400;letter-spacing:-0.1px;-webkit-text-stroke:0.35px #666">MRN</div><div class="c" style="left:380.0px;top:21.0px;font-size:12px;color:#666;font-weight:400;letter-spacing:-0.1px;-webkit-text-stroke:0.35px #666">Patient Last Name</div><div class="c" style="left:592.0px;top:21.0px;font-size:12px;color:#666;font-weight:400;letter-spacing:-0.1px;-webkit-text-stroke:0.35px #666">Clinician</div><div class="c" style="left:761.0px;top:21.0px;font-size:12px;color:#666;font-weight:400;letter-spacing:-0.1px;-webkit-text-stroke:0.35px #666">Target Date</div><div class="c" style="left:1126.5px;top:21.0px;font-size:12px;color:#666;font-weight:400;letter-spacing:-0.1px;-webkit-text-stroke:0.35px #666">Task Name</div><div class="c" style="left:1581.0px;top:21.0px;font-size:12px;color:#666;font-weight:400;letter-spacing:-0.1px;-webkit-text-stroke:0.35px #666">Est. Best Practice Hours:</div><div class="a" style="left:1px;top:56px;width:1980px;height:48px;background:#778899"></div><div class="c" style="left:-144.0px;top:73.4px;font-size:14px;color:#1e1e1e;font-weight:400;letter-spacing:-0.1px">1</div><div class="c" style="left:-22.0px;top:73.4px;font-size:14px;color:#1e1e1e;font-weight:400;letter-spacing:-0.1px">PT</div><div class="c" style="left:152.5px;top:73.4px;font-size:14px;color:#1e1e1e;font-weight:400;letter-spacing:-0.1px">310002371</div><div class="c" style="left:380.0px;top:73.4px;font-size:14px;color:#1e1e1e;font-weight:400;letter-spacing:-0.1px">Freda</div><div class="c" style="left:592.0px;top:73.4px;font-size:14px;color:#1e1e1e;font-weight:400;letter-spacing:-0.1px">Burdette</div><div class="c" style="left:761.0px;top:73.4px;font-size:14px;color:#1e1e1e;font-weight:400;letter-spacing:-0.1px">2020-07-25</div><div class="c" style="left:1126.5px;top:73.4px;font-size:14px;color:#1e1e1e;font-weight:400;letter-spacing:-0.1px">Discharge Summary - End of Episode</div><div class="c" style="left:1581.0px;top:73.4px;font-size:14px;color:#1e1e1e;font-weight:400;letter-spacing:-0.1px">0.25</div><div class="c" style="left:-144.0px;top:121.4px;font-size:14px;color:#1e1e1e;font-weight:400;letter-spacing:-0.1px">2</div><div class="c" style="left:-22.0px;top:121.4px;font-size:14px;color:#1e1e1e;font-weight:400;letter-spacing:-0.1px">PT</div><div class="c" style="left:152.5px;top:121.4px;font-size:14px;color:#1e1e1e;font-weight:400;letter-spacing:-0.1px">310002457</div><div class="c" style="left:380.0px;top:121.4px;font-size:14px;color:#1e1e1e;font-weight:400;letter-spacing:-0.1px">Peterson</div><div class="c" style="left:592.0px;top:121.4px;font-size:14px;color:#1e1e1e;font-weight:400;letter-spacing:-0.1px">Burdette</div><div class="c" style="left:761.0px;top:121.4px;font-size:14px;color:#1e1e1e;font-weight:400;letter-spacing:-0.1px">2020-07-25</div><div class="c" style="left:1126.5px;top:121.4px;font-size:14px;color:#1e1e1e;font-weight:400;letter-spacing:-0.1px">Discharge Summary - End of Episode</div><div class="c" style="left:1581.0px;top:121.4px;font-size:14px;color:#1e1e1e;font-weight:400;letter-spacing:-0.1px">0.25</div><div class="a" style="left:1px;top:152px;width:1980px;height:48px;background:#778899"></div><div class="c" style="left:-144.0px;top:169.4px;font-size:14px;color:#1e1e1e;font-weight:400;letter-spacing:-0.1px">3</div><div class="c" style="left:-22.0px;top:169.4px;font-size:14px;color:#1e1e1e;font-weight:400;letter-spacing:-0.1px">PT</div><div class="c" style="left:152.5px;top:169.4px;font-size:14px;color:#1e1e1e;font-weight:400;letter-spacing:-0.1px">310002371</div><div class="c" style="left:380.0px;top:169.4px;font-size:14px;color:#1e1e1e;font-weight:400;letter-spacing:-0.1px">Freda</div><div class="c" style="left:592.0px;top:169.4px;font-size:14px;color:#1e1e1e;font-weight:400;letter-spacing:-0.1px">Burdette</div><div class="c" style="left:761.0px;top:169.4px;font-size:14px;color:#1e1e1e;font-weight:400;letter-spacing:-0.1px">2020-07-25</div><div class="c" style="left:1126.5px;top:169.4px;font-size:14px;color:#1e1e1e;font-weight:400;letter-spacing:-0.1px">OASIS-D1 Discharge (PT)</div><div class="c" style="left:1581.0px;top:169.4px;font-size:14px;color:#1e1e1e;font-weight:400;letter-spacing:-0.1px">1.00</div><div class="c" style="left:-144.0px;top:217.4px;font-size:14px;color:#1e1e1e;font-weight:400;letter-spacing:-0.1px">4</div><div class="c" style="left:-22.0px;top:217.4px;font-size:14px;color:#1e1e1e;font-weight:400;letter-spacing:-0.1px">PT</div><div class="c" style="left:152.5px;top:217.4px;font-size:14px;color:#1e1e1e;font-weight:400;letter-spacing:-0.1px">310002457</div><div class="c" style="left:380.0px;top:217.4px;font-size:14px;color:#1e1e1e;font-weight:400;letter-spacing:-0.1px">Peterson</div><div class="c" style="left:592.0px;top:217.4px;font-size:14px;color:#1e1e1e;font-weight:400;letter-spacing:-0.1px">Burdette</div><div class="c" style="left:761.0px;top:217.4px;font-size:14px;color:#1e1e1e;font-weight:400;letter-spacing:-0.1px">2020-07-25</div><div class="c" style="left:1126.5px;top:217.4px;font-size:14px;color:#1e1e1e;font-weight:400;letter-spacing:-0.1px">OASIS-D1 Discharge (PT)</div><div class="c" style="left:1581.0px;top:217.4px;font-size:14px;color:#1e1e1e;font-weight:400;letter-spacing:-0.1px">1.00</div><div class="a" style="left:1px;top:248px;width:1980px;height:48px;background:#778899"></div><div class="c" style="left:-144.0px;top:265.4px;font-size:14px;color:#1e1e1e;font-weight:400;letter-spacing:-0.1px">5</div><div class="c" style="left:-22.0px;top:265.4px;font-size:14px;color:#1e1e1e;font-weight:400;letter-spacing:-0.1px">PT</div><div class="c" style="left:152.5px;top:265.4px;font-size:14px;color:#1e1e1e;font-weight:400;letter-spacing:-0.1px">310002588</div><div class="c" style="left:380.0px;top:265.4px;font-size:14px;color:#1e1e1e;font-weight:400;letter-spacing:-0.1px">Platz</div><div class="c" style="left:592.0px;top:265.4px;font-size:14px;color:#1e1e1e;font-weight:400;letter-spacing:-0.1px">Burdette</div><div class="c" style="left:761.0px;top:265.4px;font-size:14px;color:#1e1e1e;font-weight:400;letter-spacing:-0.1px">2020-07-25</div><div class="c" style="left:1126.5px;top:265.4px;font-size:14px;color:#1e1e1e;font-weight:400;letter-spacing:-0.1px">PT Discharge w/Discharge Summary</div><div class="c" style="left:1581.0px;top:265.4px;font-size:14px;color:#1e1e1e;font-weight:400;letter-spacing:-0.1px">1.25</div><div class="c" style="left:-144.0px;top:313.4px;font-size:14px;color:#1e1e1e;font-weight:400;letter-spacing:-0.1px">6</div><div class="c" style="left:-22.0px;top:313.4px;font-size:14px;color:#1e1e1e;font-weight:400;letter-spacing:-0.1px">PT</div><div class="c" style="left:152.5px;top:313.4px;font-size:14px;color:#1e1e1e;font-weight:400;letter-spacing:-0.1px">310002588</div><div class="c" style="left:380.0px;top:313.4px;font-size:14px;color:#1e1e1e;font-weight:400;letter-spacing:-0.1px">Platz</div><div class="c" style="left:592.0px;top:313.4px;font-size:14px;color:#1e1e1e;font-weight:400;letter-spacing:-0.1px">Burdette</div><div class="c" style="left:761.0px;top:313.4px;font-size:14px;color:#1e1e1e;font-weight:400;letter-spacing:-0.1px">2020-07-25</div><div class="c" style="left:1126.5px;top:313.4px;font-size:14px;color:#1e1e1e;font-weight:400;letter-spacing:-0.1px">Discharge Summary</div><div class="c" style="left:1581.0px;top:313.4px;font-size:14px;color:#1e1e1e;font-weight:400;letter-spacing:-0.1px">0.25</div><div class="a" style="left:1981px;top:0;width:15px;height:310px;background:#f1f1f1"></div><div class="a" style="left:1983px;top:15px;width:11px;height:300px;background:#c1c1c1"></div><div class="a" style="left:1985px;top:6px;width:0;height:0;border-left:3.5px solid transparent;border-right:3.5px solid transparent;border-bottom:4px solid #a3a3a3"></div></div><div class="a" style="left:2175px;top:207px;width:15px;height:1301px;background:#f1f1f1"></div><div class="a" style="left:2177px;top:222px;width:11px;height:1094px;background:#c1c1c1"></div><div class="a" style="left:2179px;top:212px;width:0;height:0;border-left:3.5px solid transparent;border-right:3.5px solid transparent;border-bottom:4px solid #a3a3a3"></div><div class="a" style="left:2179px;top:1498px;width:0;height:0;border-left:3.5px solid transparent;border-right:3.5px solid transparent;border-top:4px solid #505050"></div><div class="t" style="left:176px;top:1526.3px;font-size:14px;color:#333;font-weight:400;letter-spacing:0.1px;-webkit-text-stroke:0.4px #333">Exit</div><div class="t" style="left:251px;top:1526.3px;font-size:14px;color:#333;font-weight:400;-webkit-text-stroke:0.4px #333">Ok</div></body></html>
